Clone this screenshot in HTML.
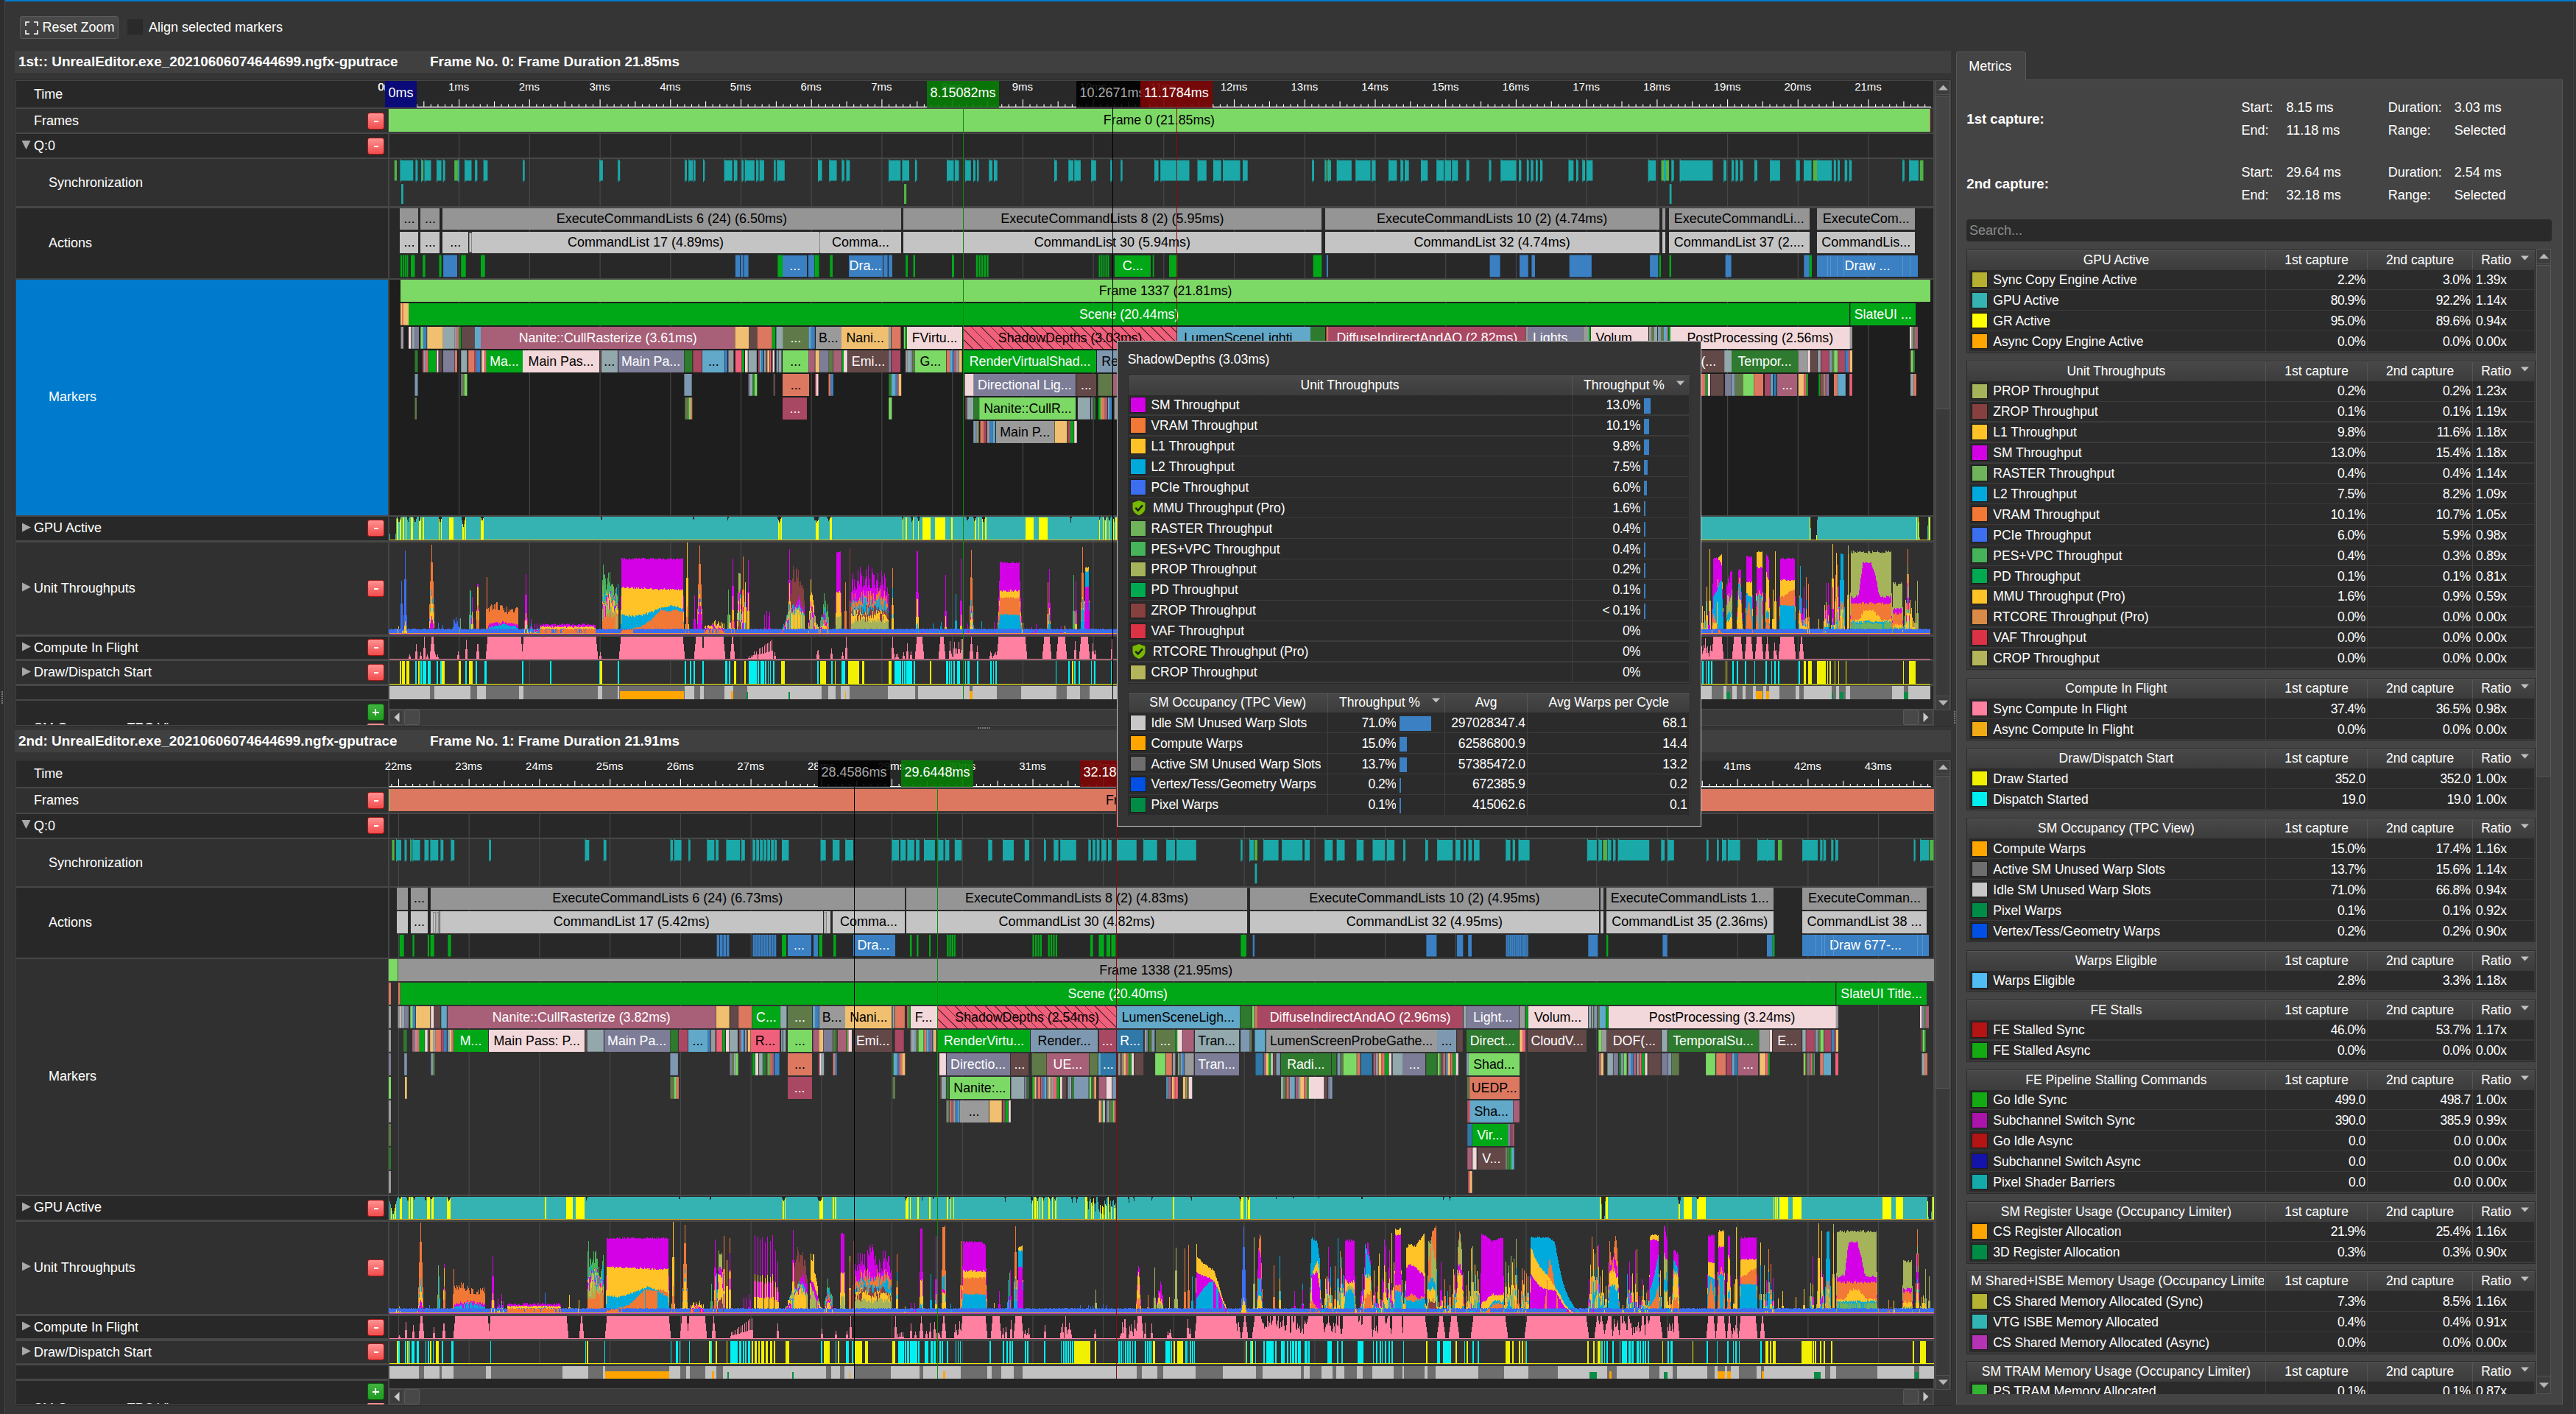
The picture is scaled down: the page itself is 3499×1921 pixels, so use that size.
<!DOCTYPE html><html><head><meta charset="utf-8"><title>GPU Trace</title><style>html,body{margin:0;padding:0;background:#353535;}
body{width:3499px;height:1921px;position:relative;overflow:hidden;font-family:"Liberation Sans",sans-serif;}
div,svg{position:absolute;}
.t{white-space:nowrap;overflow:hidden;}
.c{white-space:nowrap;overflow:hidden;text-align:center;}
</style></head><body><div style="left:0.0px;top:0.0px;width:3499.0px;height:1921.0px;background:#353535;"></div>
<div style="left:0.0px;top:0.0px;width:6.0px;height:1921.0px;background:#2e2e2e;"></div>
<div style="left:6.0px;top:0.0px;width:1.0px;height:1921.0px;background:#454545;"></div>
<div style="left:7.0px;top:0.0px;width:3492.0px;height:2.2px;background:#007acc;"></div>
<div style="left:3494.6px;top:2.2px;width:1.2px;height:1921.0px;background:#3f3f3f;"></div>
<div style="left:26.8px;top:21.8px;width:134.5px;height:31.4px;background:linear-gradient(#4a4a4a,#3e3e3e);border:1px solid #5c5c5c;border-radius:3px;box-sizing:border-box;"></div>
<svg style="left:34px;top:29px" width="18" height="18"><path d="M1,6 V1 H6 M12,1 H17 V6 M17,12 V17 H12 M6,17 H1 V12" fill="none" stroke="#fff" stroke-width="1.6"/></svg>
<div class="t" style="left:57.5px;top:22.0px;font-size:18px;color:#fff;height:31.4px;line-height:31.4px;">Reset Zoom</div>
<div style="left:167.5px;top:27.0px;width:1.0px;height:21.0px;background:#3c3c3c;"></div>
<div style="left:173.0px;top:26.4px;width:21.0px;height:20.5px;background:#2a2a2a;"></div>
<div class="t" style="left:202.0px;top:22.0px;font-size:18px;color:#fff;height:31.4px;line-height:31.4px;">Align selected markers</div>
<div style="left:20.2px;top:68.9px;width:2630.0px;height:30.0px;background:#404040;"></div>
<div class="t" style="left:25.0px;top:68.9px;font-size:18.9px;color:#fff;height:30.0px;line-height:30.0px;font-weight:bold;letter-spacing:0.02px;">1st:: UnrealEditor.exe_20210606074644699.ngfx-gputrace</div>
<div class="t" style="left:584.0px;top:68.9px;font-size:18.9px;color:#fff;height:30.0px;line-height:30.0px;font-weight:bold;">Frame No. 0: Frame Duration 21.85ms</div>
<div style="left:20.2px;top:991.9px;width:2630.0px;height:30.0px;background:#404040;"></div>
<div class="t" style="left:25.0px;top:991.9px;font-size:18.9px;color:#fff;height:30.0px;line-height:30.0px;font-weight:bold;">2nd: UnrealEditor.exe_20210606074644699.ngfx-gputrace</div>
<div class="t" style="left:584.0px;top:991.9px;font-size:18.9px;color:#fff;height:30.0px;line-height:30.0px;font-weight:bold;">Frame No. 1: Frame Duration 21.91ms</div>
<div style="left:20.0px;top:108.0px;width:2631.0px;height:878.6px;background:#2b2b2b;"></div>
<div style="left:21.0px;top:109.0px;width:2629.0px;height:876.6px;background:#464646;"></div>
<div style="left:22.0px;top:110.0px;width:2627.0px;height:875.0px;background:#474747;"></div>
<div style="left:22.0px;top:110.0px;width:505.5px;height:36.0px;background:#282828;"></div>
<div style="left:528.5px;top:110.0px;width:2097.0px;height:36.0px;background:#282828;"></div>
<div class="t" style="left:46.0px;top:110.0px;font-size:18px;color:#fff;height:36.0px;line-height:36.0px;">Time</div>
<div style="left:22.0px;top:148.0px;width:505.5px;height:32.3px;background:#303030;"></div>
<div style="left:528.5px;top:148.0px;width:2097.0px;height:32.3px;background:#303030;"></div>
<div class="t" style="left:46.0px;top:148.0px;font-size:18px;color:#fff;height:32.3px;line-height:32.3px;">Frames</div>
<div style="left:498.5px;top:152.6px;width:23.0px;height:23.0px;background:linear-gradient(#ff9292,#f24c4c);border:1px solid #a31515;border-radius:3px;box-sizing:border-box;"></div>
<div style="left:507.5px;top:163.6px;width:6.0px;height:2.0px;background:#fff;"></div>
<div style="left:22.0px;top:182.3px;width:505.5px;height:32.0px;background:#282828;"></div>
<div style="left:528.5px;top:182.3px;width:2097.0px;height:32.0px;background:#282828;"></div>
<div class="t" style="left:46.0px;top:182.3px;font-size:18px;color:#fff;height:32.0px;line-height:32.0px;">Q:0</div>
<svg style="left:29.0px;top:189.8px" width="14" height="14"><path d="M0.5,1 L12.5,1 L6.5,13 Z" fill="#a8a8a8"/></svg>
<div style="left:498.5px;top:186.7px;width:23.0px;height:23.0px;background:linear-gradient(#ff9292,#f24c4c);border:1px solid #a31515;border-radius:3px;box-sizing:border-box;"></div>
<div style="left:507.5px;top:197.7px;width:6.0px;height:2.0px;background:#fff;"></div>
<div style="left:22.0px;top:216.3px;width:505.5px;height:64.2px;background:#303030;"></div>
<div style="left:528.5px;top:216.3px;width:2097.0px;height:64.2px;background:#303030;"></div>
<div class="t" style="left:66.0px;top:216.3px;font-size:18px;color:#fff;height:64.2px;line-height:64.2px;">Synchronization</div>
<div style="left:22.0px;top:282.5px;width:505.5px;height:95.5px;background:#282828;"></div>
<div style="left:528.5px;top:282.5px;width:2097.0px;height:95.5px;background:#282828;"></div>
<div class="t" style="left:66.0px;top:282.5px;font-size:18px;color:#fff;height:95.5px;line-height:95.5px;">Actions</div>
<div style="left:22.0px;top:380.0px;width:505.5px;height:319.7px;background:#303030;"></div>
<div style="left:22.0px;top:380.0px;width:505.5px;height:319.7px;background:#007acc;"></div>
<div style="left:528.5px;top:380.0px;width:2097.0px;height:319.7px;background:#1e1e1e;"></div>
<div class="t" style="left:66.0px;top:380.0px;font-size:18px;color:#fff;height:319.7px;line-height:319.7px;">Markers</div>
<div style="left:22.0px;top:702.0px;width:505.5px;height:31.6px;background:#282828;"></div>
<div style="left:528.5px;top:702.0px;width:2097.0px;height:31.6px;background:#282828;"></div>
<div class="t" style="left:46.0px;top:702.0px;font-size:18px;color:#fff;height:31.6px;line-height:31.6px;">GPU Active</div>
<svg style="left:29.0px;top:709.8px" width="14" height="14"><path d="M1,0.5 L13,6.5 L1,12.5 Z" fill="#a8a8a8"/></svg>
<div style="left:498.5px;top:706.2px;width:23.0px;height:23.0px;background:linear-gradient(#ff9292,#f24c4c);border:1px solid #a31515;border-radius:3px;box-sizing:border-box;"></div>
<div style="left:507.5px;top:717.2px;width:6.0px;height:2.0px;background:#fff;"></div>
<div style="left:22.0px;top:736.6px;width:505.5px;height:125.0px;background:#303030;"></div>
<div style="left:528.5px;top:736.6px;width:2097.0px;height:125.0px;background:#303030;"></div>
<div class="t" style="left:46.0px;top:736.6px;font-size:18px;color:#fff;height:125.0px;line-height:125.0px;">Unit Throughputs</div>
<svg style="left:29.0px;top:791.1px" width="14" height="14"><path d="M1,0.5 L13,6.5 L1,12.5 Z" fill="#a8a8a8"/></svg>
<div style="left:498.5px;top:787.5px;width:23.0px;height:23.0px;background:linear-gradient(#ff9292,#f24c4c);border:1px solid #a31515;border-radius:3px;box-sizing:border-box;"></div>
<div style="left:507.5px;top:798.5px;width:6.0px;height:2.0px;background:#fff;"></div>
<div style="left:22.0px;top:864.6px;width:505.5px;height:30.6px;background:#282828;"></div>
<div style="left:528.5px;top:864.6px;width:2097.0px;height:30.6px;background:#282828;"></div>
<div class="t" style="left:46.0px;top:864.6px;font-size:18px;color:#fff;height:30.6px;line-height:30.6px;">Compute In Flight</div>
<svg style="left:29.0px;top:871.9px" width="14" height="14"><path d="M1,0.5 L13,6.5 L1,12.5 Z" fill="#a8a8a8"/></svg>
<div style="left:498.5px;top:868.3px;width:23.0px;height:23.0px;background:linear-gradient(#ff9292,#f24c4c);border:1px solid #a31515;border-radius:3px;box-sizing:border-box;"></div>
<div style="left:507.5px;top:879.3px;width:6.0px;height:2.0px;background:#fff;"></div>
<div style="left:22.0px;top:898.2px;width:505.5px;height:30.8px;background:#303030;"></div>
<div style="left:528.5px;top:898.2px;width:2097.0px;height:30.8px;background:#303030;"></div>
<div class="t" style="left:46.0px;top:898.2px;font-size:18px;color:#fff;height:30.8px;line-height:30.8px;">Draw/Dispatch Start</div>
<svg style="left:29.0px;top:905.6px" width="14" height="14"><path d="M1,0.5 L13,6.5 L1,12.5 Z" fill="#a8a8a8"/></svg>
<div style="left:498.5px;top:902.0px;width:23.0px;height:23.0px;background:linear-gradient(#ff9292,#f24c4c);border:1px solid #a31515;border-radius:3px;box-sizing:border-box;"></div>
<div style="left:507.5px;top:913.0px;width:6.0px;height:2.0px;background:#fff;"></div>
<div style="left:22.0px;top:932.0px;width:505.5px;height:18.0px;background:#282828;"></div>
<div style="left:528.5px;top:932.0px;width:2097.0px;height:18.0px;background:#282828;"></div>
<div style="left:22.0px;top:952.2px;width:505.5px;height:32.6px;background:#282828;"></div>
<div style="left:528.5px;top:952.2px;width:2097.0px;height:32.6px;background:#282828;"></div>
<div style="left:498.5px;top:956.0px;width:23.0px;height:23.0px;background:linear-gradient(#3fb43f,#1f9a1f);border:1px solid #0c5a0c;border-radius:3px;box-sizing:border-box;"></div>
<div style="left:505.5px;top:966.5px;width:9.0px;height:2.0px;background:#fff;"></div>
<div style="left:509.0px;top:963.0px;width:2.0px;height:9.0px;background:#fff;"></div>
<div style="left:527.2px;top:110.0px;width:1.4px;height:875.0px;background:#454545;"></div>
<div style="left:46px;top:982.4px;width:300px;height:1.7px;overflow:hidden;"><div class="t" style="left:0;top:-3.2px;font-size:18px;color:#fff;">SM Occupancy TPC View</div></div>
<div style="left:498.5px;top:982.6px;width:23.0px;height:2.2px;background:#ff8c8c;border-radius:3px 3px 0 0;"></div>
<div style="left:2626.5px;top:109.0px;width:23.5px;height:876.6px;background:#464646;"></div>
<div style="left:2628.5px;top:109.4px;width:20.5px;height:855.6px;background:#3a3a3a;border:1px solid #4c4c4c;box-sizing:border-box;"></div>
<div style="left:2628.5px;top:109.4px;width:20.5px;height:19.8px;background:#3d3d3d;border:1px solid #505050;box-sizing:border-box;"></div>
<svg style="left:2632.5px;top:114.5px" width="13" height="8"><path d="M0,7.5 L6.5,0.5 L13,7.5 Z" fill="#b5b5b5"/></svg>
<div style="left:2628.5px;top:944.5px;width:20.5px;height:20.0px;background:#3d3d3d;border:1px solid #505050;box-sizing:border-box;"></div>
<svg style="left:2632.5px;top:951.0px" width="13" height="8"><path d="M0,0.5 L6.5,7.5 L13,0.5 Z" fill="#b5b5b5"/></svg>
<div style="left:2628.5px;top:131.0px;width:20.5px;height:425.0px;background:#444444;border:1px solid #555;box-sizing:border-box;"></div>
<div style="left:2626.5px;top:965.0px;width:24.5px;height:21.0px;background:#353535;"></div>
<div style="left:528.5px;top:950.0px;width:2097.0px;height:13.0px;background:#262626;"></div>
<div style="left:528.5px;top:963.0px;width:2097.0px;height:22.0px;background:#3a3a3a;border-top:1px solid #4c4c4c;box-sizing:border-box;"></div>
<div style="left:528.5px;top:963.5px;width:19.5px;height:21.0px;background:#3d3d3d;border:1px solid #505050;box-sizing:border-box;"></div>
<svg style="left:535px;top:968.0px" width="8" height="13"><path d="M7.5,0 L0.5,6.5 L7.5,13 Z" fill="#c8c8c8"/></svg>
<div style="left:548.5px;top:963.5px;width:21.0px;height:21.0px;background:#484848;border:1px solid #5a5a5a;box-sizing:border-box;border-radius:2px;"></div>
<div style="left:2584.5px;top:963.5px;width:21.5px;height:21.0px;background:#484848;border:1px solid #5a5a5a;box-sizing:border-box;border-radius:2px;"></div>
<div style="left:2606.0px;top:963.5px;width:19.5px;height:21.0px;background:#3d3d3d;border:1px solid #505050;box-sizing:border-box;"></div>
<svg style="left:2612px;top:968.0px" width="8" height="13"><path d="M0.5,0 L7.5,6.5 L0.5,13 Z" fill="#c8c8c8"/></svg>
<div style="left:20.0px;top:1031.3px;width:2631.0px;height:878.6px;background:#2b2b2b;"></div>
<div style="left:21.0px;top:1032.3px;width:2629.0px;height:876.6px;background:#464646;"></div>
<div style="left:22.0px;top:1033.3px;width:2627.0px;height:875.0px;background:#474747;"></div>
<div style="left:22.0px;top:1033.3px;width:505.5px;height:36.0px;background:#282828;"></div>
<div style="left:528.5px;top:1033.3px;width:2097.0px;height:36.0px;background:#282828;"></div>
<div class="t" style="left:46.0px;top:1033.3px;font-size:18px;color:#fff;height:36.0px;line-height:36.0px;">Time</div>
<div style="left:22.0px;top:1071.3px;width:505.5px;height:32.3px;background:#303030;"></div>
<div style="left:528.5px;top:1071.3px;width:2097.0px;height:32.3px;background:#303030;"></div>
<div class="t" style="left:46.0px;top:1071.3px;font-size:18px;color:#fff;height:32.3px;line-height:32.3px;">Frames</div>
<div style="left:498.5px;top:1075.8px;width:23.0px;height:23.0px;background:linear-gradient(#ff9292,#f24c4c);border:1px solid #a31515;border-radius:3px;box-sizing:border-box;"></div>
<div style="left:507.5px;top:1086.8px;width:6.0px;height:2.0px;background:#fff;"></div>
<div style="left:22.0px;top:1105.6px;width:505.5px;height:32.0px;background:#282828;"></div>
<div style="left:528.5px;top:1105.6px;width:2097.0px;height:32.0px;background:#282828;"></div>
<div class="t" style="left:46.0px;top:1105.6px;font-size:18px;color:#fff;height:32.0px;line-height:32.0px;">Q:0</div>
<svg style="left:29.0px;top:1113.1px" width="14" height="14"><path d="M0.5,1 L12.5,1 L6.5,13 Z" fill="#a8a8a8"/></svg>
<div style="left:498.5px;top:1110.0px;width:23.0px;height:23.0px;background:linear-gradient(#ff9292,#f24c4c);border:1px solid #a31515;border-radius:3px;box-sizing:border-box;"></div>
<div style="left:507.5px;top:1121.0px;width:6.0px;height:2.0px;background:#fff;"></div>
<div style="left:22.0px;top:1139.6px;width:505.5px;height:64.2px;background:#303030;"></div>
<div style="left:528.5px;top:1139.6px;width:2097.0px;height:64.2px;background:#303030;"></div>
<div class="t" style="left:66.0px;top:1139.6px;font-size:18px;color:#fff;height:64.2px;line-height:64.2px;">Synchronization</div>
<div style="left:22.0px;top:1205.8px;width:505.5px;height:95.5px;background:#282828;"></div>
<div style="left:528.5px;top:1205.8px;width:2097.0px;height:95.5px;background:#282828;"></div>
<div class="t" style="left:66.0px;top:1205.8px;font-size:18px;color:#fff;height:95.5px;line-height:95.5px;">Actions</div>
<div style="left:22.0px;top:1303.3px;width:505.5px;height:319.7px;background:#303030;"></div>
<div style="left:528.5px;top:1303.3px;width:2097.0px;height:319.7px;background:#303030;"></div>
<div class="t" style="left:66.0px;top:1303.3px;font-size:18px;color:#fff;height:319.7px;line-height:319.7px;">Markers</div>
<div style="left:22.0px;top:1625.3px;width:505.5px;height:31.6px;background:#282828;"></div>
<div style="left:528.5px;top:1625.3px;width:2097.0px;height:31.6px;background:#282828;"></div>
<div class="t" style="left:46.0px;top:1625.3px;font-size:18px;color:#fff;height:31.6px;line-height:31.6px;">GPU Active</div>
<svg style="left:29.0px;top:1633.1px" width="14" height="14"><path d="M1,0.5 L13,6.5 L1,12.5 Z" fill="#a8a8a8"/></svg>
<div style="left:498.5px;top:1629.5px;width:23.0px;height:23.0px;background:linear-gradient(#ff9292,#f24c4c);border:1px solid #a31515;border-radius:3px;box-sizing:border-box;"></div>
<div style="left:507.5px;top:1640.5px;width:6.0px;height:2.0px;background:#fff;"></div>
<div style="left:22.0px;top:1659.9px;width:505.5px;height:125.0px;background:#303030;"></div>
<div style="left:528.5px;top:1659.9px;width:2097.0px;height:125.0px;background:#303030;"></div>
<div class="t" style="left:46.0px;top:1659.9px;font-size:18px;color:#fff;height:125.0px;line-height:125.0px;">Unit Throughputs</div>
<svg style="left:29.0px;top:1714.4px" width="14" height="14"><path d="M1,0.5 L13,6.5 L1,12.5 Z" fill="#a8a8a8"/></svg>
<div style="left:498.5px;top:1710.8px;width:23.0px;height:23.0px;background:linear-gradient(#ff9292,#f24c4c);border:1px solid #a31515;border-radius:3px;box-sizing:border-box;"></div>
<div style="left:507.5px;top:1721.8px;width:6.0px;height:2.0px;background:#fff;"></div>
<div style="left:22.0px;top:1787.9px;width:505.5px;height:30.6px;background:#282828;"></div>
<div style="left:528.5px;top:1787.9px;width:2097.0px;height:30.6px;background:#282828;"></div>
<div class="t" style="left:46.0px;top:1787.9px;font-size:18px;color:#fff;height:30.6px;line-height:30.6px;">Compute In Flight</div>
<svg style="left:29.0px;top:1795.2px" width="14" height="14"><path d="M1,0.5 L13,6.5 L1,12.5 Z" fill="#a8a8a8"/></svg>
<div style="left:498.5px;top:1791.6px;width:23.0px;height:23.0px;background:linear-gradient(#ff9292,#f24c4c);border:1px solid #a31515;border-radius:3px;box-sizing:border-box;"></div>
<div style="left:507.5px;top:1802.6px;width:6.0px;height:2.0px;background:#fff;"></div>
<div style="left:22.0px;top:1821.5px;width:505.5px;height:30.8px;background:#303030;"></div>
<div style="left:528.5px;top:1821.5px;width:2097.0px;height:30.8px;background:#303030;"></div>
<div class="t" style="left:46.0px;top:1821.5px;font-size:18px;color:#fff;height:30.8px;line-height:30.8px;">Draw/Dispatch Start</div>
<svg style="left:29.0px;top:1828.9px" width="14" height="14"><path d="M1,0.5 L13,6.5 L1,12.5 Z" fill="#a8a8a8"/></svg>
<div style="left:498.5px;top:1825.3px;width:23.0px;height:23.0px;background:linear-gradient(#ff9292,#f24c4c);border:1px solid #a31515;border-radius:3px;box-sizing:border-box;"></div>
<div style="left:507.5px;top:1836.3px;width:6.0px;height:2.0px;background:#fff;"></div>
<div style="left:22.0px;top:1855.3px;width:505.5px;height:18.0px;background:#282828;"></div>
<div style="left:528.5px;top:1855.3px;width:2097.0px;height:18.0px;background:#282828;"></div>
<div style="left:22.0px;top:1875.5px;width:505.5px;height:32.6px;background:#282828;"></div>
<div style="left:528.5px;top:1875.5px;width:2097.0px;height:32.6px;background:#282828;"></div>
<div style="left:498.5px;top:1879.3px;width:23.0px;height:23.0px;background:linear-gradient(#3fb43f,#1f9a1f);border:1px solid #0c5a0c;border-radius:3px;box-sizing:border-box;"></div>
<div style="left:505.5px;top:1889.8px;width:9.0px;height:2.0px;background:#fff;"></div>
<div style="left:509.0px;top:1886.3px;width:2.0px;height:9.0px;background:#fff;"></div>
<div style="left:527.2px;top:1033.3px;width:1.4px;height:875.0px;background:#454545;"></div>
<div style="left:46px;top:1905.7px;width:300px;height:1.7px;overflow:hidden;"><div class="t" style="left:0;top:-3.2px;font-size:18px;color:#fff;">SM Occupancy TPC View</div></div>
<div style="left:498.5px;top:1905.9px;width:23.0px;height:2.2px;background:#ff8c8c;border-radius:3px 3px 0 0;"></div>
<div style="left:2626.5px;top:1032.3px;width:23.5px;height:876.6px;background:#464646;"></div>
<div style="left:2628.5px;top:1032.7px;width:20.5px;height:855.6px;background:#3a3a3a;border:1px solid #4c4c4c;box-sizing:border-box;"></div>
<div style="left:2628.5px;top:1032.7px;width:20.5px;height:19.8px;background:#3d3d3d;border:1px solid #505050;box-sizing:border-box;"></div>
<svg style="left:2632.5px;top:1037.8px" width="13" height="8"><path d="M0,7.5 L6.5,0.5 L13,7.5 Z" fill="#b5b5b5"/></svg>
<div style="left:2628.5px;top:1867.8px;width:20.5px;height:20.0px;background:#3d3d3d;border:1px solid #505050;box-sizing:border-box;"></div>
<svg style="left:2632.5px;top:1874.3px" width="13" height="8"><path d="M0,0.5 L6.5,7.5 L13,0.5 Z" fill="#b5b5b5"/></svg>
<div style="left:2628.5px;top:1054.3px;width:20.5px;height:425.0px;background:#444444;border:1px solid #555;box-sizing:border-box;"></div>
<div style="left:2626.5px;top:1888.3px;width:24.5px;height:21.0px;background:#353535;"></div>
<div style="left:528.5px;top:1873.3px;width:2097.0px;height:13.0px;background:#262626;"></div>
<div style="left:528.5px;top:1886.3px;width:2097.0px;height:22.0px;background:#3a3a3a;border-top:1px solid #4c4c4c;box-sizing:border-box;"></div>
<div style="left:528.5px;top:1886.8px;width:19.5px;height:21.0px;background:#3d3d3d;border:1px solid #505050;box-sizing:border-box;"></div>
<svg style="left:535px;top:1891.3px" width="8" height="13"><path d="M7.5,0 L0.5,6.5 L7.5,13 Z" fill="#c8c8c8"/></svg>
<div style="left:548.5px;top:1886.8px;width:21.0px;height:21.0px;background:#484848;border:1px solid #5a5a5a;box-sizing:border-box;border-radius:2px;"></div>
<div style="left:2584.5px;top:1886.8px;width:21.5px;height:21.0px;background:#484848;border:1px solid #5a5a5a;box-sizing:border-box;border-radius:2px;"></div>
<div style="left:2606.0px;top:1886.8px;width:19.5px;height:21.0px;background:#3d3d3d;border:1px solid #505050;box-sizing:border-box;"></div>
<svg style="left:2612px;top:1891.3px" width="8" height="13"><path d="M0.5,0 L7.5,6.5 L0.5,13 Z" fill="#c8c8c8"/></svg>
<div style="left:1328.0px;top:988.0px;width:1.5px;height:1.5px;background:#777;"></div>
<div style="left:1331.0px;top:988.0px;width:1.5px;height:1.5px;background:#777;"></div>
<div style="left:1334.0px;top:988.0px;width:1.5px;height:1.5px;background:#777;"></div>
<div style="left:1337.0px;top:988.0px;width:1.5px;height:1.5px;background:#777;"></div>
<div style="left:1340.0px;top:988.0px;width:1.5px;height:1.5px;background:#777;"></div>
<div style="left:1343.0px;top:988.0px;width:1.5px;height:1.5px;background:#777;"></div>
<div style="left:2654.0px;top:966.0px;width:1.5px;height:1.5px;background:#777;"></div>
<div style="left:2.0px;top:939.0px;width:1.5px;height:1.5px;background:#777;"></div>
<div style="left:2654.0px;top:969.0px;width:1.5px;height:1.5px;background:#777;"></div>
<div style="left:2.0px;top:942.0px;width:1.5px;height:1.5px;background:#777;"></div>
<div style="left:2654.0px;top:972.0px;width:1.5px;height:1.5px;background:#777;"></div>
<div style="left:2.0px;top:945.0px;width:1.5px;height:1.5px;background:#777;"></div>
<div style="left:2654.0px;top:975.0px;width:1.5px;height:1.5px;background:#777;"></div>
<div style="left:2.0px;top:948.0px;width:1.5px;height:1.5px;background:#777;"></div>
<div style="left:2654.0px;top:978.0px;width:1.5px;height:1.5px;background:#777;"></div>
<div style="left:2.0px;top:951.0px;width:1.5px;height:1.5px;background:#777;"></div>
<div style="left:2654.0px;top:981.0px;width:1.5px;height:1.5px;background:#777;"></div>
<div style="left:2.0px;top:954.0px;width:1.5px;height:1.5px;background:#777;"></div>
<div class="c" style="left:528.3px;top:148.2px;width:2092.3px;height:30.8px;line-height:31px;background:#7cd965;color:#000;font-size:17.8px;">Frame 0 (21.85ms)</div>
<div style="left:2620.6px;top:148.2px;width:1.3px;height:30.8px;background:#dc7860;"></div>
<div class="c" style="left:528.3px;top:1071.5px;width:2098.5px;height:30.8px;line-height:31px;background:#dc7860;color:#000;font-size:17.8px;">Frame 1 (21.91ms)</div>
<div style="left:528.3px;top:1071.5px;width:1.0px;height:30.8px;background:#7cd965;"></div>
<svg style="left:0;top:0" width="3499" height="935"><path d="M623.6 182.3V929.0M719.3 182.3V929.0M815.1 182.3V929.0M910.8 182.3V929.0M1006.5 182.3V929.0M1102.2 182.3V929.0M1197.9 182.3V929.0M1293.7 182.3V929.0M1389.4 182.3V929.0M1485.1 182.3V929.0M1580.8 182.3V929.0M1676.5 182.3V929.0M1772.3 182.3V929.0M1868.0 182.3V929.0M1963.7 182.3V929.0M2059.4 182.3V929.0M2155.1 182.3V929.0M2250.9 182.3V929.0M2346.6 182.3V929.0M2442.3 182.3V929.0M2538.0 182.3V929.0" stroke="#4a4a4a" stroke-width="1.1" fill="none"/></svg>
<svg style="left:0;top:0" width="3499" height="1858"><path d="M541.5 1105.6V1852.3M637.2 1105.6V1852.3M732.9 1105.6V1852.3M828.7 1105.6V1852.3M924.4 1105.6V1852.3M1020.1 1105.6V1852.3M1115.8 1105.6V1852.3M1211.5 1105.6V1852.3M1307.3 1105.6V1852.3M1403.0 1105.6V1852.3M1498.7 1105.6V1852.3M1594.4 1105.6V1852.3M1690.1 1105.6V1852.3M1785.9 1105.6V1852.3M1881.6 1105.6V1852.3M1977.3 1105.6V1852.3M2073.0 1105.6V1852.3M2168.7 1105.6V1852.3M2264.5 1105.6V1852.3M2360.2 1105.6V1852.3M2455.9 1105.6V1852.3M2551.6 1105.6V1852.3" stroke="#4a4a4a" stroke-width="1.1" fill="none"/></svg>
<svg style="left:0;top:0" width="3499" height="282"><path d="M543.6 217.8H561.3V245.6H543.6ZM564.6 217.8H567.4V245.6H564.6ZM572.0 217.8H575.3V245.6H572.0ZM576.7 217.8H585.5V245.6H576.7ZM593.0 217.8H599.5V245.6H593.0ZM601.8 217.8H604.6V245.6H601.8ZM621.9 217.8H624.0V245.6H621.9ZM631.2 217.8H640.5V245.6H631.2ZM645.2 217.8H648.4V245.6H645.2ZM656.8 217.8H662.4V245.6H656.8ZM710.4 217.8H712.7V245.6H710.4ZM814.3 217.8H818.9V245.6H814.3ZM839.4 217.8H842.2V245.6H839.4ZM930.3 217.8H933.0V245.6H930.3ZM935.4 217.8H941.0V245.6H935.4ZM942.0 217.8H944.7V245.6H942.0ZM955.0 217.8H957.3V245.6H955.0ZM983.8 217.8H994.6V245.6H983.8ZM996.9 217.8H1001.5V245.6H996.9ZM1007.6 217.8H1010.0V245.6H1007.6ZM1011.8 217.8H1024.8V245.6H1011.8ZM1027.2 217.8H1030.4V245.6H1027.2ZM1031.8 217.8H1037.9V245.6H1031.8ZM1051.4 217.8H1053.7V245.6H1051.4ZM1055.6 217.8H1065.8V245.6H1055.6ZM1111.0 217.8H1116.6V245.6H1111.0ZM1126.4 217.8H1136.6V245.6H1126.4ZM1143.6 217.8H1146.9V245.6H1143.6ZM1149.7 217.8H1154.3V245.6H1149.7ZM1207.0 217.8H1223.3V245.6H1207.0ZM1225.6 217.8H1235.0V245.6H1225.6ZM1242.9 217.8H1245.6V245.6H1242.9ZM1286.2 217.8H1295.5V245.6H1286.2ZM1296.9 217.8H1302.5V245.6H1296.9ZM1310.9 217.8H1318.8V245.6H1310.9ZM1322.0 217.8H1325.0V245.6H1322.0ZM1327.2 217.8H1329.5V245.6H1327.2ZM1343.5 217.8H1348.0V245.6H1343.5ZM1350.0 217.8H1354.7V245.6H1350.0ZM1432.0 217.8H1435.7V245.6H1432.0ZM1451.5 217.8H1458.0V245.6H1451.5ZM1459.5 217.8H1467.9V245.6H1459.5ZM1482.3 217.8H1488.8V245.6H1482.3ZM1508.4 217.8H1510.7V245.6H1508.4ZM1522.4 217.8H1524.7V245.6H1522.4ZM1568.0 217.8H1573.6V245.6H1568.0ZM1576.4 217.8H1615.5V245.6H1576.4ZM1626.7 217.8H1638.8V245.6H1626.7ZM1648.1 217.8H1658.8V245.6H1648.1ZM1661.2 217.8H1684.5V245.6H1661.2ZM1688.2 217.8H1694.7V245.6H1688.2ZM1782.3 217.8H1785.0V245.6H1782.3ZM1799.5 217.8H1802.0V245.6H1799.5ZM1804.0 217.8H1808.0V245.6H1804.0ZM1815.8 217.8H1835.9V245.6H1815.8ZM1841.5 217.8H1861.5V245.6H1841.5ZM1863.3 217.8H1868.5V245.6H1863.3ZM1886.2 217.8H1897.4V245.6H1886.2ZM1902.5 217.8H1906.2V245.6H1902.5ZM1908.0 217.8H1913.7V245.6H1908.0ZM1930.0 217.8H1939.3V245.6H1930.0ZM1951.4 217.8H1961.0V245.6H1951.4ZM1962.5 217.8H1971.0V245.6H1962.5ZM1972.5 217.8H1980.3V245.6H1972.5ZM1991.9 217.8H1995.6V245.6H1991.9ZM2022.7 217.8H2025.5V245.6H2022.7ZM2038.5 217.8H2059.5V245.6H2038.5ZM2063.2 217.8H2066.4V245.6H2063.2ZM2073.9 217.8H2076.7V245.6H2073.9ZM2079.5 217.8H2082.7V245.6H2079.5ZM2086.0 217.8H2088.8V245.6H2086.0ZM2092.0 217.8H2095.3V245.6H2092.0ZM2130.7 217.8H2137.3V245.6H2130.7ZM2141.0 217.8H2143.8V245.6H2141.0ZM2149.4 217.8H2153.0V245.6H2149.4ZM2155.0 217.8H2163.4V245.6H2155.0ZM2238.8 217.8H2249.0V245.6H2238.8ZM2260.0 217.8H2263.0V245.6H2260.0ZM2270.5 217.8H2273.7V245.6H2270.5ZM2281.7 217.8H2326.4V245.6H2281.7ZM2341.3 217.8H2345.0V245.6H2341.3ZM2352.0 217.8H2355.3V245.6H2352.0ZM2357.6 217.8H2360.9V245.6H2357.6ZM2363.7 217.8H2367.4V245.6H2363.7ZM2383.2 217.8H2387.0V245.6H2383.2ZM2404.3 217.8H2417.9V245.6H2404.3ZM2439.7 217.8H2444.8V245.6H2439.7ZM2450.0 217.8H2460.6V245.6H2450.0ZM2468.3 217.8H2488.3V245.6H2468.3ZM2490.9 217.8H2493.9V245.6H2490.9ZM2496.0 217.8H2499.0V245.6H2496.0ZM2505.8 217.8H2509.2V245.6H2505.8ZM2511.8 217.8H2515.2V245.6H2511.8ZM2584.3 217.8H2586.9V245.6H2584.3ZM2593.3 217.8H2606.0V245.6H2593.3Z" fill="#1ba8a8"/><path d="M544.1 216.3v31M565.1 216.3v31M572.5 216.3v31M577.2 216.3v31M593.5 216.3v31M602.3 216.3v31M622.4 216.3v31M631.7 216.3v31M645.7 216.3v31M657.3 216.3v31M710.9 216.3v31M814.8 216.3v31M839.9 216.3v31M930.8 216.3v31M935.9 216.3v31M942.5 216.3v31M955.5 216.3v31M984.3 216.3v31M997.4 216.3v31M1008.1 216.3v31M1012.3 216.3v31M1027.7 216.3v31M1032.3 216.3v31M1051.9 216.3v31M1056.1 216.3v31M1111.5 216.3v31M1126.9 216.3v31M1144.1 216.3v31M1150.2 216.3v31M1207.5 216.3v31M1226.1 216.3v31M1243.4 216.3v31M1286.7 216.3v31M1297.4 216.3v31M1311.4 216.3v31M1322.5 216.3v31M1327.7 216.3v31M1344.0 216.3v31M1350.5 216.3v31M1432.5 216.3v31M1452.0 216.3v31M1460.0 216.3v31M1482.8 216.3v31M1508.9 216.3v31M1522.9 216.3v31M1568.5 216.3v31M1576.9 216.3v31M1627.2 216.3v31M1648.6 216.3v31M1661.7 216.3v31M1688.7 216.3v31M1782.8 216.3v31M1800.0 216.3v31M1804.5 216.3v31M1816.3 216.3v31M1842.0 216.3v31M1863.8 216.3v31M1886.7 216.3v31M1903.0 216.3v31M1908.5 216.3v31M1930.5 216.3v31M1951.9 216.3v31M1963.0 216.3v31M1973.0 216.3v31M1992.4 216.3v31M2023.2 216.3v31M2039.0 216.3v31M2063.7 216.3v31M2074.4 216.3v31M2080.0 216.3v31M2086.5 216.3v31M2092.5 216.3v31M2131.2 216.3v31M2141.5 216.3v31M2149.9 216.3v31M2155.5 216.3v31M2239.3 216.3v31M2260.5 216.3v31M2271.0 216.3v31M2282.2 216.3v31M2341.8 216.3v31M2352.5 216.3v31M2358.1 216.3v31M2364.2 216.3v31M2383.7 216.3v31M2404.8 216.3v31M2440.2 216.3v31M2450.5 216.3v31M2468.8 216.3v31M2491.4 216.3v31M2496.5 216.3v31M2506.3 216.3v31M2512.3 216.3v31M2584.8 216.3v31M2593.8 216.3v31" stroke="#1ba8a8" stroke-width="1" fill="none"/><path d="M535.7 217.8H539.0V245.6H535.7ZM573.5 217.8H575.0V245.6H573.5ZM617.2 217.8H621.9V245.6H617.2ZM1803.0 217.8H1804.5V245.6H1803.0ZM2256.5 217.8H2260.0V245.6H2256.5ZM2263.0 217.8H2267.0V245.6H2263.0ZM2462.7 217.8H2468.3V245.6H2462.7ZM2607.8 217.8H2612.5V245.6H2607.8Z" fill="#4fb346"/><path d="M545.0 250.0H547.8V277.0H545.0Z" fill="#1ba8a8"/><path d="M1228.0 250.0H1231.2V277.0H1228.0Z" fill="#4fb346"/><path d="M2267.7 250.0H2270.5V277.0H2267.7Z" fill="#1ba8a8"/></svg>
<svg style="left:0;top:0" width="3499" height="1205"><path d="M538.0 1141.1H545.0V1168.9H538.0ZM549.7 1141.1H552.5V1168.9H549.7ZM557.2 1141.1H559.0V1168.9H557.2ZM560.4 1141.1H570.6V1168.9H560.4ZM576.7 1141.1H582.3V1168.9H576.7ZM584.6 1141.1H595.3V1168.9H584.6ZM598.6 1141.1H602.3V1168.9H598.6ZM612.6 1141.1H617.2V1168.9H612.6ZM664.3 1141.1H667.0V1168.9H664.3ZM794.7 1141.1H800.3V1168.9H794.7ZM819.9 1141.1H823.6V1168.9H819.9ZM910.7 1141.1H914.0V1168.9H910.7ZM915.8 1141.1H925.6V1168.9H915.8ZM935.4 1141.1H937.7V1168.9H935.4ZM960.5 1141.1H970.3V1168.9H960.5ZM972.2 1141.1H976.0V1168.9H972.2ZM986.6 1141.1H1005.3V1168.9H986.6ZM1007.1 1141.1H1011.8V1168.9H1007.1ZM1022.5 1141.1H1026.0V1168.9H1022.5ZM1027.5 1141.1H1031.0V1168.9H1027.5ZM1032.5 1141.1H1036.0V1168.9H1032.5ZM1037.5 1141.1H1041.0V1168.9H1037.5ZM1042.5 1141.1H1046.0V1168.9H1042.5ZM1047.5 1141.1H1051.0V1168.9H1047.5ZM1052.0 1141.1H1055.1V1168.9H1052.0ZM1062.1 1141.1H1071.4V1168.9H1062.1ZM1114.7 1141.1H1121.7V1168.9H1114.7ZM1131.0 1141.1H1140.4V1168.9H1131.0ZM1148.3 1141.1H1159.0V1168.9H1148.3ZM1211.6 1141.1H1221.0V1168.9H1211.6ZM1223.3 1141.1H1230.3V1168.9H1223.3ZM1232.6 1141.1H1241.9V1168.9H1232.6ZM1244.3 1141.1H1248.9V1168.9H1244.3ZM1255.0 1141.1H1269.9V1168.9H1255.0ZM1274.5 1141.1H1281.5V1168.9H1274.5ZM1283.8 1141.1H1289.4V1168.9H1283.8ZM1296.9 1141.1H1306.2V1168.9H1296.9ZM1342.5 1141.1H1347.7V1168.9H1342.5ZM1362.1 1141.1H1377.0V1168.9H1362.1ZM1391.9 1141.1H1398.0V1168.9H1391.9ZM1418.0 1141.1H1420.8V1168.9H1418.0ZM1431.5 1141.1H1437.6V1168.9H1431.5ZM1440.4 1141.1H1461.8V1168.9H1440.4ZM1478.6 1141.1H1481.8V1168.9H1478.6ZM1484.2 1141.1H1487.9V1168.9H1484.2ZM1489.8 1141.1H1493.5V1168.9H1489.8ZM1496.3 1141.1H1502.8V1168.9H1496.3ZM1505.1 1141.1H1509.8V1168.9H1505.1ZM1516.8 1141.1H1543.8V1168.9H1516.8ZM1553.1 1141.1H1571.7V1168.9H1553.1ZM1584.3 1141.1H1596.0V1168.9H1584.3ZM1598.3 1141.1H1624.8V1168.9H1598.3ZM1685.4 1141.1H1687.7V1168.9H1685.4ZM1697.0 1141.1H1703.0V1168.9H1697.0ZM1716.1 1141.1H1736.6V1168.9H1716.1ZM1741.3 1141.1H1769.2V1168.9H1741.3ZM1772.0 1141.1H1779.0V1168.9H1772.0ZM1799.5 1141.1H1810.2V1168.9H1799.5ZM1815.8 1141.1H1826.5V1168.9H1815.8ZM1842.8 1141.1H1852.2V1168.9H1842.8ZM1864.7 1141.1H1881.0V1168.9H1864.7ZM1883.8 1141.1H1894.1V1168.9H1883.8ZM1906.2 1141.1H1909.0V1168.9H1906.2ZM1936.0 1141.1H1939.7V1168.9H1936.0ZM1952.3 1141.1H1973.3V1168.9H1952.3ZM1977.0 1141.1H1983.5V1168.9H1977.0ZM1988.2 1141.1H1991.0V1168.9H1988.2ZM1994.7 1141.1H1999.4V1168.9H1994.7ZM2002.2 1141.1H2009.6V1168.9H2002.2ZM2045.5 1141.1H2051.5V1168.9H2045.5ZM2054.8 1141.1H2058.0V1168.9H2054.8ZM2062.7 1141.1H2077.6V1168.9H2062.7ZM2155.9 1141.1H2168.9V1168.9H2155.9ZM2171.3 1141.1H2176.0V1168.9H2171.3ZM2183.8 1141.1H2188.5V1168.9H2183.8ZM2191.3 1141.1H2194.5V1168.9H2191.3ZM2197.8 1141.1H2240.2V1168.9H2197.8ZM2256.5 1141.1H2261.1V1168.9H2256.5ZM2265.4 1141.1H2273.8V1168.9H2265.4ZM2318.0 1141.1H2320.7V1168.9H2318.0ZM2332.0 1141.1H2334.7V1168.9H2332.0ZM2339.0 1141.1H2345.0V1168.9H2339.0ZM2346.9 1141.1H2363.6V1168.9H2346.9ZM2387.0 1141.1H2400.0V1168.9H2387.0ZM2400.0 1141.1H2410.7V1168.9H2400.0ZM2448.2 1141.1H2469.1V1168.9H2448.2ZM2472.5 1141.1H2475.5V1168.9H2472.5ZM2476.8 1141.1H2480.2V1168.9H2476.8ZM2487.5 1141.1H2490.4V1168.9H2487.5ZM2493.0 1141.1H2496.8V1168.9H2493.0ZM2599.7 1141.1H2601.8V1168.9H2599.7ZM2608.2 1141.1H2620.1V1168.9H2608.2Z" fill="#1ba8a8"/><path d="M538.5 1139.6v31M550.2 1139.6v31M557.7 1139.6v31M560.9 1139.6v31M577.2 1139.6v31M585.1 1139.6v31M599.1 1139.6v31M613.1 1139.6v31M664.8 1139.6v31M795.2 1139.6v31M820.4 1139.6v31M911.2 1139.6v31M916.3 1139.6v31M935.9 1139.6v31M961.0 1139.6v31M972.7 1139.6v31M987.1 1139.6v31M1007.6 1139.6v31M1023.0 1139.6v31M1028.0 1139.6v31M1033.0 1139.6v31M1038.0 1139.6v31M1043.0 1139.6v31M1048.0 1139.6v31M1052.5 1139.6v31M1062.6 1139.6v31M1115.2 1139.6v31M1131.5 1139.6v31M1148.8 1139.6v31M1212.1 1139.6v31M1223.8 1139.6v31M1233.1 1139.6v31M1244.8 1139.6v31M1255.5 1139.6v31M1275.0 1139.6v31M1284.3 1139.6v31M1297.4 1139.6v31M1343.0 1139.6v31M1362.6 1139.6v31M1392.4 1139.6v31M1418.5 1139.6v31M1432.0 1139.6v31M1440.9 1139.6v31M1479.1 1139.6v31M1484.7 1139.6v31M1490.3 1139.6v31M1496.8 1139.6v31M1505.6 1139.6v31M1517.3 1139.6v31M1553.6 1139.6v31M1584.8 1139.6v31M1598.8 1139.6v31M1685.9 1139.6v31M1697.5 1139.6v31M1716.6 1139.6v31M1741.8 1139.6v31M1772.5 1139.6v31M1800.0 1139.6v31M1816.3 1139.6v31M1843.3 1139.6v31M1865.2 1139.6v31M1884.3 1139.6v31M1906.7 1139.6v31M1936.5 1139.6v31M1952.8 1139.6v31M1977.5 1139.6v31M1988.7 1139.6v31M1995.2 1139.6v31M2002.7 1139.6v31M2046.0 1139.6v31M2055.3 1139.6v31M2063.2 1139.6v31M2156.4 1139.6v31M2171.8 1139.6v31M2184.3 1139.6v31M2191.8 1139.6v31M2198.3 1139.6v31M2257.0 1139.6v31M2265.9 1139.6v31M2318.5 1139.6v31M2332.5 1139.6v31M2339.5 1139.6v31M2347.4 1139.6v31M2387.5 1139.6v31M2400.5 1139.6v31M2448.7 1139.6v31M2473.0 1139.6v31M2477.3 1139.6v31M2488.0 1139.6v31M2493.5 1139.6v31M2600.2 1139.6v31M2608.7 1139.6v31" stroke="#1ba8a8" stroke-width="1" fill="none"/><path d="M532.5 1141.1H535.7V1168.9H532.5ZM558.0 1141.1H559.2V1168.9H558.0ZM1704.0 1141.1H1707.8V1168.9H1704.0ZM2177.3 1141.1H2183.0V1168.9H2177.3ZM2415.0 1141.1H2420.5V1168.9H2415.0ZM2621.0 1141.1H2626.5V1168.9H2621.0Z" fill="#4fb346"/><path d="M1704.5 1173.3H1707.3V1200.3H1704.5Z" fill="#1ba8a8"/></svg>
<div class="c" style="left:543.3px;top:282.8px;width:25.2px;height:29.6px;line-height:28.6px;background:#959595;color:#000;font-size:18px;">...</div>
<div class="c" style="left:571.3px;top:282.8px;width:26.2px;height:29.6px;line-height:28.6px;background:#959595;color:#000;font-size:18px;">...</div>
<div class="c" style="left:601.2px;top:282.8px;width:622.4px;height:29.6px;line-height:28.6px;background:#959595;color:#000;font-size:18px;">ExecuteCommandLists 6 (24) (6.50ms)</div>
<div class="c" style="left:1226.5px;top:282.8px;width:568.8px;height:29.6px;line-height:28.6px;background:#959595;color:#000;font-size:18px;">ExecuteCommandLists 8 (2) (5.95ms)</div>
<div class="c" style="left:1799.5px;top:282.8px;width:454.2px;height:29.6px;line-height:28.6px;background:#959595;color:#000;font-size:18px;">ExecuteCommandLists 10 (2) (4.74ms)</div>
<div class="c" style="left:2258.0px;top:282.8px;width:4.0px;height:29.6px;line-height:28.6px;background:#959595;color:#000;font-size:18px;"></div>
<div class="c" style="left:2266.8px;top:282.8px;width:190.8px;height:29.6px;line-height:28.6px;background:#959595;color:#000;font-size:18px;">ExecuteCommandLi...</div>
<div class="c" style="left:2468.3px;top:282.8px;width:133.1px;height:29.6px;line-height:28.6px;background:#959595;color:#000;font-size:18px;">ExecuteCom...</div>
<div style="left:598.2px;top:282.8px;width:2.0px;height:62.0px;background:#222;"></div>
<div class="c" style="left:543.3px;top:314.8px;width:25.2px;height:29.6px;line-height:28.6px;background:#c4c4c4;color:#000;font-size:18px;">...</div>
<div class="c" style="left:571.3px;top:314.8px;width:26.2px;height:29.6px;line-height:28.6px;background:#c4c4c4;color:#000;font-size:18px;">...</div>
<div class="c" style="left:601.2px;top:314.8px;width:35.0px;height:29.6px;line-height:28.6px;background:#c4c4c4;color:#000;font-size:18px;">...</div>
<div class="c" style="left:641.4px;top:314.8px;width:471.2px;height:29.6px;line-height:28.6px;background:#c4c4c4;color:#000;font-size:18px;">CommandList 17 (4.89ms)</div>
<div class="c" style="left:1114.3px;top:314.8px;width:109.3px;height:29.6px;line-height:28.6px;background:#c4c4c4;color:#000;font-size:18px;">Comma...</div>
<div class="c" style="left:1226.5px;top:314.8px;width:568.8px;height:29.6px;line-height:28.6px;background:#c4c4c4;color:#000;font-size:18px;">CommandList 30 (5.94ms)</div>
<div class="c" style="left:1799.5px;top:314.8px;width:454.2px;height:29.6px;line-height:28.6px;background:#c4c4c4;color:#000;font-size:18px;">CommandList 32 (4.74ms)</div>
<div class="c" style="left:2258.0px;top:314.8px;width:4.0px;height:29.6px;line-height:28.6px;background:#c4c4c4;color:#000;font-size:18px;"></div>
<div class="c" style="left:2266.8px;top:314.8px;width:190.8px;height:29.6px;line-height:28.6px;background:#c4c4c4;color:#000;font-size:18px;">CommandList 37 (2....</div>
<div class="c" style="left:2468.3px;top:314.8px;width:133.1px;height:29.6px;line-height:28.6px;background:#c4c4c4;color:#000;font-size:18px;">CommandLis...</div>
<div style="left:637.0px;top:315.8px;width:3.6px;height:27.6px;background:#c4c4c4;border:1px solid #888;box-sizing:border-box;"></div>
<div style="left:1112.8px;top:315.8px;width:1.2px;height:27.6px;background:#888;"></div>
<svg style="left:0;top:0" width="3499" height="380"><path d="M544.0 346.6h2.0v29.6h-2.0zM546.8 346.6h2.0v29.6h-2.0zM549.6 346.6h2.0v29.6h-2.0zM552.4 346.6h2.0v29.6h-2.0zM558.0 346.6h5.6v29.6h-5.6zM574.1 346.6h3.5v29.6h-3.5zM596.5 346.6h3.1v29.6h-3.1zM626.2 346.6h6.5v29.6h-6.5zM653.0 346.6h5.8v29.6h-5.8zM1056.3 346.6h6.7v29.6h-6.7zM1106.5 346.6h6.0v29.6h-6.0zM1127.3 346.6h3.7v29.6h-3.7zM1230.3 346.6h2.7v29.6h-2.7zM1240.5 346.6h2.5v29.6h-2.5zM1293.0 346.6h3.0v29.6h-3.0zM1325.8 346.6h2.4v29.6h-2.4zM1329.4 346.6h2.4v29.6h-2.4zM1333.0 346.6h2.4v29.6h-2.4zM1336.6 346.6h2.4v29.6h-2.4zM1340.2 346.6h2.4v29.6h-2.4zM1492.5 346.6h2.0v29.6h-2.0zM1495.5 346.6h2.0v29.6h-2.0zM1498.5 346.6h2.0v29.6h-2.0zM1501.5 346.6h2.0v29.6h-2.0zM1504.5 346.6h2.0v29.6h-2.0zM1565.7 346.6h1.8v29.6h-1.8zM1588.0 346.6h11.2v29.6h-11.2zM1783.7 346.6h11.6v29.6h-11.6zM2253.7 346.6h2.3v29.6h-2.3zM2267.5 346.6h2.5v29.6h-2.5zM2457.6 346.6h3.4v29.6h-3.4z" fill="#00a818"/><path d="M602.1 346.6h18.9v29.6h-18.9zM998.9 346.6h6.1v29.6h-6.1zM1006.0 346.6h3.5v29.6h-3.5zM1010.5 346.6h6.1v29.6h-6.1zM1098.0 346.6h8.0v29.6h-8.0zM1200.0 346.6h5.6v29.6h-5.6zM1207.0 346.6h5.0v29.6h-5.0zM1801.9 346.6h2.1v29.6h-2.1zM2023.6 346.6h14.0v29.6h-14.0zM2064.1 346.6h11.7v29.6h-11.7zM2080.4 346.6h4.6v29.6h-4.6zM2131.7 346.6h30.2v29.6h-30.2zM2241.1 346.6h11.2v29.6h-11.2zM2343.6 346.6h8.0v29.6h-8.0zM2450.3 346.6h7.3v29.6h-7.3z" fill="#3a80c3"/></svg>
<div class="c" style="left:1063.3px;top:346.6px;width:33.1px;height:29.6px;line-height:28.6px;background:#3a80c3;color:#fff;font-size:18px;">...</div>
<div class="c" style="left:1152.5px;top:346.6px;width:46.0px;height:29.6px;line-height:28.6px;background:#3a80c3;color:#fff;font-size:18px;">Dra...</div>
<div class="c" style="left:1514.4px;top:346.6px;width:48.9px;height:29.6px;line-height:28.6px;background:#00a818;color:#fff;font-size:18px;">C...</div>
<div class="c" style="left:2468.3px;top:346.6px;width:136.5px;height:29.6px;line-height:28.6px;background:#3a80c3;color:#fff;font-size:18px;">Draw ...</div>
<div style="left:2482.0px;top:346.6px;width:1.0px;height:29.6px;background:#5a94cc;"></div>
<div style="left:2486.0px;top:346.6px;width:1.0px;height:29.6px;background:#5a94cc;"></div>
<div style="left:2495.0px;top:346.6px;width:1.0px;height:29.6px;background:#5a94cc;"></div>
<div style="left:2504.0px;top:346.6px;width:1.0px;height:29.6px;background:#5a94cc;"></div>
<div style="left:2584.0px;top:346.6px;width:1.0px;height:29.6px;background:#5a94cc;"></div>
<div style="left:2594.0px;top:346.6px;width:1.0px;height:29.6px;background:#5a94cc;"></div>
<div class="c" style="left:539.4px;top:1206.1px;width:14.9px;height:29.6px;line-height:28.6px;background:#959595;color:#000;font-size:18px;"></div>
<div class="c" style="left:557.6px;top:1206.1px;width:23.8px;height:29.6px;line-height:28.6px;background:#959595;color:#000;font-size:18px;">...</div>
<div class="c" style="left:584.6px;top:1206.1px;width:644.3px;height:29.6px;line-height:28.6px;background:#959595;color:#000;font-size:18px;">ExecuteCommandLists 6 (24) (6.73ms)</div>
<div class="c" style="left:1231.2px;top:1206.1px;width:462.6px;height:29.6px;line-height:28.6px;background:#959595;color:#000;font-size:18px;">ExecuteCommandLists 8 (2) (4.83ms)</div>
<div class="c" style="left:1697.5px;top:1206.1px;width:474.7px;height:29.6px;line-height:28.6px;background:#959595;color:#000;font-size:18px;">ExecuteCommandLists 10 (2) (4.95ms)</div>
<div class="c" style="left:2174.0px;top:1206.1px;width:4.0px;height:29.6px;line-height:28.6px;background:#959595;color:#000;font-size:18px;"></div>
<div class="c" style="left:2182.0px;top:1206.1px;width:226.5px;height:29.6px;line-height:28.6px;background:#959595;color:#000;font-size:18px;">ExecuteCommandLists 1...</div>
<div class="c" style="left:2448.2px;top:1206.1px;width:168.5px;height:29.6px;line-height:28.6px;background:#959595;color:#000;font-size:18px;">ExecuteComman...</div>
<div style="left:555.2px;top:1206.1px;width:1.6px;height:62.0px;background:#222;"></div>
<div style="left:582.3px;top:1206.1px;width:1.6px;height:62.0px;background:#222;"></div>
<div class="c" style="left:539.4px;top:1238.1px;width:14.9px;height:29.6px;line-height:28.6px;background:#c4c4c4;color:#000;font-size:18px;"></div>
<div class="c" style="left:557.6px;top:1238.1px;width:23.8px;height:29.6px;line-height:28.6px;background:#c4c4c4;color:#000;font-size:18px;">...</div>
<div class="c" style="left:584.6px;top:1238.1px;width:12.4px;height:29.6px;line-height:28.6px;background:#c4c4c4;color:#000;font-size:18px;"></div>
<div class="c" style="left:597.7px;top:1238.1px;width:520.3px;height:29.6px;line-height:28.6px;background:#c4c4c4;color:#000;font-size:18px;">CommandList 17 (5.42ms)</div>
<div class="c" style="left:1118.6px;top:1238.1px;width:9.4px;height:29.6px;line-height:28.6px;background:#c4c4c4;color:#000;font-size:18px;"></div>
<div class="c" style="left:1131.0px;top:1238.1px;width:97.9px;height:29.6px;line-height:28.6px;background:#c4c4c4;color:#000;font-size:18px;">Comma...</div>
<div class="c" style="left:1231.2px;top:1238.1px;width:462.6px;height:29.6px;line-height:28.6px;background:#c4c4c4;color:#000;font-size:18px;">CommandList 30 (4.82ms)</div>
<div class="c" style="left:1697.5px;top:1238.1px;width:474.7px;height:29.6px;line-height:28.6px;background:#c4c4c4;color:#000;font-size:18px;">CommandList 32 (4.95ms)</div>
<div class="c" style="left:2174.0px;top:1238.1px;width:4.0px;height:29.6px;line-height:28.6px;background:#c4c4c4;color:#000;font-size:18px;"></div>
<div class="c" style="left:2182.0px;top:1238.1px;width:226.5px;height:29.6px;line-height:28.6px;background:#c4c4c4;color:#000;font-size:18px;">CommandList 35 (2.36ms)</div>
<div class="c" style="left:2448.2px;top:1238.1px;width:168.5px;height:29.6px;line-height:28.6px;background:#c4c4c4;color:#000;font-size:18px;">CommandList 38 ...</div>
<div style="left:588.0px;top:1239.1px;width:3.5px;height:27.6px;background:#c4c4c4;border:1px solid #888;box-sizing:border-box;"></div>
<div style="left:592.5px;top:1239.1px;width:3.5px;height:27.6px;background:#c4c4c4;border:1px solid #888;box-sizing:border-box;"></div>
<div style="left:1119.5px;top:1239.1px;width:3.5px;height:27.6px;background:#c4c4c4;border:1px solid #888;box-sizing:border-box;"></div>
<svg style="left:0;top:0" width="3499" height="1305"><path d="M542.7 1269.9h6.0v29.6h-6.0zM560.4 1269.9h2.3v29.6h-2.3zM580.9 1269.9h2.1v29.6h-2.1zM584.6 1269.9h5.1v29.6h-5.1zM608.4 1269.9h4.2v29.6h-4.2zM1062.1 1269.9h5.9v29.6h-5.9zM1112.4 1269.9h4.6v29.6h-4.6zM1132.0 1269.9h3.5v29.6h-3.5zM1235.9 1269.9h2.6v29.6h-2.6zM1245.2 1269.9h2.3v29.6h-2.3zM1262.0 1269.9h2.0v29.6h-2.0zM1286.2 1269.9h2.4v29.6h-2.4zM1289.4 1269.9h2.4v29.6h-2.4zM1292.6 1269.9h2.4v29.6h-2.4zM1295.8 1269.9h2.0v29.6h-2.0zM1402.6 1269.9h2.2v29.6h-2.2zM1406.0 1269.9h2.2v29.6h-2.2zM1409.4 1269.9h2.2v29.6h-2.2zM1412.8 1269.9h2.2v29.6h-2.2zM1423.6 1269.9h2.2v29.6h-2.2zM1427.0 1269.9h2.2v29.6h-2.2zM1430.4 1269.9h2.2v29.6h-2.2zM1433.8 1269.9h2.2v29.6h-2.2zM1480.9 1269.9h3.7v29.6h-3.7zM1492.5 1269.9h7.0v29.6h-7.0zM1502.8 1269.9h5.2v29.6h-5.2zM1509.5 1269.9h5.9v29.6h-5.9zM1685.4 1269.9h7.5v29.6h-7.5zM2182.0 1269.9h2.3v29.6h-2.3zM2408.0 1269.9h2.5v29.6h-2.5z" fill="#00a818"/><path d="M973.6 1269.9h3.6v29.6h-3.6zM978.0 1269.9h3.6v29.6h-3.6zM982.4 1269.9h3.6v29.6h-3.6zM986.8 1269.9h3.6v29.6h-3.6zM1022.5 1269.9h3.0v29.6h-3.0zM1026.1 1269.9h3.0v29.6h-3.0zM1029.7 1269.9h3.0v29.6h-3.0zM1033.3 1269.9h3.0v29.6h-3.0zM1036.9 1269.9h3.0v29.6h-3.0zM1040.5 1269.9h3.0v29.6h-3.0zM1044.1 1269.9h3.0v29.6h-3.0zM1047.7 1269.9h3.0v29.6h-3.0zM1051.3 1269.9h3.0v29.6h-3.0zM1105.0 1269.9h6.0v29.6h-6.0zM1214.0 1269.9h2.0v29.6h-2.0zM1701.7 1269.9h2.3v29.6h-2.3zM1937.4 1269.9h14.0v29.6h-14.0zM1978.9 1269.9h8.4v29.6h-8.4zM1994.2 1269.9h4.8v29.6h-4.8zM2045.5 1269.9h2.3v29.6h-2.3zM2048.1 1269.9h2.3v29.6h-2.3zM2050.7 1269.9h2.3v29.6h-2.3zM2053.3 1269.9h2.3v29.6h-2.3zM2055.9 1269.9h2.3v29.6h-2.3zM2058.5 1269.9h2.3v29.6h-2.3zM2061.1 1269.9h2.3v29.6h-2.3zM2063.7 1269.9h2.3v29.6h-2.3zM2066.3 1269.9h2.3v29.6h-2.3zM2068.9 1269.9h2.3v29.6h-2.3zM2071.5 1269.9h2.3v29.6h-2.3zM2074.1 1269.9h1.7v29.6h-1.7zM2157.3 1269.9h13.0v29.6h-13.0zM2258.4 1269.9h6.0v29.6h-6.0zM2400.0 1269.9h7.7v29.6h-7.7z" fill="#3a80c3"/></svg>
<div class="c" style="left:1069.5px;top:1269.9px;width:32.2px;height:29.6px;line-height:28.6px;background:#3a80c3;color:#fff;font-size:18px;">...</div>
<div class="c" style="left:1159.0px;top:1269.9px;width:55.0px;height:29.6px;line-height:28.6px;background:#3a80c3;color:#fff;font-size:18px;">Dra...</div>
<div class="c" style="left:2448.2px;top:1269.9px;width:171.5px;height:29.6px;line-height:28.6px;background:#3a80c3;color:#fff;font-size:18px;">Draw 677-...</div>
<div style="left:2466.0px;top:1269.9px;width:1.0px;height:29.6px;background:#5a94cc;"></div>
<div style="left:2474.0px;top:1269.9px;width:1.0px;height:29.6px;background:#5a94cc;"></div>
<div style="left:2478.0px;top:1269.9px;width:1.0px;height:29.6px;background:#5a94cc;"></div>
<div style="left:2490.0px;top:1269.9px;width:1.0px;height:29.6px;background:#5a94cc;"></div>
<div style="left:2604.0px;top:1269.9px;width:1.0px;height:29.6px;background:#5a94cc;"></div>
<div style="left:2611.0px;top:1269.9px;width:1.0px;height:29.6px;background:#5a94cc;"></div>
<div class="c" style="left:544.0px;top:380.2px;width:2078.2px;height:29.8px;line-height:31px;background:#7cd965;color:#000;font-size:17.8px;">Frame 1337 (21.81ms)</div>
<div class="c" style="left:555.0px;top:412.2px;width:1957.2px;height:29.8px;line-height:31px;background:#00a818;color:#fff;font-size:17.8px;">Scene (20.44ms)</div>
<div class="c" style="left:2512.6px;top:412.2px;width:89.3px;height:29.8px;line-height:31px;background:#00a818;color:#fff;font-size:17.8px;border-left:1.5px solid #0b7a16;box-sizing:border-box;">SlateUI ...</div>
<svg style="left:0;top:412.2px" width="2630" height="30"><path d="M544.0 0h2.0v29.8h-2.0zM548.0 0h7.0v29.8h-7.0z" fill="#f0c070"/><path d="M546.0 0h2.0v29.8h-2.0z" fill="#dc7860"/></svg>
<div class="c" style="left:653.0px;top:444.2px;width:345.4px;height:29.8px;line-height:31px;background:#a85f78;color:#fff;font-size:17.8px;">Nanite::CullRasterize (3.61ms)</div>
<div class="c" style="left:1063.3px;top:444.2px;width:35.0px;height:29.8px;line-height:31px;background:#5f7a48;color:#fff;font-size:17.8px;">...</div>
<div class="c" style="left:1107.5px;top:444.2px;width:35.7px;height:29.8px;line-height:31px;background:#9a9a9a;color:#000;font-size:17.8px;">B...</div>
<div class="c" style="left:1143.2px;top:444.2px;width:64.0px;height:29.8px;line-height:31px;background:#f0c070;color:#000;font-size:17.8px;">Nani...</div>
<div class="c" style="left:1231.7px;top:444.2px;width:75.8px;height:29.8px;line-height:31px;background:#f2d8da;color:#000;font-size:17.8px;">FVirtu...</div>
<div class="c" style="left:1308.7px;top:444.2px;width:290.0px;height:29.8px;line-height:31px;background:repeating-linear-gradient(45deg,rgba(40,40,40,0) 0px,rgba(40,40,40,0) 8.4px,rgba(60,30,40,0.75) 8.4px,rgba(60,30,40,0.75) 9.6px),#f0607a;color:#000;font-size:17.8px;">ShadowDepths (3.03ms)</div>
<div class="c" style="left:1598.7px;top:444.2px;width:181.3px;height:29.8px;line-height:31px;background:#62a8c8;color:#000;font-size:17.8px;">LumenSceneLighti...</div>
<div class="c" style="left:1804.2px;top:444.2px;width:268.3px;height:29.8px;line-height:31px;background:#a84862;color:#fff;font-size:17.8px;">DiffuseIndirectAndAO (2.82ms)</div>
<div class="c" style="left:2075.8px;top:444.2px;width:74.5px;height:29.8px;line-height:31px;background:#7d7d98;color:#fff;font-size:17.8px;">Lights...</div>
<div class="c" style="left:2160.5px;top:444.2px;width:78.3px;height:29.8px;line-height:31px;background:#f2d8da;color:#000;font-size:17.8px;">Volum...</div>
<div class="c" style="left:2269.0px;top:444.2px;width:243.6px;height:29.8px;line-height:31px;background:#f2d8da;color:#000;font-size:17.8px;">PostProcessing (2.56ms)</div>
<svg style="left:0;top:444.2px" width="2630" height="30"><path d="M544.5 0h3.5v29.8h-3.5zM617.5 0h3.3v29.8h-3.3zM2072.5 0h3.3v29.8h-3.3zM2150.3 0h7.7v29.8h-7.7zM2240.0 0h3.0v29.8h-3.0zM2512.6 0h3.4v29.8h-3.4zM2596.0 0h2.5v29.8h-2.5z" fill="#9a9a9a"/><path d="M555.0 0h3.5v29.8h-3.5zM2594.0 0h2.0v29.8h-2.0z" fill="#f2d8da"/><path d="M559.6 0h3.6v29.8h-3.6zM601.7 0h15.8v29.8h-15.8zM1054.4 0h8.9v29.8h-8.9zM1207.2 0h3.0v29.8h-3.0zM2247.0 0h4.0v29.8h-4.0z" fill="#92a8ac"/><path d="M563.2 0h5.8v29.8h-5.8z" fill="#7d7d98"/><path d="M571.3 0h3.5v29.8h-3.5zM1227.7 0h1.9v29.8h-1.9z" fill="#7cd965"/><path d="M574.8 0h4.7v29.8h-4.7zM1101.7 0h5.1v29.8h-5.1z" fill="#3a80c3"/><path d="M580.2 0h21.5v29.8h-21.5zM998.4 0h18.6v29.8h-18.6z" fill="#f0c070"/><path d="M620.8 0h2.4v29.8h-2.4z" fill="#f0607a"/><path d="M623.8 0h2.4v29.8h-2.4zM1048.6 0h4.7v29.8h-4.7zM1229.6 0h2.1v29.8h-2.1zM2158.0 0h2.5v29.8h-2.5zM2266.5 0h2.5v29.8h-2.5z" fill="#00a818"/><path d="M626.9 0h18.1v29.8h-18.1zM1017.0 0h11.7v29.8h-11.7z" fill="#634848"/><path d="M645.0 0h8.0v29.8h-8.0zM1098.3 0h3.4v29.8h-3.4zM2260.0 0h4.0v29.8h-4.0z" fill="#62a8c8"/><path d="M1028.7 0h19.9v29.8h-19.9zM1210.9 0h12.6v29.8h-12.6zM1801.5 0h2.7v29.8h-2.7z" fill="#dc7860"/><path d="M1780.0 0h20.0v29.8h-20.0z" fill="#2e7a2e"/><path d="M2243.0 0h4.0v29.8h-4.0zM2256.0 0h4.0v29.8h-4.0zM2598.5 0h2.5v29.8h-2.5z" fill="#5f7a48"/><path d="M2252.0 0h4.0v29.8h-4.0z" fill="#7d98b0"/><path d="M2264.0 0h2.0v29.8h-2.0zM2601.0 0h4.0v29.8h-4.0z" fill="#a85f78"/></svg>
<div class="c" style="left:660.3px;top:476.2px;width:49.5px;height:29.8px;line-height:31px;background:#00a818;color:#fff;font-size:17.8px;">Ma...</div>
<div class="c" style="left:710.4px;top:476.2px;width:103.4px;height:29.8px;line-height:31px;background:#f2d8da;color:#000;font-size:17.8px;">Main Pas...</div>
<div class="c" style="left:816.5px;top:476.2px;width:22.5px;height:29.8px;line-height:31px;background:#92a8ac;color:#000;font-size:17.8px;">...</div>
<div class="c" style="left:839.5px;top:476.2px;width:89.2px;height:29.8px;line-height:31px;background:#7d7d98;color:#fff;font-size:17.8px;">Main Pa...</div>
<div class="c" style="left:954.1px;top:476.2px;width:30.4px;height:29.8px;line-height:31px;background:#62a8c8;color:#000;font-size:17.8px;">...</div>
<div class="c" style="left:1063.3px;top:476.2px;width:34.9px;height:29.8px;line-height:31px;background:#7cd965;color:#000;font-size:17.8px;">...</div>
<div class="c" style="left:1151.8px;top:476.2px;width:55.4px;height:29.8px;line-height:31px;background:#634848;color:#fff;font-size:17.8px;">Emi...</div>
<div class="c" style="left:1242.9px;top:476.2px;width:42.0px;height:29.8px;line-height:31px;background:#7cd965;color:#000;font-size:17.8px;">G...</div>
<div class="c" style="left:1308.7px;top:476.2px;width:180.8px;height:29.8px;line-height:31px;background:#00a818;color:#fff;font-size:17.8px;">RenderVirtualShad...</div>
<div class="c" style="left:1490.2px;top:476.2px;width:49.8px;height:29.8px;line-height:31px;background:#7d98b0;color:#000;font-size:17.8px;">Re...</div>
<div class="c" style="left:2300.0px;top:476.2px;width:41.6px;height:29.8px;line-height:31px;background:#634848;color:#fff;font-size:17.8px;">(...</div>
<div class="c" style="left:2352.3px;top:476.2px;width:89.5px;height:29.8px;line-height:31px;background:#2e7a2e;color:#fff;font-size:17.8px;">Tempor...</div>
<svg style="left:0;top:476.2px" width="2630" height="30"><path d="M563.5 0h4.0v29.8h-4.0zM929.4 0h11.0v29.8h-11.0zM2598.5 0h2.5v29.8h-2.5z" fill="#2e7a2e"/><path d="M574.1 0h1.9v29.8h-1.9zM1098.2 0h8.6v29.8h-8.6zM1132.0 0h11.2v29.8h-11.2zM1295.4 0h3.5v29.8h-3.5zM2510.0 0h2.9v29.8h-2.9z" fill="#a85f78"/><path d="M576.0 0h2.5v29.8h-2.5zM989.4 0h7.0v29.8h-7.0zM1038.0 0h2.0v29.8h-2.0zM1230.0 0h2.8v29.8h-2.8zM1298.9 0h3.5v29.8h-3.5zM2442.6 0h13.3v29.8h-13.3z" fill="#9a9a9a"/><path d="M578.5 0h3.0v29.8h-3.0zM657.6 0h2.7v29.8h-2.7zM998.9 0h8.6v29.8h-8.6zM1045.5 0h2.0v29.8h-2.0z" fill="#f0607a"/><path d="M581.5 0h10.5v29.8h-10.5zM1008.0 0h3.0v29.8h-3.0zM1143.7 0h2.3v29.8h-2.3z" fill="#00a818"/><path d="M593.0 0h2.5v29.8h-2.5zM656.0 0h1.6v29.8h-1.6zM1012.0 0h3.7v29.8h-3.7zM1049.5 0h2.5v29.8h-2.5zM1146.0 0h5.1v29.8h-5.1zM2455.9 0h2.9v29.8h-2.9z" fill="#f2d8da"/><path d="M596.2 0h3.8v29.8h-3.8zM814.5 0h2.0v29.8h-2.0zM1040.0 0h2.3v29.8h-2.3zM2459.5 0h9.1v29.8h-9.1zM2594.0 0h2.0v29.8h-2.0z" fill="#634848"/><path d="M601.7 0h15.8v29.8h-15.8zM1113.3 0h12.2v29.8h-12.2zM1207.2 0h3.0v29.8h-3.0z" fill="#7d7d98"/><path d="M618.0 0h3.0v29.8h-3.0zM636.2 0h8.3v29.8h-8.3zM1285.6 0h4.6v29.8h-4.6z" fill="#dc7860"/><path d="M626.2 0h8.3v29.8h-8.3zM1016.6 0h11.2v29.8h-11.2zM1057.5 0h4.0v29.8h-4.0zM1232.8 0h4.7v29.8h-4.7zM2342.2 0h9.8v29.8h-9.8zM2469.2 0h3.7v29.8h-3.7z" fill="#92a8ac"/><path d="M644.5 0h2.5v29.8h-2.5zM941.3 0h12.1v29.8h-12.1zM1030.0 0h2.0v29.8h-2.0zM1210.9 0h12.1v29.8h-12.1zM2473.5 0h11.0v29.8h-11.0zM2496.3 0h9.8v29.8h-9.8z" fill="#a84862"/><path d="M647.0 0h5.5v29.8h-5.5zM984.5 0h3.5v29.8h-3.5zM1034.5 0h2.5v29.8h-2.5zM1293.0 0h2.4v29.8h-2.4zM2506.4 0h3.6v29.8h-3.6z" fill="#3a80c3"/><path d="M654.0 0h2.0v29.8h-2.0zM1042.3 0h2.7v29.8h-2.7zM1107.5 0h5.4v29.8h-5.4zM1302.8 0h3.8v29.8h-3.8zM2512.9 0h3.1v29.8h-3.1z" fill="#f0c070"/><path d="M1032.0 0h2.5v29.8h-2.5zM1290.2 0h2.8v29.8h-2.8z" fill="#62a8c8"/><path d="M1054.6 0h2.4v29.8h-2.4zM1237.5 0h1.9v29.8h-1.9zM2484.8 0h3.2v29.8h-3.2z" fill="#7d98b0"/><path d="M1125.5 0h6.0v29.8h-6.0zM1239.4 0h3.5v29.8h-3.5zM2488.0 0h3.2v29.8h-3.2z" fill="#5f7a48"/><path d="M2491.2 0h4.8v29.8h-4.8zM2596.0 0h2.5v29.8h-2.5z" fill="#7cd965"/></svg>
<div class="c" style="left:1063.3px;top:508.2px;width:35.7px;height:29.8px;line-height:31px;background:#dc7860;color:#000;font-size:17.8px;">...</div>
<div class="c" style="left:1322.2px;top:508.2px;width:139.3px;height:29.8px;line-height:31px;background:#7d7d98;color:#fff;font-size:17.8px;">Directional Lig...</div>
<div class="c" style="left:1462.2px;top:508.2px;width:26.4px;height:29.8px;line-height:31px;background:#634848;color:#fff;font-size:17.8px;">...</div>
<div class="c" style="left:2414.0px;top:508.2px;width:27.2px;height:29.8px;line-height:31px;background:#a85f78;color:#fff;font-size:17.8px;">...</div>
<svg style="left:0;top:508.2px" width="2630" height="30"><path d="M563.5 0h4.0v29.8h-4.0zM929.4 0h10.3v29.8h-10.3zM2351.7 0h4.9v29.8h-4.9z" fill="#7d98b0"/><path d="M626.2 0h1.8v29.8h-1.8zM1016.6 0h2.4v29.8h-2.4zM2343.1 0h8.2v29.8h-8.2zM2482.9 0h1.3v29.8h-1.3z" fill="#7d7d98"/><path d="M628.0 0h3.0v29.8h-3.0zM1491.4 0h19.8v29.8h-19.8zM2357.0 0h10.9v29.8h-10.9zM2475.9 0h1.9v29.8h-1.9z" fill="#5f7a48"/><path d="M631.0 0h3.5v29.8h-3.5zM1025.0 0h3.3v29.8h-3.3zM2367.9 0h14.1v29.8h-14.1z" fill="#7cd965"/><path d="M1019.0 0h3.0v29.8h-3.0zM2595.0 0h4.4v29.8h-4.4z" fill="#92a8ac"/><path d="M1022.0 0h3.0v29.8h-3.0zM1207.2 0h3.8v29.8h-3.8z" fill="#2e7a2e"/><path d="M1050.5 0h2.5v29.8h-2.5zM2323.9 0h17.3v29.8h-17.3zM2472.1 0h1.8v29.8h-1.8z" fill="#634848"/><path d="M1107.5 0h1.5v29.8h-1.5zM2313.0 0h3.0v29.8h-3.0zM2450.4 0h3.3v29.8h-3.3zM2512.2 0h3.6v29.8h-3.6zM2481.4 0h1.5v29.8h-1.5z" fill="#f0607a"/><path d="M1109.0 0h2.5v29.8h-2.5zM1310.5 0h11.7v29.8h-11.7zM2319.6 0h3.4v29.8h-3.4z" fill="#f2d8da"/><path d="M1125.5 0h3.0v29.8h-3.0zM2311.0 0h2.0v29.8h-2.0zM2382.3 0h12.7v29.8h-12.7zM2491.0 0h5.0v29.8h-5.0zM2599.4 0h3.6v29.8h-3.6zM2477.8 0h1.8v29.8h-1.8z" fill="#dc7860"/><path d="M1128.5 0h3.5v29.8h-3.5zM1216.0 0h2.5v29.8h-2.5zM2479.6 0h1.8v29.8h-1.8z" fill="#3a80c3"/><path d="M1211.0 0h5.0v29.8h-5.0zM2405.1 0h2.9v29.8h-2.9zM2496.3 0h10.5v29.8h-10.5z" fill="#62a8c8"/><path d="M1218.5 0h2.2v29.8h-2.2zM1511.2 0h8.8v29.8h-8.8z" fill="#a85f78"/><path d="M1220.7 0h3.5v29.8h-3.5zM2442.9 0h7.2v29.8h-7.2z" fill="#f0c070"/><path d="M2316.0 0h3.0v29.8h-3.0zM2453.7 0h2.3v29.8h-2.3zM2470.3 0h1.8v29.8h-1.8z" fill="#00a818"/><path d="M2397.0 0h7.7v29.8h-7.7zM2473.9 0h2.0v29.8h-2.0z" fill="#a84862"/><path d="M2409.0 0h4.0v29.8h-4.0z" fill="#2f78a8"/></svg>
<div class="c" style="left:1063.3px;top:540.2px;width:33.2px;height:29.8px;line-height:31px;background:#a84862;color:#fff;font-size:17.8px;">...</div>
<div class="c" style="left:1330.4px;top:540.2px;width:131.1px;height:29.8px;line-height:31px;background:#7cd965;color:#000;font-size:17.8px;">Nanite::CullR...</div>
<svg style="left:0;top:540.2px" width="2630" height="30"><path d="M563.5 0h2.5v29.8h-2.5zM930.3 0h5.2v29.8h-5.2z" fill="#5f7a48"/><path d="M935.5 0h2.5v29.8h-2.5zM1207.2 0h4.2v29.8h-4.2z" fill="#7cd965"/><path d="M938.0 0h2.3v29.8h-2.3zM1496.2 0h4.6v29.8h-4.6z" fill="#dc7860"/><path d="M1311.2 0h2.8v29.8h-2.8z" fill="#634848"/><path d="M1314.0 0h8.2v29.8h-8.2zM1463.9 0h17.0v29.8h-17.0z" fill="#92a8ac"/><path d="M1322.2 0h8.2v29.8h-8.2zM1485.6 0h2.4v29.8h-2.4z" fill="#2e7a2e"/><path d="M1482.0 0h2.5v29.8h-2.5z" fill="#7d7d98"/><path d="M1491.9 0h3.1v29.8h-3.1z" fill="#00a818"/><path d="M1495.0 0h1.2v29.8h-1.2z" fill="#f0c070"/><path d="M1500.8 0h3.5v29.8h-3.5z" fill="#a85f78"/><path d="M1505.0 0h2.5v29.8h-2.5z" fill="#62a8c8"/><path d="M1507.5 0h2.7v29.8h-2.7z" fill="#3a80c3"/><path d="M1513.6 0h3.4v29.8h-3.4z" fill="#9a9a9a"/></svg>
<div class="c" style="left:1352.5px;top:572.2px;width:79.4px;height:29.8px;line-height:31px;background:#9a9a9a;color:#000;font-size:17.8px;">Main P...</div>
<svg style="left:0;top:572.2px" width="2630" height="30"><path d="M1322.2 0h3.6v29.8h-3.6z" fill="#7d98b0"/><path d="M1326.2 0h1.8v29.8h-1.8zM1340.9 0h3.5v29.8h-3.5z" fill="#9a9a9a"/><path d="M1328.0 0h2.0v29.8h-2.0z" fill="#5f7a48"/><path d="M1331.5 0h4.7v29.8h-4.7z" fill="#dc7860"/><path d="M1336.2 0h3.5v29.8h-3.5zM1450.6 0h3.4v29.8h-3.4z" fill="#a84862"/><path d="M1344.4 0h4.2v29.8h-4.2z" fill="#3a80c3"/><path d="M1348.6 0h3.3v29.8h-3.3z" fill="#62a8c8"/><path d="M1432.6 0h16.8v29.8h-16.8z" fill="#f0c070"/><path d="M1454.0 0h4.7v29.8h-4.7z" fill="#00a818"/><path d="M1459.2 0h3.5v29.8h-3.5z" fill="#f2d8da"/></svg>
<div class="c" style="left:540.5px;top:1303.4px;width:2086.5px;height:29.8px;line-height:31px;background:#959595;color:#000;font-size:17.8px;">Frame 1338 (21.95ms)</div>
<svg style="left:0;top:1303.4px" width="2630" height="30"><path d="M527.8 0h12.5v29.8h-12.5z" fill="#7cd965"/></svg>
<div class="c" style="left:543.5px;top:1335.4px;width:1949.5px;height:29.8px;line-height:31px;background:#00a818;color:#fff;font-size:17.8px;">Scene (20.40ms)</div>
<div class="c" style="left:2493.6px;top:1335.4px;width:123.2px;height:29.8px;line-height:31px;background:#00a818;color:#fff;font-size:17.8px;border-left:1.5px solid #0b7a16;box-sizing:border-box;">SlateUI Title...</div>
<svg style="left:0;top:1335.4px" width="2630" height="30"><path d="M528.0 0h3.0v29.8h-3.0zM541.0 0h2.5v29.8h-2.5z" fill="#dc7860"/></svg>
<div class="c" style="left:607.5px;top:1367.4px;width:364.5px;height:29.8px;line-height:31px;background:#a85f78;color:#fff;font-size:17.8px;">Nanite::CullRasterize (3.82ms)</div>
<div class="c" style="left:1022.2px;top:1367.4px;width:37.4px;height:29.8px;line-height:31px;background:#00a818;color:#fff;font-size:17.8px;">C...</div>
<div class="c" style="left:1069.6px;top:1367.4px;width:33.8px;height:29.8px;line-height:31px;background:#5f7a48;color:#fff;font-size:17.8px;">...</div>
<div class="c" style="left:1112.6px;top:1367.4px;width:35.0px;height:29.8px;line-height:31px;background:#9a9a9a;color:#000;font-size:17.8px;">B...</div>
<div class="c" style="left:1148.3px;top:1367.4px;width:63.1px;height:29.8px;line-height:31px;background:#f0c070;color:#000;font-size:17.8px;">Nani...</div>
<div class="c" style="left:1236.6px;top:1367.4px;width:36.1px;height:29.8px;line-height:31px;background:#f2d8da;color:#000;font-size:17.8px;">F...</div>
<div class="c" style="left:1274.4px;top:1367.4px;width:241.5px;height:29.8px;line-height:31px;background:repeating-linear-gradient(45deg,rgba(40,40,40,0) 0px,rgba(40,40,40,0) 8.4px,rgba(60,30,40,0.75) 8.4px,rgba(60,30,40,0.75) 9.6px),#f0607a;color:#000;font-size:17.8px;">ShadowDepths (2.54ms)</div>
<div class="c" style="left:1517.0px;top:1367.4px;width:166.5px;height:29.8px;line-height:31px;background:#62a8c8;color:#000;font-size:17.8px;">LumenSceneLigh...</div>
<div class="c" style="left:1707.8px;top:1367.4px;width:279.6px;height:29.8px;line-height:31px;background:#a84862;color:#fff;font-size:17.8px;">DiffuseIndirectAndAO (2.96ms)</div>
<div class="c" style="left:1992.0px;top:1367.4px;width:71.2px;height:29.8px;line-height:31px;background:#7d7d98;color:#fff;font-size:17.8px;">Light...</div>
<div class="c" style="left:2075.6px;top:1367.4px;width:81.0px;height:29.8px;line-height:31px;background:#f2d8da;color:#000;font-size:17.8px;">Volum...</div>
<div class="c" style="left:2184.6px;top:1367.4px;width:309.0px;height:29.8px;line-height:31px;background:#f2d8da;color:#000;font-size:17.8px;">PostProcessing (3.24ms)</div>
<svg style="left:0;top:1367.4px" width="2630" height="30"><path d="M528.0 0h3.0v29.8h-3.0zM540.5 0h2.5v29.8h-2.5zM2064.0 0h7.4v29.8h-7.4zM2162.0 0h2.3v29.8h-2.3zM2493.6 0h3.4v29.8h-3.4z" fill="#9a9a9a"/><path d="M543.4 0h2.0v29.8h-2.0zM585.3 0h4.0v29.8h-4.0zM2608.0 0h2.4v29.8h-2.4z" fill="#f2d8da"/><path d="M545.7 0h3.5v29.8h-3.5zM1060.2 0h8.2v29.8h-8.2zM1212.5 0h2.3v29.8h-2.3zM1987.9 0h3.7v29.8h-3.7zM2157.8 0h3.5v29.8h-3.5z" fill="#92a8ac"/><path d="M549.2 0h5.8v29.8h-5.8zM2610.4 0h2.6v29.8h-2.6z" fill="#7d7d98"/><path d="M557.3 0h3.5v29.8h-3.5zM1701.0 0h2.8v29.8h-2.8z" fill="#7cd965"/><path d="M560.8 0h3.5v29.8h-3.5zM1107.6 0h4.7v29.8h-4.7z" fill="#3a80c3"/><path d="M565.0 0h19.2v29.8h-19.2zM972.7 0h18.0v29.8h-18.0z" fill="#f0c070"/><path d="M589.3 0h8.9v29.8h-8.9zM991.9 0h10.5v29.8h-10.5z" fill="#634848"/><path d="M599.3 0h7.5v29.8h-7.5zM1104.0 0h3.6v29.8h-3.6zM2173.0 0h8.0v29.8h-8.0z" fill="#62a8c8"/><path d="M1003.1 0h18.2v29.8h-18.2zM1215.6 0h13.3v29.8h-13.3zM1704.5 0h3.3v29.8h-3.3z" fill="#dc7860"/><path d="M1232.3 0h1.9v29.8h-1.9z" fill="#f0607a"/><path d="M1234.2 0h2.4v29.8h-2.4zM2072.6 0h3.0v29.8h-3.0zM2181.5 0h3.1v29.8h-3.1z" fill="#00a818"/><path d="M1684.5 0h15.8v29.8h-15.8z" fill="#2e7a2e"/><path d="M2165.2 0h4.2v29.8h-4.2z" fill="#7d98b0"/><path d="M2170.6 0h2.4v29.8h-2.4zM2613.0 0h3.0v29.8h-3.0z" fill="#5f7a48"/><path d="M2616.0 0h4.0v29.8h-4.0z" fill="#a85f78"/></svg>
<div class="c" style="left:615.7px;top:1399.4px;width:47.8px;height:29.8px;line-height:31px;background:#00a818;color:#fff;font-size:17.8px;">M...</div>
<div class="c" style="left:664.2px;top:1399.4px;width:130.0px;height:29.8px;line-height:31px;background:#f2d8da;color:#000;font-size:17.8px;">Main Pass: P...</div>
<div class="c" style="left:820.6px;top:1399.4px;width:89.1px;height:29.8px;line-height:31px;background:#7d7d98;color:#fff;font-size:17.8px;">Main Pa...</div>
<div class="c" style="left:934.7px;top:1399.4px;width:26.4px;height:29.8px;line-height:31px;background:#62a8c8;color:#000;font-size:17.8px;">...</div>
<div class="c" style="left:1019.9px;top:1399.4px;width:39.2px;height:29.8px;line-height:31px;background:#f0607a;color:#000;font-size:17.8px;">R...</div>
<div class="c" style="left:1069.6px;top:1399.4px;width:33.8px;height:29.8px;line-height:31px;background:#7cd965;color:#000;font-size:17.8px;">...</div>
<div class="c" style="left:1160.0px;top:1399.4px;width:51.4px;height:29.8px;line-height:31px;background:#634848;color:#fff;font-size:17.8px;">Emi...</div>
<div class="c" style="left:1274.4px;top:1399.4px;width:124.4px;height:29.8px;line-height:31px;background:#00a818;color:#fff;font-size:17.8px;">RenderVirtu...</div>
<div class="c" style="left:1399.9px;top:1399.4px;width:91.5px;height:29.8px;line-height:31px;background:#7d98b0;color:#000;font-size:17.8px;">Render...</div>
<div class="c" style="left:1492.6px;top:1399.4px;width:23.3px;height:29.8px;line-height:31px;background:#a84862;color:#fff;font-size:17.8px;">...</div>
<div class="c" style="left:1517.0px;top:1399.4px;width:36.2px;height:29.8px;line-height:31px;background:#2f78a8;color:#fff;font-size:17.8px;">R...</div>
<div class="c" style="left:1569.6px;top:1399.4px;width:26.4px;height:29.8px;line-height:31px;background:#5f7a48;color:#fff;font-size:17.8px;">...</div>
<div class="c" style="left:1622.6px;top:1399.4px;width:60.2px;height:29.8px;line-height:31px;background:#92a8ac;color:#000;font-size:17.8px;">Tran...</div>
<div class="c" style="left:1719.5px;top:1399.4px;width:232.2px;height:29.8px;line-height:31px;background:#9a9a9a;color:#000;font-size:17.8px;">LumenScreenProbeGathe...</div>
<div class="c" style="left:1952.4px;top:1399.4px;width:25.2px;height:29.8px;line-height:31px;background:#7d98b0;color:#000;font-size:17.8px;">...</div>
<div class="c" style="left:1991.6px;top:1399.4px;width:71.6px;height:29.8px;line-height:31px;background:#2e7a2e;color:#fff;font-size:17.8px;">Direct...</div>
<div class="c" style="left:2074.9px;top:1399.4px;width:80.5px;height:29.8px;line-height:31px;background:#634848;color:#fff;font-size:17.8px;">CloudV...</div>
<div class="c" style="left:2183.4px;top:1399.4px;width:73.0px;height:29.8px;line-height:31px;background:#634848;color:#fff;font-size:17.8px;">DOF(...</div>
<div class="c" style="left:2265.5px;top:1399.4px;width:123.1px;height:29.8px;line-height:31px;background:#2e7a2e;color:#fff;font-size:17.8px;">TemporalSu...</div>
<div class="c" style="left:2407.8px;top:1399.4px;width:39.6px;height:29.8px;line-height:31px;background:#634848;color:#fff;font-size:17.8px;">E...</div>
<svg style="left:0;top:1399.4px" width="2630" height="30"><path d="M528.0 0h3.0v29.8h-3.0zM563.2 0h2.8v29.8h-2.8zM965.7 0h5.9v29.8h-5.9zM1012.0 0h2.0v29.8h-2.0zM1266.9 0h2.1v29.8h-2.1zM1554.9 0h2.1v29.8h-2.1zM2175.3 0h7.0v29.8h-7.0zM2389.4 0h14.1v29.8h-14.1z" fill="#9a9a9a"/><path d="M548.0 0h4.7v29.8h-4.7zM910.4 0h10.5v29.8h-10.5zM1134.0 0h2.7v29.8h-2.7zM1560.2 0h2.3v29.8h-2.3zM2614.0 0h2.0v29.8h-2.0z" fill="#2e7a2e"/><path d="M560.1 0h3.1v29.8h-3.1zM1104.5 0h8.1v29.8h-8.1zM1137.8 0h11.7v29.8h-11.7zM1263.9 0h2.3v29.8h-2.3zM1606.5 0h15.1v29.8h-15.1zM2491.4 0h1.9v29.8h-1.9z" fill="#a85f78"/><path d="M566.0 0h3.0v29.8h-3.0zM613.5 0h2.2v29.8h-2.2zM973.2 0h7.7v29.8h-7.7zM1151.0 0h1.5v29.8h-1.5zM2067.9 0h4.0v29.8h-4.0z" fill="#f0607a"/><path d="M569.0 0h7.7v29.8h-7.7zM981.4 0h3.5v29.8h-3.5zM1149.5 0h1.5v29.8h-1.5zM1596.4 0h2.4v29.8h-2.4z" fill="#00a818"/><path d="M577.2 0h3.5v29.8h-3.5zM986.0 0h4.2v29.8h-4.2zM1152.5 0h4.5v29.8h-4.5zM1599.2 0h6.6v29.8h-6.6zM2403.8 0h3.2v29.8h-3.2z" fill="#f2d8da"/><path d="M581.1 0h2.4v29.8h-2.4zM795.0 0h2.3v29.8h-2.3zM1014.0 0h2.0v29.8h-2.0zM1235.9 0h1.6v29.8h-1.6zM1979.2 0h7.7v29.8h-7.7zM2608.8 0h2.4v29.8h-2.4z" fill="#634848"/><path d="M584.2 0h3.9v29.8h-3.9zM611.0 0h2.5v29.8h-2.5zM1016.0 0h3.4v29.8h-3.4zM1112.6 0h5.4v29.8h-5.4zM1269.0 0h2.6v29.8h-2.6zM2064.0 0h3.9v29.8h-3.9zM2493.8 0h3.2v29.8h-3.2z" fill="#f0c070"/><path d="M588.1 0h3.1v29.8h-3.1zM608.2 0h2.8v29.8h-2.8zM797.7 0h22.2v29.8h-22.2zM991.0 0h10.9v29.8h-10.9zM1064.0 0h3.2v29.8h-3.2zM1237.5 0h4.5v29.8h-4.5zM2257.2 0h7.5v29.8h-7.5zM2448.2 0h4.5v29.8h-4.5z" fill="#92a8ac"/><path d="M591.2 0h7.7v29.8h-7.7zM1255.2 0h3.3v29.8h-3.3z" fill="#dc7860"/><path d="M599.3 0h3.5v29.8h-3.5zM921.9 0h12.3v29.8h-12.3zM1004.2 0h2.4v29.8h-2.4zM1215.6 0h12.1v29.8h-12.1zM2453.3 0h11.7v29.8h-11.7zM2477.8 0h9.6v29.8h-9.6z" fill="#a84862"/><path d="M602.8 0h4.0v29.8h-4.0zM961.1 0h3.5v29.8h-3.5zM1009.0 0h2.3v29.8h-2.3zM1261.5 0h2.4v29.8h-2.4zM2487.8 0h3.2v29.8h-3.2z" fill="#3a80c3"/><path d="M1006.6 0h2.4v29.8h-2.4zM1258.5 0h3.0v29.8h-3.0zM1704.5 0h14.0v29.8h-14.0z" fill="#62a8c8"/><path d="M1061.0 0h2.0v29.8h-2.0zM1242.0 0h2.0v29.8h-2.0zM1565.0 0h3.4v29.8h-3.4zM1685.2 0h12.3v29.8h-12.3zM2465.8 0h3.2v29.8h-3.2z" fill="#7d98b0"/><path d="M1118.5 0h12.3v29.8h-12.3zM1557.0 0h2.0v29.8h-2.0z" fill="#7d7d98"/><path d="M1131.5 0h2.5v29.8h-2.5zM1244.0 0h2.8v29.8h-2.8zM1562.5 0h2.5v29.8h-2.5zM1698.0 0h2.3v29.8h-2.3zM2469.3 0h2.9v29.8h-2.9z" fill="#5f7a48"/><path d="M1247.5 0h7.0v29.8h-7.0zM2171.3 0h4.0v29.8h-4.0zM2472.5 0h4.5v29.8h-4.5zM2611.6 0h2.4v29.8h-2.4z" fill="#7cd965"/></svg>
<div class="c" style="left:1069.6px;top:1431.4px;width:33.8px;height:29.8px;line-height:31px;background:#dc7860;color:#000;font-size:17.8px;">...</div>
<div class="c" style="left:1285.6px;top:1431.4px;width:86.1px;height:29.8px;line-height:31px;background:#7d7d98;color:#fff;font-size:17.8px;">Directio...</div>
<div class="c" style="left:1372.8px;top:1431.4px;width:24.1px;height:29.8px;line-height:31px;background:#634848;color:#fff;font-size:17.8px;">...</div>
<div class="c" style="left:1422.1px;top:1431.4px;width:56.5px;height:29.8px;line-height:31px;background:#a85f78;color:#fff;font-size:17.8px;">UE...</div>
<div class="c" style="left:1494.9px;top:1431.4px;width:21.0px;height:29.8px;line-height:31px;background:#2f78a8;color:#fff;font-size:17.8px;">...</div>
<div class="c" style="left:1622.6px;top:1431.4px;width:60.2px;height:29.8px;line-height:31px;background:#7d7d98;color:#fff;font-size:17.8px;">Tran...</div>
<div class="c" style="left:1740.0px;top:1431.4px;width:67.7px;height:29.8px;line-height:31px;background:#2e7a2e;color:#fff;font-size:17.8px;">Radi...</div>
<div class="c" style="left:1906.4px;top:1431.4px;width:29.6px;height:29.8px;line-height:31px;background:#7d7d98;color:#fff;font-size:17.8px;">...</div>
<div class="c" style="left:1994.9px;top:1431.4px;width:69.0px;height:29.8px;line-height:31px;background:#7cd965;color:#000;font-size:17.8px;">Shad...</div>
<div class="c" style="left:2361.4px;top:1431.4px;width:26.4px;height:29.8px;line-height:31px;background:#a85f78;color:#fff;font-size:17.8px;">...</div>
<svg style="left:0;top:1431.4px" width="2630" height="30"><path d="M528.0 0h3.0v29.8h-3.0zM991.4 0h2.6v29.8h-2.6zM2191.6 0h6.3v29.8h-6.3zM2257.2 0h7.5v29.8h-7.5zM2455.0 0h1.9v29.8h-1.9z" fill="#7d7d98"/><path d="M549.2 0h3.5v29.8h-3.5zM585.3 0h2.7v29.8h-2.7zM910.4 0h10.5v29.8h-10.5zM1603.4 0h2.6v29.8h-2.6zM1733.5 0h5.3v29.8h-5.3zM1816.6 0h3.9v29.8h-3.9zM1965.2 0h1.6v29.8h-1.6zM1992.0 0h2.9v29.8h-2.9zM2202.0 0h2.9v29.8h-2.9zM2265.5 0h4.5v29.8h-4.5zM2464.1 0h0.9v29.8h-0.9z" fill="#7d98b0"/><path d="M588.0 0h2.5v29.8h-2.5zM994.0 0h3.0v29.8h-3.0zM1041.6 0h2.0v29.8h-2.0zM1401.6 0h19.8v29.8h-19.8zM1479.7 0h11.2v29.8h-11.2zM1601.5 0h1.9v29.8h-1.9zM1821.2 0h2.8v29.8h-2.8zM1955.5 0h2.7v29.8h-2.7zM2270.5 0h10.2v29.8h-10.2zM2457.0 0h1.2v29.8h-1.2z" fill="#5f7a48"/><path d="M997.0 0h2.5v29.8h-2.5zM1031.1 0h4.7v29.8h-4.7zM1115.0 0h4.2v29.8h-4.2zM1599.9 0h1.6v29.8h-1.6zM1891.7 0h14.0v29.8h-14.0zM2183.4 0h7.5v29.8h-7.5zM2610.5 0h4.0v29.8h-4.0z" fill="#92a8ac"/><path d="M999.5 0h3.1v29.8h-3.1zM1043.6 0h2.0v29.8h-2.0zM1569.1 0h13.8v29.8h-13.8zM1824.5 0h18.2v29.8h-18.2zM1952.8 0h2.7v29.8h-2.7zM2205.6 0h4.0v29.8h-4.0zM2317.1 0h12.8v29.8h-12.8z" fill="#7cd965"/><path d="M1022.2 0h3.1v29.8h-3.1zM1533.4 0h2.8v29.8h-2.8zM1723.2 0h2.8v29.8h-2.8zM1881.2 0h4.7v29.8h-4.7zM1973.4 0h3.5v29.8h-3.5zM2230.1 0h3.5v29.8h-3.5zM2401.5 0h2.3v29.8h-2.3zM2451.7 0h1.5v29.8h-1.5zM2461.6 0h1.2v29.8h-1.2z" fill="#00a818"/><path d="M1026.0 0h4.0v29.8h-4.0zM1113.5 0h1.5v29.8h-1.5zM1276.0 0h8.9v29.8h-8.9zM1536.9 0h3.1v29.8h-3.1zM1726.5 0h2.3v29.8h-2.3zM1886.6 0h3.4v29.8h-3.4zM1977.6 0h3.2v29.8h-3.2zM2234.3 0h3.3v29.8h-3.3z" fill="#f2d8da"/><path d="M1036.2 0h4.2v29.8h-4.2zM1212.5 0h1.5v29.8h-1.5zM1808.9 0h6.3v29.8h-6.3zM1937.2 0h14.5v29.8h-14.5zM2199.3 0h2.7v29.8h-2.7zM2462.8 0h1.3v29.8h-1.3z" fill="#2e7a2e"/><path d="M1046.2 0h2.3v29.8h-2.3zM1131.5 0h2.5v29.8h-2.5zM1223.0 0h2.4v29.8h-2.4zM1531.3 0h1.5v29.8h-1.5zM1583.6 0h8.2v29.8h-8.2zM1843.2 0h4.2v29.8h-4.2zM1879.0 0h1.7v29.8h-1.7zM1961.2 0h1.7v29.8h-1.7zM2331.2 0h12.8v29.8h-12.8zM2472.2 0h4.5v29.8h-4.5zM2614.5 0h3.5v29.8h-3.5z" fill="#dc7860"/><path d="M1048.5 0h2.5v29.8h-2.5zM1220.7 0h2.3v29.8h-2.3zM1716.7 0h2.8v29.8h-2.8zM1865.6 0h2.8v29.8h-2.8zM1959.4 0h1.8v29.8h-1.8zM2171.8 0h2.8v29.8h-2.8zM2211.0 0h2.0v29.8h-2.0zM2218.9 0h3.1v29.8h-3.1zM2458.2 0h1.6v29.8h-1.6z" fill="#a85f78"/><path d="M1052.0 0h6.6v29.8h-6.6zM1134.0 0h2.7v29.8h-2.7zM1218.5 0h2.2v29.8h-2.2zM1606.0 0h2.6v29.8h-2.6zM1963.6 0h1.6v29.8h-1.6zM2215.0 0h3.4v29.8h-3.4z" fill="#3a80c3"/><path d="M1112.2 0h1.3v29.8h-1.3zM1529.9 0h1.4v29.8h-1.4zM1877.2 0h1.8v29.8h-1.8zM1970.6 0h2.3v29.8h-2.3zM2226.6 0h3.0v29.8h-3.0zM2398.3 0h3.2v29.8h-3.2zM2493.0 0h4.0v29.8h-4.0zM2459.8 0h1.8v29.8h-1.8z" fill="#f0607a"/><path d="M1214.0 0h4.5v29.8h-4.5zM1491.9 0h3.0v29.8h-3.0zM2213.0 0h2.0v29.8h-2.0zM2353.0 0h2.9v29.8h-2.9zM2477.0 0h10.0v29.8h-10.0z" fill="#62a8c8"/><path d="M1225.4 0h3.9v29.8h-3.9zM1526.0 0h3.2v29.8h-3.2zM1719.5 0h3.7v29.8h-3.7zM1872.6 0h3.9v29.8h-3.9zM1966.8 0h3.1v29.8h-3.1zM2174.6 0h3.4v29.8h-3.4zM2390.2 0h7.7v29.8h-7.7zM2449.8 0h1.9v29.8h-1.9z" fill="#f0c070"/><path d="M1518.9 0h2.8v29.8h-2.8zM1523.5 0h1.7v29.8h-1.7zM1592.9 0h3.5v29.8h-3.5zM1609.3 0h12.3v29.8h-12.3zM1868.8 0h3.1v29.8h-3.1zM2223.1 0h2.8v29.8h-2.8z" fill="#9a9a9a"/><path d="M1521.7 0h1.8v29.8h-1.8zM1540.9 0h12.3v29.8h-12.3zM1729.5 0h3.0v29.8h-3.0zM2238.7 0h17.1v29.8h-17.1zM2453.3 0h1.8v29.8h-1.8z" fill="#634848"/><path d="M1705.5 0h10.0v29.8h-10.0zM1848.5 0h15.2v29.8h-15.2zM2356.3 0h4.0v29.8h-4.0z" fill="#2f78a8"/><path d="M2345.1 0h7.5v29.8h-7.5z" fill="#a84862"/></svg>
<div class="c" style="left:1069.6px;top:1463.4px;width:33.1px;height:29.8px;line-height:31px;background:#a84862;color:#fff;font-size:17.8px;">...</div>
<div class="c" style="left:1289.5px;top:1463.4px;width:82.9px;height:29.8px;line-height:31px;background:#7cd965;color:#000;font-size:17.8px;">Nanite:...</div>
<div class="c" style="left:1995.6px;top:1463.4px;width:68.3px;height:29.8px;line-height:31px;background:#dc7860;color:#000;font-size:17.8px;">UEDP...</div>
<svg style="left:0;top:1463.4px" width="2630" height="30"><path d="M528.0 0h3.0v29.8h-3.0zM915.5 0h3.1v29.8h-3.1zM1403.6 0h1.4v29.8h-1.4zM1479.7 0h2.3v29.8h-2.3z" fill="#7cd965"/><path d="M550.0 0h2.7v29.8h-2.7zM1405.5 0h1.9v29.8h-1.9zM1425.0 0h2.2v29.8h-2.2zM1487.3 0h1.7v29.8h-1.7zM1591.8 0h2.2v29.8h-2.2zM1606.9 0h3.5v29.8h-3.5zM1766.1 0h5.4v29.8h-5.4z" fill="#f0c070"/><path d="M910.4 0h5.1v29.8h-5.1zM1212.5 0h3.5v29.8h-3.5zM1743.0 0h3.5v29.8h-3.5zM1992.8 0h2.8v29.8h-2.8z" fill="#5f7a48"/><path d="M918.6 0h3.3v29.8h-3.3zM1409.7 0h3.5v29.8h-3.5zM1485.5 0h1.8v29.8h-1.8zM1594.0 0h2.4v29.8h-2.4zM1747.5 0h2.0v29.8h-2.0z" fill="#dc7860"/><path d="M1276.7 0h2.3v29.8h-2.3zM1443.5 0h4.7v29.8h-4.7zM1799.5 0h3.5v29.8h-3.5z" fill="#634848"/><path d="M1279.0 0h5.9v29.8h-5.9zM1373.5 0h17.5v29.8h-17.5zM1452.8 0h2.4v29.8h-2.4zM1740.0 0h3.0v29.8h-3.0z" fill="#92a8ac"/><path d="M1285.6 0h3.2v29.8h-3.2zM1395.2 0h2.4v29.8h-2.4zM1455.9 0h2.8v29.8h-2.8zM1482.0 0h2.4v29.8h-2.4z" fill="#2e7a2e"/><path d="M1391.5 0h3.0v29.8h-3.0zM1804.2 0h2.3v29.8h-2.3z" fill="#7d7d98"/><path d="M1402.2 0h1.4v29.8h-1.4zM1435.4 0h3.9v29.8h-3.9zM1612.3 0h1.6v29.8h-1.6zM1775.0 0h2.8v29.8h-2.8z" fill="#00a818"/><path d="M1407.4 0h1.8v29.8h-1.8zM1413.9 0h2.8v29.8h-2.8zM1492.6 0h9.3v29.8h-9.3zM1587.1 0h3.5v29.8h-3.5zM1749.5 0h1.7v29.8h-1.7zM1759.8 0h3.1v29.8h-3.1z" fill="#a85f78"/><path d="M1416.7 0h2.3v29.8h-2.3zM1585.7 0h1.4v29.8h-1.4z" fill="#3a80c3"/><path d="M1419.0 0h2.4v29.8h-2.4zM1584.3 0h1.4v29.8h-1.4zM1754.0 0h4.7v29.8h-4.7z" fill="#62a8c8"/><path d="M1422.5 0h2.5v29.8h-2.5zM1427.9 0h3.3v29.8h-3.3zM1751.7 0h2.3v29.8h-2.3zM1763.3 0h2.8v29.8h-2.8z" fill="#9a9a9a"/><path d="M1431.2 0h4.2v29.8h-4.2zM1596.4 0h3.5v29.8h-3.5zM1610.9 0h1.4v29.8h-1.4zM1772.2 0h2.8v29.8h-2.8z" fill="#f0607a"/><path d="M1440.0 0h2.8v29.8h-2.8zM1502.6 0h7.4v29.8h-7.4zM1614.6 0h4.7v29.8h-4.7zM1777.8 0h20.6v29.8h-20.6z" fill="#f2d8da"/><path d="M1450.5 0h2.3v29.8h-2.3zM1458.7 0h19.9v29.8h-19.9zM1510.8 0h5.1v29.8h-5.1zM1806.5 0h3.1v29.8h-3.1z" fill="#7d98b0"/></svg>
<div class="c" style="left:1303.5px;top:1495.4px;width:39.2px;height:29.8px;line-height:31px;background:#9a9a9a;color:#000;font-size:17.8px;">...</div>
<div class="c" style="left:1996.7px;top:1495.4px;width:57.9px;height:29.8px;line-height:31px;background:#62a8c8;color:#000;font-size:17.8px;">Sha...</div>
<svg style="left:0;top:1495.4px" width="2630" height="30"><path d="M528.0 0h3.0v29.8h-3.0zM1285.6 0h1.9v29.8h-1.9zM1294.9 0h2.8v29.8h-2.8zM1504.8 0h1.8v29.8h-1.8z" fill="#9a9a9a"/><path d="M1287.5 0h2.0v29.8h-2.0zM1507.3 0h2.7v29.8h-2.7z" fill="#5f7a48"/><path d="M1290.2 0h2.0v29.8h-2.0zM1512.9 0h1.5v29.8h-1.5z" fill="#dc7860"/><path d="M1292.2 0h2.0v29.8h-2.0zM1993.2 0h1.6v29.8h-1.6zM2055.5 0h8.4v29.8h-8.4z" fill="#a85f78"/><path d="M1298.2 0h3.0v29.8h-3.0z" fill="#3a80c3"/><path d="M1301.2 0h2.3v29.8h-2.3z" fill="#62a8c8"/><path d="M1343.9 0h16.8v29.8h-16.8zM1492.6 0h2.3v29.8h-2.3z" fill="#f0c070"/><path d="M1361.9 0h3.0v29.8h-3.0zM1514.4 0h1.5v29.8h-1.5z" fill="#a84862"/><path d="M1365.4 0h3.9v29.8h-3.9zM1496.4 0h1.5v29.8h-1.5z" fill="#00a818"/><path d="M1370.0 0h2.8v29.8h-2.8zM1498.4 0h2.3v29.8h-2.3z" fill="#f2d8da"/><path d="M1494.9 0h1.5v29.8h-1.5zM1994.8 0h1.9v29.8h-1.9z" fill="#f0607a"/><path d="M1503.1 0h1.7v29.8h-1.7z" fill="#7d98b0"/><path d="M1510.0 0h1.5v29.8h-1.5z" fill="#2e7a2e"/><path d="M1511.5 0h1.4v29.8h-1.4z" fill="#7cd965"/></svg>
<div class="c" style="left:2000.2px;top:1527.4px;width:47.4px;height:29.8px;line-height:31px;background:#00a818;color:#fff;font-size:17.8px;">Vir...</div>
<svg style="left:0;top:1527.4px" width="2630" height="30"><path d="M528.0 0h3.0v29.8h-3.0z" fill="#5f7a48"/><path d="M1993.2 0h6.3v29.8h-6.3z" fill="#2f78a8"/><path d="M2048.1 0h3.5v29.8h-3.5z" fill="#7d7d98"/><path d="M2052.3 0h2.2v29.8h-2.2z" fill="#a84862"/><path d="M2054.5 0h2.2v29.8h-2.2z" fill="#a85f78"/></svg>
<div class="c" style="left:2007.2px;top:1559.4px;width:37.4px;height:29.8px;line-height:31px;background:#634848;color:#fff;font-size:17.8px;">V...</div>
<svg style="left:0;top:1559.4px" width="2630" height="30"><path d="M528.0 0h3.0v29.8h-3.0zM2046.7 0h1.4v29.8h-1.4z" fill="#2e7a2e"/><path d="M1993.2 0h5.8v29.8h-5.8z" fill="#a85f78"/><path d="M2000.2 0h5.4v29.8h-5.4z" fill="#f2d8da"/><path d="M2045.3 0h1.4v29.8h-1.4z" fill="#9a9a9a"/><path d="M2048.1 0h2.3v29.8h-2.3z" fill="#5f7a48"/><path d="M2050.4 0h2.4v29.8h-2.4z" fill="#00a818"/><path d="M2052.8 0h3.9v29.8h-3.9z" fill="#62a8c8"/></svg>
<svg style="left:0;top:1591.4px" width="2630" height="30"><path d="M528.0 0h3.0v29.8h-3.0z" fill="#9a9a9a"/><path d="M1994.4 0h2.3v29.8h-2.3z" fill="#f0607a"/><path d="M1996.7 0h2.8v29.8h-2.8z" fill="#f0c070"/></svg>
<svg style="left:0;top:0" width="2630" height="952" shape-rendering="crispEdges"><path d="M528.5 702.3H2621.8V733.3H528.5z" fill="#35b3b3"/><path d="M539.1 702.8h1.6v30.5h-1.6zM543.2 702.8h1.6v30.5h-1.6zM547.4 702.8h1.6v30.5h-1.6zM550.7 702.8h1.6v30.5h-1.6zM558.4 702.8h3.0v30.5h-3.0zM569.4 702.8h2.3v30.5h-2.3zM574.0 702.8h1.9v30.5h-1.9zM595.7 702.8h1.6v30.5h-1.6zM598.8 702.8h1.6v30.5h-1.6zM610.4 702.8h5.6v30.5h-5.6zM627.6 702.8h1.9v30.5h-1.9zM630.9 702.8h1.9v30.5h-1.9zM653.2 702.8h3.3v30.5h-3.3zM1056.9 702.8h1.6v30.5h-1.6zM1059.9 702.8h1.6v30.5h-1.6zM1108.6 702.8h1.6v30.5h-1.6zM1110.5 702.8h1.6v30.5h-1.6zM1107.5 702.8h1.6v30.5h-1.6zM1109.3 702.8h1.6v30.5h-1.6zM1126.8 702.8h1.6v30.5h-1.6zM1128.4 702.8h1.6v30.5h-1.6zM1225.8 702.8h1.6v30.5h-1.6zM1230.4 702.8h1.6v30.5h-1.6zM1239.8 702.8h1.6v30.5h-1.6zM1246.8 702.8h1.6v30.5h-1.6zM1292.2 702.8h1.6v30.5h-1.6zM1252.6 702.8h11.6v30.5h-11.6zM1270.0 702.8h13.5v30.5h-13.5zM1393.0 702.8h10.9v30.5h-10.9zM1411.0 702.8h12.3v30.5h-12.3zM1324.1 702.8h1.6v30.5h-1.6zM1328.6 702.8h1.6v30.5h-1.6zM1333.6 702.8h1.6v30.5h-1.6zM1338.3 702.8h1.6v30.5h-1.6zM1492.5 702.8h1.6v30.5h-1.6zM1497.6 702.8h1.6v30.5h-1.6zM1501.3 702.8h1.6v30.5h-1.6zM1505.7 702.8h1.6v30.5h-1.6zM1511.0 702.8h1.6v30.5h-1.6zM1515.0 702.8h1.6v30.5h-1.6zM2457.9 702.8h1.5v30.5h-1.5zM2466.9 702.8h1.5v30.5h-1.5zM2602.6 702.8h1.5v30.5h-1.5zM2604.8 702.8h1.5v30.5h-1.5zM2620.0 702.8h1.5v30.5h-1.5z" fill="#ffff00"/><path d="M539.5 702.3L544.7 702.3L542.1 710.6zM552.8 702.3L555.8 702.3L554.3 709.6zM561.4 702.3L566.5 702.3L564.0 710.3zM568.6 702.3L571.4 702.3L570.0 710.4zM595.5 702.3L600.5 702.3L598.0 710.3zM626.5 702.3L632.5 702.3L629.5 716.3zM653.1 702.3L657.1 702.3L655.1 708.3zM815.8 702.3L818.2 702.3L817.0 708.3zM940.9 702.3L943.3 702.3L942.1 708.3zM987.5 702.3L989.9 702.3L988.7 708.3zM1055.6 702.3L1061.6 702.3L1058.6 710.3zM1106.8 702.3L1112.8 702.3L1109.8 710.3zM1105.4 702.3L1108.5 702.3L1107.0 708.9zM1123.4 702.3L1128.1 702.3L1125.7 708.0zM1224.8 702.3L1226.8 702.3L1225.8 707.3zM1237.2 702.3L1240.5 702.3L1238.9 710.3zM1246.1 702.3L1249.8 702.3L1247.9 709.9zM1312.1 702.3L1316.5 702.3L1314.3 707.9zM1321.9 702.3L1325.9 702.3L1323.9 709.3zM1333.9 702.3L1338.1 702.3L1336.0 711.0zM1453.3 702.3L1455.7 702.3L1454.5 710.3zM1492.6 702.3L1494.7 702.3L1493.7 706.9zM1499.6 702.3L1502.6 702.3L1501.1 708.6zM1505.3 702.3L1508.6 702.3L1506.9 709.1zM1512.2 702.3L1514.3 702.3L1513.3 711.1zM528.4 702.3H538.6L537.1 733.3H529.9zM2458.8 702.3H2468.7L2467.2 733.3H2460.3zM2606.2 702.3H2619.1L2617.6 733.3H2607.7z" fill="#282828"/><path d="M528.5 733.5H2621.8" stroke="#d8b020" stroke-width="1.2"/><path d="M583 855h1v-2h-1zM584 855h1v-8h-1zM585 854h1v-12h-1zM586 855h1v-18h-1zM587 854h1v-12h-1zM588 854h1v-7h-1zM589 854h1v-1h-1zM640 848h1v-9h-1zM641 831h1v-20h-1zM642 848h1v-9h-1zM647 830h1v-2h-1zM648 797h1v-4h-1zM649 798h1v-5h-1zM650 830h1v-3h-1zM663 854h1v-4h-1zM664 852h1v-5h-1zM665 851h1v-2h-1zM666 853h1v-6h-1zM667 851h1v-4h-1zM668 850h1v-3h-1zM669 851h1v-4h-1zM670 852h1v-6h-1zM671 851h1v-5h-1zM672 850h1v-5h-1zM673 850h1v-4h-1zM674 850h2v-5h-2zM676 850h2v-3h-2zM678 847h1v-1h-1zM679 850h1v-2h-1zM680 849h2v-3h-2zM682 848h1v-4h-1zM683 847h1v-3h-1zM684 848h1v-3h-1zM685 848h1v-1h-1zM686 848h1v-3h-1zM687 848h1v-2h-1zM688 850h1v-4h-1zM689 849h1v-1h-1zM690 850h1v-4h-1zM691 849h1v-2h-1zM692 851h2v-4h-2zM694 851h1v-5h-1zM695 850h1v-3h-1zM696 851h1v-4h-1zM697 850h1v-3h-1zM698 850h1v-2h-1zM699 851h1v-4h-1zM700 850h1v-1h-1zM701 853h2v-5h-2zM703 853h1v-3h-1zM712 854h1v-11h-1zM713 843h1v-35h-1zM714 833h1v-53h-1zM715 843h1v-35h-1zM716 849h1v-9h-1zM717 854h1v-1h-1zM720 854h1v-3h-1zM721 847h1v-6h-1zM722 854h1v-3h-1zM725 859h1v-3h-1zM726 855h1v-7h-1zM727 859h1v-3h-1zM728 858h1v-2h-1zM729 854h1v-7h-1zM730 858h1v-2h-1zM733 853h1v-6h-1zM734 851h1v-1h-1zM735 852h1v-3h-1zM736 851h1v-1h-1zM737 851h1v-4h-1zM738 851h1v-3h-1zM739 852h1v-3h-1zM740 852h1v-5h-1zM741 851h1v-3h-1zM742 852h1v-4h-1zM743 851h2v-3h-2zM745 852h1v-4h-1zM746 851h1v-1h-1zM747 852h1v-3h-1zM748 851h1v-2h-1zM749 853h1v-5h-1zM750 851h1v-3h-1zM751 853h1v-5h-1zM752 852h1v-2h-1zM753 852h1v-5h-1zM754 851h1v-3h-1zM755 852h1v-2h-1zM756 852h1v-4h-1zM757 851h2v-2h-2zM759 852h1v-3h-1zM760 852h1v-5h-1zM761 852h1v-3h-1zM762 852h1v-4h-1zM763 851h1v-4h-1zM764 852h1v-5h-1zM765 852h1v-3h-1zM766 851h2v-3h-2zM768 851h1v-2h-1zM769 853h1v-5h-1zM770 852h1v-5h-1zM771 852h1v-4h-1zM772 851h1v-3h-1zM773 851h1v-4h-1zM774 852h1v-3h-1zM775 851h1v-1h-1zM776 851h1v-2h-1zM777 852h1v-4h-1zM778 853h1v-6h-1zM779 853h1v-3h-1zM780 851h3v-2h-3zM783 852h1v-2h-1zM784 852h1v-3h-1zM785 851h1v-3h-1zM786 853h1v-5h-1zM787 852h1v-4h-1zM788 852h1v-3h-1zM789 851h1v-2h-1zM790 851h1v-3h-1zM791 852h3v-5h-3zM794 852h1v-4h-1zM795 851h3v-2h-3zM798 852h1v-5h-1zM799 852h1v-4h-1zM800 851h1v-2h-1zM801 852h1v-4h-1zM802 851h2v-2h-2zM804 851h1v-1h-1zM805 852h1v-4h-1zM806 851h1v-2h-1zM807 853h2v-4h-2zM818 827h1v-7h-1zM819 819h1v-1h-1zM820 841h1v-18h-1zM821 822h1v-1h-1zM822 838h1v-15h-1zM823 817h1v-7h-1zM824 821h1v-10h-1zM825 822h1v-1h-1zM826 812h1v-5h-1zM827 828h1v-13h-1zM828 814h1v-2h-1zM829 806h1v-3h-1zM830 806h1v-1h-1zM831 817h1v-2h-1zM832 823h1v-6h-1zM833 811h1v-2h-1zM834 830h1v-7h-1zM835 816h1v-7h-1zM836 826h1v-3h-1zM837 823h1v-1h-1zM839 826h1v-9h-1zM843 829h1v-19h-1zM844 799h1v-41h-1zM845 798h1v-40h-1zM846 797h1v-37h-1zM847 798h1v-40h-1zM848 799h1v-41h-1zM849 799h1v-39h-1zM850 799h1v-40h-1zM851 798h1v-38h-1zM852 797h1v-37h-1zM853 798h1v-38h-1zM854 800h1v-40h-1zM855 799h1v-41h-1zM856 799h1v-39h-1zM857 798h1v-38h-1zM858 798h2v-39h-2zM860 800h1v-40h-1zM861 798h1v-40h-1zM862 800h1v-42h-1zM863 800h1v-41h-1zM864 798h1v-40h-1zM865 800h1v-40h-1zM866 799h1v-41h-1zM867 798h1v-39h-1zM868 800h1v-42h-1zM869 800h1v-41h-1zM870 800h1v-40h-1zM871 799h1v-41h-1zM872 800h3v-42h-3zM875 798h1v-39h-1zM876 799h1v-41h-1zM877 800h2v-40h-2zM879 800h1v-41h-1zM880 800h1v-40h-1zM881 800h1v-42h-1zM882 800h1v-40h-1zM883 799h1v-41h-1zM884 799h1v-40h-1zM885 800h1v-41h-1zM886 801h2v-43h-2zM888 801h1v-42h-1zM889 800h1v-40h-1zM890 800h2v-41h-2zM892 800h1v-40h-1zM893 801h1v-41h-1zM894 802h1v-44h-1zM895 801h1v-42h-1zM896 802h1v-44h-1zM897 800h1v-41h-1zM898 800h1v-40h-1zM899 801h1v-41h-1zM900 801h1v-43h-1zM901 800h1v-41h-1zM902 799h1v-39h-1zM903 801h3v-41h-3zM906 801h1v-42h-1zM907 800h1v-42h-1zM908 800h1v-40h-1zM909 802h1v-43h-1zM910 800h2v-41h-2zM912 801h1v-43h-1zM913 800h1v-40h-1zM914 800h1v-41h-1zM915 801h1v-42h-1zM916 801h2v-41h-2zM918 801h1v-42h-1zM919 801h1v-41h-1zM920 802h1v-44h-1zM921 800h1v-40h-1zM922 802h2v-43h-2zM924 801h1v-42h-1zM925 802h1v-43h-1zM926 800h1v-42h-1zM927 802h1v-43h-1zM928 831h1v-21h-1zM942 854h1v-13h-1zM943 855h1v-46h-1zM944 855h1v-14h-1zM947 855h1v-8h-1zM948 854h1v-20h-1zM949 855h1v-32h-1zM950 855h1v-42h-1zM951 854h1v-31h-1zM952 854h1v-20h-1zM953 855h1v-8h-1zM957 854h1v-1h-1zM958 858h1v-4h-1zM959 854h1v-1h-1zM960 855h1v-4h-1zM961 855h1v-1h-1zM962 855h1v-2h-1zM963 851h1v-1h-1zM964 855h1v-1h-1zM965 856h1v-2h-1zM966 850h1v-1h-1zM967 851h1v-3h-1zM968 853h1v-4h-1zM969 854h1v-4h-1zM970 854h1v-3h-1zM971 854h1v-1h-1zM972 851h1v-3h-1zM973 850h1v-1h-1zM974 855h2v-1h-2zM976 855h1v-4h-1zM977 855h1v-2h-1zM978 855h2v-1h-2zM980 855h1v-3h-1zM981 854h1v-1h-1zM982 858h1v-4h-1zM983 855h1v-1h-1zM993 853h1v-9h-1zM994 829h1v-33h-1zM995 810h1v-51h-1zM996 829h1v-33h-1zM997 853h1v-9h-1zM1001 844h1v-2h-1zM1002 829h1v-8h-1zM1003 816h1v-12h-1zM1004 831h1v-26h-1zM1005 807h1v-6h-1zM1006 828h1v-7h-1zM1007 845h1v-3h-1zM1008 854h1v-8h-1zM1009 854h1v-29h-1zM1015 830h1v-26h-1zM1016 806h1v-45h-1zM1017 830h1v-26h-1zM1037 854h1v-1h-1zM1038 855h1v-20h-1zM1039 855h1v-2h-1zM1040 861h1v-1h-1zM1041 854h1v-24h-1zM1042 861h1v-1h-1zM1043 855h1v-2h-1zM1044 855h1v-18h-1zM1045 855h1v-24h-1zM1046 855h1v-2h-1zM1064 861h1v-5h-1zM1065 853h1v-2h-1zM1066 855h1v-3h-1zM1067 854h1v-8h-1zM1068 844h1v-2h-1zM1069 846h1v-3h-1zM1070 855h1v-15h-1zM1071 817h1v-29h-1zM1072 792h1v-46h-1zM1073 810h1v-22h-1zM1074 830h1v-5h-1zM1075 833h1v-2h-1zM1076 832h1v-6h-1zM1077 821h1v-2h-1zM1078 824h1v-3h-1zM1079 829h1v-5h-1zM1080 825h1v-1h-1zM1081 826h1v-6h-1zM1082 822h1v-7h-1zM1083 826h1v-9h-1zM1084 824h1v-9h-1zM1085 822h1v-14h-1zM1086 817h1v-5h-1zM1087 826h1v-9h-1zM1088 832h1v-9h-1zM1089 832h1v-7h-1zM1090 828h1v-2h-1zM1091 833h1v-3h-1zM1092 834h1v-11h-1zM1098 855h1v-1h-1zM1099 851h1v-9h-1zM1100 842h1v-9h-1zM1101 826h1v-9h-1zM1102 830h1v-6h-1zM1103 838h1v-14h-1zM1104 839h1v-7h-1zM1105 854h1v-18h-1zM1106 855h1v-4h-1zM1114 854h1v-1h-1zM1115 854h1v-2h-1zM1116 855h1v-3h-1zM1118 839h1v-5h-1zM1119 842h1v-12h-1zM1120 850h1v-14h-1zM1121 850h1v-3h-1zM1122 851h1v-6h-1zM1123 847h1v-1h-1zM1124 855h1v-1h-1zM1135 833h1v-27h-1zM1136 804h1v-54h-1zM1137 805h1v-54h-1zM1138 805h2v-55h-2zM1140 803h1v-53h-1zM1141 805h1v-56h-1zM1142 832h1v-27h-1zM1156 819h1v-15h-1zM1157 817h1v-30h-1zM1158 806h1v-27h-1zM1159 815h1v-13h-1zM1160 818h1v-31h-1zM1161 806h1v-9h-1zM1162 817h1v-15h-1zM1163 817h1v-17h-1zM1164 819h1v-30h-1zM1165 816h1v-42h-1zM1166 815h1v-26h-1zM1167 812h1v-18h-1zM1168 811h1v-41h-1zM1169 816h1v-38h-1zM1170 804h1v-22h-1zM1171 820h1v-22h-1zM1172 802h1v-6h-1zM1173 807h1v-24h-1zM1174 810h1v-15h-1zM1175 809h1v-22h-1zM1176 811h1v-38h-1zM1177 803h1v-20h-1zM1178 818h1v-20h-1zM1179 803h1v-35h-1zM1180 807h1v-12h-1zM1181 823h1v-37h-1zM1182 803h1v-4h-1zM1183 810h1v-11h-1zM1184 807h1v-35h-1zM1185 820h1v-42h-1zM1186 806h1v-25h-1zM1187 816h1v-35h-1zM1188 813h1v-18h-1zM1189 817h1v-18h-1zM1190 807h1v-19h-1zM1191 808h1v-19h-1zM1192 799h1v-21h-1zM1193 805h1v-2h-1zM1194 803h1v-5h-1zM1195 813h1v-21h-1zM1196 800h1v-4h-1zM1197 811h1v-35h-1zM1198 814h1v-31h-1zM1199 813h1v-19h-1zM1200 810h1v-8h-1zM1201 803h1v-24h-1zM1202 813h1v-28h-1zM1203 819h1v-11h-1zM1204 810h1v-6h-1zM1205 820h1v-22h-1zM1206 830h1v-22h-1zM1236 861h1v-1h-1zM1238 861h1v-1h-1zM1244 838h1v-34h-1zM1245 814h1v-66h-1zM1246 814h1v-65h-1zM1247 838h1v-33h-1zM1251 861h1v-3h-1zM1253 861h1v-3h-1zM1283 852h1v-22h-1zM1284 837h1v-56h-1zM1285 852h1v-22h-1zM1304 850h1v-34h-1zM1305 835h1v-76h-1zM1306 850h1v-34h-1zM1313 861h1v-5h-1zM1314 854h1v-7h-1zM1315 861h1v-5h-1zM1317 851h1v-2h-1zM1318 842h1v-4h-1zM1319 833h1v-5h-1zM1320 841h1v-2h-1zM1321 852h1v-2h-1zM1350 854h1v-9h-1zM1355 846h1v-9h-1zM1356 831h1v-19h-1zM1357 816h1v-27h-1zM1358 803h1v-39h-1zM1359 802h1v-39h-1zM1360 803h1v-40h-1zM1361 804h1v-40h-1zM1362 802h1v-38h-1zM1363 802h1v-37h-1zM1364 803h1v-40h-1zM1365 802h1v-37h-1zM1366 803h1v-39h-1zM1367 804h1v-39h-1zM1368 804h1v-40h-1zM1369 804h1v-39h-1zM1370 802h1v-37h-1zM1371 804h1v-39h-1zM1372 801h1v-36h-1zM1373 801h1v-37h-1zM1374 804h1v-39h-1zM1375 803h1v-40h-1zM1376 804h1v-40h-1zM1377 803h1v-38h-1zM1378 802h1v-37h-1zM1379 801h1v-36h-1zM1380 803h1v-39h-1zM1381 803h1v-38h-1zM1382 804h1v-39h-1zM1383 802h1v-37h-1zM1384 802h1v-39h-1zM1385 817h1v-28h-1zM1386 832h1v-20h-1zM1387 846h1v-9h-1zM1400 861h1v-2h-1zM1401 855h1v-3h-1zM1402 861h1v-2h-1zM1406 861h1v-5h-1zM1407 855h1v-7h-1zM1408 861h1v-5h-1zM1424 834h1v-15h-1zM1425 826h1v-53h-1zM1426 844h1v-25h-1zM1440 861h1v-2h-1zM1441 855h1v-5h-1zM1442 861h1v-2h-1zM1460 848h1v-19h-1zM1461 832h1v-43h-1zM1462 848h1v-19h-1zM1473 854h1v-24h-1zM1474 854h1v-56h-1zM1475 854h2v-57h-2zM1477 855h2v-58h-2zM1479 854h1v-25h-1zM2320 854h1v-5h-1zM2321 855h1v-25h-1zM2322 855h1v-6h-1zM2325 845h1v-18h-1zM2326 827h1v-34h-1zM2327 810h1v-51h-1zM2328 809h1v-51h-1zM2329 806h1v-48h-1zM2330 805h1v-47h-1zM2331 804h1v-47h-1zM2332 801h1v-43h-1zM2333 787h1v-28h-1zM2334 796h1v-35h-1zM2335 792h1v-31h-1zM2336 790h1v-27h-1zM2337 788h1v-24h-1zM2338 789h1v-21h-1zM2339 814h1v-14h-1zM2340 838h1v-7h-1zM2345 822h1v-29h-1zM2346 808h1v-12h-1zM2347 810h1v-24h-1zM2348 806h1v-24h-1zM2349 817h1v-25h-1zM2350 812h1v-35h-1zM2351 809h1v-35h-1zM2352 801h1v-24h-1zM2359 838h1v-6h-1zM2360 815h1v-12h-1zM2361 792h1v-17h-1zM2362 785h1v-12h-1zM2363 785h1v-11h-1zM2364 794h1v-20h-1zM2365 819h1v-15h-1zM2366 841h1v-9h-1zM2371 826h1v-18h-1zM2372 791h2v-36h-2zM2374 791h1v-35h-1zM2375 791h1v-34h-1zM2376 790h1v-34h-1zM2377 792h1v-35h-1zM2378 791h1v-36h-1zM2379 790h1v-33h-1zM2380 827h1v-19h-1zM2385 836h1v-20h-1zM2386 810h2v-40h-2zM2388 807h1v-35h-1zM2389 803h1v-31h-1zM2390 801h1v-29h-1zM2391 807h1v-37h-1zM2392 809h1v-39h-1zM2393 811h1v-39h-1zM2394 836h1v-20h-1zM2398 818h1v-12h-1zM2399 777h1v-24h-1zM2400 784h1v-29h-1zM2401 787h1v-31h-1zM2402 788h1v-28h-1zM2403 826h1v-14h-1zM2417 824h1v-14h-1zM2418 788h1v-29h-1zM2419 789h1v-30h-1zM2420 787h1v-27h-1zM2421 788h1v-30h-1zM2422 787h1v-29h-1zM2423 787h1v-27h-1zM2424 787h1v-28h-1zM2425 788h1v-28h-1zM2426 789h2v-30h-2zM2428 788h1v-31h-1zM2429 788h1v-29h-1zM2430 789h2v-31h-2zM2432 789h1v-30h-1zM2433 788h1v-29h-1zM2434 788h2v-30h-2zM2436 789h1v-30h-1zM2437 788h1v-28h-1zM2438 824h1v-14h-1zM2446 846h1v-12h-1zM2447 841h1v-28h-1zM2448 850h1v-16h-1zM2449 842h1v-16h-1zM2450 827h1v-29h-1zM2451 842h1v-16h-1zM2479 841h1v-12h-1zM2480 818h1v-26h-1zM2481 841h1v-12h-1zM2482 847h1v-25h-1zM2483 836h1v-44h-1zM2484 847h1v-25h-1zM2488 849h1v-22h-1zM2489 840h1v-42h-1zM2490 849h1v-22h-1zM2496 828h1v-2h-1zM2497 825h1v-29h-1zM2498 843h1v-17h-1zM2513 841h1v-5h-1zM2514 819h1v-9h-1zM2515 820h1v-10h-1zM2516 820h1v-8h-1zM2517 820h1v-7h-1zM2518 819h1v-7h-1zM2519 820h1v-8h-1zM2520 820h1v-9h-1zM2521 819h1v-11h-1zM2522 821h1v-10h-1zM2523 820h1v-11h-1zM2524 820h1v-12h-1zM2525 819h1v-17h-1zM2526 820h1v-26h-1zM2527 819h1v-34h-1zM2528 821h1v-41h-1zM2529 818h1v-46h-1zM2530 818h2v-54h-2zM2532 821h1v-56h-1zM2533 819h1v-56h-1zM2534 820h1v-55h-1zM2535 819h1v-55h-1zM2536 821h1v-57h-1zM2537 821h1v-56h-1zM2538 820h1v-55h-1zM2539 818h1v-53h-1zM2540 818h1v-54h-1zM2541 820h1v-56h-1zM2542 818h1v-50h-1zM2543 819h1v-48h-1zM2544 820h1v-47h-1zM2545 819h1v-43h-1zM2546 821h1v-43h-1zM2547 821h1v-39h-1zM2548 820h1v-32h-1zM2549 819h1v-28h-1zM2550 819h1v-21h-1zM2551 819h1v-15h-1zM2552 819h1v-12h-1zM2553 818h1v-9h-1zM2554 819h1v-8h-1zM2555 821h1v-10h-1zM2556 818h1v-7h-1zM2557 819h1v-10h-1zM2558 821h1v-9h-1zM2559 821h1v-10h-1zM2560 821h1v-9h-1zM2561 820h1v-8h-1zM2562 820h1v-11h-1zM2563 821h1v-11h-1zM2564 820h1v-10h-1zM2565 821h1v-11h-1zM2566 820h1v-8h-1zM2567 819h1v-10h-1zM2568 819h1v-9h-1zM2569 840h1v-3h-1zM2570 846h1v-3h-1zM2571 834h1v-6h-1zM2572 833h1v-5h-1zM2573 834h1v-8h-1zM2574 832h1v-4h-1zM2575 835h1v-9h-1zM2576 832h1v-4h-1zM2577 835h2v-9h-2zM2579 834h1v-6h-1zM2580 831h1v-4h-1zM2581 834h1v-8h-1zM2582 833h1v-7h-1zM2583 831h1v-2h-1zM2584 847h1v-4h-1zM2589 844h1v-8h-1zM2590 828h1v-16h-1zM2591 815h1v-23h-1zM2592 828h1v-16h-1zM2593 844h1v-8h-1z" fill="#d400e6"/><path d="M583 841h1v-20h-1zM584 826h1v-36h-1zM585 813h1v-49h-1zM586 801h1v-61h-1zM587 813h1v-49h-1zM588 826h1v-36h-1zM589 841h1v-20h-1zM647 855h1v-13h-1zM648 854h1v-31h-1zM649 854h1v-32h-1zM650 854h1v-11h-1zM660 854h1v-27h-1zM661 855h1v-71h-1zM662 854h1v-27h-1zM663 850h1v-24h-1zM664 847h1v-16h-1zM665 849h1v-24h-1zM666 847h1v-24h-1zM667 847h1v-26h-1zM668 847h1v-18h-1zM669 847h1v-25h-1zM670 846h1v-19h-1zM671 846h1v-25h-1zM672 845h1v-17h-1zM673 846h1v-26h-1zM674 845h2v-27h-2zM676 847h1v-19h-1zM677 847h1v-18h-1zM678 846h1v-17h-1zM679 848h1v-26h-1zM680 846h1v-23h-1zM681 846h1v-24h-1zM682 844h1v-21h-1zM683 844h1v-15h-1zM684 845h1v-19h-1zM685 847h1v-15h-1zM686 845h1v-14h-1zM687 846h1v-14h-1zM688 846h1v-22h-1zM689 848h1v-14h-1zM690 846h1v-15h-1zM691 847h1v-19h-1zM692 847h1v-16h-1zM693 847h1v-18h-1zM694 846h1v-18h-1zM695 847h1v-20h-1zM696 847h1v-19h-1zM697 847h1v-15h-1zM698 848h1v-16h-1zM699 847h1v-18h-1zM700 849h1v-23h-1zM701 848h2v-23h-2zM703 850h1v-24h-1zM733 861h3v-6h-3zM736 861h1v-7h-1zM737 861h4v-6h-4zM741 855h1v-1h-1zM742 861h1v-6h-1zM743 861h1v-7h-1zM744 861h1v-6h-1zM745 861h1v-5h-1zM746 861h3v-6h-3zM749 855h4v-1h-4zM753 861h1v-6h-1zM754 855h1v-1h-1zM755 861h1v-6h-1zM756 855h1v-1h-1zM757 861h4v-6h-4zM761 855h2v-1h-2zM763 861h7v-6h-7zM770 861h2v-7h-2zM772 861h3v-6h-3zM775 861h1v-7h-1zM776 861h6v-6h-6zM782 855h1v-1h-1zM783 861h1v-6h-1zM784 861h1v-7h-1zM785 861h1v-6h-1zM786 855h2v-1h-2zM788 861h1v-6h-1zM789 855h1v-1h-1zM790 861h4v-6h-4zM794 855h1v-1h-1zM795 861h3v-6h-3zM798 861h2v-7h-2zM800 861h4v-6h-4zM804 861h1v-7h-1zM805 861h3v-6h-3zM808 861h1v-7h-1zM818 854h1v-10h-1zM819 854h1v-14h-1zM820 855h2v-14h-2zM822 855h1v-17h-1zM823 854h1v-16h-1zM824 855h1v-18h-1zM825 855h1v-21h-1zM826 854h1v-16h-1zM827 855h1v-21h-1zM828 854h1v-14h-1zM829 855h1v-23h-1zM830 855h1v-15h-1zM831 854h1v-22h-1zM832 854h1v-15h-1zM833 855h1v-17h-1zM834 855h1v-18h-1zM835 854h1v-21h-1zM836 832h1v-2h-1zM837 837h1v-4h-1zM838 854h1v-19h-1zM839 836h1v-2h-1zM843 861h1v-2h-1zM844 861h1v-4h-1zM845 861h1v-5h-1zM846 861h1v-6h-1zM847 861h2v-5h-2zM849 861h1v-6h-1zM850 861h2v-5h-2zM852 861h1v-6h-1zM853 861h1v-7h-1zM854 861h1v-6h-1zM855 861h1v-5h-1zM856 861h1v-6h-1zM857 861h1v-5h-1zM858 861h1v-7h-1zM859 861h1v-6h-1zM860 855h2v-2h-2zM862 855h1v-3h-1zM863 855h1v-1h-1zM864 855h1v-3h-1zM865 854h1v-2h-1zM866 854h1v-1h-1zM867 855h1v-3h-1zM868 854h1v-2h-1zM869 855h1v-4h-1zM870 854h1v-2h-1zM871 854h1v-3h-1zM872 854h3v-5h-3zM875 855h1v-6h-1zM876 854h1v-7h-1zM877 855h1v-7h-1zM878 855h1v-9h-1zM879 854h2v-9h-2zM881 855h1v-11h-1zM882 855h1v-12h-1zM883 854h1v-10h-1zM884 855h1v-14h-1zM885 854h1v-12h-1zM886 855h1v-15h-1zM887 855h1v-16h-1zM888 854h1v-16h-1zM889 854h2v-18h-2zM891 854h1v-20h-1zM892 855h1v-20h-1zM893 854h1v-21h-1zM894 854h1v-22h-1zM895 855h1v-24h-1zM896 854h1v-25h-1zM897 855h1v-26h-1zM898 854h1v-26h-1zM899 854h1v-25h-1zM900 855h1v-25h-1zM901 855h3v-26h-3zM904 855h1v-24h-1zM905 855h1v-25h-1zM906 854h1v-23h-1zM907 855h1v-23h-1zM908 854h1v-24h-1zM909 855h1v-25h-1zM910 855h1v-24h-1zM911 854h1v-24h-1zM912 855h1v-25h-1zM913 854h1v-25h-1zM914 855h1v-26h-1zM915 854h1v-25h-1zM916 854h1v-26h-1zM917 855h1v-26h-1zM918 854h1v-25h-1zM919 854h2v-26h-2zM921 855h1v-25h-1zM922 854h1v-24h-1zM923 854h1v-22h-1zM924 854h1v-23h-1zM925 854h1v-24h-1zM926 854h1v-22h-1zM927 855h1v-23h-1zM928 855h1v-8h-1zM931 861h1v-4h-1zM932 855h1v-17h-1zM933 855h1v-31h-1zM934 854h1v-16h-1zM935 861h1v-4h-1zM947 844h1v-17h-1zM948 828h1v-34h-1zM949 814h1v-48h-1zM950 801h1v-60h-1zM951 814h1v-48h-1zM952 828h1v-34h-1zM953 844h1v-17h-1zM957 861h1v-5h-1zM958 861h1v-3h-1zM959 861h1v-5h-1zM960 861h2v-6h-2zM962 861h1v-5h-1zM963 855h1v-1h-1zM964 854h1v-1h-1zM965 861h1v-5h-1zM966 861h1v-7h-1zM967 855h1v-1h-1zM968 854h1v-1h-1zM969 861h1v-7h-1zM970 861h2v-6h-2zM972 854h1v-2h-1zM973 855h1v-1h-1zM974 861h1v-6h-1zM976 861h2v-6h-2zM978 861h1v-5h-1zM979 861h2v-6h-2zM981 861h1v-4h-1zM982 861h1v-3h-1zM983 861h1v-5h-1zM993 861h1v-5h-1zM994 854h1v-12h-1zM995 854h1v-24h-1zM996 855h1v-13h-1zM997 861h1v-5h-1zM1008 831h1v-30h-1zM1009 809h1v-53h-1zM1010 831h1v-30h-1zM1114 861h1v-7h-1zM1115 851h1v-4h-1zM1116 847h1v-5h-1zM1117 842h1v-1h-1zM1118 848h1v-6h-1zM1119 847h1v-5h-1zM1120 836h1v-2h-1zM1121 847h1v-5h-1zM1122 845h1v-6h-1zM1123 855h1v-5h-1zM1124 854h1v-8h-1zM1125 854h1v-2h-1zM1147 854h1v-24h-1zM1148 854h1v-63h-1zM1149 855h1v-25h-1zM1156 831h1v-7h-1zM1157 828h1v-7h-1zM1158 823h1v-17h-1zM1159 835h1v-17h-1zM1160 826h1v-8h-1zM1161 813h1v-7h-1zM1162 825h1v-8h-1zM1163 829h1v-11h-1zM1164 824h1v-5h-1zM1165 823h1v-7h-1zM1166 826h1v-9h-1zM1167 820h1v-8h-1zM1168 831h1v-13h-1zM1169 822h1v-6h-1zM1170 822h1v-18h-1zM1171 824h1v-4h-1zM1172 808h1v-6h-1zM1173 819h1v-12h-1zM1174 812h1v-2h-1zM1175 811h1v-2h-1zM1176 822h1v-11h-1zM1177 812h1v-9h-1zM1178 833h1v-13h-1zM1179 822h1v-19h-1zM1180 824h1v-17h-1zM1181 825h1v-2h-1zM1182 824h1v-21h-1zM1183 815h1v-5h-1zM1184 813h1v-6h-1zM1185 825h1v-5h-1zM1186 826h1v-20h-1zM1187 822h1v-4h-1zM1188 819h1v-6h-1zM1189 820h1v-3h-1zM1190 815h1v-8h-1zM1191 816h1v-8h-1zM1192 824h1v-25h-1zM1193 814h1v-9h-1zM1194 810h1v-7h-1zM1195 830h1v-16h-1zM1196 815h1v-15h-1zM1197 822h1v-11h-1zM1198 828h1v-11h-1zM1199 820h1v-7h-1zM1200 825h1v-15h-1zM1201 817h1v-14h-1zM1202 815h1v-2h-1zM1203 828h1v-8h-1zM1204 826h1v-16h-1zM1205 825h1v-5h-1zM1206 808h1v-1h-1zM1211 834h1v-12h-1zM1212 799h1v-27h-1zM1213 834h1v-12h-1zM1317 845h1v-22h-1zM1318 830h1v-46h-1zM1319 815h1v-68h-1zM1320 830h1v-45h-1zM1321 846h1v-23h-1zM1355 855h1v-6h-1zM1356 848h1v-11h-1zM1357 842h1v-19h-1zM1358 835h1v-22h-1zM1359 834h1v-23h-1zM1360 835h1v-23h-1zM1361 836h1v-23h-1zM1362 836h1v-24h-1zM1363 834h3v-22h-3zM1366 836h1v-25h-1zM1367 834h1v-23h-1zM1368 834h1v-22h-1zM1369 836h1v-25h-1zM1370 834h1v-22h-1zM1371 835h1v-22h-1zM1372 835h1v-24h-1zM1373 836h1v-24h-1zM1374 834h1v-23h-1zM1375 835h1v-23h-1zM1376 836h1v-25h-1zM1377 835h1v-22h-1zM1378 834h1v-22h-1zM1379 835h1v-22h-1zM1380 836h1v-23h-1zM1381 835h1v-24h-1zM1382 835h1v-22h-1zM1383 836h1v-23h-1zM1384 836h1v-25h-1zM1385 842h1v-17h-1zM1386 847h1v-10h-1zM1387 854h1v-5h-1zM1422 854h1v-20h-1zM1423 854h1v-63h-1zM1424 844h1v-10h-1zM1468 843h1v-25h-1zM1469 826h1v-48h-1zM1470 811h1v-68h-1zM1471 826h1v-48h-1zM1472 843h1v-25h-1zM2325 854h1v-5h-1zM2326 851h1v-11h-1zM2327 846h1v-12h-1zM2328 847h1v-10h-1zM2329 846h1v-5h-1zM2330 847h1v-3h-1zM2332 854h1v-6h-1zM2333 854h1v-1h-1zM2334 861h1v-6h-1zM2335 861h1v-5h-1zM2336 861h1v-4h-1zM2337 861h1v-1h-1zM2338 861h1v-2h-1zM2339 861h1v-1h-1zM2359 854h1v-6h-1zM2360 826h1v-1h-1zM2361 809h1v-11h-1zM2362 793h1v-8h-1zM2363 795h1v-10h-1zM2364 798h1v-4h-1zM2365 833h1v-12h-1zM2366 848h1v-4h-1zM2371 855h1v-4h-1zM2372 854h1v-19h-1zM2373 854h1v-25h-1zM2374 854h1v-29h-1zM2375 854h1v-36h-1zM2376 855h1v-36h-1zM2377 854h1v-27h-1zM2378 855h1v-19h-1zM2379 855h1v-12h-1zM2380 861h1v-5h-1zM2385 855h1v-9h-1zM2386 855h1v-31h-1zM2387 855h1v-39h-1zM2388 855h1v-46h-1zM2389 808h1v-5h-1zM2390 809h1v-8h-1zM2391 810h1v-3h-1zM2392 854h1v-42h-1zM2393 855h1v-38h-1zM2394 855h1v-14h-1zM2398 854h1v-3h-1zM2399 854h1v-14h-1zM2400 854h1v-13h-1zM2401 854h1v-15h-1zM2402 855h1v-14h-1zM2403 854h1v-4h-1zM2417 842h1v-5h-1zM2418 822h1v-11h-1zM2419 822h2v-12h-2zM2421 823h1v-14h-1zM2422 822h1v-11h-1zM2423 822h1v-12h-1zM2424 823h1v-15h-1zM2425 822h1v-14h-1zM2426 823h1v-16h-1zM2427 822h1v-15h-1zM2428 823h1v-16h-1zM2429 824h1v-20h-1zM2430 822h1v-18h-1zM2431 823h1v-20h-1zM2432 823h1v-21h-1zM2433 823h1v-20h-1zM2434 822h1v-19h-1zM2435 823h2v-22h-2zM2437 824h1v-23h-1zM2438 842h1v-11h-1zM2443 843h1v-10h-1zM2444 812h1v-3h-1zM2445 834h1v-1h-1zM2452 848h1v-8h-1zM2453 815h1v-31h-1zM2454 848h1v-8h-1zM2455 854h1v-16h-1zM2456 842h1v-49h-1zM2457 854h1v-16h-1zM2492 848h1v-31h-1zM2493 813h1v-32h-1zM2494 845h1v-34h-1zM2495 798h1v-31h-1zM2496 826h1v-15h-1zM2498 855h1v-5h-1zM2499 855h1v-16h-1zM2500 827h1v-6h-1zM2501 829h1v-12h-1zM2502 827h1v-9h-1zM2503 829h1v-8h-1zM2504 842h1v-3h-1zM2505 851h1v-1h-1zM2513 852h1v-11h-1zM2514 843h1v-24h-1zM2515 843h1v-23h-1zM2516 842h2v-22h-2zM2518 844h1v-25h-1zM2519 844h1v-24h-1zM2520 841h1v-21h-1zM2521 842h1v-23h-1zM2522 841h1v-20h-1zM2523 842h2v-22h-2zM2525 841h1v-22h-1zM2526 840h1v-20h-1zM2527 840h1v-21h-1zM2528 834h1v-13h-1zM2529 836h1v-18h-1zM2530 833h1v-15h-1zM2531 829h1v-11h-1zM2532 830h1v-9h-1zM2533 829h1v-10h-1zM2534 830h1v-10h-1zM2535 829h1v-10h-1zM2536 830h2v-9h-2zM2538 828h1v-8h-1zM2539 829h2v-11h-2zM2541 829h1v-9h-1zM2542 830h1v-12h-1zM2543 829h1v-10h-1zM2544 828h1v-8h-1zM2545 832h1v-13h-1zM2546 831h2v-10h-2zM2548 836h1v-16h-1zM2549 837h1v-18h-1zM2550 835h1v-16h-1zM2551 836h1v-17h-1zM2552 837h1v-18h-1zM2553 838h1v-20h-1zM2554 841h1v-22h-1zM2555 843h1v-22h-1zM2556 843h1v-25h-1zM2557 842h1v-23h-1zM2558 843h1v-22h-1zM2559 841h1v-20h-1zM2560 843h1v-22h-1zM2561 842h2v-22h-2zM2563 843h1v-22h-1zM2564 842h1v-22h-1zM2565 842h1v-21h-1zM2566 842h1v-22h-1zM2567 841h1v-22h-1zM2568 842h1v-23h-1zM2569 852h1v-12h-1zM2570 854h1v-8h-1zM2571 851h1v-17h-1zM2572 848h1v-15h-1zM2573 851h1v-17h-1zM2574 848h1v-16h-1zM2575 850h1v-15h-1zM2576 847h1v-15h-1zM2577 848h1v-13h-1zM2578 849h1v-14h-1zM2579 849h1v-15h-1zM2580 850h1v-19h-1zM2581 848h1v-14h-1zM2582 850h1v-17h-1zM2583 849h1v-18h-1zM2584 854h1v-7h-1zM2589 828h1v-9h-1zM2590 796h1v-16h-1zM2591 769h1v-23h-1zM2592 796h1v-16h-1zM2593 828h1v-9h-1z" fill="#f27835"/><path d="M539 861h1v-1h-1zM540 861h1v-6h-1zM541 854h1v-3h-1zM543 861h1v-1h-1zM546 861h1v-4h-1zM548 861h1v-4h-1zM549 861h1v-11h-1zM550 861h1v-17h-1zM551 861h1v-11h-1zM552 861h1v-4h-1zM583 853h1v-9h-1zM584 847h1v-16h-1zM585 842h1v-22h-1zM586 837h1v-27h-1zM587 842h1v-22h-1zM588 847h1v-16h-1zM589 853h1v-9h-1zM640 855h1v-7h-1zM641 854h1v-23h-1zM642 854h1v-6h-1zM647 842h1v-12h-1zM648 823h1v-26h-1zM649 822h1v-24h-1zM650 843h1v-13h-1zM712 861h1v-6h-1zM713 855h1v-12h-1zM714 855h1v-22h-1zM715 854h1v-11h-1zM716 861h1v-6h-1zM717 861h1v-2h-1zM720 861h1v-3h-1zM721 855h1v-1h-1zM722 861h1v-3h-1zM725 860h1v-1h-1zM726 858h1v-2h-1zM727 860h1v-1h-1zM728 859h1v-1h-1zM729 856h1v-2h-1zM730 859h1v-1h-1zM733 854h1v-1h-1zM734 854h1v-3h-1zM735 854h1v-2h-1zM736 854h1v-3h-1zM737 855h2v-4h-2zM739 855h1v-3h-1zM740 854h1v-2h-1zM741 854h1v-3h-1zM742 854h1v-2h-1zM743 854h2v-3h-2zM745 855h1v-3h-1zM746 854h1v-3h-1zM747 855h1v-3h-1zM748 854h1v-3h-1zM749 854h1v-1h-1zM750 854h1v-3h-1zM751 854h1v-1h-1zM752 854h1v-2h-1zM753 855h1v-3h-1zM754 854h1v-3h-1zM755 854h2v-2h-2zM757 855h2v-4h-2zM759 855h2v-3h-2zM761 854h2v-2h-2zM763 854h1v-3h-1zM764 854h2v-2h-2zM766 854h1v-3h-1zM767 855h1v-4h-1zM768 854h1v-3h-1zM769 855h1v-2h-1zM770 854h2v-2h-2zM772 855h2v-4h-2zM774 855h1v-3h-1zM775 854h1v-3h-1zM776 855h1v-4h-1zM777 855h1v-3h-1zM778 855h2v-2h-2zM780 854h3v-3h-3zM783 854h2v-2h-2zM785 854h1v-3h-1zM786 854h1v-1h-1zM787 854h2v-2h-2zM789 854h1v-3h-1zM790 855h1v-4h-1zM791 855h1v-3h-1zM792 854h1v-2h-1zM793 855h1v-3h-1zM794 854h1v-2h-1zM795 854h2v-3h-2zM797 855h1v-4h-1zM798 854h2v-2h-2zM800 854h1v-3h-1zM801 855h1v-3h-1zM802 855h1v-4h-1zM803 854h2v-3h-2zM805 855h1v-3h-1zM806 855h1v-4h-1zM807 854h2v-1h-2zM818 820h1v-3h-1zM819 820h1v-1h-1zM820 823h1v-1h-1zM821 841h1v-16h-1zM822 821h1v-1h-1zM823 808h1v-1h-1zM824 809h1v-5h-1zM825 821h1v-10h-1zM826 828h1v-15h-1zM827 815h1v-11h-1zM828 812h1v-5h-1zM829 824h1v-13h-1zM830 825h1v-6h-1zM831 830h1v-13h-1zM832 833h1v-9h-1zM833 832h1v-17h-1zM834 823h1v-7h-1zM835 829h1v-1h-1zM836 830h1v-4h-1zM837 833h1v-10h-1zM838 835h1v-6h-1zM839 834h1v-6h-1zM843 848h1v-19h-1zM844 835h1v-36h-1zM845 834h1v-36h-1zM846 835h1v-38h-1zM847 835h1v-37h-1zM848 835h1v-36h-1zM849 837h1v-38h-1zM850 835h1v-36h-1zM851 837h1v-39h-1zM852 837h1v-40h-1zM853 838h1v-40h-1zM854 836h1v-36h-1zM855 835h1v-36h-1zM856 837h1v-38h-1zM857 838h1v-40h-1zM858 836h2v-38h-2zM860 837h1v-37h-1zM861 838h1v-40h-1zM862 838h1v-38h-1zM863 836h1v-36h-1zM864 836h1v-38h-1zM865 837h1v-37h-1zM866 836h1v-37h-1zM867 835h1v-37h-1zM868 835h2v-35h-2zM870 836h1v-36h-1zM871 836h1v-37h-1zM872 837h1v-37h-1zM873 834h2v-34h-2zM875 835h1v-37h-1zM876 834h1v-35h-1zM877 833h1v-33h-1zM878 832h1v-32h-1zM879 835h1v-35h-1zM880 833h1v-33h-1zM881 832h1v-32h-1zM882 831h1v-31h-1zM883 832h1v-33h-1zM884 830h1v-31h-1zM885 830h1v-30h-1zM886 831h1v-30h-1zM887 832h1v-31h-1zM888 830h1v-29h-1zM889 829h1v-29h-1zM890 828h1v-28h-1zM891 829h1v-29h-1zM892 827h1v-27h-1zM893 828h1v-27h-1zM894 827h1v-25h-1zM895 826h1v-25h-1zM896 826h1v-24h-1zM897 827h1v-27h-1zM898 825h1v-25h-1zM899 825h1v-24h-1zM900 826h1v-25h-1zM901 825h1v-25h-1zM902 825h1v-26h-1zM903 825h4v-24h-4zM907 823h1v-23h-1zM908 824h1v-24h-1zM909 824h1v-22h-1zM910 822h1v-22h-1zM911 823h1v-23h-1zM912 822h1v-21h-1zM913 823h1v-23h-1zM914 824h1v-24h-1zM915 823h2v-22h-2zM917 824h1v-23h-1zM918 825h2v-24h-2zM920 823h1v-21h-1zM921 825h1v-25h-1zM922 826h2v-24h-2zM924 826h1v-25h-1zM925 827h1v-25h-1zM926 827h1v-27h-1zM927 826h1v-24h-1zM928 845h1v-14h-1zM931 855h1v-7h-1zM932 838h1v-53h-1zM933 824h1v-87h-1zM934 838h1v-53h-1zM935 855h1v-7h-1zM947 847h1v-1h-1zM948 834h1v-3h-1zM949 823h1v-5h-1zM950 813h1v-6h-1zM951 823h1v-5h-1zM952 834h1v-3h-1zM953 847h1v-1h-1zM957 853h1v-2h-1zM958 854h1v-4h-1zM960 851h1v-1h-1zM961 854h1v-4h-1zM962 853h1v-4h-1zM963 854h1v-3h-1zM964 853h1v-3h-1zM965 854h1v-3h-1zM966 854h1v-4h-1zM967 854h1v-3h-1zM968 849h1v-3h-1zM970 851h1v-7h-1zM971 853h1v-11h-1zM972 852h1v-1h-1zM973 854h1v-4h-1zM974 854h1v-6h-1zM975 854h1v-10h-1zM976 851h1v-5h-1zM977 853h1v-3h-1zM978 854h1v-4h-1zM979 854h1v-9h-1zM981 853h1v-6h-1zM982 854h1v-1h-1zM983 854h1v-7h-1zM990 854h1v-8h-1zM991 854h1v-19h-1zM992 854h1v-8h-1zM993 854h1v-1h-1zM994 842h1v-13h-1zM995 830h1v-20h-1zM996 842h1v-13h-1zM997 855h1v-2h-1zM1001 855h1v-11h-1zM1002 851h1v-22h-1zM1003 842h1v-26h-1zM1004 805h1v-1h-1zM1005 845h1v-32h-1zM1006 831h1v-3h-1zM1007 855h1v-10h-1zM1008 846h1v-15h-1zM1009 825h1v-16h-1zM1010 846h1v-15h-1zM1011 855h1v-30h-1zM1012 846h1v-55h-1zM1013 855h1v-30h-1zM1015 855h1v-25h-1zM1016 855h1v-49h-1zM1017 854h1v-24h-1zM1063 855h2v-1h-2zM1065 851h1v-1h-1zM1066 851h1v-4h-1zM1068 855h1v-11h-1zM1069 843h1v-2h-1zM1070 840h1v-2h-1zM1071 842h1v-25h-1zM1072 821h1v-29h-1zM1073 831h1v-14h-1zM1074 854h1v-23h-1zM1075 855h1v-22h-1zM1076 855h1v-20h-1zM1077 854h1v-19h-1zM1078 832h1v-1h-1zM1079 855h1v-20h-1zM1080 855h1v-22h-1zM1081 854h1v-21h-1zM1082 855h1v-28h-1zM1083 832h1v-3h-1zM1084 854h1v-26h-1zM1085 854h1v-18h-1zM1086 855h1v-23h-1zM1087 834h1v-3h-1zM1088 854h1v-19h-1zM1089 834h1v-1h-1zM1090 854h1v-23h-1zM1092 855h1v-18h-1zM1098 854h1v-8h-1zM1099 842h1v-12h-1zM1100 833h1v-24h-1zM1101 817h1v-30h-1zM1102 824h1v-19h-1zM1103 824h1v-16h-1zM1104 832h1v-17h-1zM1105 832h1v-10h-1zM1106 851h1v-5h-1zM1107 855h1v-10h-1zM1108 854h1v-3h-1zM1110 854h1v-2h-1zM1111 853h1v-1h-1zM1112 861h1v-6h-1zM1114 853h1v-1h-1zM1115 852h2v-1h-2zM1117 855h1v-5h-1zM1118 854h1v-6h-1zM1119 855h1v-8h-1zM1120 855h1v-5h-1zM1121 854h1v-4h-1zM1122 855h1v-4h-1zM1123 850h1v-3h-1zM1124 861h1v-6h-1zM1135 849h1v-16h-1zM1136 838h1v-34h-1zM1137 838h1v-33h-1zM1138 839h1v-34h-1zM1139 837h1v-32h-1zM1140 838h1v-35h-1zM1141 837h1v-32h-1zM1142 850h1v-18h-1zM1156 847h1v-14h-1zM1157 847h1v-12h-1zM1158 844h1v-7h-1zM1159 847h1v-10h-1zM1160 845h1v-17h-1zM1161 841h1v-12h-1zM1162 840h1v-3h-1zM1163 844h1v-10h-1zM1164 836h1v-7h-1zM1165 831h1v-4h-1zM1166 845h1v-8h-1zM1167 845h1v-10h-1zM1168 835h1v-4h-1zM1169 836h1v-1h-1zM1170 843h1v-9h-1zM1171 840h1v-2h-1zM1172 840h1v-3h-1zM1173 839h1v-5h-1zM1174 841h1v-3h-1zM1175 835h1v-3h-1zM1176 842h1v-8h-1zM1177 844h1v-6h-1zM1178 834h1v-1h-1zM1179 842h1v-5h-1zM1180 846h1v-9h-1zM1181 841h1v-1h-1zM1182 845h1v-9h-1zM1183 846h1v-6h-1zM1184 841h1v-5h-1zM1185 843h1v-13h-1zM1186 844h1v-4h-1zM1187 842h1v-7h-1zM1188 841h1v-9h-1zM1189 845h1v-9h-1zM1190 844h1v-15h-1zM1191 840h1v-6h-1zM1192 846h1v-13h-1zM1193 841h1v-11h-1zM1194 844h1v-12h-1zM1195 834h1v-4h-1zM1196 830h1v-1h-1zM1197 834h1v-4h-1zM1198 841h1v-6h-1zM1199 837h1v-6h-1zM1200 847h1v-12h-1zM1201 846h1v-12h-1zM1202 844h1v-8h-1zM1203 845h1v-10h-1zM1204 844h1v-5h-1zM1205 843h1v-2h-1zM1206 845h1v-3h-1zM1211 855h1v-15h-1zM1212 855h1v-43h-1zM1213 855h1v-15h-1zM1244 854h1v-16h-1zM1245 849h1v-35h-1zM1246 847h1v-33h-1zM1247 854h1v-16h-1zM1283 855h1v-3h-1zM1284 854h1v-17h-1zM1285 854h1v-2h-1zM1304 855h1v-5h-1zM1305 855h1v-20h-1zM1306 855h1v-5h-1zM1317 854h1v-3h-1zM1318 855h1v-13h-1zM1319 855h1v-22h-1zM1320 855h1v-14h-1zM1321 854h1v-2h-1zM1355 849h1v-3h-1zM1356 837h1v-6h-1zM1357 823h1v-7h-1zM1358 813h1v-10h-1zM1359 811h1v-9h-1zM1360 812h1v-9h-1zM1361 813h1v-9h-1zM1362 812h2v-10h-2zM1364 812h1v-9h-1zM1365 812h1v-10h-1zM1366 811h1v-8h-1zM1367 811h1v-7h-1zM1368 812h1v-8h-1zM1369 811h1v-7h-1zM1370 812h1v-10h-1zM1371 813h1v-9h-1zM1372 811h1v-10h-1zM1373 812h1v-11h-1zM1374 811h1v-7h-1zM1375 812h1v-9h-1zM1376 811h1v-7h-1zM1377 813h1v-10h-1zM1378 812h1v-10h-1zM1379 813h1v-12h-1zM1380 813h1v-10h-1zM1381 811h1v-8h-1zM1382 813h1v-9h-1zM1383 813h1v-11h-1zM1384 811h1v-9h-1zM1385 825h1v-8h-1zM1386 837h1v-5h-1zM1387 849h1v-3h-1zM1388 861h1v-6h-1zM1389 854h1v-8h-1zM1424 848h1v-4h-1zM1425 835h1v-9h-1zM1426 848h1v-4h-1zM1445 861h1v-2h-1zM1446 855h1v-5h-1zM1447 861h1v-2h-1zM1460 855h1v-7h-1zM1461 854h1v-22h-1zM1462 855h1v-7h-1zM1468 844h1v-1h-1zM1469 828h1v-2h-1zM1470 814h1v-3h-1zM1471 828h1v-2h-1zM1472 844h1v-1h-1zM1473 819h1v-3h-1zM1474 776h1v-5h-1zM1475 777h1v-7h-1zM1476 776h1v-4h-1zM1477 777h1v-6h-1zM1478 775h1v-5h-1zM1479 818h1v-2h-1zM2311 854h1v-8h-1zM2312 855h1v-32h-1zM2313 854h1v-8h-1zM2314 854h1v-1h-1zM2315 854h1v-24h-1zM2316 855h1v-2h-1zM2317 855h1v-19h-1zM2318 843h1v-46h-1zM2319 855h1v-19h-1zM2321 830h1v-14h-1zM2322 849h1v-103h-1zM2323 855h1v-39h-1zM2325 861h1v-5h-1zM2326 854h1v-3h-1zM2327 855h1v-9h-1zM2328 855h1v-8h-1zM2329 855h1v-9h-1zM2330 854h1v-7h-1zM2331 854h1v-8h-1zM2332 848h1v-30h-1zM2333 798h1v-11h-1zM2334 761h1v-4h-1zM2335 761h1v-5h-1zM2336 763h1v-9h-1zM2337 764h1v-9h-1zM2338 768h1v-15h-1zM2339 800h1v-9h-1zM2340 831h1v-5h-1zM2345 855h1v-10h-1zM2346 855h1v-13h-1zM2347 855h1v-10h-1zM2348 854h1v-13h-1zM2349 855h1v-13h-1zM2350 854h1v-16h-1zM2351 854h1v-20h-1zM2352 854h1v-14h-1zM2359 848h1v-6h-1zM2360 854h1v-28h-1zM2361 854h1v-45h-1zM2362 855h1v-41h-1zM2363 855h1v-40h-1zM2364 854h1v-39h-1zM2365 855h1v-22h-1zM2366 855h1v-7h-1zM2371 833h1v-7h-1zM2372 806h2v-15h-2zM2374 808h1v-17h-1zM2375 810h1v-19h-1zM2376 810h1v-20h-1zM2377 810h1v-18h-1zM2378 811h1v-20h-1zM2379 811h1v-21h-1zM2380 837h1v-10h-1zM2385 816h1v-10h-1zM2386 770h2v-20h-2zM2388 772h1v-23h-1zM2389 772h1v-22h-1zM2390 772h1v-23h-1zM2391 770h2v-20h-2zM2393 772h1v-23h-1zM2394 816h1v-11h-1zM2398 845h1v-27h-1zM2399 831h1v-54h-1zM2400 829h1v-45h-1zM2401 832h1v-45h-1zM2402 831h1v-43h-1zM2403 847h1v-21h-1zM2407 854h1v-13h-1zM2408 854h1v-53h-1zM2409 855h1v-14h-1zM2410 855h1v-38h-1zM2411 855h1v-106h-1zM2412 855h1v-38h-1zM2417 837h1v-13h-1zM2418 811h1v-23h-1zM2419 810h1v-21h-1zM2420 810h1v-23h-1zM2421 809h1v-21h-1zM2422 811h1v-24h-1zM2423 810h1v-23h-1zM2424 808h1v-21h-1zM2425 808h1v-20h-1zM2426 807h2v-18h-2zM2428 807h1v-19h-1zM2429 804h1v-16h-1zM2430 804h1v-15h-1zM2431 803h1v-14h-1zM2432 802h1v-13h-1zM2433 803h2v-15h-2zM2435 801h1v-13h-1zM2436 801h1v-12h-1zM2437 801h1v-13h-1zM2438 831h1v-7h-1zM2443 847h1v-4h-1zM2444 854h1v-25h-1zM2445 854h1v-20h-1zM2446 854h1v-8h-1zM2447 854h1v-12h-1zM2448 854h1v-4h-1zM2449 855h1v-5h-1zM2450 854h1v-12h-1zM2451 855h1v-5h-1zM2452 855h1v-3h-1zM2453 855h1v-28h-1zM2454 855h1v-3h-1zM2455 861h1v-6h-1zM2456 854h1v-10h-1zM2457 861h1v-6h-1zM2470 854h1v-13h-1zM2471 855h1v-1h-1zM2477 855h1v-11h-1zM2478 851h1v-29h-1zM2479 852h1v-11h-1zM2480 841h1v-23h-1zM2481 852h1v-11h-1zM2482 852h1v-5h-1zM2483 844h1v-8h-1zM2484 852h1v-5h-1zM2487 854h1v-5h-1zM2488 827h1v-41h-1zM2489 798h1v-59h-1zM2490 827h1v-41h-1zM2491 855h1v-6h-1zM2492 854h1v-6h-1zM2493 838h1v-25h-1zM2494 811h1v-60h-1zM2495 831h1v-33h-1zM2496 842h1v-14h-1zM2499 839h1v-2h-1zM2500 855h1v-27h-1zM2501 854h1v-25h-1zM2502 832h1v-5h-1zM2503 834h1v-5h-1zM2504 846h1v-4h-1zM2505 855h1v-4h-1zM2509 855h1v-41h-1zM2510 854h1v-101h-1zM2511 854h1v-40h-1zM2513 853h1v-1h-1zM2514 845h2v-2h-2zM2516 843h2v-1h-2zM2518 846h1v-2h-1zM2520 845h1v-4h-1zM2521 845h1v-3h-1zM2522 846h1v-5h-1zM2523 843h1v-1h-1zM2524 846h1v-4h-1zM2525 844h1v-3h-1zM2526 846h1v-6h-1zM2527 844h1v-4h-1zM2528 844h1v-10h-1zM2529 846h1v-10h-1zM2530 846h1v-13h-1zM2531 844h1v-15h-1zM2532 844h1v-14h-1zM2533 843h1v-14h-1zM2534 844h1v-14h-1zM2535 843h1v-14h-1zM2536 843h2v-13h-2zM2538 843h1v-15h-1zM2539 843h1v-14h-1zM2540 845h1v-16h-1zM2541 844h1v-15h-1zM2542 845h1v-15h-1zM2543 845h1v-16h-1zM2544 846h1v-18h-1zM2545 845h1v-13h-1zM2546 845h1v-14h-1zM2547 844h1v-13h-1zM2548 844h1v-8h-1zM2549 844h1v-7h-1zM2550 845h1v-10h-1zM2551 845h1v-9h-1zM2552 845h1v-8h-1zM2553 844h1v-6h-1zM2554 845h1v-4h-1zM2555 845h1v-2h-1zM2557 845h1v-3h-1zM2558 845h1v-2h-1zM2559 844h1v-3h-1zM2560 846h1v-2h-1zM2561 844h2v-2h-2zM2563 845h1v-1h-1zM2564 843h1v-1h-1zM2565 846h1v-4h-1zM2566 844h1v-2h-1zM2567 844h1v-3h-1zM2568 845h1v-3h-1zM2571 854h1v-3h-1zM2572 852h1v-4h-1zM2573 852h1v-1h-1zM2574 852h1v-4h-1zM2575 852h1v-2h-1zM2576 853h1v-6h-1zM2577 853h1v-5h-1zM2578 855h1v-6h-1zM2579 852h1v-3h-1zM2580 853h1v-3h-1zM2581 853h1v-5h-1zM2582 852h1v-2h-1zM2583 853h1v-4h-1zM2584 858h1v-2h-1zM2587 851h1v-2h-1zM2588 855h1v-40h-1zM2589 854h1v-8h-1zM2590 854h1v-21h-1zM2591 855h1v-34h-1zM2592 854h1v-21h-1zM2593 836h1v-2h-1zM2594 854h1v-39h-1zM2595 854h1v-20h-1zM2596 854h1v-28h-1zM2597 855h1v-16h-1zM2598 854h1v-2h-1zM2599 855h1v-11h-1zM2600 855h1v-3h-1z" fill="#ffc328"/><path d="M583 844h1v-3h-1zM584 831h1v-5h-1zM585 820h1v-7h-1zM586 810h1v-9h-1zM587 820h1v-7h-1zM588 831h1v-5h-1zM589 844h1v-3h-1zM638 854h1v-18h-1zM639 835h1v-32h-1zM640 839h1v-3h-1zM663 855h1v-1h-1zM664 854h1v-2h-1zM665 855h1v-4h-1zM666 855h1v-2h-1zM667 854h1v-3h-1zM668 854h1v-4h-1zM669 854h1v-3h-1zM670 854h1v-2h-1zM671 855h1v-4h-1zM672 854h3v-4h-3zM675 855h2v-5h-2zM677 854h1v-4h-1zM678 854h1v-7h-1zM679 854h1v-4h-1zM680 855h2v-6h-2zM682 854h1v-6h-1zM683 854h1v-7h-1zM684 854h1v-6h-1zM685 855h2v-7h-2zM687 854h1v-6h-1zM688 855h1v-5h-1zM689 854h1v-5h-1zM690 854h1v-4h-1zM691 855h1v-6h-1zM692 855h1v-4h-1zM693 854h2v-3h-2zM695 855h1v-5h-1zM696 855h1v-4h-1zM697 854h1v-4h-1zM698 855h1v-5h-1zM699 855h1v-4h-1zM700 854h1v-4h-1zM701 855h1v-2h-1zM702 854h2v-1h-2zM715 861h1v-5h-1zM716 855h1v-6h-1zM717 859h1v-3h-1zM720 858h1v-4h-1zM721 854h1v-7h-1zM722 858h1v-4h-1zM725 861h1v-1h-1zM726 861h1v-3h-1zM727 861h1v-1h-1zM728 861h1v-2h-1zM729 861h1v-5h-1zM730 861h1v-2h-1zM818 817h1v-7h-1zM819 818h1v-2h-1zM820 807h1v-2h-1zM821 817h1v-15h-1zM822 814h1v-4h-1zM823 810h1v-2h-1zM824 811h2v-2h-2zM826 807h1v-1h-1zM827 798h1v-2h-1zM828 807h1v-10h-1zM829 811h1v-5h-1zM830 819h1v-2h-1zM831 815h1v-4h-1zM832 824h1v-1h-1zM834 815h1v-1h-1zM835 828h1v-6h-1zM836 807h1v-1h-1zM837 807h1v-6h-1zM838 819h1v-4h-1zM839 817h1v-23h-1zM843 855h1v-7h-1zM844 854h1v-19h-1zM845 854h1v-20h-1zM846 855h1v-20h-1zM847 854h2v-19h-2zM849 855h1v-18h-1zM850 855h1v-20h-1zM851 854h2v-17h-2zM853 854h1v-16h-1zM854 854h1v-18h-1zM855 854h1v-19h-1zM856 855h1v-18h-1zM857 855h1v-17h-1zM858 854h2v-18h-2zM860 853h1v-16h-1zM861 853h1v-15h-1zM862 852h1v-14h-1zM863 854h1v-18h-1zM864 852h1v-16h-1zM865 852h1v-15h-1zM866 853h1v-17h-1zM867 852h2v-17h-2zM869 851h1v-16h-1zM870 852h1v-16h-1zM871 851h1v-15h-1zM872 849h1v-12h-1zM873 849h2v-15h-2zM875 849h1v-14h-1zM876 847h1v-13h-1zM877 848h1v-15h-1zM878 846h1v-14h-1zM879 845h1v-10h-1zM880 845h1v-12h-1zM881 844h1v-12h-1zM882 843h1v-12h-1zM883 844h1v-12h-1zM884 841h1v-11h-1zM885 842h1v-12h-1zM886 840h1v-9h-1zM887 839h1v-7h-1zM888 838h1v-8h-1zM889 836h1v-7h-1zM890 836h1v-8h-1zM891 834h1v-5h-1zM892 835h1v-8h-1zM893 833h1v-5h-1zM894 832h1v-5h-1zM895 831h1v-5h-1zM896 829h1v-3h-1zM897 829h1v-2h-1zM898 828h1v-3h-1zM899 829h1v-4h-1zM900 830h1v-4h-1zM901 829h3v-4h-3zM904 831h1v-6h-1zM905 830h1v-5h-1zM906 831h1v-6h-1zM907 832h1v-9h-1zM908 830h2v-6h-2zM910 831h1v-9h-1zM911 830h1v-7h-1zM912 830h1v-8h-1zM913 829h1v-6h-1zM914 829h1v-5h-1zM915 829h1v-6h-1zM916 828h1v-5h-1zM917 829h1v-5h-1zM918 829h1v-4h-1zM919 828h1v-3h-1zM920 828h1v-5h-1zM921 830h1v-5h-1zM922 830h1v-4h-1zM923 832h1v-6h-1zM924 831h1v-5h-1zM925 830h1v-3h-1zM926 832h1v-5h-1zM927 832h1v-6h-1zM928 847h1v-2h-1zM947 846h1v-2h-1zM948 831h1v-3h-1zM949 818h1v-4h-1zM950 807h1v-6h-1zM951 818h1v-4h-1zM952 831h1v-3h-1zM953 846h1v-2h-1zM1004 843h1v-12h-1zM1005 813h1v-6h-1zM1006 850h1v-19h-1zM1010 854h1v-8h-1zM1011 825h1v-7h-1zM1012 854h1v-8h-1zM1063 854h1v-2h-1zM1064 854h1v-6h-1zM1065 855h1v-2h-1zM1066 847h1v-2h-1zM1067 846h1v-4h-1zM1068 840h1v-4h-1zM1069 855h1v-9h-1zM1070 838h1v-7h-1zM1071 855h1v-13h-1zM1072 829h1v-8h-1zM1073 854h1v-21h-1zM1074 831h1v-1h-1zM1075 831h1v-4h-1zM1076 826h1v-4h-1zM1077 828h1v-7h-1zM1078 831h1v-7h-1zM1079 835h1v-5h-1zM1082 827h1v-4h-1zM1083 829h1v-3h-1zM1084 826h1v-2h-1zM1085 824h1v-2h-1zM1086 830h1v-13h-1zM1087 831h1v-5h-1zM1088 834h1v-2h-1zM1089 855h1v-21h-1zM1090 830h1v-2h-1zM1091 836h1v-3h-1zM1092 835h1v-1h-1zM1114 852h1v-2h-1zM1115 847h1v-4h-1zM1116 851h1v-4h-1zM1117 850h1v-8h-1zM1118 842h1v-3h-1zM1120 832h1v-7h-1zM1121 842h1v-15h-1zM1123 846h1v-5h-1zM1124 846h1v-4h-1zM1125 852h1v-1h-1zM1156 824h1v-5h-1zM1157 821h1v-4h-1zM1158 836h1v-13h-1zM1159 818h1v-3h-1zM1161 829h1v-16h-1zM1162 837h1v-12h-1zM1163 818h1v-1h-1zM1164 829h1v-5h-1zM1165 827h1v-4h-1zM1166 817h1v-2h-1zM1167 828h1v-8h-1zM1168 818h1v-7h-1zM1169 835h1v-13h-1zM1170 825h1v-3h-1zM1171 836h1v-12h-1zM1172 827h1v-19h-1zM1173 833h1v-14h-1zM1174 831h1v-19h-1zM1175 832h1v-21h-1zM1176 834h1v-10h-1zM1177 823h1v-11h-1zM1178 820h1v-2h-1zM1179 837h1v-11h-1zM1180 831h1v-7h-1zM1182 825h1v-1h-1zM1183 828h1v-13h-1zM1184 829h1v-16h-1zM1186 831h1v-5h-1zM1187 818h1v-2h-1zM1188 823h1v-4h-1zM1189 823h1v-3h-1zM1190 827h1v-12h-1zM1191 831h1v-15h-1zM1192 825h1v-1h-1zM1193 825h1v-11h-1zM1194 829h1v-19h-1zM1195 814h1v-1h-1zM1196 829h1v-14h-1zM1197 830h1v-8h-1zM1198 817h1v-3h-1zM1199 831h1v-11h-1zM1200 830h1v-5h-1zM1201 829h1v-12h-1zM1202 831h1v-16h-1zM1203 820h1v-1h-1zM1204 834h1v-8h-1zM1205 826h1v-1h-1zM1206 832h1v-2h-1zM1211 840h1v-6h-1zM1212 812h1v-13h-1zM1213 840h1v-6h-1zM1244 861h1v-5h-1zM1245 855h1v-6h-1zM1246 855h1v-8h-1zM1247 861h1v-5h-1zM1266 861h1v-2h-1zM1267 854h1v-7h-1zM1268 861h1v-2h-1zM1276 861h1v-4h-1zM1277 854h1v-3h-1zM1278 855h1v-10h-1zM1279 861h1v-2h-1zM1297 855h1v-12h-1zM1298 855h1v-48h-1zM1299 854h1v-11h-1zM1317 849h1v-4h-1zM1318 838h1v-8h-1zM1319 828h1v-13h-1zM1320 839h1v-9h-1zM1321 850h1v-4h-1zM1322 854h1v-5h-1zM1323 861h1v-1h-1zM1333 854h1v-10h-1zM1355 861h1v-6h-1zM1356 855h1v-7h-1zM1357 854h1v-12h-1zM1358 855h1v-20h-1zM1359 855h1v-21h-1zM1360 854h1v-19h-1zM1361 855h1v-19h-1zM1362 854h1v-18h-1zM1363 855h1v-21h-1zM1364 854h1v-20h-1zM1365 855h1v-21h-1zM1366 855h1v-19h-1zM1367 855h1v-21h-1zM1368 854h1v-20h-1zM1369 855h1v-19h-1zM1370 855h1v-21h-1zM1371 854h2v-19h-2zM1373 854h1v-18h-1zM1374 854h1v-20h-1zM1375 854h1v-19h-1zM1376 855h1v-19h-1zM1377 855h1v-20h-1zM1378 854h1v-20h-1zM1379 855h1v-20h-1zM1380 855h1v-19h-1zM1381 854h1v-19h-1zM1382 855h1v-20h-1zM1383 854h1v-18h-1zM1384 855h1v-19h-1zM1385 854h1v-12h-1zM1386 854h1v-7h-1zM1387 861h1v-6h-1zM1424 855h1v-7h-1zM1425 855h1v-20h-1zM1426 854h1v-6h-1zM1468 855h1v-11h-1zM1469 854h1v-26h-1zM1470 854h1v-40h-1zM1471 855h1v-27h-1zM1472 855h1v-11h-1zM1473 830h1v-11h-1zM1474 798h1v-22h-1zM1475 797h1v-20h-1zM1476 797h1v-21h-1zM1477 797h1v-20h-1zM1478 797h1v-22h-1zM1479 829h1v-11h-1zM2316 853h1v-10h-1zM2317 836h1v-19h-1zM2318 854h1v-11h-1zM2325 849h1v-4h-1zM2326 840h1v-13h-1zM2327 834h1v-24h-1zM2328 837h1v-28h-1zM2329 841h1v-35h-1zM2330 844h1v-39h-1zM2331 846h1v-42h-1zM2332 818h1v-17h-1zM2333 853h1v-55h-1zM2334 854h1v-58h-1zM2335 854h1v-62h-1zM2336 854h1v-64h-1zM2337 854h1v-66h-1zM2338 854h1v-65h-1zM2339 854h1v-40h-1zM2340 854h1v-16h-1zM2345 845h1v-5h-1zM2346 842h1v-7h-1zM2347 845h1v-14h-1zM2348 841h1v-7h-1zM2349 842h1v-11h-1zM2350 838h1v-4h-1zM2351 834h1v-2h-1zM2352 840h1v-12h-1zM2359 842h1v-4h-1zM2360 825h1v-10h-1zM2361 798h1v-6h-1zM2362 814h1v-21h-1zM2363 815h1v-20h-1zM2364 815h1v-17h-1zM2365 821h1v-2h-1zM2366 844h1v-3h-1zM2371 851h1v-18h-1zM2372 835h1v-29h-1zM2373 829h1v-23h-1zM2374 825h1v-17h-1zM2375 818h1v-8h-1zM2376 819h1v-9h-1zM2377 827h1v-17h-1zM2378 836h1v-25h-1zM2379 843h1v-32h-1zM2380 855h1v-18h-1zM2385 846h1v-10h-1zM2386 824h1v-14h-1zM2387 816h1v-6h-1zM2388 809h1v-2h-1zM2389 855h1v-47h-1zM2390 854h1v-45h-1zM2391 855h1v-45h-1zM2392 812h1v-3h-1zM2393 817h1v-6h-1zM2394 841h1v-5h-1zM2398 851h1v-6h-1zM2399 840h1v-9h-1zM2400 841h1v-12h-1zM2401 839h1v-7h-1zM2402 841h1v-10h-1zM2403 850h1v-3h-1zM2417 854h1v-12h-1zM2418 855h1v-33h-1zM2419 854h2v-32h-2zM2421 855h1v-32h-1zM2422 855h2v-33h-2zM2424 855h1v-32h-1zM2425 854h1v-32h-1zM2426 854h1v-31h-1zM2427 855h1v-33h-1zM2428 854h1v-31h-1zM2429 855h1v-31h-1zM2430 855h1v-33h-1zM2431 855h1v-32h-1zM2432 854h1v-31h-1zM2433 855h1v-32h-1zM2434 854h1v-32h-1zM2435 854h1v-31h-1zM2436 855h1v-32h-1zM2437 854h1v-30h-1zM2438 855h1v-13h-1zM2443 854h1v-7h-1zM2444 829h1v-17h-1zM2445 833h1v-64h-1zM2446 834h1v-22h-1zM2447 842h1v-1h-1zM2449 850h1v-8h-1zM2450 842h1v-15h-1zM2451 850h1v-8h-1zM2452 852h1v-4h-1zM2453 827h1v-12h-1zM2454 852h1v-4h-1zM2455 855h1v-1h-1zM2456 844h1v-2h-1zM2457 855h1v-1h-1zM2478 854h1v-2h-1zM2479 855h1v-3h-1zM2480 855h1v-14h-1zM2481 855h1v-3h-1zM2482 854h1v-2h-1zM2483 855h1v-11h-1zM2484 854h1v-2h-1zM2488 854h1v-2h-1zM2489 855h1v-10h-1zM2490 854h1v-2h-1zM2494 848h1v-3h-1zM2495 855h1v-24h-1zM2496 843h1v-1h-1zM2497 827h1v-2h-1zM2498 826h1v-1h-1zM2499 837h1v-49h-1zM2500 821h1v-69h-1zM2501 817h1v-65h-1zM2502 818h1v-65h-1zM2503 821h1v-68h-1zM2504 839h1v-51h-1zM2505 850h1v-25h-1zM2513 854h1v-1h-1zM2514 847h1v-2h-1zM2515 855h1v-10h-1zM2516 845h1v-2h-1zM2517 847h1v-4h-1zM2518 855h1v-9h-1zM2519 846h1v-2h-1zM2520 846h1v-1h-1zM2521 848h1v-3h-1zM2522 855h1v-9h-1zM2523 847h1v-4h-1zM2524 847h1v-1h-1zM2525 848h1v-4h-1zM2526 854h1v-8h-1zM2527 848h2v-4h-2zM2529 847h2v-1h-2zM2531 845h2v-1h-2zM2533 846h1v-3h-1zM2534 848h1v-4h-1zM2535 846h1v-3h-1zM2536 845h2v-2h-2zM2538 846h1v-3h-1zM2539 845h1v-2h-1zM2540 847h1v-2h-1zM2541 847h1v-3h-1zM2542 846h1v-1h-1zM2543 848h1v-3h-1zM2544 847h1v-1h-1zM2545 846h1v-1h-1zM2546 848h1v-3h-1zM2547 846h3v-2h-3zM2550 847h1v-2h-1zM2551 848h1v-3h-1zM2552 847h1v-2h-1zM2553 846h1v-2h-1zM2554 847h1v-2h-1zM2555 848h1v-3h-1zM2556 848h1v-5h-1zM2557 854h1v-8h-1zM2558 855h1v-10h-1zM2559 847h1v-3h-1zM2560 844h1v-1h-1zM2561 847h1v-3h-1zM2562 845h1v-1h-1zM2563 844h1v-1h-1zM2564 845h1v-2h-1zM2565 847h1v-1h-1zM2566 846h1v-2h-1zM2567 845h1v-1h-1zM2568 848h1v-3h-1zM2569 854h1v-2h-1zM2585 855h1v-4h-1zM2586 855h1v-18h-1zM2587 855h1v-4h-1zM2589 846h1v-2h-1zM2590 833h1v-5h-1zM2591 821h1v-6h-1zM2592 833h1v-5h-1zM2593 855h1v-11h-1z" fill="#00aadc"/><path d="M528 861h3v-6h-3zM531 861h1v-7h-1zM532 861h4v-6h-4zM536 861h3v-7h-3zM539 860h1v-5h-1zM540 855h1v-1h-1zM541 861h1v-7h-1zM542 861h1v-6h-1zM543 860h1v-6h-1zM544 861h1v-41h-1zM545 861h1v-72h-1zM546 857h1v-37h-1zM547 861h1v-6h-1zM548 857h1v-21h-1zM549 850h1v-63h-1zM550 844h1v-96h-1zM551 850h1v-63h-1zM552 857h1v-21h-1zM553 861h1v-6h-1zM554 861h2v-7h-2zM556 861h3v-6h-3zM559 861h6v-7h-6zM565 861h2v-6h-2zM567 861h1v-7h-1zM568 861h6v-6h-6zM574 861h5v-7h-5zM579 861h3v-6h-3zM582 861h1v-7h-1zM583 861h2v-6h-2zM585 861h1v-7h-1zM586 861h1v-6h-1zM587 861h3v-7h-3zM590 861h2v-6h-2zM592 861h3v-7h-3zM595 861h1v-15h-1zM596 861h2v-7h-2zM598 861h1v-6h-1zM599 861h2v-7h-2zM601 861h1v-12h-1zM602 861h1v-7h-1zM603 861h4v-6h-4zM607 861h1v-7h-1zM608 861h1v-6h-1zM609 861h2v-7h-2zM611 861h3v-6h-3zM614 861h1v-7h-1zM615 861h1v-9h-1zM616 861h1v-20h-1zM617 861h1v-18h-1zM618 861h1v-14h-1zM619 861h1v-23h-1zM620 861h1v-14h-1zM621 861h1v-17h-1zM622 861h1v-10h-1zM623 861h1v-21h-1zM624 854h1v-2h-1zM625 861h3v-7h-3zM628 861h2v-6h-2zM630 861h1v-7h-1zM631 861h6v-6h-6zM637 861h3v-7h-3zM640 861h1v-6h-1zM641 861h5v-7h-5zM646 861h2v-6h-2zM648 861h3v-7h-3zM651 861h2v-6h-2zM653 861h1v-7h-1zM654 861h1v-6h-1zM655 861h4v-7h-4zM659 861h1v-6h-1zM660 861h1v-7h-1zM661 861h1v-6h-1zM662 861h1v-7h-1zM663 861h1v-6h-1zM664 861h1v-7h-1zM665 861h2v-6h-2zM667 861h4v-7h-4zM671 861h1v-6h-1zM672 861h3v-7h-3zM675 861h2v-6h-2zM677 861h3v-7h-3zM680 861h2v-6h-2zM682 861h3v-7h-3zM685 861h2v-6h-2zM687 861h1v-7h-1zM688 861h1v-6h-1zM689 861h2v-7h-2zM691 861h2v-6h-2zM693 861h2v-7h-2zM695 861h2v-6h-2zM697 861h1v-7h-1zM698 861h2v-6h-2zM700 861h1v-7h-1zM701 861h1v-6h-1zM702 861h2v-7h-2zM704 861h3v-6h-3zM707 861h1v-7h-1zM708 861h1v-6h-1zM709 861h3v-7h-3zM712 855h1v-1h-1zM713 861h2v-6h-2zM715 856h1v-2h-1zM717 856h1v-2h-1zM718 861h2v-6h-2zM721 861h1v-6h-1zM723 861h1v-7h-1zM724 861h1v-6h-1zM725 856h4v-1h-4zM730 856h1v-2h-1zM731 861h2v-7h-2zM733 855h3v-1h-3zM740 855h1v-1h-1zM741 861h1v-6h-1zM742 855h1v-1h-1zM744 855h1v-1h-1zM745 856h1v-1h-1zM746 855h1v-1h-1zM748 855h1v-1h-1zM749 861h4v-6h-4zM754 861h1v-6h-1zM755 855h1v-1h-1zM756 861h1v-6h-1zM761 861h2v-6h-2zM763 855h4v-1h-4zM768 855h1v-1h-1zM780 855h2v-1h-2zM782 861h1v-6h-1zM783 855h1v-1h-1zM785 855h1v-1h-1zM786 861h2v-6h-2zM788 855h1v-1h-1zM789 861h1v-6h-1zM792 855h1v-1h-1zM794 861h1v-6h-1zM795 855h2v-1h-2zM800 855h1v-1h-1zM803 855h1v-1h-1zM807 855h1v-1h-1zM809 861h1v-7h-1zM810 861h4v-6h-4zM814 861h2v-7h-2zM816 861h2v-6h-2zM818 861h2v-7h-2zM820 861h3v-6h-3zM823 861h1v-7h-1zM824 861h2v-6h-2zM826 861h1v-7h-1zM827 861h1v-6h-1zM828 861h1v-7h-1zM829 861h2v-6h-2zM831 861h2v-7h-2zM833 861h2v-6h-2zM835 861h1v-7h-1zM836 861h2v-6h-2zM838 861h2v-7h-2zM840 861h2v-6h-2zM842 861h1v-7h-1zM843 859h1v-4h-1zM844 857h1v-3h-1zM845 856h1v-2h-1zM847 856h2v-2h-2zM850 856h1v-1h-1zM851 856h1v-2h-1zM852 855h1v-1h-1zM854 855h1v-1h-1zM855 856h1v-2h-1zM857 856h1v-1h-1zM859 855h1v-1h-1zM860 861h5v-6h-5zM865 861h2v-7h-2zM867 861h1v-6h-1zM868 861h1v-7h-1zM869 861h1v-6h-1zM870 861h5v-7h-5zM875 861h1v-6h-1zM876 861h1v-7h-1zM877 861h2v-6h-2zM879 861h2v-7h-2zM881 861h2v-6h-2zM883 861h1v-7h-1zM884 861h1v-6h-1zM885 861h1v-7h-1zM886 861h2v-6h-2zM888 861h4v-7h-4zM892 861h1v-6h-1zM893 861h2v-7h-2zM895 861h1v-6h-1zM896 861h1v-7h-1zM897 861h1v-6h-1zM898 861h2v-7h-2zM900 861h6v-6h-6zM906 861h1v-7h-1zM907 861h1v-6h-1zM908 861h1v-7h-1zM909 861h2v-6h-2zM911 861h1v-7h-1zM912 861h1v-6h-1zM913 861h1v-7h-1zM914 861h1v-6h-1zM915 861h2v-7h-2zM917 861h1v-6h-1zM918 861h3v-7h-3zM921 861h1v-6h-1zM922 861h5v-7h-5zM927 861h2v-6h-2zM929 861h1v-7h-1zM930 861h1v-6h-1zM931 857h1v-2h-1zM932 861h2v-6h-2zM934 861h1v-7h-1zM935 857h1v-2h-1zM936 861h1v-7h-1zM937 861h1v-6h-1zM938 861h1v-7h-1zM939 861h1v-6h-1zM940 861h1v-7h-1zM941 861h1v-6h-1zM942 861h1v-7h-1zM943 861h2v-6h-2zM945 861h2v-7h-2zM947 861h1v-6h-1zM948 861h1v-7h-1zM949 861h2v-6h-2zM951 861h2v-7h-2zM953 861h3v-6h-3zM956 861h1v-7h-1zM957 856h1v-2h-1zM959 856h1v-2h-1zM962 856h1v-1h-1zM963 861h2v-6h-2zM967 861h1v-6h-1zM968 861h1v-7h-1zM970 855h2v-1h-2zM972 861h1v-7h-1zM973 861h1v-6h-1zM975 861h1v-6h-1zM978 856h1v-1h-1zM981 857h1v-3h-1zM983 856h1v-1h-1zM984 861h1v-7h-1zM985 861h1v-6h-1zM986 861h2v-7h-2zM988 861h1v-6h-1zM989 861h4v-7h-4zM993 856h1v-2h-1zM994 861h2v-7h-2zM996 861h1v-6h-1zM997 856h1v-1h-1zM998 861h4v-6h-4zM1002 861h1v-7h-1zM1003 861h2v-6h-2zM1005 861h1v-7h-1zM1006 861h2v-6h-2zM1008 861h3v-7h-3zM1011 861h1v-6h-1zM1012 861h1v-7h-1zM1013 861h4v-6h-4zM1017 861h1v-7h-1zM1018 861h2v-6h-2zM1020 861h2v-7h-2zM1022 861h2v-6h-2zM1024 861h2v-7h-2zM1026 861h1v-6h-1zM1027 861h1v-7h-1zM1028 861h1v-6h-1zM1029 861h1v-7h-1zM1030 861h2v-6h-2zM1032 861h2v-7h-2zM1034 861h3v-6h-3zM1037 861h1v-7h-1zM1038 861h2v-6h-2zM1040 860h1v-5h-1zM1041 861h1v-7h-1zM1042 860h1v-5h-1zM1043 861h4v-6h-4zM1047 861h1v-7h-1zM1048 861h1v-6h-1zM1049 861h1v-7h-1zM1050 861h1v-6h-1zM1051 861h1v-7h-1zM1052 861h1v-6h-1zM1053 861h2v-7h-2zM1055 861h1v-6h-1zM1056 861h1v-7h-1zM1057 861h1v-6h-1zM1058 861h2v-7h-2zM1060 861h3v-6h-3zM1064 856h1v-1h-1zM1065 861h2v-6h-2zM1067 861h1v-7h-1zM1068 861h5v-6h-5zM1073 861h2v-7h-2zM1075 861h2v-6h-2zM1077 861h2v-7h-2zM1079 861h2v-6h-2zM1081 861h1v-7h-1zM1082 861h2v-6h-2zM1084 861h2v-7h-2zM1086 861h1v-6h-1zM1087 861h2v-7h-2zM1089 861h1v-6h-1zM1090 861h2v-7h-2zM1092 861h1v-6h-1zM1093 861h2v-7h-2zM1095 861h1v-6h-1zM1096 861h1v-7h-1zM1097 861h1v-6h-1zM1098 857h1v-2h-1zM1099 861h1v-7h-1zM1100 861h1v-6h-1zM1101 861h1v-7h-1zM1102 861h2v-6h-2zM1104 861h2v-7h-2zM1106 861h2v-6h-2zM1108 861h1v-7h-1zM1109 861h1v-6h-1zM1110 861h1v-7h-1zM1111 861h1v-6h-1zM1112 855h1v-1h-1zM1113 861h1v-6h-1zM1115 861h1v-7h-1zM1116 861h2v-6h-2zM1118 861h1v-7h-1zM1119 861h2v-6h-2zM1121 861h1v-7h-1zM1122 861h2v-6h-2zM1125 861h1v-7h-1zM1126 861h1v-6h-1zM1127 861h1v-7h-1zM1128 861h2v-6h-2zM1130 861h1v-7h-1zM1131 861h1v-6h-1zM1132 861h4v-7h-4zM1136 861h3v-6h-3zM1139 861h10v-7h-10zM1149 861h2v-6h-2zM1151 861h1v-7h-1zM1152 861h3v-6h-3zM1155 861h1v-7h-1zM1156 861h3v-6h-3zM1159 861h2v-7h-2zM1161 861h1v-6h-1zM1162 861h1v-7h-1zM1163 861h1v-6h-1zM1164 861h1v-7h-1zM1165 861h2v-6h-2zM1167 861h2v-7h-2zM1169 861h1v-6h-1zM1170 861h1v-7h-1zM1171 861h2v-6h-2zM1173 861h3v-7h-3zM1176 861h5v-6h-5zM1181 861h4v-7h-4zM1185 861h4v-6h-4zM1189 861h1v-7h-1zM1190 861h1v-6h-1zM1191 861h2v-7h-2zM1193 861h2v-6h-2zM1195 861h1v-7h-1zM1196 861h1v-6h-1zM1197 861h1v-7h-1zM1198 861h4v-6h-4zM1202 861h1v-7h-1zM1203 861h2v-6h-2zM1205 861h1v-7h-1zM1206 861h2v-6h-2zM1208 861h1v-7h-1zM1209 861h1v-6h-1zM1210 861h1v-7h-1zM1211 861h3v-6h-3zM1214 861h1v-7h-1zM1215 861h3v-6h-3zM1218 861h2v-7h-2zM1220 861h1v-6h-1zM1221 861h1v-7h-1zM1222 861h1v-6h-1zM1223 861h2v-7h-2zM1225 861h2v-6h-2zM1227 861h1v-7h-1zM1228 861h1v-6h-1zM1229 861h1v-7h-1zM1230 861h1v-6h-1zM1231 861h2v-7h-2zM1233 861h1v-6h-1zM1234 861h1v-7h-1zM1235 861h1v-6h-1zM1236 860h1v-5h-1zM1237 861h1v-7h-1zM1238 860h1v-6h-1zM1239 861h2v-7h-2zM1241 861h2v-6h-2zM1243 861h1v-7h-1zM1244 856h1v-2h-1zM1245 861h2v-6h-2zM1247 856h1v-2h-1zM1248 861h1v-7h-1zM1249 861h1v-6h-1zM1250 861h1v-7h-1zM1251 858h1v-3h-1zM1252 861h1v-7h-1zM1253 858h1v-4h-1zM1254 861h2v-7h-2zM1256 861h2v-6h-2zM1258 861h2v-7h-2zM1260 861h2v-6h-2zM1262 861h4v-7h-4zM1266 859h1v-4h-1zM1267 861h1v-7h-1zM1268 859h1v-5h-1zM1269 861h6v-7h-6zM1275 861h1v-6h-1zM1276 857h1v-2h-1zM1277 861h1v-7h-1zM1278 861h1v-6h-1zM1279 859h1v-4h-1zM1280 861h1v-7h-1zM1281 861h3v-6h-3zM1284 861h5v-7h-5zM1289 861h1v-6h-1zM1290 861h3v-7h-3zM1293 861h2v-6h-2zM1295 861h2v-7h-2zM1297 861h2v-6h-2zM1299 861h3v-7h-3zM1302 861h1v-6h-1zM1303 861h1v-7h-1zM1304 861h3v-6h-3zM1307 861h1v-7h-1zM1308 861h2v-6h-2zM1310 861h3v-7h-3zM1313 856h1v-1h-1zM1314 861h1v-7h-1zM1315 856h1v-2h-1zM1316 861h1v-6h-1zM1317 861h1v-7h-1zM1318 861h3v-6h-3zM1321 861h2v-7h-2zM1323 860h1v-6h-1zM1324 861h2v-7h-2zM1326 861h1v-6h-1zM1327 861h2v-7h-2zM1329 861h1v-6h-1zM1330 861h1v-7h-1zM1331 861h2v-6h-2zM1333 861h1v-7h-1zM1334 861h1v-6h-1zM1335 861h4v-7h-4zM1339 861h3v-6h-3zM1342 861h1v-7h-1zM1343 861h1v-6h-1zM1344 861h1v-7h-1zM1345 861h1v-6h-1zM1346 861h1v-7h-1zM1347 861h1v-6h-1zM1348 861h1v-7h-1zM1349 861h1v-6h-1zM1350 861h1v-7h-1zM1351 861h1v-6h-1zM1352 861h2v-7h-2zM1354 861h1v-6h-1zM1356 861h1v-6h-1zM1357 861h1v-7h-1zM1358 861h2v-6h-2zM1360 861h1v-7h-1zM1361 861h1v-6h-1zM1362 861h1v-7h-1zM1363 861h1v-6h-1zM1364 861h1v-7h-1zM1365 861h3v-6h-3zM1368 861h1v-7h-1zM1369 861h2v-6h-2zM1371 861h5v-7h-5zM1376 861h2v-6h-2zM1378 861h1v-7h-1zM1379 861h2v-6h-2zM1381 861h1v-7h-1zM1382 861h1v-6h-1zM1383 861h1v-7h-1zM1384 861h1v-6h-1zM1385 861h2v-7h-2zM1387 855h2v-1h-2zM1389 861h1v-7h-1zM1390 861h1v-6h-1zM1391 861h1v-7h-1zM1392 861h1v-6h-1zM1393 861h3v-7h-3zM1396 861h2v-6h-2zM1398 861h1v-7h-1zM1399 861h1v-6h-1zM1400 859h1v-5h-1zM1401 861h1v-6h-1zM1402 859h1v-4h-1zM1403 861h3v-6h-3zM1406 856h1v-2h-1zM1407 861h1v-6h-1zM1408 856h1v-1h-1zM1409 861h2v-6h-2zM1411 861h6v-7h-6zM1417 861h1v-6h-1zM1418 861h2v-7h-2zM1420 861h2v-6h-2zM1422 861h2v-7h-2zM1424 861h2v-6h-2zM1426 861h3v-7h-3zM1429 861h3v-6h-3zM1432 861h1v-7h-1zM1433 861h2v-6h-2zM1435 861h2v-7h-2zM1437 861h3v-6h-3zM1440 859h1v-5h-1zM1441 861h1v-6h-1zM1442 859h1v-4h-1zM1443 861h2v-6h-2zM1445 859h1v-4h-1zM1446 861h1v-6h-1zM1447 859h1v-5h-1zM1448 861h1v-7h-1zM1449 861h3v-6h-3zM1452 861h3v-7h-3zM1455 861h2v-6h-2zM1457 861h3v-7h-3zM1460 861h1v-6h-1zM1461 861h1v-7h-1zM1462 861h3v-6h-3zM1465 861h1v-7h-1zM1466 861h1v-6h-1zM1467 861h1v-7h-1zM1468 861h1v-6h-1zM1469 861h2v-7h-2zM1471 861h2v-6h-2zM1473 861h4v-7h-4zM1477 861h2v-6h-2zM1479 861h1v-7h-1zM1480 861h1v-6h-1zM1481 861h5v-7h-5zM1486 861h1v-6h-1zM1487 861h3v-7h-3zM1490 861h2v-6h-2zM1492 861h1v-7h-1zM1493 861h1v-6h-1zM1494 861h1v-7h-1zM1495 861h2v-6h-2zM1497 861h3v-7h-3zM1500 861h7v-6h-7zM1507 861h2v-7h-2zM1509 861h1v-6h-1zM1510 861h2v-7h-2zM1512 861h2v-6h-2zM1514 861h1v-7h-1zM1515 861h1v-6h-1zM1516 861h3v-7h-3zM1519 861h2v-6h-2zM1521 861h1v-7h-1zM1522 861h5v-6h-5zM1527 861h1v-7h-1zM1528 861h5v-6h-5zM1533 861h4v-7h-4zM1537 861h1v-6h-1zM1538 861h8v-7h-8zM1546 861h1v-6h-1zM1547 861h1v-7h-1zM1548 861h2v-6h-2zM1550 861h1v-7h-1zM1551 861h1v-6h-1zM1552 861h1v-7h-1zM1553 861h3v-6h-3zM1556 861h1v-7h-1zM1557 861h2v-6h-2zM1559 861h3v-7h-3zM1562 861h4v-6h-4zM1566 861h3v-7h-3zM1569 861h1v-6h-1zM1570 861h4v-7h-4zM1574 861h2v-6h-2zM1576 861h5v-7h-5zM1581 861h1v-6h-1zM1582 861h2v-7h-2zM1584 861h1v-6h-1zM1585 861h3v-7h-3zM1588 861h2v-6h-2zM1590 861h2v-7h-2zM1592 861h3v-6h-3zM1595 861h1v-7h-1zM1596 861h3v-6h-3zM1599 861h1v-7h-1zM1600 861h1v-6h-1zM1601 861h2v-7h-2zM1603 861h1v-6h-1zM1604 861h1v-7h-1zM1605 861h2v-6h-2zM1607 861h1v-7h-1zM1608 861h2v-6h-2zM1610 861h1v-7h-1zM1611 861h1v-6h-1zM1612 861h1v-7h-1zM1613 861h3v-6h-3zM1616 861h1v-7h-1zM1617 861h1v-6h-1zM1618 861h4v-7h-4zM1622 861h1v-6h-1zM1623 861h1v-7h-1zM1624 861h3v-6h-3zM1627 861h2v-7h-2zM1629 861h2v-6h-2zM1631 861h3v-7h-3zM1634 861h1v-6h-1zM1635 861h1v-7h-1zM1636 861h1v-6h-1zM1637 861h1v-7h-1zM1638 861h3v-6h-3zM1641 861h1v-7h-1zM1642 861h1v-6h-1zM1643 861h2v-7h-2zM1645 861h3v-6h-3zM1648 861h1v-7h-1zM1649 861h8v-6h-8zM1657 861h1v-7h-1zM1658 861h1v-6h-1zM1659 861h1v-7h-1zM1660 861h9v-6h-9zM1669 861h1v-7h-1zM1670 861h2v-6h-2zM1672 861h1v-7h-1zM1673 861h4v-6h-4zM1677 861h1v-7h-1zM1678 861h3v-6h-3zM1681 861h3v-7h-3zM1684 861h2v-6h-2zM1686 861h3v-7h-3zM1689 861h1v-6h-1zM1690 861h3v-7h-3zM1693 861h2v-6h-2zM1695 861h1v-7h-1zM1696 861h3v-6h-3zM1699 861h1v-7h-1zM1700 861h1v-6h-1zM1701 861h2v-7h-2zM1703 861h1v-6h-1zM1704 861h1v-7h-1zM1705 861h1v-6h-1zM1706 861h7v-7h-7zM1713 861h3v-6h-3zM1716 861h2v-7h-2zM1718 861h1v-6h-1zM1719 861h6v-7h-6zM1725 861h1v-6h-1zM1726 861h1v-7h-1zM1727 861h3v-6h-3zM1730 861h4v-7h-4zM1734 861h1v-6h-1zM1735 861h1v-7h-1zM1736 861h1v-6h-1zM1737 861h6v-7h-6zM1743 861h1v-6h-1zM1744 861h3v-7h-3zM1747 861h1v-6h-1zM1748 861h3v-7h-3zM1751 861h1v-6h-1zM1752 861h2v-7h-2zM1754 861h1v-6h-1zM1755 861h1v-7h-1zM1756 861h2v-6h-2zM1758 861h1v-7h-1zM1759 861h1v-6h-1zM1760 861h1v-7h-1zM1761 861h1v-6h-1zM1762 861h1v-7h-1zM1763 861h4v-6h-4zM1767 861h1v-7h-1zM1768 861h2v-6h-2zM1770 861h1v-7h-1zM1771 861h4v-6h-4zM1775 861h1v-7h-1zM1776 861h3v-6h-3zM1779 861h2v-7h-2zM1781 861h2v-6h-2zM1783 861h1v-7h-1zM1784 861h3v-6h-3zM1787 861h1v-7h-1zM1788 861h1v-6h-1zM1789 861h2v-7h-2zM1791 861h2v-6h-2zM1793 861h2v-7h-2zM1795 861h1v-6h-1zM1796 861h1v-7h-1zM1797 861h2v-6h-2zM1799 861h4v-7h-4zM1803 861h2v-6h-2zM1805 861h2v-7h-2zM1807 861h1v-6h-1zM1808 861h1v-7h-1zM1809 861h1v-6h-1zM1810 861h1v-7h-1zM1811 861h1v-6h-1zM1812 861h2v-7h-2zM1814 861h1v-6h-1zM1815 861h3v-7h-3zM1818 861h2v-6h-2zM1820 861h1v-7h-1zM1821 861h2v-6h-2zM1823 861h1v-7h-1zM1824 861h5v-6h-5zM1829 861h2v-7h-2zM1831 861h6v-6h-6zM1837 861h5v-7h-5zM1842 861h3v-6h-3zM1845 861h3v-7h-3zM1848 861h1v-6h-1zM1849 861h1v-7h-1zM1850 861h4v-6h-4zM1854 861h2v-7h-2zM1856 861h1v-6h-1zM1857 861h2v-7h-2zM1859 861h1v-6h-1zM1860 861h1v-7h-1zM1861 861h1v-6h-1zM1862 861h2v-7h-2zM1864 861h1v-6h-1zM1865 861h1v-7h-1zM1866 861h3v-6h-3zM1869 861h1v-7h-1zM1870 861h2v-6h-2zM1872 861h5v-7h-5zM1877 861h1v-6h-1zM1878 861h1v-7h-1zM1879 861h3v-6h-3zM1882 861h2v-7h-2zM1884 861h4v-6h-4zM1888 861h2v-7h-2zM1890 861h3v-6h-3zM1893 861h1v-7h-1zM1894 861h1v-6h-1zM1895 861h2v-7h-2zM1897 861h4v-6h-4zM1901 861h3v-7h-3zM1904 861h1v-6h-1zM1905 861h5v-7h-5zM1910 861h3v-6h-3zM1913 861h2v-7h-2zM1915 861h1v-6h-1zM1916 861h1v-7h-1zM1917 861h4v-6h-4zM1921 861h1v-7h-1zM1922 861h1v-6h-1zM1923 861h3v-7h-3zM1926 861h1v-6h-1zM1927 861h2v-7h-2zM1929 861h1v-6h-1zM1930 861h2v-7h-2zM1932 861h1v-6h-1zM1933 861h1v-7h-1zM1934 861h4v-6h-4zM1938 861h5v-7h-5zM1943 861h2v-6h-2zM1945 861h4v-7h-4zM1949 861h1v-6h-1zM1950 861h1v-7h-1zM1951 861h2v-6h-2zM1953 861h1v-7h-1zM1954 861h8v-6h-8zM1962 861h1v-7h-1zM1963 861h3v-6h-3zM1966 861h2v-7h-2zM1968 861h2v-6h-2zM1970 861h1v-7h-1zM1971 861h1v-6h-1zM1972 861h1v-7h-1zM1973 861h3v-6h-3zM1976 861h4v-7h-4zM1980 861h3v-6h-3zM1983 861h2v-7h-2zM1985 861h3v-6h-3zM1988 861h1v-7h-1zM1989 861h3v-6h-3zM1992 861h1v-7h-1zM1993 861h1v-6h-1zM1994 861h3v-7h-3zM1997 861h2v-6h-2zM1999 861h1v-7h-1zM2000 861h2v-6h-2zM2002 861h2v-7h-2zM2004 861h1v-6h-1zM2005 861h2v-7h-2zM2007 861h3v-6h-3zM2010 861h1v-7h-1zM2011 861h1v-6h-1zM2012 861h1v-7h-1zM2013 861h1v-6h-1zM2014 861h3v-7h-3zM2017 861h2v-6h-2zM2019 861h3v-7h-3zM2022 861h1v-6h-1zM2023 861h2v-7h-2zM2025 861h3v-6h-3zM2028 861h1v-7h-1zM2029 861h3v-6h-3zM2032 861h1v-7h-1zM2033 861h2v-6h-2zM2035 861h1v-7h-1zM2036 861h1v-6h-1zM2037 861h1v-7h-1zM2038 861h2v-6h-2zM2040 861h1v-7h-1zM2041 861h3v-6h-3zM2044 861h3v-7h-3zM2047 861h3v-6h-3zM2050 861h2v-7h-2zM2052 861h1v-6h-1zM2053 861h2v-7h-2zM2055 861h3v-6h-3zM2058 861h1v-7h-1zM2059 861h4v-6h-4zM2063 861h3v-7h-3zM2066 861h1v-6h-1zM2067 861h2v-7h-2zM2069 861h1v-6h-1zM2070 861h1v-7h-1zM2071 861h1v-6h-1zM2072 861h1v-7h-1zM2073 861h1v-6h-1zM2074 861h1v-7h-1zM2075 861h1v-6h-1zM2076 861h2v-7h-2zM2078 861h1v-6h-1zM2079 861h2v-7h-2zM2081 861h3v-6h-3zM2084 861h1v-7h-1zM2085 861h1v-6h-1zM2086 861h1v-7h-1zM2087 861h1v-6h-1zM2088 861h1v-7h-1zM2089 861h3v-6h-3zM2092 861h2v-7h-2zM2094 861h2v-6h-2zM2096 861h1v-7h-1zM2097 861h2v-6h-2zM2099 861h5v-7h-5zM2104 861h1v-6h-1zM2105 861h1v-7h-1zM2106 861h1v-6h-1zM2107 861h1v-7h-1zM2108 861h4v-6h-4zM2112 861h1v-7h-1zM2113 861h3v-6h-3zM2116 861h1v-7h-1zM2117 861h1v-6h-1zM2118 861h1v-7h-1zM2119 861h2v-6h-2zM2121 861h4v-7h-4zM2125 861h4v-6h-4zM2129 861h1v-7h-1zM2130 861h1v-6h-1zM2131 861h1v-7h-1zM2132 861h1v-6h-1zM2133 861h3v-7h-3zM2136 861h1v-6h-1zM2137 861h1v-7h-1zM2138 861h1v-6h-1zM2139 861h1v-7h-1zM2140 861h2v-6h-2zM2142 861h1v-7h-1zM2143 861h2v-6h-2zM2145 861h2v-7h-2zM2147 861h2v-6h-2zM2149 861h1v-7h-1zM2150 861h5v-6h-5zM2155 861h4v-7h-4zM2159 861h2v-6h-2zM2161 861h3v-7h-3zM2164 861h2v-6h-2zM2166 861h1v-7h-1zM2167 861h1v-6h-1zM2168 861h2v-7h-2zM2170 861h1v-6h-1zM2171 861h1v-7h-1zM2172 861h2v-6h-2zM2174 861h6v-7h-6zM2180 861h1v-6h-1zM2181 861h1v-7h-1zM2182 861h2v-6h-2zM2184 861h1v-7h-1zM2185 861h1v-6h-1zM2186 861h3v-7h-3zM2189 861h2v-6h-2zM2191 861h2v-7h-2zM2193 861h6v-6h-6zM2199 861h1v-7h-1zM2200 861h2v-6h-2zM2202 861h1v-7h-1zM2203 861h4v-6h-4zM2207 861h3v-7h-3zM2210 861h1v-6h-1zM2211 861h1v-7h-1zM2212 861h2v-6h-2zM2214 861h3v-7h-3zM2217 861h1v-6h-1zM2218 861h2v-7h-2zM2220 861h2v-6h-2zM2222 861h3v-7h-3zM2225 861h2v-6h-2zM2227 861h4v-7h-4zM2231 861h1v-6h-1zM2232 861h4v-7h-4zM2236 861h1v-6h-1zM2237 861h5v-7h-5zM2242 861h2v-6h-2zM2244 861h5v-7h-5zM2249 861h5v-6h-5zM2254 861h5v-7h-5zM2259 861h1v-6h-1zM2260 861h1v-7h-1zM2261 861h2v-6h-2zM2263 861h2v-7h-2zM2265 861h2v-6h-2zM2267 861h1v-7h-1zM2268 861h1v-6h-1zM2269 861h1v-7h-1zM2270 861h2v-6h-2zM2272 861h4v-7h-4zM2276 861h1v-6h-1zM2277 861h1v-7h-1zM2278 861h3v-6h-3zM2281 861h1v-7h-1zM2282 861h2v-6h-2zM2284 861h4v-7h-4zM2288 861h1v-6h-1zM2289 861h1v-7h-1zM2290 861h1v-6h-1zM2291 861h1v-7h-1zM2292 861h1v-6h-1zM2293 861h3v-7h-3zM2296 861h2v-6h-2zM2298 861h3v-7h-3zM2301 861h2v-6h-2zM2303 861h1v-7h-1zM2304 861h2v-6h-2zM2306 861h4v-7h-4zM2310 861h1v-6h-1zM2311 861h1v-7h-1zM2312 861h1v-6h-1zM2313 861h3v-7h-3zM2316 861h2v-6h-2zM2318 861h1v-7h-1zM2319 861h1v-6h-1zM2320 861h1v-7h-1zM2321 861h4v-6h-4zM2325 856h1v-2h-1zM2326 861h1v-7h-1zM2327 861h3v-6h-3zM2330 861h4v-7h-4zM2334 855h1v-1h-1zM2335 856h1v-2h-1zM2336 857h1v-3h-1zM2337 860h1v-6h-1zM2338 859h1v-5h-1zM2339 860h1v-6h-1zM2340 861h1v-7h-1zM2341 861h1v-6h-1zM2342 861h2v-7h-2zM2344 861h4v-6h-4zM2348 861h1v-7h-1zM2349 861h1v-6h-1zM2350 861h4v-7h-4zM2354 861h2v-6h-2zM2356 861h1v-7h-1zM2357 861h1v-6h-1zM2358 861h4v-7h-4zM2362 861h2v-6h-2zM2364 861h1v-7h-1zM2365 861h2v-6h-2zM2367 861h2v-7h-2zM2369 861h3v-6h-3zM2372 861h4v-7h-4zM2376 861h1v-6h-1zM2377 861h1v-7h-1zM2378 861h2v-6h-2zM2380 856h1v-1h-1zM2381 861h2v-6h-2zM2383 861h1v-7h-1zM2384 861h6v-6h-6zM2390 861h1v-7h-1zM2391 861h1v-6h-1zM2392 861h1v-7h-1zM2393 861h2v-6h-2zM2395 861h7v-7h-7zM2402 861h1v-6h-1zM2403 861h2v-7h-2zM2405 861h2v-6h-2zM2407 861h2v-7h-2zM2409 861h6v-6h-6zM2415 861h1v-7h-1zM2416 861h1v-6h-1zM2417 861h1v-7h-1zM2418 861h1v-6h-1zM2419 861h2v-7h-2zM2421 861h4v-6h-4zM2425 861h2v-7h-2zM2427 861h1v-6h-1zM2428 861h1v-7h-1zM2429 861h3v-6h-3zM2432 861h1v-7h-1zM2433 861h1v-6h-1zM2434 861h2v-7h-2zM2436 861h1v-6h-1zM2437 861h1v-7h-1zM2438 861h1v-6h-1zM2439 861h2v-7h-2zM2441 861h1v-6h-1zM2442 861h7v-7h-7zM2449 861h1v-6h-1zM2450 861h1v-7h-1zM2451 861h4v-6h-4zM2456 861h1v-7h-1zM2458 861h2v-7h-2zM2460 861h1v-6h-1zM2461 861h3v-7h-3zM2464 861h1v-6h-1zM2465 861h6v-7h-6zM2471 861h3v-6h-3zM2474 861h1v-7h-1zM2475 861h1v-6h-1zM2476 861h1v-7h-1zM2477 857h1v-2h-1zM2478 861h1v-7h-1zM2479 857h1v-2h-1zM2480 861h2v-6h-2zM2482 861h1v-7h-1zM2483 861h1v-6h-1zM2484 861h1v-7h-1zM2485 861h1v-6h-1zM2486 861h3v-7h-3zM2489 861h1v-6h-1zM2490 861h1v-7h-1zM2491 861h1v-6h-1zM2492 861h1v-7h-1zM2493 861h1v-6h-1zM2494 861h1v-7h-1zM2495 861h2v-6h-2zM2497 861h1v-7h-1zM2498 861h3v-6h-3zM2501 861h4v-7h-4zM2505 861h2v-6h-2zM2507 861h1v-7h-1zM2508 861h2v-6h-2zM2510 861h2v-7h-2zM2512 861h1v-6h-1zM2513 861h2v-7h-2zM2515 861h1v-6h-1zM2516 861h2v-7h-2zM2518 861h3v-6h-3zM2521 861h1v-7h-1zM2522 861h2v-6h-2zM2524 861h3v-7h-3zM2527 861h1v-6h-1zM2528 861h1v-7h-1zM2529 861h1v-6h-1zM2530 861h2v-7h-2zM2532 861h3v-6h-3zM2535 861h2v-7h-2zM2537 861h1v-6h-1zM2538 861h3v-7h-3zM2541 861h1v-6h-1zM2542 861h2v-7h-2zM2544 861h1v-6h-1zM2545 861h3v-7h-3zM2548 861h2v-6h-2zM2550 861h1v-7h-1zM2551 861h6v-6h-6zM2557 861h1v-7h-1zM2558 861h2v-6h-2zM2560 861h3v-7h-3zM2563 861h2v-6h-2zM2565 861h4v-7h-4zM2569 861h1v-6h-1zM2570 856h1v-2h-1zM2571 861h2v-6h-2zM2573 861h2v-7h-2zM2575 861h1v-6h-1zM2576 861h2v-7h-2zM2578 861h2v-6h-2zM2580 861h2v-7h-2zM2582 861h1v-6h-1zM2583 861h1v-7h-1zM2584 856h1v-2h-1zM2585 861h4v-6h-4zM2589 861h2v-7h-2zM2591 861h1v-6h-1zM2592 861h1v-7h-1zM2593 861h1v-6h-1zM2594 861h3v-7h-3zM2597 861h1v-6h-1zM2598 861h1v-7h-1zM2599 861h6v-6h-6zM2605 861h1v-7h-1zM2606 861h1v-6h-1zM2607 861h2v-7h-2zM2609 861h1v-6h-1zM2610 861h1v-7h-1zM2611 861h1v-6h-1zM2612 861h1v-7h-1zM2613 861h2v-6h-2zM2615 861h2v-7h-2zM2617 861h3v-6h-3zM2620 861h1v-7h-1zM2621 861h1v-6h-1z" fill="#3c6ef0"/><path d="M624 861h1v-7h-1zM625 854h1v-14h-1zM637 854h1v-19h-1zM638 836h1v-35h-1zM639 854h1v-19h-1zM818 810h1v-16h-1zM819 816h1v-21h-1zM820 820h1v-13h-1zM821 821h1v-4h-1zM822 820h1v-6h-1zM823 803h1v-2h-1zM824 804h1v-2h-1zM825 809h1v-2h-1zM826 813h1v-1h-1zM827 804h1v-6h-1zM828 840h1v-24h-1zM829 803h1v-5h-1zM830 817h1v-11h-1zM831 811h1v-16h-1zM832 800h1v-6h-1zM833 809h1v-12h-1zM834 814h1v-5h-1zM835 809h1v-9h-1zM836 815h1v-8h-1zM837 822h1v-15h-1zM838 829h1v-10h-1zM839 828h1v-2h-1zM2514 854h1v-7h-1zM2516 854h1v-9h-1zM2517 854h1v-7h-1zM2519 855h2v-9h-2zM2521 854h1v-6h-1zM2523 855h1v-8h-1zM2524 854h1v-7h-1zM2525 854h1v-6h-1zM2527 855h1v-7h-1zM2528 854h1v-6h-1zM2529 855h1v-8h-1zM2530 854h1v-7h-1zM2531 854h1v-9h-1zM2532 855h1v-10h-1zM2533 855h1v-9h-1zM2534 855h1v-7h-1zM2535 854h1v-8h-1zM2536 854h1v-9h-1zM2537 855h1v-10h-1zM2538 854h1v-8h-1zM2539 854h1v-9h-1zM2540 854h1v-7h-1zM2541 855h1v-8h-1zM2542 854h1v-8h-1zM2543 854h1v-6h-1zM2544 855h1v-8h-1zM2545 854h1v-8h-1zM2546 854h1v-6h-1zM2547 854h1v-8h-1zM2548 855h2v-9h-2zM2550 854h1v-7h-1zM2551 855h1v-7h-1zM2552 855h1v-8h-1zM2553 855h1v-9h-1zM2554 855h1v-8h-1zM2555 855h2v-7h-2zM2557 846h1v-1h-1zM2559 855h1v-8h-1zM2560 854h1v-8h-1zM2561 854h1v-7h-1zM2562 854h1v-9h-1zM2563 855h2v-10h-2zM2565 854h1v-7h-1zM2566 854h1v-8h-1zM2567 854h1v-9h-1zM2568 854h1v-6h-1zM2569 855h1v-1h-1zM2570 861h1v-5h-1zM2571 855h1v-1h-1zM2572 855h1v-3h-1zM2573 854h2v-2h-2zM2575 855h1v-3h-1zM2576 854h2v-1h-2zM2579 855h1v-3h-1zM2580 854h2v-1h-2zM2582 855h1v-3h-1zM2583 854h1v-1h-1zM2584 861h1v-3h-1z" fill="#6fb35a"/><path d="M818 794h1v-6h-1zM819 795h1v-28h-1zM820 805h1v-25h-1zM821 802h1v-21h-1zM822 810h1v-24h-1zM823 807h1v-4h-1zM824 802h1v-8h-1zM825 807h1v-22h-1zM826 806h1v-28h-1zM827 796h1v-5h-1zM828 797h1v-20h-1zM829 798h1v-2h-1zM830 805h1v-11h-1zM831 795h1v-2h-1zM832 817h1v-17h-1zM833 815h1v-4h-1zM834 816h1v-1h-1zM835 822h1v-6h-1zM836 823h1v-8h-1zM837 801h1v-3h-1zM838 815h1v-6h-1zM839 794h1v-1h-1zM988 855h1v-20h-1zM989 854h1v-53h-1zM990 846h1v-11h-1zM1114 850h1v-7h-1zM1115 843h1v-5h-1zM1116 842h1v-7h-1zM1117 841h1v-3h-1zM1118 834h1v-13h-1zM1119 830h1v-24h-1zM1120 834h1v-2h-1zM1121 827h1v-11h-1zM1122 839h1v-7h-1zM1123 841h1v-20h-1zM1124 842h1v-12h-1zM1125 851h1v-13h-1zM1457 854h1v-24h-1zM1458 854h1v-73h-1zM1459 854h1v-24h-1z" fill="#46b35a"/><path d="M818 844h1v-17h-1zM819 840h1v-20h-1zM820 822h1v-2h-1zM821 825h1v-3h-1zM822 823h1v-2h-1zM823 838h1v-21h-1zM824 837h1v-16h-1zM825 834h1v-12h-1zM826 838h1v-10h-1zM827 834h1v-6h-1zM828 816h1v-2h-1zM829 832h1v-8h-1zM830 840h1v-15h-1zM831 832h1v-2h-1zM832 839h1v-6h-1zM833 838h1v-6h-1zM834 837h1v-7h-1zM835 833h1v-4h-1zM836 855h1v-23h-1zM837 855h1v-18h-1zM839 854h1v-18h-1zM1001 842h1v-9h-1zM1002 821h1v-16h-1zM1003 804h1v-26h-1zM1004 804h1v-25h-1zM1005 801h1v-22h-1zM1006 821h1v-13h-1zM1007 842h1v-8h-1zM1063 861h1v-6h-1zM1066 852h1v-1h-1zM1068 842h1v-2h-1zM1069 841h1v-6h-1zM1072 855h1v-26h-1zM1073 833h1v-2h-1zM1075 827h1v-1h-1zM1076 835h1v-3h-1zM1077 835h1v-7h-1zM1078 854h1v-22h-1zM1079 830h1v-1h-1zM1080 833h1v-8h-1zM1081 833h1v-7h-1zM1082 823h1v-1h-1zM1083 855h1v-23h-1zM1084 828h1v-2h-1zM1085 836h1v-12h-1zM1086 832h1v-2h-1zM1087 854h1v-20h-1zM1088 835h1v-1h-1zM1089 833h1v-1h-1zM1090 831h1v-1h-1zM1091 854h1v-18h-1zM1092 837h1v-2h-1zM1098 861h1v-4h-1zM1099 854h1v-3h-1zM1100 855h1v-13h-1zM1101 854h1v-28h-1zM1102 855h1v-25h-1zM1103 855h1v-17h-1zM1104 854h1v-15h-1zM1105 836h1v-4h-1zM1106 846h1v-11h-1zM1107 845h1v-8h-1zM1108 851h1v-5h-1zM1109 855h1v-6h-1zM1110 852h1v-4h-1zM1111 855h1v-2h-1zM1112 854h1v-3h-1zM1135 854h1v-5h-1zM1136 855h2v-17h-2zM1138 855h1v-16h-1zM1139 854h1v-17h-1zM1140 854h1v-16h-1zM1141 854h1v-17h-1zM1142 854h1v-4h-1zM1156 855h2v-8h-2zM1158 855h1v-11h-1zM1159 854h1v-7h-1zM1160 854h1v-9h-1zM1161 855h1v-14h-1zM1162 854h1v-14h-1zM1163 855h1v-11h-1zM1164 854h1v-11h-1zM1165 855h2v-10h-2zM1167 854h1v-9h-1zM1168 854h1v-11h-1zM1169 855h1v-16h-1zM1170 854h1v-11h-1zM1171 855h2v-15h-2zM1173 854h1v-15h-1zM1174 854h1v-13h-1zM1175 854h1v-9h-1zM1176 855h1v-13h-1zM1177 855h2v-11h-2zM1179 855h1v-13h-1zM1180 855h1v-9h-1zM1181 854h1v-13h-1zM1182 854h1v-9h-1zM1183 854h1v-8h-1zM1184 854h1v-13h-1zM1185 855h1v-12h-1zM1186 855h1v-11h-1zM1187 855h1v-13h-1zM1188 855h1v-14h-1zM1189 854h1v-9h-1zM1190 855h1v-11h-1zM1191 854h1v-14h-1zM1192 854h1v-8h-1zM1193 855h1v-14h-1zM1194 855h1v-11h-1zM1195 854h1v-11h-1zM1196 855h1v-12h-1zM1197 854h1v-9h-1zM1198 855h1v-14h-1zM1199 855h1v-13h-1zM1200 855h1v-8h-1zM1201 855h1v-9h-1zM1202 854h1v-10h-1zM1203 855h1v-10h-1zM1204 855h1v-11h-1zM1205 854h1v-11h-1zM1206 855h1v-10h-1zM2345 840h1v-18h-1zM2346 835h1v-27h-1zM2347 831h1v-21h-1zM2348 834h1v-28h-1zM2349 831h1v-14h-1zM2350 834h1v-22h-1zM2351 832h1v-23h-1zM2352 828h1v-27h-1zM2477 861h1v-4h-1zM2478 852h1v-1h-1zM2479 861h1v-4h-1zM2488 852h1v-3h-1zM2489 845h1v-5h-1zM2490 852h1v-3h-1zM2493 855h1v-17h-1zM2494 854h1v-6h-1zM2496 855h1v-12h-1zM2497 854h1v-27h-1zM2498 850h1v-7h-1zM2500 828h1v-1h-1zM2502 854h1v-22h-1zM2503 854h1v-20h-1zM2504 854h1v-8h-1zM2509 814h1v-6h-1zM2510 753h1v-12h-1zM2511 814h1v-6h-1zM2513 836h1v-31h-1zM2514 810h1v-59h-1zM2515 810h1v-62h-1zM2516 812h1v-60h-1zM2517 813h1v-65h-1zM2518 812h1v-61h-1zM2519 812h1v-63h-1zM2520 811h1v-61h-1zM2521 808h1v-57h-1zM2522 811h1v-60h-1zM2523 809h1v-60h-1zM2524 808h1v-58h-1zM2525 802h1v-53h-1zM2526 794h1v-44h-1zM2527 785h1v-36h-1zM2528 780h1v-30h-1zM2529 772h1v-22h-1zM2530 764h1v-14h-1zM2531 764h1v-15h-1zM2532 765h1v-14h-1zM2533 763h1v-12h-1zM2534 765h1v-14h-1zM2535 764h1v-13h-1zM2536 764h1v-12h-1zM2537 765h3v-16h-3zM2540 764h2v-13h-2zM2542 768h1v-16h-1zM2543 771h1v-23h-1zM2544 773h1v-23h-1zM2545 776h1v-26h-1zM2546 778h1v-28h-1zM2547 782h1v-32h-1zM2548 788h1v-38h-1zM2549 791h1v-41h-1zM2550 798h1v-50h-1zM2551 804h1v-54h-1zM2552 807h1v-57h-1zM2553 809h1v-58h-1zM2554 811h2v-60h-2zM2556 811h1v-59h-1zM2557 809h1v-59h-1zM2558 812h1v-61h-1zM2559 811h1v-60h-1zM2560 812h1v-61h-1zM2561 812h1v-64h-1zM2562 809h1v-60h-1zM2563 810h1v-60h-1zM2564 810h1v-61h-1zM2565 810h1v-62h-1zM2566 812h1v-62h-1zM2567 809h1v-59h-1zM2568 810h1v-61h-1zM2569 837h1v-31h-1zM2570 843h1v-18h-1zM2571 828h2v-37h-2zM2573 826h1v-33h-1zM2574 828h1v-37h-1zM2575 826h1v-32h-1zM2576 828h1v-32h-1zM2577 826h1v-30h-1zM2578 826h1v-33h-1zM2579 828h1v-34h-1zM2580 827h1v-34h-1zM2581 826h1v-33h-1zM2582 826h1v-35h-1zM2583 829h1v-36h-1zM2584 843h1v-18h-1zM2589 836h1v-8h-1zM2590 812h1v-16h-1zM2591 792h1v-23h-1zM2592 812h1v-16h-1zM2593 834h1v-6h-1zM2600 852h1v-6h-1zM2601 855h1v-39h-1zM2602 855h1v-9h-1zM2603 855h1v-22h-1zM2604 855h1v-66h-1zM2605 854h1v-21h-1z" fill="#a5b35a"/><path d="M1002 854h1v-3h-1zM1003 855h1v-13h-1zM1004 855h1v-12h-1zM1005 854h1v-9h-1zM1006 855h1v-5h-1zM1073 817h1v-7h-1zM1074 825h1v-18h-1zM1075 826h1v-37h-1zM1076 822h1v-36h-1zM1077 819h1v-50h-1zM1078 821h1v-47h-1zM1079 824h1v-33h-1zM1080 824h1v-34h-1zM1081 820h1v-47h-1zM1082 815h1v-44h-1zM1083 817h1v-32h-1zM1084 815h1v-41h-1zM1085 808h1v-18h-1zM1086 812h1v-15h-1zM1087 817h1v-27h-1zM1088 823h1v-28h-1zM1089 825h1v-26h-1zM1090 826h1v-31h-1zM1091 830h1v-30h-1zM1092 823h1v-7h-1zM1153 855h1v-39h-1zM1154 855h1v-110h-1zM1155 854h1v-38h-1zM1156 833h1v-2h-1zM1157 835h1v-7h-1zM1158 837h1v-1h-1zM1159 837h1v-2h-1zM1160 828h1v-2h-1zM1163 834h1v-5h-1zM1164 843h1v-7h-1zM1165 845h1v-14h-1zM1166 837h1v-11h-1zM1167 835h1v-7h-1zM1168 843h1v-8h-1zM1169 839h1v-3h-1zM1170 834h1v-9h-1zM1171 838h1v-2h-1zM1172 837h1v-10h-1zM1173 834h1v-1h-1zM1174 838h1v-7h-1zM1175 845h1v-10h-1zM1176 824h1v-2h-1zM1177 838h1v-15h-1zM1178 844h1v-10h-1zM1179 826h1v-4h-1zM1180 837h1v-6h-1zM1181 840h1v-15h-1zM1182 836h1v-11h-1zM1183 840h1v-12h-1zM1184 836h1v-7h-1zM1185 830h1v-5h-1zM1186 840h1v-9h-1zM1187 835h1v-13h-1zM1188 832h1v-9h-1zM1189 836h1v-13h-1zM1190 829h1v-2h-1zM1191 834h1v-3h-1zM1192 833h1v-8h-1zM1193 830h1v-5h-1zM1194 832h1v-3h-1zM1195 843h1v-9h-1zM1196 843h1v-13h-1zM1197 845h1v-11h-1zM1198 835h1v-7h-1zM1199 842h1v-5h-1zM1200 835h1v-5h-1zM1201 834h1v-5h-1zM1202 836h1v-5h-1zM1203 835h1v-7h-1zM1204 839h1v-5h-1zM1205 841h1v-15h-1zM1206 842h1v-10h-1z" fill="#874040"/><path d="M528.5 860.3H2621.8" stroke="#e8a030" stroke-width="1"/><path d="M528.5 861.4H2621.8" stroke="#c030d0" stroke-width="0.9"/><path d="M555 895h1v-3h-1zM556 895h1v-6h-1zM557 895h1v-3h-1zM564 895h1v-10h-1zM565 895h1v-20h-1zM566 895h1v-10h-1zM570 895h1v-4h-1zM571 895h1v-9h-1zM572 895h1v-4h-1zM575 895h1v-15h-1zM576 895h1v-30h-1zM577 895h1v-15h-1zM579 895h1v-3h-1zM580 895h1v-6h-1zM581 895h1v-3h-1zM584 895h1v-10h-1zM585 895h1v-20h-1zM586 895h3v-30h-3zM589 895h1v-20h-1zM590 895h1v-10h-1zM591 895h1v-6h-1zM592 895h1v-3h-1zM593 895h1v-2h-1zM594 895h1v-6h-1zM595 895h1v-2h-1zM621 895h1v-5h-1zM622 895h1v-10h-1zM623 895h1v-5h-1zM632 895h1v-13h-1zM633 895h1v-26h-1zM634 895h1v-13h-1zM647 895h1v-10h-1zM648 895h2v-20h-2zM650 895h1v-10h-1zM660 895h1v-10h-1zM661 895h1v-20h-1zM662 895h46v-30h-46zM708 895h1v-20h-1zM709 895h1v-10h-1zM710 895h1v-20h-1zM711 895h99v-30h-99zM810 895h1v-20h-1zM811 895h1v-10h-1zM814 895h1v-4h-1zM815 895h1v-9h-1zM816 895h1v-4h-1zM841 895h1v-10h-1zM842 895h1v-20h-1zM843 895h85v-30h-85zM928 895h1v-20h-1zM929 895h1v-10h-1zM943 895h1v-10h-1zM944 895h1v-20h-1zM945 895h9v-30h-9zM954 895h2v-15h-2zM956 895h27v-30h-27zM983 895h1v-20h-1zM984 895h1v-10h-1zM992 895h1v-10h-1zM993 895h1v-20h-1zM994 895h2v-30h-2zM996 895h1v-20h-1zM997 895h1v-10h-1zM1016 895h1v-1h-1zM1017 895h1v-4h-1zM1018 895h2v-1h-2zM1020 895h1v-3h-1zM1021 895h1v-5h-1zM1022 895h1v-3h-1zM1023 895h1v-5h-1zM1024 895h1v-10h-1zM1025 895h1v-5h-1zM1026 895h1v-6h-1zM1027 895h1v-10h-1zM1028 895h1v-6h-1zM1030 895h1v-6h-1zM1031 895h1v-14h-1zM1032 895h1v-6h-1zM1033 895h1v-15h-1zM1034 895h1v-7h-1zM1035 895h1v-16h-1zM1036 895h2v-7h-2zM1038 895h1v-18h-1zM1039 895h1v-8h-1zM1040 895h1v-20h-1zM1041 895h1v-9h-1zM1042 895h1v-21h-1zM1043 895h1v-9h-1zM1044 895h1v-22h-1zM1045 895h1v-10h-1zM1046 895h1v-24h-1zM1047 895h1v-11h-1zM1048 895h1v-26h-1zM1049 895h1v-11h-1zM1051 895h1v-4h-1zM1052 895h1v-9h-1zM1053 895h1v-4h-1zM1109 895h1v-6h-1zM1110 895h1v-11h-1zM1111 895h1v-12h-1zM1112 895h1v-5h-1zM1128 895h1v-7h-1zM1129 895h1v-14h-1zM1130 895h1v-7h-1zM1143 895h1v-4h-1zM1144 895h1v-9h-1zM1145 895h1v-4h-1zM1148 895h1v-15h-1zM1149 895h1v-30h-1zM1150 895h1v-15h-1zM1211 895h1v-15h-1zM1212 895h1v-30h-1zM1213 895h1v-15h-1zM1214 895h1v-7h-1zM1216 895h1v-2h-1zM1217 895h1v-6h-1zM1218 895h1v-2h-1zM1219 895h1v-7h-1zM1220 895h1v-2h-1zM1226 895h1v-4h-1zM1227 895h1v-9h-1zM1228 895h1v-4h-1zM1231 895h1v-10h-1zM1232 895h1v-21h-1zM1233 895h1v-10h-1zM1236 895h1v-5h-1zM1237 895h1v-10h-1zM1238 895h1v-5h-1zM1243 895h1v-10h-1zM1244 895h1v-20h-1zM1245 895h8v-30h-8zM1253 895h1v-20h-1zM1254 895h1v-10h-1zM1275 895h1v-10h-1zM1276 895h1v-20h-1zM1277 895h5v-30h-5zM1282 895h1v-20h-1zM1283 895h1v-10h-1zM1289 895h1v-11h-1zM1290 895h1v-24h-1zM1291 895h1v-11h-1zM1292 895h1v-7h-1zM1293 895h1v-3h-1zM1294 895h1v-2h-1zM1295 895h1v-14h-1zM1296 895h1v-23h-1zM1297 895h1v-14h-1zM1298 895h1v-7h-1zM1299 895h1v-14h-1zM1300 895h1v-7h-1zM1301 895h1v-13h-1zM1302 895h1v-23h-1zM1303 895h1v-13h-1zM1304 895h1v-8h-1zM1305 895h1v-27h-1zM1306 895h1v-12h-1zM1307 895h1v-27h-1zM1308 895h1v-12h-1zM1317 895h1v-10h-1zM1318 895h1v-20h-1zM1319 895h1v-30h-1zM1320 895h1v-20h-1zM1321 895h1v-10h-1zM1326 895h1v-9h-1zM1327 895h1v-18h-1zM1328 895h1v-9h-1zM1344 895h1v-4h-1zM1345 895h1v-10h-1zM1346 895h1v-8h-1zM1347 895h1v-4h-1zM1348 895h1v-1h-1zM1349 895h1v-4h-1zM1350 895h1v-7h-1zM1351 895h1v-5h-1zM1352 895h1v-9h-1zM1353 895h1v-5h-1zM1354 895h1v-10h-1zM1355 895h1v-20h-1zM1356 895h37v-30h-37zM1393 895h1v-20h-1zM1394 895h1v-10h-1zM1416 895h1v-10h-1zM1417 895h1v-20h-1zM1418 895h8v-30h-8zM1426 895h1v-20h-1zM1427 895h1v-10h-1zM1435 895h1v-10h-1zM1436 895h1v-20h-1zM1437 895h10v-30h-10zM1447 895h1v-20h-1zM1448 895h1v-10h-1zM1459 895h1v-12h-1zM1460 895h1v-24h-1zM1461 895h1v-12h-1zM1466 895h1v-10h-1zM1467 895h1v-20h-1zM1468 895h10v-30h-10zM1478 895h1v-20h-1zM1479 895h1v-10h-1zM1483 895h1v-10h-1zM1484 895h1v-21h-1zM1485 895h1v-10h-1zM1486 895h1v-6h-1zM1487 895h1v-12h-1zM1488 895h1v-6h-1zM1509 895h1v-13h-1zM1510 895h1v-27h-1zM1511 895h1v-13h-1zM2310 895h1v-7h-1zM2311 895h1v-17h-1zM2312 895h1v-7h-1zM2313 895h1v-11h-1zM2314 895h1v-19h-1zM2315 895h1v-15h-1zM2316 895h1v-28h-1zM2317 895h1v-15h-1zM2318 895h1v-8h-1zM2319 895h1v-17h-1zM2320 895h1v-8h-1zM2321 895h1v-3h-1zM2322 895h1v-11h-1zM2323 895h1v-18h-1zM2324 895h1v-11h-1zM2325 895h1v-10h-1zM2326 895h1v-20h-1zM2327 895h12v-30h-12zM2339 895h1v-20h-1zM2340 895h1v-10h-1zM2353 895h1v-10h-1zM2354 895h1v-20h-1zM2355 895h10v-30h-10zM2365 895h1v-20h-1zM2366 895h1v-10h-1zM2370 895h1v-10h-1zM2371 895h1v-20h-1zM2372 895h7v-30h-7zM2379 895h1v-20h-1zM2380 895h1v-10h-1zM2384 895h1v-10h-1zM2385 895h1v-20h-1zM2386 895h7v-30h-7zM2393 895h1v-20h-1zM2394 895h1v-10h-1zM2398 895h1v-10h-1zM2399 895h1v-20h-1zM2400 895h1v-30h-1zM2401 895h1v-20h-1zM2402 895h1v-10h-1zM2409 895h1v-11h-1zM2410 895h1v-22h-1zM2411 895h1v-11h-1zM2412 895h1v-12h-1zM2413 895h1v-5h-1zM2416 895h1v-10h-1zM2417 895h1v-20h-1zM2418 895h19v-30h-19zM2437 895h1v-20h-1zM2438 895h1v-10h-1zM2444 895h1v-10h-1zM2445 895h1v-20h-1zM2446 895h2v-30h-2zM2448 895h1v-20h-1zM2449 895h1v-10h-1z" fill="#ff80a0"/><path d="M528.5 895.2H2621.8" stroke="#ff80a0" stroke-width="1.4"/><path d="M542.8 898.4h2.3v30.4h-2.3zM546.1 898.4h3.7v30.4h-3.7zM552.1 898.4h4.0v30.4h-4.0zM567.8 898.4h2.3v30.4h-2.3zM600.4 898.4h3.5v30.4h-3.5zM622.5 898.4h3.5v30.4h-3.5zM636.5 898.4h5.4v30.4h-5.4zM815.4 898.4h2.3v30.4h-2.3zM997.1 898.4h2.8v30.4h-2.8zM1011.0 898.4h1.9v30.4h-1.9zM1060.9 898.4h5.4v30.4h-5.4zM1113.5 898.4h6.5v30.4h-6.5zM1114.0 898.4h8.2v30.4h-8.2zM1151.7 898.4h15.4v30.4h-15.4zM1171.0 898.4h2.8v30.4h-2.8zM1206.7 898.4h4.7v30.4h-4.7zM1263.1 898.4h1.9v30.4h-1.9zM1133.8 898.4h1.2v30.4h-1.2zM1456.4 898.4h1.2v30.4h-1.2zM2343.7 898.4h1.2v30.4h-1.2zM2449.6 898.4h3.1v30.4h-3.1zM2455.5 898.4h5.5v30.4h-5.5zM2468.3 898.4h11.4v30.4h-11.4zM2481.6 898.4h1.5v30.4h-1.5zM2485.3 898.4h1.5v30.4h-1.5zM2491.7 898.4h1.2v30.4h-1.2zM2496.8 898.4h1.2v30.4h-1.2zM2507.0 898.4h1.2v30.4h-1.2zM2584.7 898.4h1.3v30.4h-1.3zM2593.4 898.4h8.6v30.4h-8.6z" fill="#f0f000"/><path d="M563.8 898.4h2.3v30.4h-2.3zM570.8 898.4h1.9v30.4h-1.9zM574.0 898.4h5.4v30.4h-5.4zM581.0 898.4h3.7v30.4h-3.7zM592.7 898.4h2.3v30.4h-2.3zM598.0 898.4h1.9v30.4h-1.9zM631.8 898.4h1.9v30.4h-1.9zM645.8 898.4h1.9v30.4h-1.9zM657.9 898.4h2.6v30.4h-2.6zM709.1 898.4h1.6v30.4h-1.6zM747.1 898.4h1.6v30.4h-1.6zM814.0 898.4h1.4v30.4h-1.4zM839.1 898.4h1.9v30.4h-1.9zM930.0 898.4h1.9v30.4h-1.9zM936.5 898.4h2.8v30.4h-2.8zM942.1 898.4h1.9v30.4h-1.9zM953.7 898.4h1.9v30.4h-1.9zM985.4 898.4h2.8v30.4h-2.8zM990.1 898.4h1.6v30.4h-1.6zM1017.3 898.4h10.5v30.4h-10.5zM1029.2 898.4h1.9v30.4h-1.9zM1032.5 898.4h5.1v30.4h-5.1zM1039.0 898.4h2.3v30.4h-2.3zM1042.7 898.4h1.4v30.4h-1.4zM1045.5 898.4h1.4v30.4h-1.4zM1050.2 898.4h1.9v30.4h-1.9zM1110.7 898.4h1.4v30.4h-1.4zM1109.8 898.4h1.4v30.4h-1.4zM1129.1 898.4h1.6v30.4h-1.6zM1143.1 898.4h4.7v30.4h-4.7zM1215.3 898.4h8.2v30.4h-8.2zM1224.6 898.4h2.3v30.4h-2.3zM1227.6 898.4h2.3v30.4h-2.3zM1230.9 898.4h8.4v30.4h-8.4zM1240.9 898.4h1.9v30.4h-1.9zM1285.2 898.4h2.3v30.4h-2.3zM1289.1 898.4h1.4v30.4h-1.4zM1291.5 898.4h1.2v30.4h-1.2zM1295.2 898.4h1.6v30.4h-1.6zM1299.9 898.4h4.0v30.4h-4.0zM1310.8 898.4h1.6v30.4h-1.6zM1314.3 898.4h2.3v30.4h-2.3zM1327.1 898.4h1.6v30.4h-1.6zM1345.1 898.4h1.4v30.4h-1.4zM1348.8 898.4h1.6v30.4h-1.6zM1352.3 898.4h1.6v30.4h-1.6zM1433.6 898.4h1.2v30.4h-1.2zM1451.3 898.4h1.4v30.4h-1.4zM1458.7 898.4h1.9v30.4h-1.9zM1465.2 898.4h1.4v30.4h-1.4zM1482.0 898.4h1.4v30.4h-1.4zM1485.5 898.4h2.1v30.4h-2.1zM1508.8 898.4h1.6v30.4h-1.6zM2312.1 898.4h1.6v30.4h-1.6zM2316.7 898.4h1.6v30.4h-1.6zM2320.3 898.4h1.6v30.4h-1.6zM2324.0 898.4h1.6v30.4h-1.6zM2353.4 898.4h1.6v30.4h-1.6zM2358.9 898.4h1.6v30.4h-1.6zM2370.0 898.4h1.6v30.4h-1.6zM2382.8 898.4h1.6v30.4h-1.6zM2397.9 898.4h1.6v30.4h-1.6zM2405.8 898.4h1.6v30.4h-1.6zM2409.9 898.4h1.6v30.4h-1.6zM2415.0 898.4h1.6v30.4h-1.6zM2443.0 898.4h1.6v30.4h-1.6z" fill="#00f0f0"/><path d="M528.5 929.1H2621.8" stroke="#f0f000" stroke-width="1.1"/><path d="M528.5 932.3H2621.8V949.7H528.5z" fill="#c2c2c2"/><path d="M584.1 932.3h5.8v17.4h-5.8zM639.3 932.3h8.4v17.4h-8.4zM659.8 932.3h45.4v17.4h-45.4zM711.0 932.3h101.3v17.4h-101.3zM818.2 932.3h20.5v17.4h-20.5zM841.0 932.3h89.0v17.4h-89.0zM942.8 932.3h8.2v17.4h-8.2zM955.6 932.3h28.0v17.4h-28.0zM996.4 932.3h18.6v17.4h-18.6zM1116.3 932.3h8.2v17.4h-8.2zM1134.9 932.3h7.0v17.4h-7.0zM1154.0 932.3h51.9v17.4h-51.9zM1243.3 932.3h4.0v17.4h-4.0zM1317.1 932.3h3.7v17.4h-3.7zM1353.9 932.3h33.1v17.4h-33.1zM1435.4 932.3h14.0v17.4h-14.0zM1467.3 932.3h12.8v17.4h-12.8zM2324.9 932.3h15.6v17.4h-15.6zM2345.2 932.3h7.4v17.4h-7.4zM2358.9 932.3h8.3v17.4h-8.3zM2370.9 932.3h10.1v17.4h-10.1zM2384.7 932.3h10.1v17.4h-10.1zM2398.5 932.3h4.6v17.4h-4.6zM2416.9 932.3h22.4v17.4h-22.4zM2443.5 932.3h6.1v17.4h-6.1zM2487.6 932.3h6.4v17.4h-6.4zM2497.8 932.3h9.2v17.4h-9.2zM2513.4 932.3h57.0v17.4h-57.0zM2586.0 932.3h6.4v17.4h-6.4z" fill="#6e6e6e"/><path d="M841.5 939.3h87.8v10.4h-87.8zM992.9 939.3h3.5v10.4h-3.5zM1148.2 939.3h1.2v10.4h-1.2zM1317.1 939.3h3.7v10.4h-3.7zM2384.7 939.3h9.2v10.4h-9.2zM2398.5 939.3h4.6v10.4h-4.6z" fill="#ffa500"/><path d="M1014.3 940.3h1.4v9.4h-1.4zM1070.9 940.3h1.6v9.4h-1.6zM2344.8 940.3h5.0v9.4h-5.0zM2487.6 940.3h2.8v9.4h-2.8zM2498.7 940.3h5.5v9.4h-5.5zM2586.4 940.3h5.1v9.4h-5.1z" fill="#0a8c46"/></svg>
<svg style="left:0;top:0" width="2630" height="1876" shape-rendering="crispEdges"><path d="M528.5 1625.6H2626.5V1656.6H528.5z" fill="#35b3b3"/><path d="M530.5 1626.1h1.6v30.5h-1.6zM533.5 1626.1h1.6v30.5h-1.6zM536.3 1626.1h1.6v30.5h-1.6zM542.8 1626.1h3.3v30.5h-3.3zM554.9 1626.1h1.9v30.5h-1.9zM558.4 1626.1h2.3v30.5h-2.3zM580.1 1626.1h4.0v30.5h-4.0zM586.4 1626.1h2.3v30.5h-2.3zM607.4 1626.1h4.7v30.5h-4.7zM769.2 1626.1h8.9v30.5h-8.9zM782.1 1626.1h11.6v30.5h-11.6zM740.1 1626.1h1.6v30.5h-1.6zM1063.2 1626.1h1.6v30.5h-1.6zM1065.5 1626.1h1.6v30.5h-1.6zM1113.5 1626.1h1.6v30.5h-1.6zM1115.9 1626.1h1.6v30.5h-1.6zM1112.8 1626.1h1.6v30.5h-1.6zM1114.7 1626.1h1.6v30.5h-1.6zM1131.4 1626.1h1.6v30.5h-1.6zM1134.0 1626.1h1.6v30.5h-1.6zM1230.4 1626.1h1.6v30.5h-1.6zM1232.3 1626.1h1.6v30.5h-1.6zM1235.6 1626.1h1.6v30.5h-1.6zM1246.1 1626.1h1.6v30.5h-1.6zM1262.4 1626.1h1.6v30.5h-1.6zM1593.4 1626.1h1.6v30.5h-1.6zM1686.5 1626.1h1.6v30.5h-1.6zM1692.8 1626.1h1.6v30.5h-1.6zM1696.3 1626.1h1.6v30.5h-1.6zM1286.3 1626.1h1.5v30.5h-1.5zM1290.5 1626.1h1.5v30.5h-1.5zM1294.8 1626.1h1.5v30.5h-1.5zM1401.7 1626.1h1.6v30.5h-1.6zM1405.2 1626.1h1.6v30.5h-1.6zM1408.4 1626.1h1.6v30.5h-1.6zM1411.8 1626.1h1.6v30.5h-1.6zM1414.9 1626.1h1.6v30.5h-1.6zM1423.8 1626.1h1.8v30.5h-1.8zM1428.6 1626.1h1.8v30.5h-1.8zM1433.1 1626.1h1.8v30.5h-1.8zM1473.9 1626.1h1.6v30.5h-1.6zM1475.5 1626.1h1.6v30.5h-1.6zM1481.6 1626.1h1.6v30.5h-1.6zM1483.9 1626.1h1.6v30.5h-1.6zM1493.7 1626.1h1.5v30.5h-1.5zM1497.1 1626.1h1.5v30.5h-1.5zM1501.2 1626.1h1.5v30.5h-1.5zM1504.8 1626.1h1.5v30.5h-1.5zM1508.7 1626.1h1.5v30.5h-1.5zM1513.1 1626.1h1.5v30.5h-1.5zM1685.1 1626.1h1.6v30.5h-1.6zM1687.5 1626.1h1.6v30.5h-1.6zM1692.8 1626.1h1.6v30.5h-1.6zM1695.4 1626.1h1.6v30.5h-1.6zM2173.4 1626.1h1.6v30.5h-1.6zM2180.8 1626.1h2.8v30.5h-2.8zM2280.2 1626.1h1.6v30.5h-1.6zM2286.7 1626.1h11.0v30.5h-11.0zM2305.1 1626.1h12.3v30.5h-12.3zM2417.2 1626.1h12.0v30.5h-12.0zM2434.7 1626.1h12.5v30.5h-12.5zM2557.0 1626.1h12.0v30.5h-12.0zM2574.8 1626.1h9.7v30.5h-9.7zM2408.6 1626.1h1.6v30.5h-1.6zM2410.8 1626.1h1.6v30.5h-1.6zM2413.0 1626.1h1.6v30.5h-1.6zM2617.7 1626.1h1.6v30.5h-1.6zM2625.0 1626.1h1.6v30.5h-1.6z" fill="#ffff00"/><path d="M528.0 1625.6L540.0 1625.6L534.0 1651.6zM541.2 1625.6L545.4 1625.6L543.3 1629.9zM552.3 1625.6L555.6 1625.6L554.0 1633.4zM560.9 1625.6L564.3 1625.6L562.6 1630.5zM576.7 1625.6L579.5 1625.6L578.1 1633.4zM583.4 1625.6L588.1 1625.6L585.8 1630.0zM607.2 1625.6L612.2 1625.6L609.7 1632.6zM795.5 1625.6L797.9 1625.6L796.7 1631.6zM921.8 1625.6L924.2 1625.6L923.0 1631.6zM963.7 1625.6L966.1 1625.6L964.9 1631.6zM1061.6 1625.6L1067.6 1625.6L1064.6 1632.6zM1111.0 1625.6L1117.0 1625.6L1114.0 1633.6zM1110.1 1625.6L1113.2 1625.6L1111.6 1631.8zM1228.8 1625.6L1232.1 1625.6L1230.4 1631.7zM1251.4 1625.6L1253.2 1625.6L1252.3 1632.8zM1266.6 1625.6L1269.0 1625.6L1267.8 1630.5zM1288.4 1625.6L1291.5 1625.6L1290.0 1630.2zM1364.3 1625.6L1366.7 1625.6L1365.5 1632.6zM1399.7 1625.6L1403.6 1625.6L1401.7 1635.6zM1407.8 1625.6L1411.2 1625.6L1409.5 1632.1zM1415.7 1625.6L1419.4 1625.6L1417.5 1631.3zM1424.8 1625.6L1428.9 1625.6L1426.8 1631.5zM1431.5 1625.6L1434.9 1625.6L1433.2 1631.7zM1455.0 1625.6L1457.8 1625.6L1456.4 1635.1zM1461.2 1625.6L1464.0 1625.6L1462.6 1634.5zM1476.9 1625.6L1480.1 1625.6L1478.5 1642.6zM1480.8 1625.6L1486.1 1625.6L1483.4 1638.3zM1485.7 1625.6L1489.3 1625.6L1487.5 1646.4zM1490.7 1625.6L1495.7 1625.6L1493.2 1649.4zM1493.4 1625.6L1498.7 1625.6L1496.1 1653.7zM1497.7 1625.6L1500.8 1625.6L1499.3 1654.0zM1500.4 1625.6L1503.8 1625.6L1502.1 1641.9zM1506.0 1625.6L1508.7 1625.6L1507.3 1651.5zM1507.9 1625.6L1512.3 1625.6L1510.1 1643.8zM1511.8 1625.6L1516.9 1625.6L1514.3 1642.5zM1532.1 1625.6L1534.5 1625.6L1533.3 1635.6zM1539.1 1625.6L1541.5 1625.6L1540.3 1633.6zM1563.5 1625.6L1565.9 1625.6L1564.7 1631.6zM1617.1 1625.6L1619.5 1625.6L1618.3 1631.6zM1682.8 1625.6L1686.5 1625.6L1684.7 1632.2zM1693.9 1625.6L1696.9 1625.6L1695.4 1629.9zM1732.9 1625.6L1734.3 1625.6L1733.6 1629.3zM1755.7 1625.6L1757.8 1625.6L1756.8 1629.1zM1790.4 1625.6L1792.3 1625.6L1791.3 1628.3zM1849.0 1625.6L1851.0 1625.6L1850.0 1631.6zM1959.5 1625.6L1961.9 1625.6L1960.7 1630.6zM1967.8 1625.6L1970.8 1625.6L1969.3 1631.6zM2278.6 1625.6L2283.6 1625.6L2281.1 1637.6zM2304.0 1625.6L2308.0 1625.6L2306.0 1630.6zM2175.0 1625.6H2180.8L2179.3 1656.6H2176.5zM2618.2 1625.6H2624.5L2623.0 1656.6H2619.7z" fill="#282828"/><path d="M528.5 1656.8H2626.5" stroke="#d8b020" stroke-width="1.2"/><path d="M568 1784h1v-5h-1zM569 1777h1v-3h-1zM570 1777h1v-8h-1zM571 1777h1v-11h-1zM572 1778h1v-9h-1zM573 1778h1v-4h-1zM574 1784h1v-5h-1zM602 1753h1v-2h-1zM603 1723h1v-6h-1zM604 1754h1v-3h-1zM617 1776h1v-4h-1zM618 1775h1v-2h-1zM619 1775h1v-5h-1zM620 1775h1v-4h-1zM621 1774h1v-3h-1zM622 1776h1v-4h-1zM623 1774h1v-4h-1zM624 1774h1v-2h-1zM625 1773h1v-5h-1zM626 1772h1v-2h-1zM627 1774h1v-4h-1zM628 1777h2v-5h-2zM630 1772h1v-3h-1zM631 1771h1v-2h-1zM632 1778h1v-6h-1zM633 1772h1v-2h-1zM634 1769h2v-2h-2zM636 1772h1v-1h-1zM637 1777h1v-7h-1zM638 1771h1v-1h-1zM639 1770h1v-3h-1zM640 1769h1v-1h-1zM641 1773h1v-5h-1zM642 1777h1v-6h-1zM643 1773h1v-6h-1zM644 1771h1v-3h-1zM645 1773h1v-1h-1zM646 1771h1v-1h-1zM647 1774h1v-2h-1zM648 1772h1v-3h-1zM649 1773h1v-3h-1zM650 1777h1v-5h-1zM651 1772h2v-3h-2zM653 1775h1v-3h-1zM654 1774h1v-3h-1zM655 1775h1v-5h-1zM656 1776h1v-3h-1zM657 1775h1v-4h-1zM658 1776h1v-4h-1zM667 1777h1v-10h-1zM668 1766h1v-32h-1zM669 1757h1v-50h-1zM670 1766h1v-32h-1zM671 1777h1v-10h-1zM675 1777h1v-2h-1zM676 1775h1v-11h-1zM677 1777h1v-2h-1zM678 1777h1v-5h-1zM679 1782h1v-4h-1zM680 1777h1v-4h-1zM681 1768h1v-10h-1zM682 1777h1v-4h-1zM683 1776h1v-8h-1zM684 1781h1v-2h-1zM689 1774h2v-2h-2zM691 1774h1v-4h-1zM692 1775h1v-4h-1zM693 1776h1v-4h-1zM694 1774h1v-3h-1zM695 1776h1v-4h-1zM696 1774h1v-2h-1zM697 1774h1v-1h-1zM698 1774h1v-3h-1zM699 1775h2v-4h-2zM701 1774h1v-1h-1zM702 1775h1v-2h-1zM703 1775h1v-3h-1zM704 1775h1v-4h-1zM705 1774h1v-2h-1zM706 1774h1v-1h-1zM707 1775h1v-2h-1zM708 1774h2v-1h-2zM710 1775h1v-5h-1zM711 1774h1v-2h-1zM712 1774h2v-4h-2zM714 1774h1v-2h-1zM715 1774h1v-4h-1zM716 1775h1v-5h-1zM717 1775h1v-2h-1zM718 1775h2v-3h-2zM720 1775h1v-4h-1zM721 1775h1v-2h-1zM722 1774h1v-2h-1zM723 1775h1v-3h-1zM724 1774h2v-3h-2zM726 1774h1v-4h-1zM727 1774h1v-2h-1zM728 1774h1v-1h-1zM729 1775h1v-5h-1zM730 1775h1v-3h-1zM731 1774h1v-4h-1zM732 1774h1v-1h-1zM733 1774h2v-2h-2zM735 1775h1v-3h-1zM736 1775h1v-5h-1zM737 1774h1v-4h-1zM738 1774h4v-2h-4zM742 1774h1v-1h-1zM743 1775h2v-4h-2zM745 1775h1v-3h-1zM746 1774h1v-2h-1zM747 1775h1v-4h-1zM748 1775h1v-2h-1zM749 1774h1v-2h-1zM750 1775h1v-2h-1zM751 1774h1v-2h-1zM752 1775h2v-4h-2zM754 1775h1v-2h-1zM755 1775h1v-5h-1zM756 1775h2v-3h-2zM758 1774h1v-4h-1zM759 1774h1v-3h-1zM760 1775h1v-3h-1zM761 1776h1v-3h-1zM798 1751h1v-9h-1zM799 1736h1v-1h-1zM800 1754h1v-19h-1zM801 1742h1v-10h-1zM802 1742h1v-7h-1zM803 1730h1v-4h-1zM804 1740h1v-1h-1zM806 1729h1v-4h-1zM807 1724h1v-1h-1zM808 1742h1v-3h-1zM809 1747h1v-14h-1zM811 1728h1v-4h-1zM813 1749h1v-13h-1zM814 1737h1v-4h-1zM815 1749h1v-6h-1zM816 1740h1v-2h-1zM817 1749h1v-6h-1zM818 1756h1v-3h-1zM819 1744h1v-5h-1zM823 1753h1v-20h-1zM824 1721h2v-39h-2zM826 1721h2v-38h-2zM828 1722h1v-39h-1zM829 1721h1v-39h-1zM830 1721h1v-38h-1zM831 1722h1v-40h-1zM832 1720h1v-37h-1zM833 1721h1v-39h-1zM834 1723h1v-41h-1zM835 1723h1v-40h-1zM836 1721h1v-38h-1zM837 1721h1v-39h-1zM838 1722h1v-41h-1zM839 1721h1v-39h-1zM840 1723h1v-40h-1zM841 1721h1v-40h-1zM842 1721h1v-38h-1zM843 1722h2v-39h-2zM845 1723h1v-42h-1zM846 1723h1v-40h-1zM847 1723h2v-42h-2zM849 1722h1v-39h-1zM850 1721h1v-38h-1zM851 1722h2v-41h-2zM853 1723h1v-41h-1zM854 1722h1v-41h-1zM855 1723h1v-40h-1zM856 1722h1v-40h-1zM857 1723h1v-42h-1zM858 1723h1v-41h-1zM859 1722h3v-41h-3zM862 1722h1v-40h-1zM863 1723h1v-40h-1zM864 1724h1v-42h-1zM865 1723h1v-41h-1zM866 1724h1v-41h-1zM867 1724h2v-42h-2zM869 1722h2v-40h-2zM871 1723h1v-40h-1zM872 1724h1v-41h-1zM873 1724h1v-42h-1zM874 1724h1v-41h-1zM875 1722h1v-40h-1zM876 1724h1v-42h-1zM877 1723h1v-40h-1zM878 1724h1v-43h-1zM879 1723h1v-42h-1zM880 1723h1v-41h-1zM881 1725h1v-43h-1zM882 1723h1v-41h-1zM883 1725h1v-43h-1zM884 1725h1v-42h-1zM885 1723h2v-42h-2zM887 1725h1v-42h-1zM888 1723h1v-41h-1zM889 1725h1v-43h-1zM890 1724h1v-41h-1zM891 1725h1v-44h-1zM892 1725h2v-42h-2zM894 1725h1v-44h-1zM895 1724h1v-42h-1zM896 1725h1v-42h-1zM897 1724h2v-42h-2zM899 1725h1v-43h-1zM900 1725h1v-44h-1zM901 1724h1v-43h-1zM902 1723h1v-40h-1zM903 1724h1v-43h-1zM904 1724h2v-42h-2zM906 1724h1v-41h-1zM907 1723h1v-41h-1zM908 1754h1v-21h-1zM938 1779h1v-1h-1zM939 1776h1v-2h-1zM940 1778h2v-1h-2zM942 1784h1v-6h-1zM943 1775h1v-2h-1zM944 1777h1v-1h-1zM945 1778h1v-1h-1zM946 1776h1v-1h-1zM947 1774h1v-2h-1zM948 1776h1v-1h-1zM949 1778h1v-3h-1zM950 1777h1v-1h-1zM951 1784h1v-6h-1zM952 1778h1v-1h-1zM953 1780h1v-3h-1zM954 1784h1v-6h-1zM955 1784h1v-5h-1zM969 1778h1v-4h-1zM970 1753h1v-31h-1zM971 1734h1v-50h-1zM972 1752h1v-30h-1zM973 1778h1v-4h-1zM974 1767h1v-3h-1zM975 1751h1v-9h-1zM976 1731h1v-5h-1zM977 1732h2v-11h-2zM979 1735h1v-11h-1zM980 1736h1v-12h-1zM981 1750h1v-6h-1zM982 1754h1v-23h-1zM983 1778h1v-20h-1zM990 1752h1v-15h-1zM991 1728h1v-26h-1zM992 1752h1v-15h-1zM1010 1777h1v-14h-1zM1013 1778h1v-15h-1zM1016 1777h1v-1h-1zM1017 1778h1v-20h-1zM1018 1778h1v-2h-1zM1019 1778h1v-12h-1zM1020 1784h1v-3h-1zM1024 1762h1v-22h-1zM1025 1731h1v-53h-1zM1026 1762h1v-22h-1zM1028 1762h1v-21h-1zM1029 1732h1v-52h-1zM1030 1762h1v-21h-1zM1031 1763h1v-21h-1zM1032 1734h1v-50h-1zM1033 1763h1v-21h-1zM1034 1763h1v-22h-1zM1035 1732h1v-51h-1zM1036 1763h1v-22h-1zM1038 1764h1v-20h-1zM1039 1736h1v-48h-1zM1040 1764h1v-20h-1zM1041 1762h1v-21h-1zM1042 1732h1v-52h-1zM1043 1762h1v-21h-1zM1045 1764h1v-21h-1zM1046 1735h1v-49h-1zM1047 1764h1v-21h-1zM1048 1762h1v-22h-1zM1049 1731h1v-53h-1zM1050 1762h1v-22h-1zM1052 1766h1v-17h-1zM1053 1742h1v-43h-1zM1054 1766h1v-17h-1zM1055 1769h1v-14h-1zM1056 1749h1v-35h-1zM1057 1769h1v-14h-1zM1067 1784h1v-4h-1zM1068 1778h1v-2h-1zM1069 1777h1v-1h-1zM1070 1777h1v-4h-1zM1071 1778h1v-5h-1zM1072 1774h1v-4h-1zM1073 1778h1v-7h-1zM1074 1778h1v-6h-1zM1075 1766h1v-1h-1zM1076 1741h1v-29h-1zM1077 1716h1v-45h-1zM1078 1741h1v-29h-1zM1079 1759h1v-3h-1zM1080 1751h1v-2h-1zM1081 1751h1v-1h-1zM1082 1754h1v-3h-1zM1083 1745h1v-1h-1zM1084 1759h1v-9h-1zM1085 1748h1v-1h-1zM1086 1751h1v-3h-1zM1087 1745h1v-10h-1zM1088 1744h1v-8h-1zM1089 1746h1v-9h-1zM1090 1742h1v-16h-1zM1091 1745h1v-13h-1zM1092 1749h1v-17h-1zM1093 1748h1v-5h-1zM1094 1758h1v-17h-1zM1095 1755h1v-12h-1zM1096 1758h1v-13h-1zM1100 1765h1v-6h-1zM1101 1745h1v-6h-1zM1102 1749h1v-8h-1zM1103 1754h1v-12h-1zM1104 1753h1v-11h-1zM1105 1755h1v-10h-1zM1106 1760h1v-12h-1zM1107 1763h1v-11h-1zM1108 1766h1v-12h-1zM1109 1777h1v-19h-1zM1110 1767h1v-7h-1zM1111 1777h1v-4h-1zM1120 1777h1v-1h-1zM1121 1774h1v-1h-1zM1122 1777h1v-8h-1zM1124 1769h1v-13h-1zM1125 1769h1v-3h-1zM1126 1770h1v-3h-1zM1127 1769h1v-5h-1zM1128 1774h1v-1h-1zM1129 1778h2v-3h-2zM1141 1756h1v-26h-1zM1142 1728h1v-53h-1zM1143 1730h1v-54h-1zM1144 1730h1v-55h-1zM1145 1730h1v-53h-1zM1146 1728h1v-52h-1zM1147 1757h1v-28h-1zM1161 1743h1v-26h-1zM1162 1733h1v-8h-1zM1163 1740h1v-13h-1zM1164 1741h1v-22h-1zM1165 1741h1v-39h-1zM1166 1739h1v-13h-1zM1167 1741h1v-24h-1zM1168 1737h1v-35h-1zM1169 1725h1v-5h-1zM1170 1728h1v-15h-1zM1171 1738h1v-34h-1zM1172 1729h1v-12h-1zM1173 1741h1v-22h-1zM1174 1725h1v-21h-1zM1175 1734h1v-12h-1zM1176 1733h1v-7h-1zM1177 1738h1v-12h-1zM1178 1724h1v-26h-1zM1179 1737h1v-34h-1zM1180 1733h1v-26h-1zM1181 1728h1v-36h-1zM1182 1740h1v-45h-1zM1183 1736h1v-35h-1zM1184 1734h1v-44h-1zM1185 1737h1v-43h-1zM1186 1741h1v-42h-1zM1187 1734h1v-23h-1zM1188 1735h1v-16h-1zM1189 1738h1v-32h-1zM1190 1735h1v-17h-1zM1191 1724h1v-6h-1zM1192 1732h1v-3h-1zM1193 1735h1v-7h-1zM1194 1730h1v-19h-1zM1195 1736h1v-21h-1zM1196 1738h1v-9h-1zM1197 1733h1v-10h-1zM1198 1733h1v-6h-1zM1199 1730h1v-31h-1zM1200 1740h1v-27h-1zM1201 1725h1v-16h-1zM1202 1731h1v-32h-1zM1203 1736h1v-11h-1zM1204 1732h1v-21h-1zM1205 1728h1v-14h-1zM1206 1733h1v-26h-1zM1207 1734h1v-28h-1zM1208 1738h1v-18h-1zM1209 1739h1v-10h-1zM1210 1738h1v-12h-1zM1236 1784h1v-2h-1zM1237 1777h1v-7h-1zM1238 1784h1v-2h-1zM1241 1784h1v-5h-1zM1242 1777h1v-7h-1zM1243 1784h1v-5h-1zM1248 1778h1v-1h-1zM1249 1762h1v-34h-1zM1250 1739h1v-70h-1zM1251 1740h1v-71h-1zM1252 1738h1v-69h-1zM1253 1761h1v-33h-1zM1270 1766h1v-28h-1zM1271 1758h1v-79h-1zM1272 1772h1v-34h-1zM1279 1770h1v-1h-1zM1280 1756h2v-5h-2zM1282 1758h1v-5h-1zM1283 1756h1v-2h-1zM1306 1765h1v-13h-1zM1307 1747h1v-27h-1zM1308 1725h1v-39h-1zM1309 1727h1v-41h-1zM1310 1726h1v-38h-1zM1311 1728h1v-40h-1zM1312 1726h1v-40h-1zM1313 1727h1v-40h-1zM1314 1728h1v-41h-1zM1315 1727h1v-39h-1zM1316 1726h1v-40h-1zM1317 1727h1v-40h-1zM1318 1725h1v-38h-1zM1319 1725h1v-39h-1zM1320 1728h1v-40h-1zM1321 1726h1v-40h-1zM1322 1726h1v-38h-1zM1323 1726h1v-39h-1zM1324 1725h1v-39h-1zM1325 1728h1v-40h-1zM1326 1728h1v-41h-1zM1327 1727h1v-39h-1zM1328 1728h1v-41h-1zM1329 1727h2v-40h-2zM1331 1727h1v-39h-1zM1332 1726h1v-39h-1zM1333 1728h1v-41h-1zM1334 1728h1v-40h-1zM1335 1725h1v-35h-1zM1336 1728h1v-39h-1zM1337 1727h1v-37h-1zM1338 1728h1v-36h-1zM1339 1746h1v-23h-1zM1340 1765h1v-11h-1zM1356 1778h1v-6h-1zM1357 1778h1v-24h-1zM1358 1777h1v-5h-1zM1371 1778h1v-17h-1zM1372 1766h1v-40h-1zM1373 1778h1v-17h-1zM1382 1777h1v-24h-1zM1383 1778h1v-57h-1zM1384 1777h1v-56h-1zM1385 1777h1v-55h-1zM1386 1777h1v-57h-1zM1387 1777h2v-55h-2zM1389 1778h1v-25h-1zM1543 1771h1v-4h-1zM1544 1753h1v-7h-1zM1545 1733h1v-6h-1zM1546 1728h1v-8h-1zM1547 1735h1v-12h-1zM1548 1759h1v-14h-1zM1549 1774h1v-9h-1zM1571 1773h1v-5h-1zM1572 1770h1v-6h-1zM1573 1763h1v-10h-1zM1574 1763h1v-9h-1zM1575 1757h1v-3h-1zM1576 1768h1v-27h-1zM1577 1765h1v-20h-1zM1578 1770h1v-11h-1zM1579 1773h1v-13h-1zM1624 1775h1v-19h-1zM1625 1764h1v-36h-1zM1626 1762h1v-33h-1zM1627 1761h1v-31h-1zM1628 1760h1v-29h-1zM1629 1758h1v-27h-1zM1630 1756h1v-25h-1zM1631 1756h1v-23h-1zM1632 1754h1v-22h-1zM1633 1753h1v-21h-1zM1634 1750h2v-16h-2zM1636 1749h1v-16h-1zM1637 1747h2v-13h-2zM1639 1745h1v-10h-1zM1640 1745h1v-9h-1zM1641 1743h1v-7h-1zM1642 1742h1v-7h-1zM1643 1742h1v-6h-1zM1644 1742h2v-4h-2zM1646 1741h1v-2h-1zM1647 1740h1v-1h-1zM1648 1777h2v-36h-2zM1650 1778h1v-34h-1zM1651 1777h1v-31h-1zM1652 1749h1v-1h-1zM1653 1751h1v-2h-1zM1654 1752h1v-1h-1zM1655 1777h1v-22h-1zM1656 1778h1v-21h-1zM1657 1777h1v-17h-1zM1658 1777h1v-15h-1zM1659 1778h1v-13h-1zM1660 1769h1v-1h-1zM1661 1778h1v-7h-1zM1662 1773h1v-1h-1zM1663 1778h1v-4h-1zM1664 1784h1v-7h-1zM1665 1784h1v-5h-1zM1666 1780h1v-1h-1zM1667 1784h1v-1h-1zM1707 1764h1v-10h-1zM1708 1736h1v-11h-1zM1709 1737h1v-40h-1zM1710 1738h1v-39h-1zM1711 1737h1v-35h-1zM1712 1737h1v-29h-1zM1713 1755h1v-17h-1zM1714 1769h1v-5h-1zM1757 1778h1v-4h-1zM1758 1777h1v-23h-1zM1759 1777h1v-3h-1zM1768 1777h1v-4h-1zM1769 1778h1v-26h-1zM1770 1778h1v-5h-1zM1779 1771h1v-3h-1zM1780 1756h1v-5h-1zM1781 1736h1v-4h-1zM1782 1766h1v-33h-1zM1783 1769h1v-39h-1zM1784 1771h1v-40h-1zM1785 1772h1v-40h-1zM1786 1773h1v-44h-1zM1787 1777h1v-47h-1zM1788 1776h1v-49h-1zM1789 1777h1v-48h-1zM1790 1778h1v-42h-1zM1791 1777h1v-34h-1zM1792 1778h1v-29h-1zM1793 1777h1v-12h-1zM1794 1778h1v-1h-1zM1803 1758h1v-21h-1zM1804 1737h1v-43h-1zM1805 1759h1v-22h-1zM1819 1756h1v-2h-1zM1820 1750h1v-27h-1zM1821 1756h1v-2h-1zM1826 1761h1v-27h-1zM1827 1738h1v-52h-1zM1828 1741h1v-57h-1zM1829 1739h1v-53h-1zM1830 1743h1v-59h-1zM1831 1744h1v-57h-1zM1832 1744h1v-59h-1zM1833 1742h1v-59h-1zM1834 1743h1v-56h-1zM1835 1741h1v-57h-1zM1836 1742h1v-57h-1zM1837 1743h1v-57h-1zM1838 1739h1v-55h-1zM1839 1742h1v-56h-1zM1840 1761h1v-27h-1zM1847 1778h1v-4h-1zM1848 1776h1v-15h-1zM1849 1771h1v-17h-1zM1850 1760h1v-29h-1zM1851 1771h1v-17h-1zM1852 1767h1v-7h-1zM1853 1752h1v-18h-1zM1854 1732h1v-29h-1zM1855 1697h2v-1h-2zM1857 1705h1v-17h-1zM1858 1704h1v-15h-1zM1859 1708h1v-9h-1zM1860 1714h1v-8h-1zM1861 1718h1v-6h-1zM1862 1742h1v-3h-1zM1863 1765h1v-1h-1zM1867 1776h1v-6h-1zM1868 1770h1v-15h-1zM1869 1777h1v-7h-1zM1870 1776h1v-5h-1zM1871 1755h1v-8h-1zM1872 1777h1v-6h-1zM1876 1777h1v-11h-1zM1877 1767h1v-30h-1zM1878 1777h1v-11h-1zM1879 1756h1v-15h-1zM1880 1719h1v-35h-1zM1881 1756h1v-15h-1zM1882 1728h1v-35h-1zM1883 1763h1v-13h-1zM1885 1763h1v-11h-1zM1886 1743h1v-20h-1zM1887 1737h1v-39h-1zM1888 1770h1v-11h-1zM1889 1777h1v-10h-1zM1890 1769h1v-26h-1zM1891 1777h1v-10h-1zM1894 1765h1v-35h-1zM1895 1746h1v-69h-1zM1896 1746h1v-67h-1zM1897 1745h1v-67h-1zM1898 1747h1v-69h-1zM1899 1746h1v-69h-1zM1900 1745h2v-67h-2zM1902 1746h1v-69h-1zM1903 1760h1v-29h-1zM1909 1763h1v-10h-1zM1910 1762h2v-40h-2zM1912 1760h1v-41h-1zM1913 1761h2v-43h-2zM1915 1758h1v-40h-1zM1916 1760h1v-43h-1zM1917 1757h1v-37h-1zM1918 1758h1v-38h-1zM1919 1760h1v-40h-1zM1920 1760h1v-41h-1zM1921 1759h1v-38h-1zM1922 1760h1v-39h-1zM1923 1763h1v-40h-1zM1924 1762h1v-40h-1zM1925 1764h1v-39h-1zM1926 1764h1v-38h-1zM1927 1765h1v-40h-1zM1928 1765h1v-36h-1zM1929 1763h1v-33h-1zM1930 1761h1v-33h-1zM1931 1761h1v-32h-1zM1932 1762h1v-32h-1zM1933 1762h1v-29h-1zM1934 1760h1v-26h-1zM1935 1766h1v-8h-1zM1956 1774h1v-21h-1zM1957 1766h1v-52h-1zM1958 1774h1v-21h-1zM1976 1762h1v-10h-1zM1977 1752h1v-23h-1zM1978 1757h1v-5h-1zM1979 1750h1v-8h-1zM1980 1733h1v-16h-1zM1981 1729h1v-9h-1zM1982 1726h1v-8h-1zM1983 1729h1v-12h-1zM1984 1733h1v-8h-1zM1985 1732h1v-7h-1zM1986 1752h1v-4h-1zM1987 1754h1v-25h-1zM1988 1772h1v-10h-1zM1998 1778h1v-7h-1zM1999 1781h1v-3h-1zM2011 1777h1v-47h-1zM2012 1771h1v-95h-1zM2013 1769h1v-92h-1zM2014 1768h1v-90h-1zM2015 1768h1v-91h-1zM2016 1768h1v-89h-1zM2017 1768h1v-90h-1zM2018 1766h1v-87h-1zM2019 1767h1v-87h-1zM2020 1764h1v-83h-1zM2021 1762h1v-80h-1zM2022 1762h1v-79h-1zM2023 1761h1v-79h-1zM2024 1761h1v-77h-1zM2025 1761h1v-76h-1zM2026 1758h1v-71h-1zM2027 1759h1v-73h-1zM2028 1757h1v-72h-1zM2029 1760h2v-75h-2zM2031 1759h1v-74h-1zM2032 1759h1v-75h-1zM2033 1760h1v-75h-1zM2034 1760h1v-76h-1zM2035 1759h1v-77h-1zM2036 1760h1v-77h-1zM2037 1758h1v-76h-1zM2038 1760h1v-79h-1zM2039 1759h2v-77h-2zM2041 1760h1v-78h-1zM2042 1756h1v-23h-1zM2078 1778h1v-22h-1zM2079 1777h1v-46h-1zM2080 1777h1v-45h-1zM2081 1778h1v-44h-1zM2082 1777h1v-41h-1zM2083 1778h1v-41h-1zM2084 1777h1v-38h-1zM2085 1777h1v-37h-1zM2086 1778h1v-37h-1zM2087 1778h1v-36h-1zM2088 1778h1v-34h-1zM2089 1778h1v-33h-1zM2090 1778h1v-32h-1zM2091 1778h1v-30h-1zM2092 1777h1v-29h-1zM2093 1778h1v-30h-1zM2094 1778h1v-29h-1zM2095 1777h1v-27h-1zM2096 1778h1v-27h-1zM2097 1778h1v-28h-1zM2098 1771h1v-20h-1zM2099 1761h1v-10h-1zM2100 1752h1v-1h-1zM2101 1777h1v-26h-1zM2102 1778h1v-26h-1zM2103 1777h1v-24h-1zM2104 1778h1v-26h-1zM2105 1777h1v-25h-1zM2106 1777h1v-24h-1zM2107 1778h1v-26h-1zM2108 1778h1v-25h-1zM2109 1777h1v-25h-1zM2110 1778h1v-24h-1zM2111 1778h1v-25h-1zM2112 1777h1v-23h-1zM2113 1777h1v-22h-1zM2114 1757h1v-1h-1zM2115 1764h1v-5h-1zM2116 1778h1v-17h-1zM2117 1778h1v-16h-1zM2118 1777h2v-12h-2zM2120 1777h1v-9h-1zM2121 1778h1v-8h-1zM2122 1778h1v-7h-1zM2123 1778h1v-5h-1zM2124 1777h1v-2h-1zM2125 1778h1v-2h-1zM2126 1778h2v-1h-2zM2128 1784h1v-5h-1zM2129 1784h2v-4h-2zM2131 1784h3v-2h-3zM2134 1784h4v-1h-4zM2139 1784h1v-1h-1zM2144 1784h1v-1h-1zM2157 1775h1v-10h-1zM2158 1763h1v-25h-1zM2159 1775h1v-10h-1zM2162 1784h1v-5h-1zM2163 1778h1v-7h-1zM2164 1784h1v-5h-1zM2170 1752h1v-8h-1zM2171 1721h1v-30h-1zM2172 1757h1v-13h-1zM2184 1767h1v-4h-1zM2185 1753h1v-10h-1zM2186 1729h1v-14h-1zM2187 1727h1v-8h-1zM2188 1726h1v-8h-1zM2189 1722h1v-15h-1zM2190 1715h1v-4h-1zM2191 1708h1v-1h-1zM2192 1727h1v-25h-1zM2193 1723h1v-12h-1zM2194 1730h1v-18h-1zM2195 1736h1v-16h-1zM2196 1735h1v-17h-1zM2197 1734h1v-4h-1zM2198 1756h1v-6h-1zM2199 1769h1v-2h-1zM2212 1772h1v-15h-1zM2213 1753h1v-39h-1zM2214 1770h1v-13h-1zM2215 1754h1v-20h-1zM2216 1770h1v-10h-1zM2220 1777h1v-9h-1zM2221 1744h1v-45h-1zM2222 1777h1v-9h-1zM2226 1777h1v-4h-1zM2227 1772h1v-11h-1zM2228 1778h1v-5h-1zM2229 1773h1v-5h-1zM2230 1753h1v-15h-1zM2231 1773h1v-5h-1zM2240 1767h1v-32h-1zM2241 1751h1v-66h-1zM2242 1749h1v-64h-1zM2243 1746h1v-61h-1zM2244 1742h1v-58h-1zM2245 1738h1v-54h-1zM2246 1735h1v-52h-1zM2247 1732h1v-48h-1zM2248 1725h1v-40h-1zM2249 1721h1v-37h-1zM2250 1716h1v-31h-1zM2251 1711h1v-25h-1zM2252 1705h1v-19h-1zM2253 1742h1v-7h-1zM2260 1702h1v-37h-1zM2261 1707h1v-41h-1zM2262 1711h1v-38h-1zM2263 1710h1v-30h-1zM2264 1712h1v-27h-1zM2271 1758h1v-3h-1zM2272 1736h1v-10h-1zM2273 1712h1v-13h-1zM2274 1713h1v-15h-1zM2275 1715h1v-17h-1zM2276 1718h1v-17h-1zM2277 1720h1v-17h-1zM2278 1722h1v-21h-1zM2279 1735h1v-30h-1zM2280 1760h1v-15h-1zM2319 1750h1v-19h-1zM2320 1714h1v-35h-1zM2321 1715h1v-35h-1zM2322 1715h1v-38h-1zM2323 1715h1v-35h-1zM2324 1715h1v-37h-1zM2325 1715h1v-38h-1zM2326 1716h1v-38h-1zM2327 1716h1v-37h-1zM2328 1716h1v-38h-1zM2329 1749h1v-18h-1zM2333 1759h1v-20h-1zM2334 1734h1v-39h-1zM2335 1732h1v-39h-1zM2336 1728h1v-33h-1zM2337 1722h1v-29h-1zM2338 1721h1v-27h-1zM2339 1727h1v-33h-1zM2340 1731h1v-39h-1zM2341 1735h1v-41h-1zM2342 1759h1v-20h-1zM2346 1742h1v-12h-1zM2347 1705h1v-27h-1zM2348 1708h1v-28h-1zM2349 1711h1v-31h-1zM2350 1749h1v-16h-1zM2363 1747h1v-14h-1zM2364 1712h1v-29h-1zM2365 1711h1v-31h-1zM2366 1711h1v-29h-1zM2367 1710h1v-28h-1zM2368 1711h1v-28h-1zM2369 1711h1v-31h-1zM2370 1710h1v-27h-1zM2371 1712h1v-31h-1zM2372 1710h1v-28h-1zM2373 1712h1v-30h-1zM2374 1712h1v-31h-1zM2375 1711h1v-30h-1zM2376 1710h1v-29h-1zM2377 1711h1v-30h-1zM2378 1710h1v-28h-1zM2379 1711h1v-30h-1zM2380 1710h1v-29h-1zM2381 1711h1v-29h-1zM2382 1711h1v-30h-1zM2383 1712h1v-30h-1zM2384 1711h1v-30h-1zM2385 1710h1v-29h-1zM2386 1747h1v-15h-1zM2398 1774h1v-7h-1zM2399 1756h1v-17h-1zM2400 1774h1v-7h-1zM2407 1774h1v-7h-1zM2408 1755h1v-19h-1zM2409 1774h1v-7h-1zM2461 1773h1v-11h-1zM2462 1745h1v-38h-1zM2463 1773h1v-11h-1zM2472 1772h1v-8h-1zM2473 1735h1v-9h-1zM2474 1775h1v-11h-1zM2475 1770h1v-9h-1zM2476 1752h1v-21h-1zM2477 1770h1v-9h-1zM2494 1763h1v-3h-1zM2495 1742h1v-9h-1zM2496 1741h1v-6h-1zM2497 1741h1v-5h-1zM2498 1741h1v-6h-1zM2499 1740h1v-5h-1zM2500 1743h2v-10h-2zM2502 1742h1v-10h-1zM2503 1743h1v-12h-1zM2504 1741h1v-7h-1zM2505 1741h1v-8h-1zM2506 1744h1v-18h-1zM2507 1744h1v-28h-1zM2508 1743h1v-34h-1zM2509 1740h1v-42h-1zM2510 1742h1v-49h-1zM2511 1742h1v-54h-1zM2512 1740h1v-52h-1zM2513 1743h1v-56h-1zM2514 1741h1v-53h-1zM2515 1743h1v-57h-1zM2516 1744h1v-57h-1zM2517 1743h1v-55h-1zM2518 1741h2v-53h-2zM2520 1740h1v-52h-1zM2521 1744h1v-57h-1zM2522 1742h1v-56h-1zM2523 1742h1v-53h-1zM2524 1742h1v-47h-1zM2525 1743h1v-45h-1zM2526 1742h1v-40h-1zM2527 1742h1v-37h-1zM2528 1741h1v-33h-1zM2529 1743h1v-28h-1zM2530 1742h1v-22h-1zM2531 1744h1v-21h-1zM2532 1741h1v-11h-1zM2533 1742h1v-11h-1zM2534 1742h1v-8h-1zM2535 1743h2v-9h-2zM2537 1742h1v-7h-1zM2538 1742h1v-9h-1zM2539 1743h2v-8h-2zM2541 1741h1v-6h-1zM2542 1741h1v-7h-1zM2543 1742h2v-9h-2zM2545 1741h2v-6h-2zM2547 1743h2v-8h-2zM2549 1763h1v-4h-1zM2584 1770h1v-3h-1zM2585 1756h1v-6h-1zM2586 1757h1v-6h-1zM2587 1755h1v-4h-1zM2588 1754h1v-1h-1zM2589 1754h1v-2h-1zM2590 1756h1v-7h-1zM2591 1754h2v-4h-2zM2593 1756h1v-6h-1zM2594 1758h1v-8h-1zM2595 1756h1v-4h-1zM2596 1755h1v-5h-1zM2597 1771h1v-3h-1zM2602 1767h1v-12h-1zM2603 1752h1v-24h-1zM2604 1738h1v-34h-1zM2605 1752h1v-24h-1zM2606 1767h1v-12h-1z" fill="#d400e6"/><path d="M568 1771h1v-22h-1zM569 1758h1v-43h-1zM570 1747h1v-60h-1zM571 1737h1v-76h-1zM572 1747h1v-60h-1zM573 1758h1v-43h-1zM574 1771h1v-22h-1zM602 1778h1v-12h-1zM603 1777h1v-30h-1zM604 1778h1v-13h-1zM615 1778h1v-20h-1zM616 1777h1v-53h-1zM617 1772h1v-25h-1zM618 1773h1v-23h-1zM619 1770h1v-18h-1zM620 1771h1v-25h-1zM621 1771h1v-23h-1zM622 1772h1v-20h-1zM623 1770h1v-24h-1zM624 1772h1v-24h-1zM625 1768h1v-18h-1zM626 1770h1v-28h-1zM627 1770h1v-20h-1zM628 1771h1v-26h-1zM629 1772h1v-29h-1zM630 1769h1v-18h-1zM631 1769h1v-19h-1zM632 1771h1v-17h-1zM633 1770h1v-17h-1zM634 1767h1v-15h-1zM635 1767h1v-20h-1zM636 1771h1v-21h-1zM637 1769h1v-16h-1zM638 1770h1v-12h-1zM639 1767h1v-9h-1zM640 1768h1v-18h-1zM641 1768h1v-17h-1zM642 1770h1v-19h-1zM643 1767h1v-9h-1zM644 1768h1v-10h-1zM645 1772h1v-14h-1zM646 1770h1v-11h-1zM647 1772h1v-17h-1zM648 1769h1v-14h-1zM649 1770h1v-18h-1zM650 1772h1v-13h-1zM651 1769h1v-11h-1zM652 1769h1v-19h-1zM653 1772h1v-19h-1zM654 1771h1v-19h-1zM655 1770h1v-20h-1zM656 1773h1v-19h-1zM657 1771h1v-22h-1zM658 1772h1v-15h-1zM689 1784h1v-7h-1zM690 1784h3v-6h-3zM693 1784h1v-7h-1zM694 1784h2v-6h-2zM696 1784h1v-7h-1zM697 1784h4v-6h-4zM701 1784h1v-7h-1zM702 1784h2v-6h-2zM704 1784h1v-7h-1zM705 1784h6v-6h-6zM711 1784h1v-7h-1zM712 1778h1v-1h-1zM713 1784h2v-6h-2zM715 1784h1v-7h-1zM716 1784h4v-6h-4zM720 1784h1v-7h-1zM721 1784h3v-6h-3zM724 1784h1v-7h-1zM725 1778h1v-1h-1zM726 1784h3v-6h-3zM729 1784h1v-7h-1zM730 1784h4v-6h-4zM734 1778h1v-1h-1zM735 1784h4v-6h-4zM739 1784h3v-7h-3zM742 1784h3v-6h-3zM745 1784h1v-7h-1zM746 1784h7v-6h-7zM753 1784h1v-7h-1zM754 1778h2v-1h-2zM756 1784h1v-6h-1zM757 1784h1v-7h-1zM758 1784h1v-6h-1zM759 1778h2v-1h-2zM761 1784h1v-6h-1zM798 1778h2v-15h-2zM800 1777h1v-11h-1zM801 1778h1v-17h-1zM802 1778h1v-13h-1zM803 1777h1v-13h-1zM804 1778h2v-13h-2zM806 1777h1v-21h-1zM807 1778h1v-14h-1zM808 1778h1v-15h-1zM809 1778h1v-24h-1zM810 1778h1v-25h-1zM811 1778h1v-21h-1zM812 1777h1v-20h-1zM813 1778h1v-22h-1zM814 1778h1v-18h-1zM815 1778h1v-21h-1zM816 1758h1v-5h-1zM817 1777h1v-19h-1zM818 1777h1v-21h-1zM819 1778h1v-18h-1zM823 1784h1v-2h-1zM824 1784h1v-3h-1zM825 1784h1v-5h-1zM826 1784h1v-3h-1zM827 1784h3v-4h-3zM830 1784h2v-6h-2zM832 1784h1v-4h-1zM833 1784h1v-6h-1zM834 1784h1v-4h-1zM835 1784h1v-5h-1zM836 1784h3v-6h-3zM839 1778h1v-2h-1zM840 1784h1v-6h-1zM841 1777h1v-1h-1zM842 1778h1v-2h-1zM843 1778h1v-3h-1zM844 1784h1v-7h-1zM845 1777h1v-2h-1zM846 1778h1v-1h-1zM847 1778h1v-2h-1zM848 1778h1v-3h-1zM849 1778h1v-4h-1zM850 1777h2v-4h-2zM852 1777h1v-3h-1zM853 1777h2v-4h-2zM855 1778h1v-5h-1zM856 1777h1v-7h-1zM857 1778h1v-8h-1zM858 1777h1v-7h-1zM859 1777h1v-10h-1zM860 1778h1v-11h-1zM861 1778h1v-12h-1zM862 1777h1v-11h-1zM863 1777h1v-13h-1zM864 1778h1v-15h-1zM865 1778h1v-16h-1zM866 1778h2v-17h-2zM868 1777h1v-18h-1zM869 1777h1v-19h-1zM870 1777h1v-20h-1zM871 1778h1v-21h-1zM872 1778h1v-22h-1zM873 1778h1v-24h-1zM874 1777h1v-25h-1zM875 1778h1v-26h-1zM877 1777h1v-25h-1zM878 1777h1v-26h-1zM879 1777h1v-24h-1zM880 1778h1v-25h-1zM881 1778h1v-27h-1zM882 1778h1v-25h-1zM883 1777h1v-25h-1zM884 1778h2v-25h-2zM886 1777h1v-23h-1zM887 1778h2v-25h-2zM889 1778h2v-24h-2zM891 1777h1v-23h-1zM892 1778h1v-24h-1zM893 1753h1v-1h-1zM894 1753h1v-2h-1zM895 1755h1v-2h-1zM896 1757h1v-5h-1zM897 1756h1v-5h-1zM898 1758h1v-5h-1zM899 1756h1v-3h-1zM900 1757h1v-4h-1zM901 1760h1v-8h-1zM902 1760h1v-6h-1zM903 1759h1v-4h-1zM904 1761h2v-6h-2zM906 1762h1v-7h-1zM907 1762h1v-5h-1zM908 1774h1v-4h-1zM912 1784h1v-4h-1zM913 1778h1v-17h-1zM914 1778h1v-31h-1zM915 1778h1v-17h-1zM916 1784h1v-4h-1zM927 1767h1v-17h-1zM928 1751h1v-34h-1zM929 1737h1v-48h-1zM930 1724h1v-60h-1zM931 1737h1v-48h-1zM932 1751h1v-34h-1zM933 1767h1v-17h-1zM938 1784h1v-5h-1zM939 1784h1v-6h-1zM940 1784h1v-5h-1zM941 1784h1v-6h-1zM943 1776h1v-1h-1zM944 1778h1v-1h-1zM945 1777h1v-4h-1zM946 1778h1v-2h-1zM947 1778h1v-4h-1zM948 1777h1v-1h-1zM951 1777h1v-1h-1zM952 1784h1v-6h-1zM953 1784h1v-4h-1zM955 1779h1v-1h-1zM969 1784h1v-3h-1zM970 1778h1v-12h-1zM971 1777h1v-23h-1zM972 1778h1v-12h-1zM973 1784h1v-3h-1zM982 1731h1v-7h-1zM983 1732h1v-53h-1zM984 1754h1v-30h-1zM990 1737h1v-11h-1zM991 1702h1v-20h-1zM992 1737h1v-11h-1zM1122 1769h1v-4h-1zM1123 1768h1v-4h-1zM1124 1771h1v-2h-1zM1125 1766h1v-8h-1zM1126 1767h1v-5h-1zM1127 1778h1v-7h-1zM1129 1771h1v-6h-1zM1130 1775h1v-2h-1zM1153 1778h1v-25h-1zM1154 1778h1v-64h-1zM1155 1778h1v-25h-1zM1161 1752h1v-9h-1zM1162 1751h1v-18h-1zM1163 1746h1v-6h-1zM1164 1750h1v-9h-1zM1165 1755h1v-13h-1zM1166 1757h1v-12h-1zM1167 1749h1v-8h-1zM1168 1755h1v-17h-1zM1169 1734h1v-9h-1zM1170 1746h1v-18h-1zM1171 1754h1v-13h-1zM1172 1738h1v-9h-1zM1173 1746h1v-5h-1zM1174 1741h1v-16h-1zM1175 1740h1v-6h-1zM1176 1748h1v-12h-1zM1177 1752h1v-11h-1zM1178 1746h1v-22h-1zM1179 1757h1v-14h-1zM1180 1744h1v-11h-1zM1181 1739h1v-11h-1zM1182 1746h1v-6h-1zM1183 1746h1v-5h-1zM1184 1745h1v-11h-1zM1185 1745h1v-8h-1zM1186 1749h1v-8h-1zM1187 1750h1v-10h-1zM1188 1746h1v-11h-1zM1189 1747h1v-8h-1zM1190 1749h1v-14h-1zM1191 1747h1v-23h-1zM1192 1747h1v-15h-1zM1193 1749h1v-12h-1zM1194 1738h1v-8h-1zM1195 1746h1v-10h-1zM1196 1756h1v-15h-1zM1197 1745h1v-12h-1zM1198 1741h1v-8h-1zM1199 1749h1v-15h-1zM1200 1742h1v-2h-1zM1201 1743h1v-18h-1zM1202 1740h1v-9h-1zM1203 1725h1v-1h-1zM1204 1735h1v-3h-1zM1205 1739h1v-11h-1zM1206 1751h1v-18h-1zM1207 1741h1v-7h-1zM1208 1752h1v-14h-1zM1209 1746h1v-7h-1zM1210 1749h1v-11h-1zM1217 1759h1v-10h-1zM1218 1728h1v-24h-1zM1219 1759h1v-10h-1zM1279 1759h1v-34h-1zM1280 1734h1v-67h-1zM1281 1735h1v-68h-1zM1282 1732h1v-65h-1zM1283 1732h1v-67h-1zM1284 1759h1v-33h-1zM1304 1778h1v-32h-1zM1305 1777h1v-91h-1zM1306 1752h1v-6h-1zM1307 1766h1v-13h-1zM1308 1758h1v-23h-1zM1309 1757h1v-20h-1zM1310 1757h1v-21h-1zM1311 1758h1v-21h-1zM1312 1758h1v-22h-1zM1313 1759h1v-22h-1zM1314 1758h1v-23h-1zM1315 1759h1v-22h-1zM1316 1758h1v-21h-1zM1317 1758h1v-23h-1zM1318 1758h1v-21h-1zM1319 1759h1v-23h-1zM1320 1759h2v-24h-2zM1322 1758h1v-22h-1zM1323 1759h1v-22h-1zM1324 1757h1v-21h-1zM1325 1758h1v-23h-1zM1326 1758h1v-22h-1zM1327 1757h1v-21h-1zM1328 1759h1v-22h-1zM1329 1759h1v-23h-1zM1330 1758h1v-23h-1zM1331 1759h1v-24h-1zM1332 1758h1v-22h-1zM1333 1758h1v-23h-1zM1334 1759h1v-22h-1zM1335 1759h1v-24h-1zM1336 1758h1v-23h-1zM1337 1759h1v-24h-1zM1338 1759h1v-22h-1zM1339 1767h1v-14h-1zM1340 1776h1v-8h-1zM1377 1766h1v-25h-1zM1378 1749h1v-48h-1zM1379 1734h1v-68h-1zM1380 1749h1v-48h-1zM1381 1766h1v-25h-1zM1543 1784h1v-6h-1zM1544 1778h1v-7h-1zM1545 1778h1v-15h-1zM1546 1777h1v-12h-1zM1547 1778h1v-15h-1zM1548 1778h1v-7h-1zM1549 1784h1v-6h-1zM1558 1777h1v-1h-1zM1559 1777h1v-18h-1zM1560 1778h1v-2h-1zM1608 1778h1v-23h-1zM1609 1777h1v-81h-1zM1610 1778h1v-23h-1zM1613 1778h1v-25h-1zM1614 1777h1v-86h-1zM1615 1778h1v-25h-1zM1707 1769h1v-5h-1zM1708 1755h1v-19h-1zM1709 1697h1v-1h-1zM1710 1699h1v-16h-1zM1711 1702h1v-25h-1zM1712 1708h1v-28h-1zM1713 1738h1v-22h-1zM1714 1764h1v-13h-1zM1729 1778h1v-16h-1zM1730 1777h1v-58h-1zM1731 1778h1v-16h-1zM1779 1784h1v-7h-1zM1780 1777h1v-4h-1zM1781 1777h1v-9h-1zM1782 1777h1v-11h-1zM1783 1777h1v-8h-1zM1784 1778h1v-7h-1zM1785 1777h1v-5h-1zM1786 1778h1v-5h-1zM1787 1784h1v-7h-1zM1788 1778h1v-2h-1zM1789 1778h1v-1h-1zM1790 1784h1v-4h-1zM1791 1784h1v-2h-1zM1792 1784h1v-3h-1zM1803 1777h1v-3h-1zM1804 1778h1v-15h-1zM1805 1778h1v-4h-1zM1808 1778h1v-3h-1zM1809 1772h1v-12h-1zM1810 1778h1v-3h-1zM1812 1774h1v-9h-1zM1813 1750h1v-30h-1zM1814 1774h1v-9h-1zM1819 1766h1v-10h-1zM1820 1723h1v-23h-1zM1821 1757h1v-1h-1zM1840 1784h1v-6h-1zM1841 1777h1v-5h-1zM1842 1781h1v-3h-1zM1852 1784h1v-6h-1zM1853 1778h1v-7h-1zM1854 1777h1v-14h-1zM1855 1778h1v-19h-1zM1856 1778h1v-15h-1zM1857 1777h1v-20h-1zM1858 1777h1v-19h-1zM1859 1777h2v-18h-2zM1861 1777h1v-23h-1zM1862 1777h1v-12h-1zM1863 1778h1v-4h-1zM1865 1776h1v-13h-1zM1866 1771h1v-22h-1zM1867 1770h1v-7h-1zM1894 1769h1v-4h-1zM1895 1754h1v-8h-1zM1896 1755h1v-9h-1zM1897 1753h1v-8h-1zM1898 1753h1v-6h-1zM1899 1755h1v-9h-1zM1900 1754h1v-9h-1zM1901 1755h1v-10h-1zM1902 1755h1v-9h-1zM1903 1769h1v-3h-1zM1909 1778h1v-6h-1zM1910 1767h1v-5h-1zM1911 1766h1v-4h-1zM1912 1768h1v-8h-1zM1913 1767h1v-6h-1zM1914 1766h1v-5h-1zM1915 1766h1v-8h-1zM1916 1766h1v-6h-1zM1917 1768h1v-11h-1zM1918 1769h1v-11h-1zM1919 1769h2v-9h-2zM1921 1769h1v-10h-1zM1922 1766h1v-6h-1zM1923 1768h1v-5h-1zM1924 1767h1v-5h-1zM1925 1765h1v-1h-1zM1926 1767h1v-3h-1zM1927 1766h1v-1h-1zM1929 1764h1v-1h-1zM1930 1767h1v-6h-1zM1931 1764h1v-3h-1zM1932 1763h1v-1h-1zM1933 1765h1v-3h-1zM1934 1764h1v-4h-1zM1935 1777h1v-5h-1zM1939 1763h1v-9h-1zM1940 1740h1v-26h-1zM1941 1743h1v-36h-1zM1942 1741h1v-45h-1zM1943 1735h1v-42h-1zM1944 1685h1v-5h-1zM1945 1691h1v-18h-1zM1946 1698h1v-27h-1zM1947 1699h1v-27h-1zM1948 1709h1v-41h-1zM1949 1710h1v-42h-1zM1950 1716h1v-51h-1zM1951 1726h1v-2h-1zM1961 1777h1v-16h-1zM1962 1770h1v-32h-1zM1963 1777h1v-16h-1zM1968 1776h1v-14h-1zM1969 1770h1v-24h-1zM1970 1776h1v-14h-1zM1974 1773h1v-11h-1zM1975 1752h1v-20h-1zM1976 1766h1v-4h-1zM1977 1784h1v-5h-1zM1978 1766h1v-3h-1zM1979 1742h1v-6h-1zM1980 1717h1v-18h-1zM1981 1686h1v-2h-1zM1982 1681h1v-8h-1zM1983 1677h1v-1h-1zM1984 1690h1v-3h-1zM1985 1698h1v-1h-1zM1986 1748h1v-12h-1zM1987 1777h1v-12h-1zM1991 1776h1v-6h-1zM1992 1761h1v-15h-1zM1993 1776h1v-6h-1zM2007 1760h1v-3h-1zM2008 1756h1v-18h-1zM2009 1767h1v-10h-1zM2011 1783h1v-1h-1zM2012 1784h1v-2h-1zM2013 1784h2v-1h-2zM2015 1784h1v-3h-1zM2016 1784h2v-1h-2zM2018 1782h1v-1h-1zM2019 1784h1v-3h-1zM2020 1784h1v-4h-1zM2021 1784h1v-6h-1zM2022 1784h1v-7h-1zM2023 1784h1v-6h-1zM2024 1777h1v-1h-1zM2025 1778h1v-2h-1zM2026 1777h1v-2h-1zM2027 1778h1v-5h-1zM2028 1777h2v-5h-2zM2030 1778h1v-5h-1zM2031 1777h1v-7h-1zM2032 1778h2v-7h-2zM2034 1777h1v-7h-1zM2035 1777h1v-8h-1zM2036 1777h1v-5h-1zM2037 1778h1v-7h-1zM2038 1777h1v-5h-1zM2039 1777h1v-6h-1zM2040 1777h2v-5h-2zM2042 1784h1v-5h-1zM2045 1778h1v-9h-1zM2046 1762h1v-5h-1zM2047 1772h1v-3h-1zM2057 1778h1v-12h-1zM2058 1753h1v-10h-1zM2059 1777h1v-11h-1zM2061 1778h1v-7h-1zM2062 1774h1v-22h-1zM2063 1778h1v-7h-1zM2066 1772h1v-18h-1zM2067 1760h1v-37h-1zM2068 1758h1v-19h-1zM2069 1767h1v-6h-1zM2070 1745h1v-19h-1zM2071 1768h1v-7h-1zM2072 1778h1v-9h-1zM2073 1768h1v-38h-1zM2074 1772h1v-3h-1zM2097 1784h1v-1h-1zM2098 1778h1v-7h-1zM2099 1778h1v-17h-1zM2100 1778h1v-26h-1zM2101 1751h1v-12h-1zM2102 1733h1v-2h-1zM2103 1735h1v-12h-1zM2104 1736h1v-24h-1zM2105 1737h1v-26h-1zM2106 1740h1v-22h-1zM2107 1740h1v-21h-1zM2108 1743h1v-16h-1zM2109 1745h1v-15h-1zM2110 1746h1v-8h-1zM2111 1747h1v-3h-1zM2112 1754h1v-5h-1zM2113 1755h1v-1h-1zM2114 1777h1v-20h-1zM2115 1778h1v-14h-1zM2161 1757h1v-22h-1zM2162 1726h1v-46h-1zM2163 1757h1v-22h-1zM2168 1752h1v-17h-1zM2169 1724h1v-31h-1zM2170 1744h1v-9h-1zM2172 1763h1v-2h-1zM2173 1756h1v-22h-1zM2174 1768h1v-7h-1zM2184 1763h1v-18h-1zM2185 1743h1v-28h-1zM2186 1715h1v-29h-1zM2187 1719h1v-18h-1zM2188 1718h1v-6h-1zM2189 1730h1v-8h-1zM2190 1725h1v-10h-1zM2191 1728h1v-20h-1zM2192 1702h1v-8h-1zM2193 1711h1v-25h-1zM2194 1712h1v-33h-1zM2195 1720h1v-35h-1zM2196 1718h1v-23h-1zM2197 1730h1v-17h-1zM2198 1750h1v-5h-1zM2199 1775h1v-6h-1zM2210 1777h1v-5h-1zM2211 1764h1v-12h-1zM2212 1773h1v-1h-1zM2222 1766h1v-11h-1zM2223 1730h1v-33h-1zM2224 1766h1v-11h-1zM2225 1778h1v-1h-1zM2235 1774h1v-1h-1zM2236 1765h1v-9h-1zM2237 1776h1v-3h-1zM2238 1772h1v-19h-1zM2239 1777h1v-3h-1zM2240 1769h1v-2h-1zM2241 1778h1v-4h-1zM2242 1777h1v-5h-1zM2243 1778h1v-6h-1zM2244 1778h1v-9h-1zM2245 1777h1v-9h-1zM2246 1777h1v-11h-1zM2247 1778h1v-13h-1zM2248 1777h1v-15h-1zM2249 1778h1v-20h-1zM2250 1777h1v-23h-1zM2251 1778h1v-27h-1zM2252 1778h1v-31h-1zM2253 1777h1v-13h-1zM2268 1773h1v-1h-1zM2269 1775h1v-14h-1zM2270 1778h1v-6h-1zM2271 1784h1v-7h-1zM2272 1778h1v-7h-1zM2273 1778h1v-12h-1zM2274 1777h1v-15h-1zM2275 1777h1v-11h-1zM2276 1778h1v-15h-1zM2277 1777h1v-14h-1zM2278 1778h1v-16h-1zM2279 1777h1v-6h-1zM2280 1784h1v-7h-1zM2319 1777h1v-3h-1zM2320 1778h1v-19h-1zM2321 1777h1v-23h-1zM2322 1778h1v-29h-1zM2323 1777h1v-34h-1zM2324 1778h1v-40h-1zM2325 1777h1v-31h-1zM2326 1778h1v-24h-1zM2327 1778h1v-19h-1zM2328 1778h1v-11h-1zM2329 1784h1v-5h-1zM2333 1778h1v-9h-1zM2334 1777h1v-30h-1zM2335 1778h1v-42h-1zM2336 1731h1v-3h-1zM2337 1731h1v-9h-1zM2338 1731h1v-10h-1zM2339 1732h1v-5h-1zM2340 1734h1v-3h-1zM2341 1778h1v-41h-1zM2342 1778h1v-14h-1zM2346 1778h1v-3h-1zM2347 1778h2v-13h-2zM2349 1778h1v-15h-1zM2350 1778h1v-4h-1zM2363 1764h1v-4h-1zM2364 1744h2v-9h-2zM2366 1744h1v-11h-1zM2367 1745h1v-11h-1zM2368 1745h1v-12h-1zM2369 1744h1v-12h-1zM2370 1746h1v-13h-1zM2371 1745h2v-13h-2zM2373 1744h1v-13h-1zM2374 1745h1v-16h-1zM2375 1744h2v-16h-2zM2377 1745h1v-19h-1zM2378 1745h1v-20h-1zM2379 1744h1v-19h-1zM2380 1745h1v-19h-1zM2381 1746h1v-22h-1zM2382 1745h1v-20h-1zM2383 1745h1v-21h-1zM2384 1745h2v-22h-2zM2386 1764h1v-11h-1zM2401 1755h1v-13h-1zM2402 1724h1v-27h-1zM2403 1755h1v-13h-1zM2404 1765h1v-13h-1zM2405 1743h1v-26h-1zM2406 1765h1v-13h-1zM2479 1777h1v-3h-1zM2480 1778h1v-17h-1zM2481 1749h1v-4h-1zM2482 1752h2v-12h-2zM2484 1751h1v-4h-1zM2485 1764h1v-2h-1zM2486 1777h1v-2h-1zM2494 1775h1v-12h-1zM2495 1765h1v-23h-1zM2496 1765h1v-24h-1zM2497 1766h1v-25h-1zM2498 1765h1v-24h-1zM2499 1767h1v-27h-1zM2500 1764h1v-21h-1zM2501 1765h1v-22h-1zM2502 1766h1v-24h-1zM2503 1765h1v-22h-1zM2504 1766h1v-25h-1zM2505 1765h1v-24h-1zM2506 1764h1v-20h-1zM2507 1762h1v-18h-1zM2508 1762h1v-19h-1zM2509 1758h1v-18h-1zM2510 1758h1v-16h-1zM2511 1756h1v-14h-1zM2512 1753h1v-13h-1zM2513 1752h1v-9h-1zM2514 1754h1v-13h-1zM2515 1752h1v-9h-1zM2516 1754h1v-10h-1zM2517 1750h1v-7h-1zM2518 1752h2v-11h-2zM2520 1752h1v-12h-1zM2521 1752h1v-8h-1zM2522 1753h1v-11h-1zM2523 1754h1v-12h-1zM2524 1751h1v-9h-1zM2525 1753h1v-10h-1zM2526 1754h1v-12h-1zM2527 1757h1v-15h-1zM2528 1758h1v-17h-1zM2529 1757h1v-14h-1zM2530 1760h1v-18h-1zM2531 1759h1v-15h-1zM2532 1761h1v-20h-1zM2533 1764h2v-22h-2zM2535 1764h1v-21h-1zM2536 1765h1v-22h-1zM2537 1766h1v-24h-1zM2538 1764h1v-22h-1zM2539 1764h2v-21h-2zM2541 1764h1v-23h-1zM2542 1765h1v-24h-1zM2543 1765h1v-23h-1zM2544 1766h1v-24h-1zM2545 1765h1v-24h-1zM2546 1764h1v-23h-1zM2547 1766h2v-23h-2zM2549 1775h1v-12h-1zM2550 1784h1v-1h-1zM2551 1784h1v-6h-1zM2552 1784h1v-1h-1zM2564 1784h1v-4h-1zM2565 1778h1v-12h-1zM2566 1784h1v-4h-1zM2584 1776h1v-6h-1zM2585 1770h1v-14h-1zM2586 1768h1v-11h-1zM2587 1770h1v-15h-1zM2588 1767h1v-13h-1zM2589 1770h1v-16h-1zM2590 1771h1v-15h-1zM2591 1770h1v-16h-1zM2592 1768h1v-14h-1zM2593 1769h1v-13h-1zM2594 1769h1v-11h-1zM2595 1770h1v-14h-1zM2596 1769h1v-14h-1zM2597 1776h1v-5h-1zM2602 1751h1v-8h-1zM2603 1720h1v-17h-1zM2604 1693h1v-23h-1zM2605 1720h1v-17h-1zM2606 1751h1v-8h-1z" fill="#f27835"/><path d="M537 1784h1v-2h-1zM538 1784h1v-5h-1zM539 1784h1v-2h-1zM541 1784h1v-3h-1zM542 1777h1v-2h-1zM543 1784h1v-3h-1zM567 1784h1v-3h-1zM568 1777h1v-4h-1zM569 1774h1v-11h-1zM570 1769h1v-14h-1zM571 1766h1v-19h-1zM572 1769h1v-14h-1zM573 1774h1v-11h-1zM574 1777h1v-4h-1zM602 1766h1v-13h-1zM603 1747h1v-24h-1zM604 1765h1v-11h-1zM667 1784h1v-6h-1zM668 1778h1v-12h-1zM669 1777h1v-20h-1zM670 1777h1v-11h-1zM671 1784h1v-6h-1zM675 1784h1v-3h-1zM676 1778h1v-1h-1zM677 1784h1v-3h-1zM678 1784h1v-4h-1zM679 1784h1v-2h-1zM680 1778h1v-1h-1zM681 1770h1v-2h-1zM682 1778h1v-1h-1zM683 1784h1v-4h-1zM684 1784h1v-1h-1zM689 1777h1v-3h-1zM690 1778h2v-4h-2zM692 1778h1v-3h-1zM693 1777h1v-1h-1zM694 1778h1v-4h-1zM695 1777h1v-1h-1zM696 1777h1v-3h-1zM697 1778h2v-4h-2zM699 1778h2v-3h-2zM701 1777h1v-3h-1zM702 1778h1v-3h-1zM703 1777h2v-2h-2zM705 1777h1v-3h-1zM706 1778h1v-4h-1zM707 1778h1v-3h-1zM708 1777h1v-3h-1zM709 1778h1v-4h-1zM710 1777h1v-2h-1zM711 1777h2v-3h-2zM713 1778h2v-4h-2zM715 1777h1v-3h-1zM716 1777h1v-2h-1zM717 1778h2v-3h-2zM719 1777h3v-2h-3zM722 1777h1v-3h-1zM723 1778h1v-3h-1zM724 1777h3v-3h-3zM727 1778h2v-4h-2zM729 1777h1v-2h-1zM730 1778h1v-3h-1zM731 1777h2v-3h-2zM733 1778h1v-4h-1zM734 1777h1v-3h-1zM735 1777h2v-2h-2zM737 1778h1v-4h-1zM738 1777h1v-3h-1zM739 1775h1v-1h-1zM740 1777h1v-3h-1zM741 1775h1v-1h-1zM742 1778h1v-4h-1zM743 1778h1v-3h-1zM744 1777h2v-2h-2zM746 1778h1v-4h-1zM747 1778h1v-3h-1zM748 1777h1v-2h-1zM749 1777h1v-3h-1zM750 1778h1v-3h-1zM751 1777h1v-3h-1zM752 1777h4v-2h-4zM756 1778h1v-3h-1zM757 1777h1v-2h-1zM758 1777h2v-3h-2zM760 1777h1v-2h-1zM761 1777h1v-1h-1zM772 1778h1v-2h-1zM773 1777h1v-18h-1zM774 1778h1v-2h-1zM785 1784h1v-6h-1zM786 1778h1v-12h-1zM798 1742h1v-3h-1zM799 1743h1v-6h-1zM800 1735h1v-2h-1zM801 1761h1v-18h-1zM803 1750h1v-12h-1zM804 1739h1v-10h-1zM805 1765h1v-24h-1zM806 1738h1v-7h-1zM807 1727h1v-3h-1zM808 1736h1v-7h-1zM809 1732h1v-3h-1zM810 1746h1v-10h-1zM811 1732h1v-1h-1zM812 1757h1v-12h-1zM813 1736h1v-2h-1zM814 1753h1v-6h-1zM815 1738h1v-1h-1zM816 1753h1v-13h-1zM817 1755h1v-6h-1zM819 1757h1v-10h-1zM823 1772h1v-19h-1zM824 1760h1v-39h-1zM825 1761h2v-40h-2zM827 1760h1v-39h-1zM828 1762h1v-40h-1zM829 1761h1v-40h-1zM830 1760h1v-39h-1zM831 1761h1v-39h-1zM832 1762h1v-42h-1zM833 1762h1v-41h-1zM834 1760h1v-37h-1zM835 1762h1v-39h-1zM836 1762h2v-41h-2zM838 1763h1v-41h-1zM839 1763h1v-42h-1zM840 1761h1v-38h-1zM841 1762h1v-41h-1zM842 1761h1v-40h-1zM843 1761h1v-39h-1zM844 1760h1v-38h-1zM845 1761h1v-38h-1zM846 1760h3v-37h-3zM849 1761h1v-39h-1zM850 1759h1v-38h-1zM851 1759h1v-37h-1zM852 1758h1v-36h-1zM853 1758h1v-35h-1zM854 1759h1v-37h-1zM855 1758h1v-35h-1zM856 1756h1v-34h-1zM857 1757h1v-34h-1zM858 1758h1v-35h-1zM859 1757h1v-35h-1zM860 1755h1v-33h-1zM861 1756h1v-34h-1zM862 1754h1v-32h-1zM863 1755h1v-32h-1zM864 1754h1v-30h-1zM865 1754h1v-31h-1zM866 1754h1v-30h-1zM867 1752h1v-28h-1zM868 1754h1v-30h-1zM869 1752h1v-30h-1zM870 1753h1v-31h-1zM871 1751h1v-28h-1zM872 1750h1v-26h-1zM873 1751h2v-27h-2zM875 1750h1v-28h-1zM876 1750h1v-26h-1zM877 1750h1v-27h-1zM878 1749h1v-25h-1zM879 1747h1v-24h-1zM880 1748h1v-25h-1zM881 1748h1v-23h-1zM882 1749h1v-26h-1zM883 1749h1v-24h-1zM884 1750h1v-25h-1zM885 1750h1v-27h-1zM886 1751h1v-28h-1zM887 1751h1v-26h-1zM888 1750h1v-27h-1zM889 1752h1v-27h-1zM890 1753h1v-29h-1zM891 1753h2v-28h-2zM893 1752h1v-27h-1zM894 1751h1v-26h-1zM895 1753h1v-29h-1zM896 1752h1v-27h-1zM897 1751h1v-27h-1zM898 1753h1v-29h-1zM899 1753h2v-28h-2zM901 1752h1v-28h-1zM902 1754h1v-31h-1zM903 1755h4v-31h-4zM907 1757h1v-34h-1zM908 1770h1v-16h-1zM912 1778h1v-7h-1zM913 1761h1v-53h-1zM914 1747h1v-87h-1zM915 1761h1v-53h-1zM916 1778h1v-7h-1zM927 1778h1v-9h-1zM928 1778h1v-24h-1zM929 1778h1v-37h-1zM930 1777h1v-47h-1zM931 1777h1v-36h-1zM932 1778h1v-24h-1zM933 1778h1v-9h-1zM938 1777h1v-4h-1zM939 1778h1v-2h-1zM940 1777h1v-4h-1zM941 1777h1v-7h-1zM942 1777h1v-8h-1zM943 1778h1v-2h-1zM944 1776h1v-2h-1zM945 1773h1v-4h-1zM946 1775h1v-3h-1zM948 1775h1v-2h-1zM949 1775h1v-5h-1zM950 1776h1v-9h-1zM951 1776h1v-3h-1zM952 1777h1v-5h-1zM953 1777h1v-3h-1zM954 1778h1v-1h-1zM955 1777h1v-5h-1zM969 1781h1v-2h-1zM970 1766h1v-13h-1zM971 1754h1v-20h-1zM972 1766h1v-13h-1zM973 1781h1v-2h-1zM974 1778h1v-11h-1zM975 1769h1v-18h-1zM976 1767h1v-36h-1zM977 1766h2v-34h-2zM979 1762h1v-27h-1zM980 1764h1v-28h-1zM981 1771h1v-21h-1zM982 1756h1v-2h-1zM983 1758h1v-26h-1zM984 1777h1v-23h-1zM986 1778h1v-31h-1zM987 1777h1v-65h-1zM988 1778h1v-31h-1zM990 1778h1v-26h-1zM991 1778h1v-50h-1zM992 1777h1v-25h-1zM1024 1777h1v-15h-1zM1025 1778h1v-47h-1zM1026 1778h1v-16h-1zM1028 1777h1v-15h-1zM1029 1777h1v-45h-1zM1030 1777h1v-15h-1zM1031 1778h1v-15h-1zM1032 1778h1v-44h-1zM1033 1777h1v-14h-1zM1034 1778h1v-15h-1zM1035 1778h1v-46h-1zM1036 1777h1v-14h-1zM1038 1778h1v-14h-1zM1039 1778h1v-42h-1zM1040 1778h1v-14h-1zM1041 1778h1v-16h-1zM1042 1777h1v-45h-1zM1043 1777h1v-15h-1zM1045 1778h1v-14h-1zM1046 1778h1v-43h-1zM1047 1778h1v-14h-1zM1048 1778h1v-16h-1zM1049 1778h1v-47h-1zM1050 1777h1v-15h-1zM1052 1778h1v-12h-1zM1053 1778h1v-36h-1zM1054 1778h1v-12h-1zM1055 1778h1v-9h-1zM1056 1778h1v-29h-1zM1057 1777h1v-8h-1zM1067 1778h1v-2h-1zM1068 1776h1v-1h-1zM1069 1776h1v-2h-1zM1070 1770h1v-4h-1zM1071 1773h1v-7h-1zM1072 1770h1v-4h-1zM1073 1763h1v-3h-1zM1074 1766h1v-6h-1zM1075 1777h1v-11h-1zM1076 1756h1v-15h-1zM1077 1763h1v-47h-1zM1078 1756h1v-15h-1zM1079 1778h1v-19h-1zM1080 1777h1v-20h-1zM1081 1778h1v-25h-1zM1082 1777h1v-17h-1zM1083 1778h1v-23h-1zM1084 1777h1v-18h-1zM1085 1778h1v-25h-1zM1086 1778h1v-27h-1zM1087 1777h1v-27h-1zM1088 1777h1v-19h-1zM1089 1778h1v-28h-1zM1090 1777h1v-18h-1zM1091 1778h1v-22h-1zM1092 1778h1v-23h-1zM1093 1777h1v-17h-1zM1094 1778h1v-16h-1zM1095 1756h1v-1h-1zM1096 1778h1v-18h-1zM1100 1759h1v-16h-1zM1101 1739h1v-36h-1zM1102 1741h1v-29h-1zM1103 1742h1v-29h-1zM1104 1742h1v-38h-1zM1105 1745h1v-41h-1zM1106 1748h1v-19h-1zM1107 1752h1v-21h-1zM1108 1754h1v-18h-1zM1109 1755h1v-14h-1zM1110 1760h1v-13h-1zM1111 1773h1v-4h-1zM1112 1777h1v-2h-1zM1113 1777h1v-5h-1zM1114 1777h1v-1h-1zM1115 1778h1v-1h-1zM1120 1784h1v-6h-1zM1121 1777h1v-3h-1zM1122 1784h1v-7h-1zM1123 1777h1v-7h-1zM1124 1778h1v-7h-1zM1125 1778h1v-9h-1zM1126 1778h1v-8h-1zM1127 1771h1v-2h-1zM1128 1778h1v-4h-1zM1130 1784h1v-5h-1zM1141 1773h1v-17h-1zM1142 1761h1v-33h-1zM1143 1762h1v-32h-1zM1144 1761h1v-31h-1zM1145 1762h1v-32h-1zM1146 1760h1v-32h-1zM1147 1773h1v-16h-1zM1153 1753h1v-3h-1zM1154 1714h1v-8h-1zM1155 1753h1v-3h-1zM1161 1758h1v-2h-1zM1162 1765h1v-3h-1zM1163 1765h1v-10h-1zM1164 1760h1v-5h-1zM1165 1758h1v-3h-1zM1166 1768h1v-10h-1zM1167 1758h1v-3h-1zM1168 1756h1v-1h-1zM1169 1757h1v-7h-1zM1170 1751h1v-2h-1zM1171 1766h1v-10h-1zM1172 1765h1v-10h-1zM1173 1762h1v-7h-1zM1174 1765h1v-9h-1zM1175 1765h1v-12h-1zM1176 1769h1v-10h-1zM1177 1767h1v-15h-1zM1178 1769h1v-14h-1zM1179 1766h1v-7h-1zM1180 1767h1v-7h-1zM1181 1768h1v-9h-1zM1182 1770h1v-9h-1zM1183 1765h1v-1h-1zM1184 1765h1v-4h-1zM1185 1771h1v-11h-1zM1186 1770h1v-8h-1zM1187 1766h1v-10h-1zM1188 1767h1v-4h-1zM1189 1767h1v-12h-1zM1190 1766h1v-5h-1zM1191 1756h1v-2h-1zM1192 1758h1v-5h-1zM1193 1767h1v-12h-1zM1194 1756h1v-2h-1zM1195 1765h1v-6h-1zM1196 1762h1v-6h-1zM1197 1764h1v-7h-1zM1198 1766h1v-9h-1zM1199 1770h2v-14h-2zM1201 1765h1v-8h-1zM1202 1768h1v-12h-1zM1203 1766h1v-7h-1zM1204 1765h1v-9h-1zM1205 1765h1v-5h-1zM1206 1769h1v-12h-1zM1207 1756h1v-1h-1zM1208 1770h1v-11h-1zM1209 1760h1v-3h-1zM1210 1767h1v-5h-1zM1217 1778h1v-13h-1zM1218 1777h1v-37h-1zM1219 1778h1v-13h-1zM1228 1784h1v-2h-1zM1229 1777h1v-2h-1zM1230 1784h1v-2h-1zM1249 1777h1v-15h-1zM1250 1771h1v-32h-1zM1251 1773h1v-33h-1zM1252 1771h1v-33h-1zM1253 1778h1v-17h-1zM1270 1778h1v-6h-1zM1271 1778h1v-20h-1zM1272 1777h1v-5h-1zM1279 1777h1v-7h-1zM1280 1778h2v-22h-2zM1282 1777h1v-19h-1zM1283 1777h1v-21h-1zM1284 1778h1v-9h-1zM1306 1775h1v-10h-1zM1307 1753h1v-6h-1zM1308 1735h1v-10h-1zM1309 1737h1v-10h-1zM1310 1736h1v-10h-1zM1311 1737h1v-9h-1zM1312 1736h1v-10h-1zM1313 1737h1v-10h-1zM1314 1735h1v-7h-1zM1315 1737h1v-10h-1zM1316 1737h1v-11h-1zM1317 1735h1v-8h-1zM1318 1737h1v-12h-1zM1319 1736h1v-11h-1zM1320 1735h1v-7h-1zM1321 1735h1v-9h-1zM1322 1736h1v-10h-1zM1323 1737h1v-11h-1zM1324 1736h1v-11h-1zM1325 1735h1v-7h-1zM1326 1736h1v-8h-1zM1327 1736h1v-9h-1zM1328 1737h1v-9h-1zM1329 1736h1v-9h-1zM1330 1735h2v-8h-2zM1332 1736h1v-10h-1zM1333 1735h1v-7h-1zM1334 1737h1v-9h-1zM1335 1735h1v-10h-1zM1336 1735h1v-7h-1zM1337 1735h1v-8h-1zM1338 1737h1v-9h-1zM1339 1753h1v-7h-1zM1340 1768h1v-3h-1zM1349 1784h1v-1h-1zM1350 1777h1v-7h-1zM1351 1784h1v-1h-1zM1377 1767h1v-1h-1zM1378 1751h1v-2h-1zM1379 1737h1v-3h-1zM1380 1751h1v-2h-1zM1381 1767h1v-1h-1zM1382 1742h1v-3h-1zM1383 1698h1v-3h-1zM1384 1699h1v-5h-1zM1385 1700h1v-7h-1zM1386 1700h1v-6h-1zM1387 1698h1v-5h-1zM1388 1700h1v-8h-1zM1389 1742h1v-3h-1zM1543 1778h1v-7h-1zM1544 1771h1v-18h-1zM1545 1763h1v-30h-1zM1546 1765h1v-37h-1zM1547 1763h1v-28h-1zM1548 1771h1v-12h-1zM1549 1778h1v-4h-1zM1571 1775h1v-2h-1zM1572 1773h1v-3h-1zM1573 1771h1v-8h-1zM1574 1770h1v-7h-1zM1575 1772h1v-15h-1zM1576 1770h1v-2h-1zM1577 1773h1v-8h-1zM1578 1773h1v-3h-1zM1579 1777h1v-4h-1zM1587 1778h1v-1h-1zM1588 1777h1v-15h-1zM1624 1756h1v-20h-1zM1625 1728h1v-38h-1zM1626 1729h1v-21h-1zM1627 1730h1v-21h-1zM1628 1731h2v-21h-2zM1630 1731h1v-20h-1zM1631 1733h1v-20h-1zM1632 1732h2v-17h-2zM1634 1734h2v-17h-2zM1636 1733h1v-16h-1zM1637 1734h2v-16h-2zM1639 1735h1v-16h-1zM1640 1736h1v-16h-1zM1641 1736h1v-14h-1zM1642 1735h1v-13h-1zM1643 1736h1v-14h-1zM1644 1738h1v-15h-1zM1645 1738h1v-13h-1zM1646 1739h1v-16h-1zM1647 1739h1v-14h-1zM1648 1741h1v-15h-1zM1649 1741h1v-14h-1zM1650 1743h1v-13h-1zM1651 1746h1v-12h-1zM1652 1748h1v-12h-1zM1653 1749h1v-9h-1zM1654 1751h1v-10h-1zM1655 1754h1v-9h-1zM1656 1756h1v-7h-1zM1657 1760h1v-7h-1zM1658 1762h1v-6h-1zM1659 1765h1v-5h-1zM1660 1768h1v-5h-1zM1661 1771h1v-4h-1zM1662 1772h1v-4h-1zM1663 1774h1v-3h-1zM1664 1777h1v-5h-1zM1665 1778h1v-2h-1zM1667 1783h1v-1h-1zM1686 1784h1v-4h-1zM1687 1784h1v-11h-1zM1688 1784h1v-16h-1zM1689 1784h1v-21h-1zM1690 1784h1v-16h-1zM1691 1784h1v-11h-1zM1692 1784h1v-4h-1zM1707 1778h1v-2h-1zM1708 1778h1v-11h-1zM1709 1777h2v-17h-2zM1711 1777h1v-16h-1zM1712 1778h1v-17h-1zM1713 1777h1v-10h-1zM1714 1777h1v-1h-1zM1737 1777h1v-11h-1zM1738 1778h1v-41h-1zM1739 1778h1v-12h-1zM1779 1777h1v-6h-1zM1780 1773h1v-17h-1zM1781 1768h1v-32h-1zM1783 1730h1v-3h-1zM1784 1731h1v-6h-1zM1785 1732h1v-10h-1zM1786 1729h1v-10h-1zM1787 1730h1v-12h-1zM1788 1727h1v-11h-1zM1789 1729h1v-16h-1zM1790 1736h1v-19h-1zM1791 1743h1v-20h-1zM1792 1749h1v-19h-1zM1793 1765h1v-12h-1zM1794 1777h1v-7h-1zM1796 1777h1v-4h-1zM1799 1777h1v-13h-1zM1800 1773h1v-36h-1zM1801 1777h1v-19h-1zM1802 1769h1v-35h-1zM1803 1759h1v-1h-1zM1804 1763h1v-22h-1zM1805 1774h1v-13h-1zM1806 1777h1v-7h-1zM1807 1778h1v-29h-1zM1808 1775h1v-5h-1zM1809 1775h1v-3h-1zM1810 1781h1v-2h-1zM1812 1778h1v-3h-1zM1813 1778h1v-25h-1zM1814 1778h1v-3h-1zM1815 1784h1v-2h-1zM1816 1778h1v-11h-1zM1817 1778h1v-29h-1zM1818 1777h1v-10h-1zM1819 1778h1v-5h-1zM1820 1753h1v-3h-1zM1821 1777h1v-20h-1zM1822 1778h1v-55h-1zM1823 1778h1v-21h-1zM1824 1778h1v-28h-1zM1825 1777h1v-15h-1zM1826 1768h1v-7h-1zM1827 1754h1v-16h-1zM1828 1754h1v-13h-1zM1829 1751h1v-12h-1zM1830 1748h1v-5h-1zM1831 1747h1v-3h-1zM1832 1745h1v-1h-1zM1833 1746h1v-4h-1zM1834 1749h1v-6h-1zM1835 1747h1v-6h-1zM1836 1749h1v-7h-1zM1837 1749h1v-6h-1zM1838 1751h1v-12h-1zM1839 1752h1v-10h-1zM1840 1769h1v-8h-1zM1841 1784h1v-6h-1zM1842 1784h1v-3h-1zM1847 1784h1v-4h-1zM1848 1777h1v-1h-1zM1849 1775h1v-4h-1zM1850 1769h1v-9h-1zM1851 1775h1v-4h-1zM1852 1778h1v-11h-1zM1853 1771h1v-19h-1zM1854 1763h1v-31h-1zM1855 1759h1v-23h-1zM1856 1763h1v-32h-1zM1857 1757h1v-21h-1zM1858 1758h1v-27h-1zM1859 1759h1v-22h-1zM1860 1759h1v-26h-1zM1861 1754h1v-20h-1zM1862 1765h1v-12h-1zM1863 1774h1v-6h-1zM1864 1777h1v-4h-1zM1865 1763h1v-3h-1zM1866 1749h1v-23h-1zM1867 1763h1v-3h-1zM1868 1777h1v-1h-1zM1869 1784h1v-4h-1zM1870 1777h1v-1h-1zM1871 1764h1v-9h-1zM1872 1771h1v-51h-1zM1873 1777h1v-74h-1zM1874 1777h1v-12h-1zM1875 1778h1v-3h-1zM1876 1784h1v-7h-1zM1877 1778h1v-11h-1zM1878 1784h1v-7h-1zM1879 1769h1v-13h-1zM1880 1772h1v-53h-1zM1881 1777h1v-21h-1zM1882 1777h1v-49h-1zM1883 1778h1v-15h-1zM1884 1778h1v-12h-1zM1885 1752h1v-9h-1zM1886 1777h1v-20h-1zM1887 1763h1v-26h-1zM1888 1771h1v-1h-1zM1889 1767h1v-14h-1zM1890 1743h1v-68h-1zM1891 1767h1v-14h-1zM1892 1771h1v-22h-1zM1893 1777h1v-62h-1zM1894 1730h1v-3h-1zM1895 1677h1v-8h-1zM1896 1679h1v-8h-1zM1897 1678h1v-8h-1zM1898 1678h1v-7h-1zM1899 1677h1v-6h-1zM1900 1678h1v-8h-1zM1901 1678h1v-10h-1zM1902 1677h1v-9h-1zM1903 1731h1v-5h-1zM1904 1778h1v-11h-1zM1905 1760h1v-4h-1zM1906 1778h1v-7h-1zM1907 1778h1v-6h-1zM1908 1778h1v-17h-1zM1909 1753h1v-13h-1zM1910 1722h2v-27h-2zM1912 1719h1v-25h-1zM1913 1718h1v-28h-1zM1914 1718h2v-27h-2zM1916 1717h1v-27h-1zM1917 1720h1v-30h-1zM1918 1720h1v-28h-1zM1919 1720h1v-27h-1zM1920 1719h1v-25h-1zM1921 1721h1v-29h-1zM1922 1721h1v-27h-1zM1923 1723h1v-30h-1zM1924 1722h1v-32h-1zM1925 1725h1v-36h-1zM1926 1726h1v-39h-1zM1927 1725h1v-40h-1zM1928 1729h1v-45h-1zM1929 1730h1v-45h-1zM1930 1728h1v-46h-1zM1931 1729h1v-49h-1zM1932 1730h1v-51h-1zM1933 1733h1v-56h-1zM1934 1734h1v-58h-1zM1935 1758h1v-29h-1zM1936 1776h1v-5h-1zM1937 1778h1v-4h-1zM1938 1765h1v-13h-1zM1939 1778h1v-8h-1zM1940 1770h1v-19h-1zM1941 1765h1v-12h-1zM1942 1768h1v-13h-1zM1943 1769h1v-16h-1zM1944 1768h1v-17h-1zM1945 1769h1v-21h-1zM1946 1764h1v-14h-1zM1947 1770h2v-18h-2zM1949 1768h1v-14h-1zM1950 1753h1v-2h-1zM1951 1777h1v-15h-1zM1952 1778h1v-3h-1zM1953 1777h1v-1h-1zM1954 1776h1v-7h-1zM1955 1778h1v-2h-1zM1956 1778h1v-4h-1zM1957 1778h1v-12h-1zM1958 1777h1v-3h-1zM1959 1776h1v-9h-1zM1961 1784h1v-5h-1zM1962 1777h1v-3h-1zM1963 1784h1v-5h-1zM1965 1784h1v-3h-1zM1966 1778h1v-4h-1zM1967 1784h1v-3h-1zM1968 1784h1v-7h-1zM1969 1777h1v-5h-1zM1970 1784h1v-7h-1zM1973 1777h1v-19h-1zM1974 1762h1v-38h-1zM1975 1758h1v-6h-1zM1976 1777h1v-6h-1zM1977 1778h1v-16h-1zM1978 1777h1v-8h-1zM1979 1777h1v-27h-1zM1980 1777h1v-44h-1zM1981 1778h1v-49h-1zM1982 1777h1v-51h-1zM1983 1778h1v-49h-1zM1984 1778h1v-45h-1zM1985 1777h1v-45h-1zM1986 1774h1v-22h-1zM1987 1758h1v-4h-1zM1988 1774h1v-2h-1zM1991 1778h1v-2h-1zM1992 1771h1v-10h-1zM1993 1778h1v-2h-1zM1994 1777h1v-10h-1zM1995 1777h1v-6h-1zM1996 1767h1v-13h-1zM1997 1769h1v-8h-1zM1998 1727h1v-31h-1zM1999 1777h1v-16h-1zM2000 1777h1v-35h-1zM2001 1773h1v-9h-1zM2002 1766h1v-12h-1zM2003 1744h1v-26h-1zM2004 1766h1v-12h-1zM2005 1756h1v-2h-1zM2006 1734h1v-7h-1zM2007 1757h1v-3h-1zM2008 1759h1v-3h-1zM2009 1769h1v-2h-1zM2011 1782h1v-4h-1zM2012 1777h1v-6h-1zM2013 1777h1v-8h-1zM2014 1778h2v-10h-2zM2016 1777h1v-9h-1zM2017 1778h1v-10h-1zM2018 1777h1v-11h-1zM2019 1777h1v-10h-1zM2020 1778h1v-14h-1zM2021 1777h1v-15h-1zM2022 1776h1v-14h-1zM2023 1775h1v-14h-1zM2024 1773h1v-12h-1zM2025 1771h1v-10h-1zM2026 1771h1v-13h-1zM2027 1769h1v-10h-1zM2028 1768h1v-11h-1zM2029 1767h2v-7h-2zM2031 1766h1v-7h-1zM2032 1768h1v-9h-1zM2033 1767h1v-7h-1zM2034 1766h1v-6h-1zM2035 1767h1v-8h-1zM2036 1766h1v-6h-1zM2037 1768h1v-10h-1zM2038 1769h1v-9h-1zM2039 1770h1v-11h-1zM2040 1768h1v-9h-1zM2041 1769h1v-9h-1zM2042 1765h1v-9h-1zM2043 1777h1v-4h-1zM2044 1778h1v-15h-1zM2045 1769h1v-27h-1zM2046 1777h1v-14h-1zM2047 1774h1v-2h-1zM2048 1763h1v-3h-1zM2049 1769h1v-26h-1zM2050 1756h1v-7h-1zM2051 1774h1v-9h-1zM2052 1760h1v-8h-1zM2053 1759h1v-13h-1zM2054 1752h1v-37h-1zM2055 1750h1v-4h-1zM2056 1777h1v-44h-1zM2057 1766h1v-6h-1zM2058 1778h1v-18h-1zM2059 1766h1v-21h-1zM2060 1777h1v-13h-1zM2062 1778h1v-4h-1zM2066 1777h1v-2h-1zM2067 1777h1v-11h-1zM2068 1765h1v-2h-1zM2069 1761h1v-16h-1zM2070 1753h1v-8h-1zM2071 1771h1v-3h-1zM2072 1784h1v-4h-1zM2073 1778h1v-9h-1zM2074 1778h1v-6h-1zM2075 1778h1v-16h-1zM2076 1777h1v-5h-1zM2078 1756h1v-19h-1zM2079 1731h1v-36h-1zM2080 1732h1v-35h-1zM2081 1734h1v-36h-1zM2082 1736h1v-34h-1zM2083 1737h1v-32h-1zM2084 1739h1v-31h-1zM2085 1740h1v-30h-1zM2086 1741h1v-30h-1zM2087 1742h1v-28h-1zM2088 1744h1v-29h-1zM2089 1745h1v-28h-1zM2090 1746h1v-27h-1zM2091 1748h2v-26h-2zM2093 1748h1v-25h-1zM2094 1749h1v-25h-1zM2095 1750h1v-24h-1zM2096 1751h1v-24h-1zM2097 1750h1v-23h-1zM2098 1751h1v-22h-1zM2099 1751h2v-20h-2zM2101 1739h1v-7h-1zM2102 1752h1v-19h-1zM2103 1753h1v-18h-1zM2104 1752h1v-16h-1zM2105 1752h1v-15h-1zM2106 1753h1v-13h-1zM2107 1752h1v-12h-1zM2108 1753h1v-10h-1zM2109 1752h1v-7h-1zM2110 1754h1v-8h-1zM2111 1753h1v-6h-1zM2113 1754h1v-4h-1zM2114 1756h1v-4h-1zM2115 1759h1v-6h-1zM2116 1761h1v-6h-1zM2117 1762h1v-5h-1zM2118 1765h1v-7h-1zM2119 1765h1v-6h-1zM2120 1768h1v-6h-1zM2121 1770h1v-5h-1zM2122 1771h1v-5h-1zM2123 1773h1v-5h-1zM2124 1775h1v-5h-1zM2125 1776h1v-4h-1zM2126 1777h1v-4h-1zM2127 1777h1v-3h-1zM2128 1778h1v-3h-1zM2129 1778h1v-2h-1zM2130 1780h1v-1h-1zM2131 1782h1v-3h-1zM2132 1782h2v-2h-2zM2134 1783h3v-1h-3zM2138 1784h1v-1h-1zM2142 1784h2v-1h-2zM2157 1784h1v-6h-1zM2158 1778h1v-8h-1zM2159 1765h1v-7h-1zM2160 1766h1v-48h-1zM2161 1777h1v-19h-1zM2162 1778h1v-45h-1zM2163 1735h1v-1h-1zM2164 1741h1v-44h-1zM2165 1755h1v-21h-1zM2166 1778h1v-10h-1zM2167 1777h1v-14h-1zM2168 1762h1v-2h-1zM2169 1777h1v-37h-1zM2170 1765h1v-8h-1zM2171 1735h1v-14h-1zM2172 1761h1v-4h-1zM2173 1764h1v-8h-1zM2174 1775h1v-7h-1zM2175 1773h1v-17h-1zM2176 1760h1v-35h-1zM2177 1773h1v-17h-1zM2178 1777h1v-2h-1zM2179 1784h1v-4h-1zM2180 1776h1v-11h-1zM2181 1769h1v-22h-1zM2182 1776h1v-11h-1zM2184 1770h1v-3h-1zM2185 1756h1v-3h-1zM2186 1748h1v-19h-1zM2187 1747h1v-20h-1zM2188 1748h1v-22h-1zM2189 1745h1v-15h-1zM2190 1745h1v-20h-1zM2191 1747h1v-19h-1zM2192 1745h1v-18h-1zM2193 1746h1v-23h-1zM2194 1752h1v-22h-1zM2195 1754h1v-18h-1zM2196 1749h1v-14h-1zM2197 1752h1v-18h-1zM2198 1765h1v-9h-1zM2203 1783h1v-3h-1zM2204 1778h1v-5h-1zM2205 1783h1v-3h-1zM2209 1777h1v-1h-1zM2210 1772h1v-10h-1zM2211 1778h1v-6h-1zM2213 1756h1v-3h-1zM2214 1777h1v-5h-1zM2215 1777h1v-16h-1zM2216 1760h1v-4h-1zM2217 1769h1v-39h-1zM2218 1776h1v-20h-1zM2220 1784h1v-7h-1zM2221 1769h1v-25h-1zM2222 1768h1v-2h-1zM2223 1769h1v-39h-1zM2224 1776h1v-10h-1zM2225 1781h1v-1h-1zM2226 1784h1v-3h-1zM2227 1784h1v-6h-1zM2228 1784h1v-3h-1zM2229 1778h1v-2h-1zM2230 1777h1v-16h-1zM2231 1768h1v-2h-1zM2232 1774h1v-28h-1zM2233 1774h1v-8h-1zM2234 1778h1v-2h-1zM2235 1784h1v-4h-1zM2236 1777h1v-3h-1zM2237 1784h1v-4h-1zM2238 1774h1v-2h-1zM2239 1778h1v-1h-1zM2240 1735h1v-3h-1zM2241 1685h1v-5h-1zM2242 1685h2v-7h-2zM2244 1684h1v-7h-1zM2245 1684h1v-6h-1zM2246 1683h1v-5h-1zM2247 1684h1v-7h-1zM2248 1685h1v-8h-1zM2249 1684h1v-7h-1zM2250 1685h1v-7h-1zM2251 1686h1v-7h-1zM2252 1686h1v-8h-1zM2253 1735h1v-4h-1zM2254 1767h1v-5h-1zM2255 1761h1v-35h-1zM2256 1775h1v-13h-1zM2260 1778h1v-25h-1zM2261 1739h1v-2h-1zM2262 1777h2v-22h-2zM2264 1777h1v-25h-1zM2265 1777h1v-9h-1zM2266 1777h1v-4h-1zM2267 1778h1v-16h-1zM2268 1777h1v-4h-1zM2269 1777h1v-2h-1zM2270 1782h1v-3h-1zM2271 1777h1v-11h-1zM2272 1755h1v-8h-1zM2273 1766h1v-35h-1zM2274 1762h1v-30h-1zM2275 1766h1v-37h-1zM2276 1763h1v-31h-1zM2277 1763h1v-29h-1zM2278 1762h1v-31h-1zM2279 1771h1v-22h-1zM2280 1777h1v-10h-1zM2319 1758h1v-8h-1zM2320 1734h1v-20h-1zM2321 1732h1v-17h-1zM2322 1734h1v-19h-1zM2323 1735h3v-20h-3zM2326 1736h1v-20h-1zM2327 1737h1v-21h-1zM2328 1738h1v-22h-1zM2329 1761h1v-12h-1zM2333 1739h1v-11h-1zM2334 1695h1v-21h-1zM2335 1693h1v-22h-1zM2336 1695h1v-22h-1zM2337 1693h1v-21h-1zM2338 1694h1v-21h-1zM2339 1694h1v-22h-1zM2340 1692h1v-21h-1zM2341 1694h1v-21h-1zM2342 1739h1v-10h-1zM2346 1768h1v-26h-1zM2347 1755h1v-50h-1zM2348 1755h1v-47h-1zM2349 1752h1v-41h-1zM2350 1769h1v-20h-1zM2354 1778h1v-7h-1zM2355 1777h1v-33h-1zM2356 1777h1v-6h-1zM2357 1778h1v-40h-1zM2358 1778h1v-111h-1zM2359 1778h1v-40h-1zM2363 1760h1v-13h-1zM2364 1735h1v-23h-1zM2365 1735h1v-24h-1zM2366 1733h1v-22h-1zM2367 1734h1v-24h-1zM2368 1733h1v-22h-1zM2369 1732h1v-21h-1zM2370 1733h1v-23h-1zM2371 1732h1v-20h-1zM2372 1732h1v-22h-1zM2373 1731h1v-19h-1zM2374 1729h1v-17h-1zM2375 1728h1v-17h-1zM2376 1728h1v-18h-1zM2377 1726h1v-15h-1zM2378 1725h1v-15h-1zM2379 1725h1v-14h-1zM2380 1726h1v-16h-1zM2381 1724h1v-13h-1zM2382 1725h1v-14h-1zM2383 1724h1v-12h-1zM2384 1723h1v-12h-1zM2385 1723h1v-13h-1zM2386 1753h1v-6h-1zM2390 1766h1v-8h-1zM2391 1719h1v-31h-1zM2392 1766h1v-8h-1zM2395 1777h1v-1h-1zM2396 1777h1v-12h-1zM2397 1777h1v-1h-1zM2398 1784h1v-3h-1zM2399 1777h1v-2h-1zM2400 1784h1v-3h-1zM2401 1757h1v-2h-1zM2402 1728h1v-4h-1zM2403 1757h1v-2h-1zM2404 1778h1v-6h-1zM2405 1777h1v-18h-1zM2406 1778h1v-6h-1zM2407 1784h1v-6h-1zM2408 1777h1v-9h-1zM2409 1784h1v-6h-1zM2415 1777h1v-13h-1zM2416 1778h1v-1h-1zM2420 1777h1v-3h-1zM2421 1777h1v-23h-1zM2422 1777h1v-3h-1zM2439 1777h1v-15h-1zM2449 1778h1v-5h-1zM2450 1778h1v-27h-1zM2451 1778h1v-5h-1zM2461 1776h1v-3h-1zM2462 1756h1v-11h-1zM2463 1776h1v-3h-1zM2468 1777h1v-5h-1zM2469 1772h1v-63h-1zM2470 1777h1v-115h-1zM2471 1777h1v-68h-1zM2472 1775h1v-3h-1zM2473 1757h1v-22h-1zM2474 1764h1v-92h-1zM2475 1761h1v-26h-1zM2479 1774h1v-2h-1zM2481 1777h1v-27h-1zM2482 1753h1v-1h-1zM2483 1756h1v-4h-1zM2484 1758h1v-7h-1zM2485 1768h1v-4h-1zM2486 1775h1v-1h-1zM2489 1777h1v-41h-1zM2490 1777h1v-102h-1zM2491 1777h1v-41h-1zM2495 1768h2v-3h-2zM2497 1768h1v-2h-1zM2498 1768h1v-3h-1zM2499 1768h1v-1h-1zM2500 1769h1v-5h-1zM2501 1769h1v-4h-1zM2502 1769h1v-3h-1zM2503 1767h1v-2h-1zM2504 1767h1v-1h-1zM2505 1769h1v-4h-1zM2506 1767h1v-3h-1zM2507 1767h2v-5h-2zM2509 1769h1v-11h-1zM2510 1768h1v-10h-1zM2511 1769h1v-13h-1zM2512 1767h1v-14h-1zM2513 1768h1v-16h-1zM2514 1767h1v-13h-1zM2515 1769h1v-17h-1zM2516 1768h1v-14h-1zM2517 1767h1v-17h-1zM2518 1769h1v-17h-1zM2519 1768h1v-16h-1zM2520 1767h1v-15h-1zM2521 1770h1v-18h-1zM2522 1767h1v-14h-1zM2523 1766h1v-12h-1zM2524 1767h1v-16h-1zM2525 1767h1v-14h-1zM2526 1767h1v-13h-1zM2527 1768h1v-11h-1zM2528 1769h1v-11h-1zM2529 1768h1v-11h-1zM2530 1769h1v-9h-1zM2531 1769h1v-10h-1zM2532 1769h1v-8h-1zM2533 1768h1v-4h-1zM2534 1769h2v-5h-2zM2536 1766h1v-1h-1zM2537 1768h1v-2h-1zM2538 1767h1v-3h-1zM2539 1769h1v-5h-1zM2540 1767h2v-3h-2zM2542 1767h2v-2h-2zM2544 1767h1v-1h-1zM2545 1768h1v-3h-1zM2546 1768h1v-4h-1zM2547 1769h1v-2h-1zM2548 1767h1v-1h-1zM2549 1777h1v-2h-1zM2568 1777h1v-1h-1zM2571 1784h1v-5h-1zM2572 1778h1v-11h-1zM2573 1784h1v-5h-1zM2584 1778h1v-2h-1zM2585 1776h1v-6h-1zM2586 1775h1v-7h-1zM2587 1774h1v-4h-1zM2588 1778h1v-11h-1zM2589 1776h1v-6h-1zM2590 1777h1v-6h-1zM2591 1776h1v-6h-1zM2592 1776h1v-8h-1zM2593 1777h2v-8h-2zM2595 1774h1v-4h-1zM2596 1775h1v-6h-1zM2597 1777h1v-1h-1zM2602 1777h1v-7h-1zM2603 1777h1v-21h-1zM2604 1777h1v-33h-1zM2605 1777h1v-21h-1zM2606 1777h1v-7h-1zM2611 1776h1v-6h-1zM2612 1778h1v-18h-1zM2613 1777h1v-7h-1zM2614 1777h1v-1h-1zM2615 1778h1v-7h-1zM2616 1778h1v-2h-1z" fill="#ffc328"/><path d="M568 1773h1v-2h-1zM569 1763h1v-5h-1zM570 1755h1v-8h-1zM571 1747h1v-10h-1zM572 1755h1v-8h-1zM573 1763h1v-5h-1zM574 1773h1v-2h-1zM595 1778h1v-14h-1zM596 1759h1v-25h-1zM597 1778h1v-14h-1zM617 1777h1v-1h-1zM618 1777h1v-2h-1zM619 1778h2v-3h-2zM621 1777h1v-3h-1zM622 1778h1v-2h-1zM623 1778h2v-4h-2zM625 1778h1v-5h-1zM626 1777h1v-5h-1zM627 1778h1v-4h-1zM628 1772h1v-1h-1zM630 1778h1v-6h-1zM631 1778h1v-7h-1zM632 1772h1v-1h-1zM633 1778h1v-6h-1zM634 1777h2v-8h-2zM636 1778h1v-6h-1zM637 1770h1v-1h-1zM638 1777h1v-6h-1zM639 1777h1v-7h-1zM640 1777h1v-8h-1zM641 1777h1v-4h-1zM642 1771h1v-1h-1zM643 1778h1v-5h-1zM644 1777h1v-6h-1zM645 1777h1v-4h-1zM646 1777h1v-6h-1zM647 1778h1v-4h-1zM648 1777h1v-5h-1zM649 1778h1v-5h-1zM651 1778h2v-6h-2zM653 1778h1v-3h-1zM654 1777h1v-3h-1zM655 1777h1v-2h-1zM656 1778h1v-2h-1zM657 1778h1v-3h-1zM658 1778h1v-2h-1zM675 1781h1v-1h-1zM676 1777h1v-2h-1zM677 1781h1v-1h-1zM678 1780h1v-1h-1zM680 1784h1v-6h-1zM681 1777h1v-7h-1zM682 1784h1v-6h-1zM683 1778h1v-2h-1zM684 1783h1v-2h-1zM798 1739h1v-6h-1zM799 1746h1v-3h-1zM800 1733h1v-4h-1zM801 1729h1v-12h-1zM802 1735h1v-1h-1zM803 1726h1v-4h-1zM804 1729h1v-4h-1zM805 1738h1v-9h-1zM807 1742h1v-15h-1zM809 1733h1v-1h-1zM810 1752h1v-6h-1zM811 1748h1v-16h-1zM812 1743h1v-1h-1zM813 1755h1v-6h-1zM815 1743h1v-5h-1zM816 1733h1v-2h-1zM817 1743h1v-5h-1zM818 1748h1v-24h-1zM819 1739h1v-21h-1zM823 1777h1v-5h-1zM824 1777h1v-17h-1zM825 1777h1v-16h-1zM826 1778h1v-17h-1zM827 1777h1v-17h-1zM828 1777h1v-15h-1zM829 1778h1v-17h-1zM830 1778h1v-18h-1zM831 1778h1v-17h-1zM832 1778h2v-16h-2zM834 1777h1v-17h-1zM835 1778h3v-16h-3zM838 1778h1v-15h-1zM839 1776h1v-13h-1zM840 1777h1v-16h-1zM841 1776h1v-14h-1zM842 1776h1v-15h-1zM843 1775h1v-14h-1zM844 1777h1v-17h-1zM845 1775h1v-14h-1zM846 1777h1v-17h-1zM847 1776h1v-16h-1zM848 1775h1v-15h-1zM849 1774h1v-13h-1zM850 1773h2v-14h-2zM852 1774h1v-16h-1zM853 1773h1v-15h-1zM854 1773h1v-14h-1zM855 1773h1v-15h-1zM856 1770h1v-14h-1zM857 1770h1v-13h-1zM858 1770h1v-12h-1zM859 1767h1v-10h-1zM860 1767h1v-12h-1zM861 1766h1v-10h-1zM862 1766h1v-12h-1zM863 1764h1v-9h-1zM864 1763h1v-9h-1zM865 1762h1v-8h-1zM866 1761h1v-7h-1zM867 1761h1v-9h-1zM868 1759h1v-5h-1zM869 1758h1v-6h-1zM870 1757h1v-4h-1zM871 1757h1v-6h-1zM872 1756h1v-6h-1zM873 1754h1v-3h-1zM874 1752h1v-1h-1zM875 1752h1v-2h-1zM876 1778h1v-28h-1zM877 1752h1v-2h-1zM878 1751h1v-2h-1zM879 1753h1v-6h-1zM880 1753h1v-5h-1zM881 1751h1v-3h-1zM882 1753h1v-4h-1zM883 1752h1v-3h-1zM884 1753h2v-3h-2zM886 1754h1v-3h-1zM887 1753h1v-2h-1zM888 1753h1v-3h-1zM889 1754h1v-2h-1zM890 1754h3v-1h-3zM893 1778h1v-25h-1zM894 1777h1v-24h-1zM895 1777h1v-22h-1zM896 1778h1v-21h-1zM897 1777h1v-21h-1zM898 1777h1v-19h-1zM899 1777h1v-21h-1zM900 1778h1v-21h-1zM901 1777h2v-17h-2zM903 1778h1v-19h-1zM904 1778h2v-17h-2zM906 1778h2v-16h-2zM908 1778h1v-4h-1zM927 1769h1v-2h-1zM928 1754h1v-3h-1zM929 1741h1v-4h-1zM930 1730h1v-6h-1zM931 1741h1v-4h-1zM932 1754h1v-3h-1zM933 1769h1v-2h-1zM972 1753h1v-1h-1zM973 1774h1v-44h-1zM974 1757h1v-5h-1zM1067 1776h1v-2h-1zM1070 1773h1v-1h-1zM1072 1766h1v-4h-1zM1073 1767h1v-4h-1zM1074 1760h1v-2h-1zM1075 1756h1v-2h-1zM1076 1778h1v-13h-1zM1077 1766h1v-3h-1zM1078 1762h1v-6h-1zM1079 1752h1v-3h-1zM1080 1757h1v-4h-1zM1081 1753h1v-2h-1zM1083 1755h1v-3h-1zM1084 1745h1v-2h-1zM1085 1753h1v-5h-1zM1086 1748h1v-8h-1zM1087 1746h1v-1h-1zM1089 1750h1v-2h-1zM1090 1749h1v-7h-1zM1091 1755h1v-10h-1zM1092 1751h1v-2h-1zM1093 1757h1v-9h-1zM1094 1759h1v-1h-1zM1095 1757h1v-1h-1zM1120 1771h1v-4h-1zM1122 1765h1v-3h-1zM1123 1770h1v-2h-1zM1124 1756h1v-5h-1zM1125 1758h1v-4h-1zM1126 1762h1v-12h-1zM1127 1764h1v-3h-1zM1128 1773h1v-13h-1zM1129 1775h1v-4h-1zM1130 1773h1v-5h-1zM1161 1756h1v-4h-1zM1162 1759h1v-8h-1zM1163 1750h1v-4h-1zM1164 1755h1v-5h-1zM1165 1742h1v-1h-1zM1166 1745h1v-6h-1zM1167 1755h1v-6h-1zM1168 1738h1v-1h-1zM1169 1750h1v-16h-1zM1170 1749h1v-3h-1zM1171 1741h1v-3h-1zM1172 1751h1v-13h-1zM1173 1755h1v-9h-1zM1174 1747h1v-6h-1zM1175 1749h1v-9h-1zM1176 1736h1v-3h-1zM1177 1741h1v-3h-1zM1178 1755h1v-9h-1zM1179 1743h1v-6h-1zM1180 1756h1v-12h-1zM1181 1750h1v-11h-1zM1182 1749h1v-3h-1zM1183 1741h1v-5h-1zM1184 1755h1v-10h-1zM1185 1757h1v-12h-1zM1186 1756h1v-7h-1zM1187 1740h1v-6h-1zM1188 1750h1v-4h-1zM1189 1739h1v-1h-1zM1190 1750h1v-1h-1zM1191 1754h1v-7h-1zM1192 1753h1v-6h-1zM1193 1737h1v-2h-1zM1194 1754h1v-16h-1zM1195 1750h1v-4h-1zM1196 1741h1v-3h-1zM1197 1751h1v-6h-1zM1198 1748h1v-7h-1zM1199 1734h1v-4h-1zM1200 1748h1v-6h-1zM1201 1751h1v-8h-1zM1202 1754h1v-14h-1zM1203 1755h1v-19h-1zM1204 1755h1v-20h-1zM1205 1756h1v-17h-1zM1206 1757h1v-6h-1zM1207 1755h1v-14h-1zM1208 1758h1v-6h-1zM1209 1757h1v-11h-1zM1210 1762h1v-9h-1zM1217 1765h1v-6h-1zM1218 1740h1v-12h-1zM1219 1765h1v-6h-1zM1249 1784h1v-5h-1zM1250 1777h1v-6h-1zM1251 1777h1v-4h-1zM1252 1777h1v-6h-1zM1253 1784h1v-6h-1zM1263 1778h1v-12h-1zM1264 1777h1v-46h-1zM1265 1778h1v-12h-1zM1269 1784h1v-3h-1zM1270 1772h1v-6h-1zM1271 1784h1v-3h-1zM1278 1784h1v-1h-1zM1279 1769h1v-10h-1zM1280 1751h1v-17h-1zM1281 1751h1v-16h-1zM1282 1753h1v-21h-1zM1283 1754h1v-22h-1zM1284 1769h1v-10h-1zM1290 1784h1v-5h-1zM1291 1777h1v-6h-1zM1292 1784h1v-5h-1zM1306 1777h1v-2h-1zM1307 1778h1v-12h-1zM1308 1777h1v-19h-1zM1309 1777h2v-20h-2zM1311 1778h1v-20h-1zM1312 1777h1v-19h-1zM1313 1777h1v-18h-1zM1314 1778h1v-20h-1zM1315 1777h1v-18h-1zM1316 1778h1v-20h-1zM1317 1777h1v-19h-1zM1318 1778h1v-20h-1zM1319 1777h3v-18h-3zM1322 1777h1v-19h-1zM1323 1778h1v-19h-1zM1324 1778h1v-21h-1zM1325 1778h2v-20h-2zM1327 1777h1v-20h-1zM1328 1778h1v-19h-1zM1329 1777h1v-18h-1zM1330 1777h1v-19h-1zM1331 1778h1v-19h-1zM1332 1778h2v-20h-2zM1334 1777h1v-18h-1zM1335 1778h1v-19h-1zM1336 1777h1v-19h-1zM1337 1778h1v-19h-1zM1338 1777h1v-18h-1zM1339 1778h1v-11h-1zM1340 1777h1v-1h-1zM1368 1778h1v-9h-1zM1369 1778h1v-39h-1zM1370 1777h1v-8h-1zM1377 1777h1v-10h-1zM1378 1777h1v-26h-1zM1379 1777h1v-40h-1zM1380 1777h1v-26h-1zM1381 1777h1v-10h-1zM1382 1753h1v-11h-1zM1383 1721h1v-23h-1zM1384 1721h1v-22h-1zM1385 1722h1v-22h-1zM1386 1720h1v-20h-1zM1387 1722h1v-24h-1zM1388 1722h1v-22h-1zM1389 1753h1v-11h-1zM1618 1777h1v-10h-1zM1619 1777h1v-43h-1zM1620 1778h1v-11h-1zM1624 1777h1v-2h-1zM1625 1778h1v-14h-1zM1626 1777h1v-15h-1zM1627 1778h1v-17h-1zM1628 1777h1v-17h-1zM1629 1778h1v-20h-1zM1630 1777h2v-21h-2zM1632 1777h1v-23h-1zM1633 1777h1v-24h-1zM1634 1778h2v-28h-2zM1636 1778h1v-29h-1zM1637 1778h1v-31h-1zM1638 1777h1v-30h-1zM1639 1777h1v-32h-1zM1640 1778h1v-33h-1zM1641 1777h1v-34h-1zM1642 1778h3v-36h-3zM1645 1777h1v-35h-1zM1646 1778h1v-37h-1zM1647 1778h1v-38h-1zM1650 1744h1v-1h-1zM1652 1777h1v-28h-1zM1653 1777h1v-26h-1zM1654 1778h1v-26h-1zM1655 1755h1v-1h-1zM1656 1757h1v-1h-1zM1660 1778h1v-9h-1zM1662 1777h1v-4h-1zM1666 1784h1v-4h-1zM1707 1776h1v-7h-1zM1708 1767h1v-12h-1zM1709 1760h1v-23h-1zM1710 1760h1v-22h-1zM1711 1761h2v-24h-2zM1713 1767h1v-12h-1zM1714 1776h1v-7h-1zM1737 1766h1v-12h-1zM1738 1737h1v-31h-1zM1739 1766h1v-12h-1zM1768 1773h1v-2h-1zM1769 1752h1v-8h-1zM1770 1773h1v-2h-1zM1779 1768h1v-19h-1zM1780 1751h1v-35h-1zM1781 1732h1v-49h-1zM1782 1733h1v-52h-1zM1783 1727h1v-44h-1zM1784 1725h1v-40h-1zM1785 1722h1v-38h-1zM1786 1719h1v-33h-1zM1787 1718h1v-32h-1zM1788 1716h1v-31h-1zM1789 1713h1v-24h-1zM1790 1717h1v-22h-1zM1791 1723h1v-19h-1zM1792 1730h1v-21h-1zM1793 1753h1v-15h-1zM1794 1770h1v-7h-1zM1795 1784h1v-3h-1zM1796 1784h1v-5h-1zM1797 1784h1v-3h-1zM1799 1784h1v-5h-1zM1800 1778h1v-5h-1zM1801 1758h1v-7h-1zM1802 1777h1v-8h-1zM1803 1774h1v-15h-1zM1804 1741h1v-4h-1zM1805 1761h1v-2h-1zM1806 1770h1v-11h-1zM1807 1749h1v-28h-1zM1808 1770h1v-11h-1zM1809 1778h1v-3h-1zM1810 1784h1v-3h-1zM1812 1775h1v-1h-1zM1813 1753h1v-3h-1zM1814 1775h1v-1h-1zM1815 1778h1v-1h-1zM1816 1767h1v-30h-1zM1817 1749h1v-67h-1zM1818 1767h1v-30h-1zM1819 1773h1v-7h-1zM1820 1778h1v-25h-1zM1821 1754h1v-10h-1zM1822 1723h1v-15h-1zM1823 1757h1v-13h-1zM1824 1750h1v-18h-1zM1825 1762h1v-6h-1zM1826 1778h1v-7h-1zM1827 1777h1v-18h-1zM1828 1777h1v-22h-1zM1829 1777h1v-23h-1zM1830 1778h1v-22h-1zM1831 1777h1v-25h-1zM1832 1778h1v-25h-1zM1833 1778h1v-27h-1zM1834 1778h2v-26h-2zM1836 1778h1v-23h-1zM1837 1778h1v-22h-1zM1838 1777h1v-19h-1zM1839 1778h1v-16h-1zM1840 1777h1v-3h-1zM1849 1778h1v-3h-1zM1850 1777h1v-8h-1zM1851 1777h1v-2h-1zM1852 1760h1v-9h-1zM1853 1734h1v-12h-1zM1854 1703h1v-13h-1zM1855 1736h1v-39h-1zM1856 1731h1v-34h-1zM1857 1736h1v-31h-1zM1858 1731h1v-27h-1zM1859 1737h1v-29h-1zM1860 1733h1v-19h-1zM1861 1734h1v-16h-1zM1862 1753h1v-11h-1zM1863 1768h1v-3h-1zM1864 1778h1v-1h-1zM1865 1778h1v-2h-1zM1866 1777h1v-6h-1zM1867 1777h1v-1h-1zM1868 1776h1v-6h-1zM1869 1780h1v-3h-1zM1870 1778h1v-1h-1zM1871 1778h1v-14h-1zM1872 1784h1v-7h-1zM1873 1784h1v-4h-1zM1874 1784h1v-7h-1zM1875 1784h1v-4h-1zM1879 1778h1v-9h-1zM1880 1778h1v-6h-1zM1881 1784h1v-5h-1zM1885 1778h1v-15h-1zM1886 1757h1v-14h-1zM1887 1777h1v-14h-1zM1888 1784h1v-4h-1zM1889 1784h1v-6h-1zM1890 1778h1v-9h-1zM1891 1784h1v-7h-1zM1892 1778h1v-7h-1zM1893 1784h1v-7h-1zM1894 1777h1v-8h-1zM1895 1778h1v-24h-1zM1896 1777h1v-22h-1zM1897 1777h1v-24h-1zM1898 1778h1v-25h-1zM1899 1778h1v-23h-1zM1900 1777h1v-23h-1zM1901 1777h2v-22h-2zM1903 1778h1v-9h-1zM1904 1767h1v-11h-1zM1905 1778h1v-9h-1zM1906 1784h1v-4h-1zM1907 1772h1v-9h-1zM1908 1761h1v-17h-1zM1909 1772h1v-9h-1zM1910 1777h1v-10h-1zM1911 1777h1v-11h-1zM1912 1778h1v-10h-1zM1913 1778h1v-11h-1zM1914 1778h1v-12h-1zM1915 1777h2v-11h-2zM1917 1777h1v-9h-1zM1918 1778h2v-9h-2zM1920 1777h2v-8h-2zM1922 1777h1v-11h-1zM1923 1778h1v-10h-1zM1924 1778h1v-11h-1zM1925 1778h1v-13h-1zM1926 1778h1v-11h-1zM1927 1777h1v-11h-1zM1928 1777h1v-12h-1zM1929 1778h1v-14h-1zM1930 1777h1v-10h-1zM1931 1778h1v-14h-1zM1932 1777h1v-14h-1zM1933 1778h1v-13h-1zM1934 1778h1v-14h-1zM1935 1772h1v-6h-1zM1936 1778h1v-2h-1zM1937 1784h1v-6h-1zM1938 1777h1v-12h-1zM1939 1770h1v-7h-1zM1940 1751h1v-11h-1zM1941 1753h1v-10h-1zM1942 1755h1v-14h-1zM1943 1753h1v-18h-1zM1944 1751h1v-14h-1zM1945 1748h1v-12h-1zM1946 1750h1v-14h-1zM1947 1752h1v-10h-1zM1948 1752h1v-11h-1zM1949 1754h1v-9h-1zM1950 1769h1v-16h-1zM1951 1753h1v-27h-1zM1952 1775h1v-15h-1zM1953 1784h1v-4h-1zM1954 1778h1v-2h-1zM1955 1784h1v-4h-1zM1959 1777h1v-1h-1zM1960 1784h1v-3h-1zM1961 1778h1v-1h-1zM1962 1774h1v-4h-1zM1963 1779h1v-2h-1zM1965 1777h1v-4h-1zM1966 1774h1v-20h-1zM1967 1778h1v-5h-1zM1968 1777h1v-1h-1zM1969 1772h1v-2h-1zM1970 1777h1v-1h-1zM1974 1778h1v-5h-1zM1975 1778h1v-20h-1zM1976 1771h1v-5h-1zM1977 1762h1v-10h-1zM1978 1769h1v-3h-1zM1979 1784h1v-1h-1zM1986 1777h1v-3h-1zM1987 1760h1v-2h-1zM1988 1777h1v-3h-1zM1993 1784h1v-2h-1zM1994 1784h1v-4h-1zM1995 1784h1v-2h-1zM1997 1784h1v-3h-1zM1998 1784h1v-5h-1zM1999 1784h1v-3h-1zM2000 1784h1v-5h-1zM2001 1777h1v-4h-1zM2002 1784h1v-5h-1zM2003 1778h1v-22h-1zM2004 1754h1v-22h-1zM2005 1760h1v-4h-1zM2006 1777h1v-7h-1zM2007 1777h1v-8h-1zM2008 1778h1v-19h-1zM2009 1777h1v-8h-1zM2011 1784h1v-1h-1zM2012 1782h1v-1h-1zM2013 1783h2v-2h-2zM2016 1783h1v-2h-1zM2017 1783h1v-3h-1zM2018 1784h1v-2h-1zM2019 1781h1v-2h-1zM2020 1780h1v-2h-1zM2022 1777h1v-1h-1zM2023 1777h1v-2h-1zM2024 1776h1v-3h-1zM2025 1776h1v-5h-1zM2026 1775h1v-4h-1zM2027 1773h1v-4h-1zM2028 1772h1v-4h-1zM2029 1772h1v-5h-1zM2030 1773h1v-6h-1zM2031 1770h1v-4h-1zM2032 1771h1v-3h-1zM2033 1771h1v-4h-1zM2034 1770h1v-4h-1zM2035 1769h1v-2h-1zM2036 1772h1v-6h-1zM2037 1771h1v-3h-1zM2038 1772h1v-3h-1zM2039 1771h1v-1h-1zM2040 1772h1v-4h-1zM2041 1772h1v-3h-1zM2042 1777h1v-12h-1zM2043 1784h1v-7h-1zM2044 1763h1v-1h-1zM2045 1742h1v-2h-1zM2046 1763h1v-1h-1zM2047 1778h1v-4h-1zM2048 1778h1v-15h-1zM2049 1778h1v-9h-1zM2050 1778h1v-12h-1zM2051 1777h1v-3h-1zM2052 1778h1v-18h-1zM2053 1777h1v-1h-1zM2055 1784h1v-2h-1zM2057 1784h1v-4h-1zM2058 1760h1v-7h-1zM2059 1745h1v-22h-1zM2060 1764h1v-11h-1zM2066 1775h1v-3h-1zM2067 1766h1v-6h-1zM2068 1763h1v-5h-1zM2069 1771h1v-4h-1zM2070 1778h1v-3h-1zM2072 1780h1v-1h-1zM2073 1769h1v-1h-1zM2074 1769h1v-2h-1zM2075 1762h1v-8h-1zM2076 1772h1v-5h-1zM2078 1737h1v-4h-1zM2079 1695h1v-14h-1zM2080 1697h1v-17h-1zM2081 1698h1v-17h-1zM2082 1702h1v-21h-1zM2083 1705h1v-24h-1zM2084 1708h1v-26h-1zM2085 1710h1v-29h-1zM2086 1711h1v-29h-1zM2087 1714h1v-33h-1zM2088 1715h1v-35h-1zM2089 1717h1v-36h-1zM2090 1719h1v-39h-1zM2091 1722h1v-42h-1zM2092 1722h1v-40h-1zM2093 1723h1v-41h-1zM2094 1724h1v-43h-1zM2095 1726h1v-45h-1zM2096 1727h1v-46h-1zM2097 1727h1v-45h-1zM2098 1729h1v-48h-1zM2099 1731h2v-50h-2zM2101 1732h1v-51h-1zM2102 1731h1v-50h-1zM2103 1723h1v-42h-1zM2104 1712h1v-30h-1zM2105 1711h1v-29h-1zM2106 1718h1v-35h-1zM2107 1719h1v-34h-1zM2108 1727h1v-43h-1zM2109 1730h1v-44h-1zM2110 1738h1v-52h-1zM2111 1744h1v-57h-1zM2112 1749h1v-58h-1zM2113 1750h1v-55h-1zM2114 1752h1v-50h-1zM2115 1753h1v-46h-1zM2116 1755h1v-43h-1zM2117 1757h1v-40h-1zM2118 1758h1v-35h-1zM2119 1759h1v-32h-1zM2120 1762h1v-30h-1zM2121 1765h1v-29h-1zM2122 1766h1v-26h-1zM2123 1768h1v-24h-1zM2124 1770h1v-24h-1zM2125 1772h1v-22h-1zM2126 1773h1v-20h-1zM2127 1774h1v-19h-1zM2128 1775h1v-18h-1zM2129 1776h1v-16h-1zM2130 1778h1v-16h-1zM2131 1778h1v-14h-1zM2132 1777h1v-10h-1zM2133 1778h1v-11h-1zM2134 1778h1v-9h-1zM2135 1777h1v-6h-1zM2136 1777h1v-5h-1zM2137 1778h1v-4h-1zM2138 1778h1v-2h-1zM2140 1784h1v-6h-1zM2141 1784h1v-5h-1zM2142 1783h1v-4h-1zM2143 1783h1v-3h-1zM2144 1783h1v-2h-1zM2145 1784h1v-1h-1zM2157 1778h1v-3h-1zM2158 1770h1v-7h-1zM2159 1777h1v-2h-1zM2160 1777h1v-11h-1zM2161 1758h1v-1h-1zM2162 1733h1v-7h-1zM2163 1771h1v-14h-1zM2164 1777h1v-36h-1zM2165 1777h1v-18h-1zM2166 1768h1v-35h-1zM2167 1763h1v-8h-1zM2168 1760h1v-8h-1zM2169 1739h1v-15h-1zM2170 1757h1v-5h-1zM2171 1777h1v-42h-1zM2172 1777h1v-14h-1zM2173 1777h1v-13h-1zM2174 1777h1v-2h-1zM2175 1777h1v-4h-1zM2176 1777h1v-17h-1zM2177 1778h1v-5h-1zM2178 1775h1v-7h-1zM2179 1780h1v-2h-1zM2180 1777h1v-1h-1zM2181 1778h1v-9h-1zM2182 1777h1v-1h-1zM2184 1777h1v-7h-1zM2185 1777h1v-21h-1zM2186 1777h1v-29h-1zM2187 1777h1v-30h-1zM2188 1777h1v-29h-1zM2189 1777h2v-32h-2zM2191 1778h1v-31h-1zM2192 1778h1v-33h-1zM2193 1778h1v-32h-1zM2194 1778h1v-26h-1zM2195 1777h1v-23h-1zM2196 1777h1v-28h-1zM2197 1778h1v-26h-1zM2198 1778h1v-13h-1zM2199 1778h1v-3h-1zM2203 1784h1v-1h-1zM2204 1784h1v-2h-1zM2205 1784h1v-1h-1zM2209 1776h1v-12h-1zM2210 1762h1v-31h-1zM2211 1772h1v-8h-1zM2212 1778h1v-5h-1zM2213 1777h1v-21h-1zM2214 1772h1v-2h-1zM2215 1761h1v-7h-1zM2216 1778h1v-8h-1zM2217 1777h1v-8h-1zM2218 1778h1v-2h-1zM2221 1777h1v-8h-1zM2223 1777h1v-8h-1zM2224 1778h1v-2h-1zM2225 1784h1v-3h-1zM2226 1781h1v-3h-1zM2227 1778h1v-6h-1zM2228 1781h1v-3h-1zM2229 1776h1v-3h-1zM2230 1761h1v-8h-1zM2231 1777h1v-4h-1zM2232 1777h1v-3h-1zM2233 1784h2v-5h-2zM2235 1778h1v-2h-1zM2236 1774h1v-9h-1zM2237 1778h1v-2h-1zM2238 1784h1v-6h-1zM2239 1774h1v-1h-1zM2240 1774h1v-5h-1zM2241 1774h1v-23h-1zM2242 1772h1v-23h-1zM2243 1772h1v-26h-1zM2244 1769h1v-27h-1zM2245 1768h1v-30h-1zM2246 1766h1v-31h-1zM2247 1765h1v-33h-1zM2248 1762h1v-37h-1zM2249 1758h1v-37h-1zM2250 1754h1v-38h-1zM2251 1751h1v-40h-1zM2252 1747h1v-42h-1zM2253 1764h1v-22h-1zM2254 1778h1v-11h-1zM2255 1778h1v-17h-1zM2256 1778h1v-3h-1zM2260 1753h1v-17h-1zM2261 1777h1v-38h-1zM2262 1755h1v-17h-1zM2263 1755h1v-27h-1zM2264 1752h1v-11h-1zM2265 1784h1v-5h-1zM2266 1784h1v-3h-1zM2267 1784h1v-5h-1zM2268 1784h1v-3h-1zM2269 1784h1v-5h-1zM2270 1784h1v-2h-1zM2271 1766h1v-8h-1zM2272 1747h1v-11h-1zM2273 1724h1v-12h-1zM2274 1727h1v-14h-1zM2275 1728h1v-13h-1zM2276 1731h1v-13h-1zM2277 1727h1v-7h-1zM2278 1729h1v-7h-1zM2279 1749h1v-5h-1zM2280 1767h1v-3h-1zM2319 1774h1v-16h-1zM2320 1759h1v-25h-1zM2321 1754h1v-22h-1zM2322 1749h1v-15h-1zM2323 1743h1v-8h-1zM2324 1738h1v-3h-1zM2325 1746h1v-11h-1zM2326 1754h1v-18h-1zM2327 1759h1v-22h-1zM2328 1767h1v-29h-1zM2329 1778h1v-17h-1zM2333 1769h1v-10h-1zM2334 1747h1v-13h-1zM2335 1736h1v-4h-1zM2336 1778h2v-47h-2zM2338 1777h1v-46h-1zM2339 1777h1v-45h-1zM2340 1778h1v-44h-1zM2341 1737h1v-2h-1zM2342 1764h1v-5h-1zM2346 1775h1v-7h-1zM2347 1765h2v-10h-2zM2349 1763h1v-11h-1zM2350 1774h1v-5h-1zM2363 1777h1v-13h-1zM2364 1778h3v-34h-3zM2367 1777h2v-32h-2zM2369 1777h1v-33h-1zM2370 1777h1v-31h-1zM2371 1778h1v-33h-1zM2372 1777h1v-32h-1zM2373 1778h1v-34h-1zM2374 1778h1v-33h-1zM2375 1777h2v-33h-2zM2377 1777h2v-32h-2zM2379 1777h1v-33h-1zM2380 1778h1v-33h-1zM2381 1778h1v-32h-1zM2382 1777h3v-32h-3zM2385 1778h1v-33h-1zM2386 1778h1v-14h-1zM2390 1777h1v-11h-1zM2391 1777h1v-58h-1zM2392 1777h1v-11h-1zM2395 1776h1v-1h-1zM2396 1765h1v-2h-1zM2397 1776h1v-1h-1zM2398 1777h1v-3h-1zM2399 1775h1v-19h-1zM2400 1778h1v-4h-1zM2401 1778h1v-21h-1zM2402 1777h1v-49h-1zM2403 1778h1v-21h-1zM2404 1772h1v-7h-1zM2405 1759h1v-16h-1zM2406 1772h1v-7h-1zM2407 1778h1v-4h-1zM2408 1768h1v-13h-1zM2409 1777h1v-3h-1zM2458 1777h1v-2h-1zM2459 1777h1v-10h-1zM2460 1778h1v-3h-1zM2467 1784h1v-3h-1zM2469 1784h1v-3h-1zM2472 1777h1v-2h-1zM2473 1778h1v-21h-1zM2474 1778h1v-3h-1zM2475 1772h1v-2h-1zM2476 1758h1v-6h-1zM2477 1772h1v-2h-1zM2479 1770h1v-22h-1zM2480 1760h1v-50h-1zM2481 1745h1v-71h-1zM2482 1740h2v-67h-2zM2484 1747h1v-74h-1zM2485 1762h1v-51h-1zM2486 1774h1v-27h-1zM2494 1777h1v-2h-1zM2495 1770h1v-2h-1zM2496 1771h1v-3h-1zM2497 1769h1v-1h-1zM2498 1778h1v-9h-1zM2499 1769h1v-1h-1zM2500 1770h2v-1h-2zM2502 1771h1v-2h-1zM2503 1771h1v-4h-1zM2504 1768h1v-1h-1zM2505 1771h1v-2h-1zM2506 1770h1v-3h-1zM2507 1769h1v-2h-1zM2508 1771h1v-4h-1zM2509 1771h1v-2h-1zM2510 1771h1v-3h-1zM2511 1778h1v-9h-1zM2512 1769h1v-2h-1zM2513 1771h1v-3h-1zM2514 1769h1v-2h-1zM2515 1777h1v-8h-1zM2516 1771h1v-3h-1zM2517 1771h1v-4h-1zM2518 1777h1v-8h-1zM2519 1770h1v-2h-1zM2520 1771h1v-4h-1zM2521 1778h1v-8h-1zM2522 1771h1v-4h-1zM2523 1769h1v-3h-1zM2524 1770h2v-3h-2zM2526 1769h1v-2h-1zM2527 1772h1v-4h-1zM2528 1778h1v-9h-1zM2529 1777h1v-8h-1zM2530 1770h1v-1h-1zM2531 1777h1v-8h-1zM2532 1772h1v-3h-1zM2533 1770h1v-2h-1zM2534 1778h1v-8h-1zM2535 1770h1v-1h-1zM2536 1771h1v-5h-1zM2537 1770h1v-2h-1zM2538 1768h1v-1h-1zM2539 1770h1v-1h-1zM2540 1770h1v-3h-1zM2541 1769h1v-2h-1zM2542 1771h1v-4h-1zM2543 1769h1v-2h-1zM2544 1770h1v-3h-1zM2545 1772h1v-4h-1zM2546 1770h1v-2h-1zM2547 1767h1v-1h-1zM2548 1771h1v-4h-1zM2549 1784h1v-7h-1zM2602 1770h1v-3h-1zM2603 1756h1v-4h-1zM2604 1744h1v-6h-1zM2605 1756h1v-4h-1zM2606 1770h1v-3h-1z" fill="#00aadc"/><path d="M528 1784h3v-7h-3zM531 1784h2v-6h-2zM533 1784h1v-7h-1zM534 1784h2v-6h-2zM536 1784h1v-7h-1zM537 1782h1v-4h-1zM538 1779h1v-1h-1zM539 1782h1v-5h-1zM540 1784h1v-7h-1zM541 1781h1v-3h-1zM542 1784h1v-7h-1zM543 1781h1v-4h-1zM544 1784h1v-7h-1zM545 1784h3v-6h-3zM548 1784h2v-7h-2zM550 1784h2v-6h-2zM552 1784h1v-7h-1zM553 1784h3v-6h-3zM556 1784h1v-7h-1zM557 1784h1v-6h-1zM558 1784h2v-7h-2zM560 1784h1v-6h-1zM561 1784h1v-7h-1zM562 1784h2v-6h-2zM564 1784h1v-7h-1zM565 1784h2v-6h-2zM567 1781h1v-4h-1zM568 1779h1v-2h-1zM569 1784h3v-7h-3zM572 1784h2v-6h-2zM574 1779h1v-2h-1zM575 1784h2v-6h-2zM577 1784h5v-7h-5zM582 1784h1v-6h-1zM583 1784h1v-11h-1zM584 1784h1v-6h-1zM585 1784h1v-7h-1zM586 1784h2v-6h-2zM588 1784h1v-7h-1zM589 1784h1v-6h-1zM590 1784h1v-7h-1zM591 1784h1v-6h-1zM592 1784h2v-7h-2zM594 1784h2v-6h-2zM596 1784h1v-7h-1zM597 1784h2v-6h-2zM599 1784h2v-7h-2zM601 1784h2v-6h-2zM603 1784h1v-7h-1zM604 1784h3v-6h-3zM607 1784h2v-7h-2zM609 1784h3v-6h-3zM612 1784h3v-7h-3zM615 1784h1v-6h-1zM616 1784h3v-7h-3zM619 1784h2v-6h-2zM621 1784h1v-7h-1zM622 1784h4v-6h-4zM626 1784h1v-7h-1zM627 1784h1v-6h-1zM628 1784h2v-7h-2zM630 1784h4v-6h-4zM634 1784h2v-7h-2zM636 1784h1v-6h-1zM637 1784h6v-7h-6zM643 1784h1v-6h-1zM644 1784h3v-7h-3zM647 1784h1v-6h-1zM648 1784h1v-7h-1zM649 1784h1v-6h-1zM650 1784h1v-7h-1zM651 1784h3v-6h-3zM654 1784h2v-7h-2zM656 1784h5v-6h-5zM661 1784h1v-7h-1zM662 1784h3v-6h-3zM665 1784h2v-7h-2zM667 1778h1v-1h-1zM668 1784h1v-6h-1zM669 1784h2v-7h-2zM671 1778h1v-1h-1zM672 1784h1v-7h-1zM673 1784h2v-6h-2zM675 1780h1v-3h-1zM676 1784h1v-6h-1zM677 1780h1v-3h-1zM678 1779h1v-2h-1zM679 1778h1v-1h-1zM681 1784h1v-7h-1zM683 1780h1v-2h-1zM684 1779h1v-1h-1zM685 1784h1v-6h-1zM686 1784h1v-7h-1zM687 1784h2v-6h-2zM695 1778h1v-1h-1zM703 1778h1v-1h-1zM705 1778h1v-1h-1zM708 1778h1v-1h-1zM710 1778h1v-1h-1zM712 1784h1v-6h-1zM716 1778h1v-1h-1zM719 1778h1v-1h-1zM721 1778h2v-1h-2zM725 1784h1v-6h-1zM726 1778h1v-1h-1zM731 1778h2v-1h-2zM734 1784h1v-6h-1zM735 1778h2v-1h-2zM738 1778h1v-1h-1zM739 1777h1v-2h-1zM740 1772h1v-16h-1zM741 1777h1v-2h-1zM744 1778h1v-1h-1zM748 1778h2v-1h-2zM751 1778h2v-1h-2zM754 1784h2v-6h-2zM758 1778h1v-1h-1zM759 1784h2v-6h-2zM761 1778h1v-1h-1zM762 1784h1v-6h-1zM763 1784h1v-7h-1zM764 1784h1v-6h-1zM765 1784h1v-7h-1zM766 1784h1v-6h-1zM767 1784h3v-7h-3zM770 1784h3v-6h-3zM773 1784h1v-7h-1zM774 1784h2v-6h-2zM776 1784h3v-7h-3zM779 1784h2v-6h-2zM781 1784h3v-7h-3zM784 1784h1v-6h-1zM785 1778h1v-1h-1zM786 1784h5v-6h-5zM791 1784h3v-7h-3zM794 1784h2v-6h-2zM796 1784h2v-7h-2zM798 1784h2v-6h-2zM800 1784h1v-7h-1zM801 1784h2v-6h-2zM803 1784h1v-7h-1zM804 1784h2v-6h-2zM806 1784h1v-7h-1zM807 1784h5v-6h-5zM812 1784h1v-7h-1zM813 1784h3v-6h-3zM816 1784h3v-7h-3zM819 1784h1v-6h-1zM820 1784h3v-7h-3zM823 1782h1v-5h-1zM824 1781h1v-4h-1zM825 1779h1v-2h-1zM826 1781h1v-3h-1zM827 1780h2v-3h-2zM829 1780h1v-2h-1zM832 1780h1v-2h-1zM834 1780h1v-3h-1zM835 1779h1v-1h-1zM839 1784h1v-6h-1zM840 1778h1v-1h-1zM841 1784h1v-7h-1zM842 1784h2v-6h-2zM845 1784h1v-7h-1zM846 1784h4v-6h-4zM850 1784h5v-7h-5zM855 1784h1v-6h-1zM856 1784h1v-7h-1zM857 1784h1v-6h-1zM858 1784h2v-7h-2zM860 1784h2v-6h-2zM862 1784h2v-7h-2zM864 1784h4v-6h-4zM868 1784h3v-7h-3zM871 1784h3v-6h-3zM874 1784h1v-7h-1zM875 1784h2v-6h-2zM877 1784h3v-7h-3zM880 1784h3v-6h-3zM883 1784h1v-7h-1zM884 1784h2v-6h-2zM886 1784h1v-7h-1zM887 1784h4v-6h-4zM891 1784h1v-7h-1zM892 1784h2v-6h-2zM894 1784h2v-7h-2zM896 1784h1v-6h-1zM897 1784h3v-7h-3zM900 1784h1v-6h-1zM901 1784h2v-7h-2zM903 1784h6v-6h-6zM909 1784h1v-7h-1zM910 1784h1v-6h-1zM911 1784h1v-7h-1zM912 1780h1v-2h-1zM913 1784h3v-6h-3zM916 1780h1v-2h-1zM917 1784h1v-6h-1zM918 1784h2v-7h-2zM920 1784h2v-6h-2zM922 1784h1v-7h-1zM923 1784h1v-6h-1zM924 1784h3v-7h-3zM927 1784h3v-6h-3zM930 1784h2v-7h-2zM932 1784h2v-6h-2zM934 1784h3v-7h-3zM937 1784h1v-6h-1zM938 1778h1v-1h-1zM940 1779h1v-1h-1zM942 1778h1v-1h-1zM943 1784h5v-6h-5zM948 1784h1v-7h-1zM949 1784h1v-6h-1zM950 1784h1v-7h-1zM951 1778h1v-1h-1zM955 1778h1v-1h-1zM956 1784h1v-7h-1zM957 1784h3v-6h-3zM960 1784h1v-7h-1zM961 1784h3v-6h-3zM964 1784h1v-7h-1zM965 1784h4v-6h-4zM969 1779h1v-1h-1zM970 1784h1v-6h-1zM971 1784h1v-7h-1zM972 1784h1v-6h-1zM973 1779h1v-1h-1zM975 1784h1v-7h-1zM976 1784h1v-6h-1zM977 1784h1v-7h-1zM978 1784h2v-6h-2zM980 1784h2v-7h-2zM982 1778h1v-1h-1zM983 1784h1v-6h-1zM984 1784h1v-7h-1zM985 1784h2v-6h-2zM987 1784h1v-7h-1zM988 1784h4v-6h-4zM992 1784h4v-7h-4zM996 1784h3v-6h-3zM999 1784h1v-7h-1zM1000 1784h1v-6h-1zM1001 1784h3v-7h-3zM1004 1784h1v-6h-1zM1005 1784h2v-7h-2zM1007 1784h1v-6h-1zM1008 1784h3v-7h-3zM1011 1784h5v-6h-5zM1016 1784h1v-7h-1zM1017 1784h3v-6h-3zM1020 1781h1v-3h-1zM1021 1784h2v-7h-2zM1023 1784h1v-6h-1zM1024 1784h1v-7h-1zM1025 1784h3v-6h-3zM1028 1784h3v-7h-3zM1031 1784h2v-6h-2zM1033 1784h1v-7h-1zM1034 1784h2v-6h-2zM1036 1784h2v-7h-2zM1038 1784h4v-6h-4zM1042 1784h2v-7h-2zM1044 1784h6v-6h-6zM1050 1784h1v-7h-1zM1051 1784h6v-6h-6zM1057 1784h4v-7h-4zM1061 1784h3v-6h-3zM1064 1784h1v-7h-1zM1065 1784h1v-6h-1zM1066 1784h1v-7h-1zM1067 1779h1v-1h-1zM1068 1784h1v-6h-1zM1069 1784h2v-7h-2zM1071 1784h1v-6h-1zM1072 1784h1v-7h-1zM1073 1784h2v-6h-2zM1075 1784h1v-7h-1zM1076 1784h1v-6h-1zM1077 1784h1v-7h-1zM1078 1784h2v-6h-2zM1080 1784h1v-7h-1zM1081 1784h1v-6h-1zM1082 1784h1v-7h-1zM1083 1784h1v-6h-1zM1084 1784h1v-7h-1zM1085 1784h2v-6h-2zM1087 1784h2v-7h-2zM1089 1784h1v-6h-1zM1090 1784h1v-7h-1zM1091 1784h2v-6h-2zM1093 1784h1v-7h-1zM1094 1784h1v-6h-1zM1095 1784h1v-7h-1zM1096 1784h1v-6h-1zM1097 1784h1v-7h-1zM1098 1784h2v-6h-2zM1100 1784h1v-7h-1zM1101 1784h2v-6h-2zM1103 1784h2v-7h-2zM1105 1784h1v-6h-1zM1106 1784h1v-7h-1zM1107 1784h2v-6h-2zM1109 1784h1v-7h-1zM1110 1784h1v-6h-1zM1111 1784h4v-7h-4zM1115 1784h1v-6h-1zM1116 1784h2v-7h-2zM1118 1784h2v-6h-2zM1120 1778h1v-1h-1zM1121 1784h1v-7h-1zM1123 1784h1v-7h-1zM1124 1784h6v-6h-6zM1130 1779h1v-1h-1zM1131 1784h1v-6h-1zM1132 1784h4v-7h-4zM1136 1784h6v-6h-6zM1142 1784h2v-7h-2zM1144 1784h4v-6h-4zM1148 1784h1v-7h-1zM1149 1784h8v-6h-8zM1157 1784h1v-7h-1zM1158 1784h1v-6h-1zM1159 1784h1v-7h-1zM1160 1784h3v-6h-3zM1163 1784h2v-7h-2zM1165 1784h3v-6h-3zM1168 1784h1v-7h-1zM1169 1784h1v-6h-1zM1170 1784h6v-7h-6zM1176 1784h3v-6h-3zM1179 1784h2v-7h-2zM1181 1784h2v-6h-2zM1183 1784h1v-7h-1zM1184 1784h2v-6h-2zM1186 1784h1v-7h-1zM1187 1784h5v-6h-5zM1192 1784h2v-7h-2zM1194 1784h1v-6h-1zM1195 1784h1v-7h-1zM1196 1784h1v-6h-1zM1197 1784h1v-7h-1zM1198 1784h1v-6h-1zM1199 1784h2v-7h-2zM1201 1784h1v-6h-1zM1202 1784h1v-7h-1zM1203 1784h3v-6h-3zM1206 1784h2v-7h-2zM1208 1784h2v-6h-2zM1210 1784h1v-7h-1zM1211 1784h1v-6h-1zM1212 1784h1v-7h-1zM1213 1784h1v-6h-1zM1214 1784h3v-7h-3zM1217 1784h1v-6h-1zM1218 1784h1v-7h-1zM1219 1784h9v-6h-9zM1228 1782h1v-4h-1zM1229 1784h1v-7h-1zM1230 1782h1v-5h-1zM1231 1784h5v-6h-5zM1236 1782h1v-5h-1zM1237 1784h1v-7h-1zM1238 1782h1v-5h-1zM1239 1784h1v-7h-1zM1240 1784h1v-6h-1zM1241 1779h1v-1h-1zM1242 1784h1v-7h-1zM1243 1779h1v-1h-1zM1244 1784h2v-6h-2zM1246 1784h2v-7h-2zM1248 1784h1v-6h-1zM1249 1779h1v-2h-1zM1250 1784h3v-7h-3zM1254 1784h3v-7h-3zM1257 1784h4v-6h-4zM1261 1784h1v-7h-1zM1262 1784h2v-6h-2zM1264 1784h1v-7h-1zM1265 1784h1v-6h-1zM1266 1784h2v-7h-2zM1268 1784h1v-6h-1zM1269 1781h1v-4h-1zM1270 1784h1v-6h-1zM1271 1781h1v-3h-1zM1272 1784h1v-7h-1zM1273 1784h1v-6h-1zM1274 1784h1v-7h-1zM1275 1784h1v-6h-1zM1276 1784h1v-7h-1zM1277 1784h1v-6h-1zM1278 1783h1v-5h-1zM1279 1784h1v-7h-1zM1280 1784h2v-6h-2zM1282 1784h2v-7h-2zM1284 1784h1v-6h-1zM1285 1784h2v-7h-2zM1287 1784h3v-6h-3zM1290 1779h1v-1h-1zM1291 1784h1v-7h-1zM1292 1779h1v-1h-1zM1293 1784h2v-6h-2zM1295 1784h1v-7h-1zM1296 1784h1v-6h-1zM1297 1784h2v-7h-2zM1299 1784h2v-6h-2zM1301 1784h1v-7h-1zM1302 1784h1v-6h-1zM1303 1784h1v-7h-1zM1304 1784h1v-6h-1zM1305 1784h2v-7h-2zM1307 1784h1v-6h-1zM1308 1784h3v-7h-3zM1311 1784h1v-6h-1zM1312 1784h2v-7h-2zM1314 1784h1v-6h-1zM1315 1784h1v-7h-1zM1316 1784h1v-6h-1zM1317 1784h1v-7h-1zM1318 1784h1v-6h-1zM1319 1784h4v-7h-4zM1323 1784h4v-6h-4zM1327 1784h1v-7h-1zM1328 1784h1v-6h-1zM1329 1784h2v-7h-2zM1331 1784h3v-6h-3zM1334 1784h1v-7h-1zM1335 1784h1v-6h-1zM1336 1784h1v-7h-1zM1337 1784h1v-6h-1zM1338 1784h1v-7h-1zM1339 1784h1v-6h-1zM1340 1784h1v-7h-1zM1341 1784h1v-6h-1zM1342 1784h1v-7h-1zM1343 1784h1v-6h-1zM1344 1784h2v-7h-2zM1346 1784h1v-6h-1zM1347 1784h2v-7h-2zM1349 1783h1v-5h-1zM1350 1784h1v-7h-1zM1351 1783h1v-5h-1zM1352 1784h1v-6h-1zM1353 1784h2v-7h-2zM1355 1784h3v-6h-3zM1358 1784h2v-7h-2zM1360 1784h1v-6h-1zM1361 1784h1v-7h-1zM1362 1784h1v-6h-1zM1363 1784h1v-7h-1zM1364 1784h1v-6h-1zM1365 1784h3v-7h-3zM1368 1784h2v-6h-2zM1370 1784h1v-7h-1zM1371 1784h1v-6h-1zM1372 1784h1v-7h-1zM1373 1784h1v-6h-1zM1374 1784h1v-7h-1zM1375 1784h1v-6h-1zM1376 1784h7v-7h-7zM1383 1784h1v-6h-1zM1384 1784h5v-7h-5zM1389 1784h4v-6h-4zM1393 1784h3v-7h-3zM1396 1784h1v-6h-1zM1397 1784h2v-7h-2zM1399 1784h3v-6h-3zM1402 1784h1v-7h-1zM1403 1784h2v-6h-2zM1405 1784h1v-7h-1zM1406 1784h5v-6h-5zM1411 1784h2v-7h-2zM1413 1784h2v-6h-2zM1415 1784h1v-7h-1zM1416 1784h2v-6h-2zM1418 1784h1v-7h-1zM1419 1784h1v-6h-1zM1420 1784h2v-7h-2zM1422 1784h3v-6h-3zM1425 1784h3v-7h-3zM1428 1784h2v-6h-2zM1430 1784h1v-7h-1zM1431 1784h1v-6h-1zM1432 1784h1v-7h-1zM1433 1784h1v-6h-1zM1434 1784h1v-7h-1zM1435 1784h2v-6h-2zM1437 1784h3v-7h-3zM1440 1784h2v-6h-2zM1442 1784h2v-7h-2zM1444 1784h1v-6h-1zM1445 1784h6v-7h-6zM1451 1784h3v-6h-3zM1454 1784h4v-7h-4zM1458 1784h1v-6h-1zM1459 1784h2v-7h-2zM1461 1784h2v-6h-2zM1463 1784h2v-7h-2zM1465 1784h1v-6h-1zM1466 1784h1v-7h-1zM1467 1784h1v-11h-1zM1468 1784h2v-6h-2zM1470 1784h1v-7h-1zM1471 1784h4v-6h-4zM1475 1784h3v-7h-3zM1478 1784h1v-11h-1zM1479 1784h2v-6h-2zM1481 1784h1v-9h-1zM1482 1784h2v-6h-2zM1484 1784h1v-10h-1zM1485 1784h1v-7h-1zM1486 1784h2v-6h-2zM1488 1784h1v-7h-1zM1489 1784h1v-6h-1zM1490 1784h2v-7h-2zM1492 1784h1v-6h-1zM1493 1784h1v-7h-1zM1494 1784h2v-6h-2zM1496 1784h2v-7h-2zM1498 1784h1v-12h-1zM1499 1784h2v-6h-2zM1501 1784h2v-7h-2zM1503 1784h1v-11h-1zM1504 1784h2v-6h-2zM1506 1784h1v-7h-1zM1507 1784h2v-6h-2zM1509 1784h2v-7h-2zM1511 1784h7v-6h-7zM1518 1784h2v-7h-2zM1520 1784h2v-6h-2zM1522 1784h1v-7h-1zM1523 1784h4v-6h-4zM1527 1784h3v-7h-3zM1530 1784h2v-6h-2zM1532 1784h4v-7h-4zM1536 1784h1v-6h-1zM1537 1784h2v-7h-2zM1539 1784h1v-6h-1zM1540 1784h1v-7h-1zM1541 1784h2v-6h-2zM1544 1784h2v-6h-2zM1546 1784h1v-7h-1zM1547 1784h2v-6h-2zM1550 1784h1v-6h-1zM1551 1784h2v-7h-2zM1553 1784h2v-6h-2zM1555 1784h1v-7h-1zM1556 1784h2v-6h-2zM1558 1784h2v-7h-2zM1560 1784h1v-6h-1zM1561 1784h1v-7h-1zM1562 1784h1v-6h-1zM1563 1784h4v-7h-4zM1567 1784h5v-6h-5zM1572 1784h2v-7h-2zM1574 1784h2v-6h-2zM1576 1784h1v-7h-1zM1577 1784h3v-6h-3zM1580 1784h1v-7h-1zM1581 1784h1v-6h-1zM1582 1784h3v-7h-3zM1585 1784h1v-6h-1zM1586 1784h1v-7h-1zM1587 1784h1v-6h-1zM1588 1784h4v-7h-4zM1592 1784h1v-6h-1zM1593 1784h4v-7h-4zM1597 1784h1v-6h-1zM1598 1784h1v-7h-1zM1599 1784h1v-6h-1zM1600 1784h2v-7h-2zM1602 1784h1v-6h-1zM1603 1784h1v-7h-1zM1604 1784h3v-6h-3zM1607 1784h1v-7h-1zM1608 1784h1v-6h-1zM1609 1784h1v-7h-1zM1610 1784h1v-6h-1zM1611 1784h1v-7h-1zM1612 1784h2v-6h-2zM1614 1784h1v-7h-1zM1615 1784h1v-6h-1zM1616 1784h4v-7h-4zM1620 1784h1v-6h-1zM1621 1784h1v-7h-1zM1622 1784h2v-6h-2zM1624 1784h1v-7h-1zM1625 1784h1v-6h-1zM1626 1784h1v-7h-1zM1627 1784h1v-6h-1zM1628 1784h1v-7h-1zM1629 1784h1v-6h-1zM1630 1784h4v-7h-4zM1634 1784h4v-6h-4zM1638 1784h2v-7h-2zM1640 1784h1v-6h-1zM1641 1784h1v-7h-1zM1642 1784h3v-6h-3zM1645 1784h1v-7h-1zM1646 1784h2v-6h-2zM1648 1784h2v-7h-2zM1650 1784h1v-6h-1zM1651 1784h3v-7h-3zM1654 1784h1v-6h-1zM1655 1784h1v-7h-1zM1656 1784h1v-6h-1zM1657 1784h2v-7h-2zM1659 1784h3v-6h-3zM1662 1784h1v-7h-1zM1663 1784h1v-6h-1zM1665 1779h2v-1h-2zM1667 1782h1v-4h-1zM1668 1784h1v-7h-1zM1669 1784h1v-6h-1zM1670 1784h1v-7h-1zM1671 1784h1v-6h-1zM1672 1784h1v-7h-1zM1673 1784h4v-6h-4zM1677 1784h2v-7h-2zM1679 1784h1v-6h-1zM1680 1784h1v-7h-1zM1681 1784h2v-6h-2zM1683 1784h3v-7h-3zM1686 1780h1v-16h-1zM1687 1773h1v-48h-1zM1688 1768h1v-74h-1zM1689 1763h1v-97h-1zM1690 1768h1v-74h-1zM1691 1773h1v-48h-1zM1692 1780h1v-16h-1zM1693 1784h1v-7h-1zM1694 1784h1v-6h-1zM1695 1784h2v-7h-2zM1697 1784h4v-6h-4zM1701 1784h1v-7h-1zM1702 1784h3v-6h-3zM1705 1784h2v-7h-2zM1707 1784h2v-6h-2zM1709 1784h3v-7h-3zM1712 1784h1v-6h-1zM1713 1784h2v-7h-2zM1715 1784h1v-6h-1zM1716 1784h3v-7h-3zM1719 1784h1v-6h-1zM1720 1784h1v-7h-1zM1721 1784h1v-6h-1zM1722 1784h2v-7h-2zM1724 1784h2v-6h-2zM1726 1784h1v-7h-1zM1727 1784h3v-6h-3zM1730 1784h1v-7h-1zM1731 1784h1v-6h-1zM1732 1784h1v-7h-1zM1733 1784h1v-6h-1zM1734 1784h1v-7h-1zM1735 1784h2v-6h-2zM1737 1784h1v-7h-1zM1738 1784h3v-6h-3zM1741 1784h1v-7h-1zM1742 1784h2v-6h-2zM1744 1784h2v-7h-2zM1746 1784h1v-6h-1zM1747 1784h1v-7h-1zM1748 1784h5v-6h-5zM1753 1784h4v-7h-4zM1757 1784h1v-6h-1zM1758 1784h3v-7h-3zM1761 1784h1v-6h-1zM1762 1784h1v-7h-1zM1763 1784h1v-6h-1zM1764 1784h1v-7h-1zM1765 1784h1v-6h-1zM1766 1784h1v-7h-1zM1767 1784h1v-6h-1zM1768 1784h1v-7h-1zM1769 1784h4v-6h-4zM1773 1784h1v-7h-1zM1774 1784h2v-6h-2zM1776 1784h1v-7h-1zM1777 1784h2v-6h-2zM1780 1784h4v-7h-4zM1784 1784h1v-6h-1zM1785 1784h1v-7h-1zM1786 1784h1v-6h-1zM1788 1784h2v-6h-2zM1790 1780h1v-2h-1zM1791 1782h1v-5h-1zM1792 1781h1v-3h-1zM1793 1784h1v-7h-1zM1794 1784h1v-6h-1zM1795 1781h1v-3h-1zM1796 1779h1v-2h-1zM1797 1781h1v-3h-1zM1798 1784h1v-7h-1zM1799 1779h1v-2h-1zM1800 1784h1v-6h-1zM1801 1784h3v-7h-3zM1804 1784h2v-6h-2zM1806 1784h1v-7h-1zM1807 1784h3v-6h-3zM1810 1779h1v-1h-1zM1811 1784h1v-7h-1zM1812 1784h3v-6h-3zM1815 1782h1v-4h-1zM1816 1784h2v-6h-2zM1818 1784h1v-7h-1zM1819 1784h2v-6h-2zM1821 1784h1v-7h-1zM1822 1784h3v-6h-3zM1825 1784h1v-7h-1zM1826 1784h1v-6h-1zM1827 1784h3v-7h-3zM1830 1784h1v-6h-1zM1831 1784h1v-7h-1zM1832 1784h6v-6h-6zM1838 1784h1v-7h-1zM1839 1784h1v-6h-1zM1840 1778h3v-1h-3zM1843 1784h2v-6h-2zM1845 1784h2v-7h-2zM1847 1780h1v-2h-1zM1848 1784h1v-7h-1zM1849 1784h1v-6h-1zM1850 1784h2v-7h-2zM1853 1784h1v-6h-1zM1854 1784h1v-7h-1zM1855 1784h2v-6h-2zM1857 1784h6v-7h-6zM1863 1784h3v-6h-3zM1866 1784h3v-7h-3zM1870 1784h2v-6h-2zM1873 1780h1v-3h-1zM1875 1780h1v-2h-1zM1877 1784h1v-6h-1zM1879 1784h2v-6h-2zM1881 1779h1v-2h-1zM1882 1784h1v-7h-1zM1883 1784h3v-6h-3zM1886 1784h2v-7h-2zM1888 1780h1v-2h-1zM1890 1784h1v-6h-1zM1892 1784h1v-6h-1zM1894 1784h1v-7h-1zM1895 1784h1v-6h-1zM1896 1784h2v-7h-2zM1898 1784h2v-6h-2zM1900 1784h3v-7h-3zM1903 1784h3v-6h-3zM1906 1780h1v-2h-1zM1907 1784h3v-6h-3zM1910 1784h2v-7h-2zM1912 1784h3v-6h-3zM1915 1784h3v-7h-3zM1918 1784h2v-6h-2zM1920 1784h3v-7h-3zM1923 1784h4v-6h-4zM1927 1784h2v-7h-2zM1929 1784h1v-6h-1zM1930 1784h1v-7h-1zM1931 1784h1v-6h-1zM1932 1784h1v-7h-1zM1933 1784h2v-6h-2zM1935 1784h1v-7h-1zM1936 1784h1v-6h-1zM1938 1784h1v-7h-1zM1940 1784h1v-6h-1zM1941 1784h2v-7h-2zM1943 1784h5v-6h-5zM1948 1784h1v-7h-1zM1949 1784h4v-6h-4zM1953 1780h1v-3h-1zM1954 1784h1v-6h-1zM1955 1780h1v-2h-1zM1956 1784h2v-6h-2zM1958 1784h2v-7h-2zM1960 1781h1v-3h-1zM1961 1779h1v-1h-1zM1962 1784h1v-7h-1zM1964 1784h1v-6h-1zM1965 1781h1v-4h-1zM1966 1784h1v-6h-1zM1967 1781h1v-3h-1zM1969 1784h1v-7h-1zM1971 1784h3v-7h-3zM1974 1784h2v-6h-2zM1976 1784h1v-7h-1zM1977 1779h1v-1h-1zM1978 1784h1v-7h-1zM1979 1783h1v-6h-1zM1980 1784h1v-7h-1zM1981 1784h1v-6h-1zM1982 1784h1v-7h-1zM1983 1784h2v-6h-2zM1985 1784h4v-7h-4zM1989 1784h2v-6h-2zM1991 1779h1v-1h-1zM1992 1784h1v-6h-1zM1993 1782h1v-4h-1zM1994 1780h1v-3h-1zM1995 1782h1v-5h-1zM1996 1784h1v-6h-1zM1997 1781h1v-3h-1zM1998 1779h1v-1h-1zM1999 1778h1v-1h-1zM2000 1779h1v-2h-1zM2001 1784h1v-7h-1zM2002 1779h1v-2h-1zM2003 1784h1v-6h-1zM2004 1784h1v-7h-1zM2005 1784h1v-6h-1zM2006 1784h2v-7h-2zM2008 1784h1v-6h-1zM2009 1784h2v-7h-2zM2011 1778h1v-1h-1zM2012 1781h2v-4h-2zM2014 1781h2v-3h-2zM2016 1781h1v-4h-1zM2017 1780h1v-2h-1zM2018 1781h1v-4h-1zM2019 1779h1v-2h-1zM2021 1778h1v-1h-1zM2023 1778h1v-1h-1zM2024 1784h1v-7h-1zM2025 1784h1v-6h-1zM2026 1784h1v-7h-1zM2027 1784h1v-6h-1zM2028 1784h2v-7h-2zM2030 1784h1v-6h-1zM2031 1784h1v-7h-1zM2032 1784h2v-6h-2zM2034 1784h3v-7h-3zM2037 1784h1v-6h-1zM2038 1784h4v-7h-4zM2042 1779h1v-2h-1zM2044 1784h2v-6h-2zM2046 1784h1v-7h-1zM2047 1784h4v-6h-4zM2051 1784h1v-7h-1zM2052 1784h1v-6h-1zM2053 1784h1v-7h-1zM2054 1784h1v-6h-1zM2055 1782h1v-4h-1zM2056 1784h1v-7h-1zM2057 1780h1v-2h-1zM2058 1784h1v-6h-1zM2059 1784h2v-7h-2zM2061 1780h1v-2h-1zM2062 1784h1v-6h-1zM2063 1780h1v-2h-1zM2064 1784h3v-7h-3zM2067 1778h1v-1h-1zM2068 1784h1v-7h-1zM2069 1784h3v-6h-3zM2072 1779h1v-1h-1zM2073 1784h3v-6h-3zM2076 1784h1v-7h-1zM2077 1784h2v-6h-2zM2079 1784h2v-7h-2zM2081 1784h1v-6h-1zM2082 1784h1v-7h-1zM2083 1784h1v-6h-1zM2084 1784h2v-7h-2zM2086 1784h6v-6h-6zM2092 1784h1v-7h-1zM2093 1784h2v-6h-2zM2095 1784h1v-7h-1zM2096 1784h1v-6h-1zM2097 1783h1v-5h-1zM2098 1784h3v-6h-3zM2101 1784h1v-7h-1zM2102 1784h1v-6h-1zM2103 1784h1v-7h-1zM2104 1784h1v-6h-1zM2105 1784h2v-7h-2zM2107 1784h2v-6h-2zM2109 1784h1v-7h-1zM2110 1784h2v-6h-2zM2112 1784h3v-7h-3zM2115 1784h3v-6h-3zM2118 1784h3v-7h-3zM2121 1784h3v-6h-3zM2124 1784h1v-7h-1zM2125 1784h3v-6h-3zM2128 1779h1v-1h-1zM2129 1780h1v-2h-1zM2130 1779h2v-1h-2zM2132 1780h1v-3h-1zM2133 1780h1v-2h-1zM2134 1782h1v-4h-1zM2135 1782h2v-5h-2zM2137 1783h2v-5h-2zM2139 1783h1v-6h-1zM2140 1778h1v-1h-1zM2141 1779h1v-2h-1zM2142 1779h1v-1h-1zM2143 1780h1v-2h-1zM2144 1781h1v-3h-1zM2145 1783h1v-6h-1zM2146 1784h3v-7h-3zM2149 1784h1v-6h-1zM2150 1784h1v-7h-1zM2151 1784h2v-6h-2zM2153 1784h4v-7h-4zM2158 1784h1v-6h-1zM2159 1784h3v-7h-3zM2162 1779h1v-1h-1zM2163 1784h1v-6h-1zM2164 1779h1v-2h-1zM2165 1784h1v-7h-1zM2166 1784h1v-6h-1zM2167 1784h1v-7h-1zM2168 1784h1v-6h-1zM2169 1784h8v-7h-8zM2177 1784h1v-6h-1zM2178 1784h1v-7h-1zM2179 1778h1v-1h-1zM2180 1784h1v-7h-1zM2181 1784h1v-6h-1zM2182 1784h9v-7h-9zM2191 1784h4v-6h-4zM2195 1784h2v-7h-2zM2197 1784h3v-6h-3zM2200 1784h1v-7h-1zM2201 1784h2v-6h-2zM2203 1780h1v-3h-1zM2204 1782h1v-4h-1zM2205 1780h1v-2h-1zM2206 1784h1v-6h-1zM2207 1784h1v-7h-1zM2208 1784h1v-6h-1zM2209 1784h2v-7h-2zM2211 1784h2v-6h-2zM2213 1784h3v-7h-3zM2216 1784h1v-6h-1zM2217 1784h1v-7h-1zM2218 1784h1v-6h-1zM2219 1784h1v-7h-1zM2221 1784h3v-7h-3zM2224 1784h1v-6h-1zM2225 1780h1v-2h-1zM2226 1778h1v-1h-1zM2229 1784h1v-6h-1zM2230 1784h3v-7h-3zM2233 1779h2v-1h-2zM2235 1780h1v-2h-1zM2236 1784h1v-7h-1zM2237 1780h1v-2h-1zM2238 1778h1v-1h-1zM2239 1784h3v-6h-3zM2242 1784h1v-7h-1zM2243 1784h2v-6h-2zM2245 1784h2v-7h-2zM2247 1784h1v-6h-1zM2248 1784h1v-7h-1zM2249 1784h1v-6h-1zM2250 1784h1v-7h-1zM2251 1784h2v-6h-2zM2253 1784h1v-7h-1zM2254 1784h4v-6h-4zM2258 1784h1v-7h-1zM2259 1784h2v-6h-2zM2261 1784h4v-7h-4zM2265 1779h1v-2h-1zM2266 1781h1v-4h-1zM2267 1779h1v-1h-1zM2268 1781h1v-4h-1zM2269 1779h1v-2h-1zM2270 1779h1v-1h-1zM2272 1784h2v-6h-2zM2274 1784h2v-7h-2zM2276 1784h1v-6h-1zM2277 1784h1v-7h-1zM2278 1784h1v-6h-1zM2279 1784h1v-7h-1zM2281 1784h1v-6h-1zM2282 1784h1v-7h-1zM2283 1784h2v-6h-2zM2285 1784h2v-7h-2zM2287 1784h1v-6h-1zM2288 1784h1v-7h-1zM2289 1784h1v-6h-1zM2290 1784h1v-7h-1zM2291 1784h1v-6h-1zM2292 1784h4v-7h-4zM2296 1784h2v-6h-2zM2298 1784h4v-7h-4zM2302 1784h3v-6h-3zM2305 1784h1v-7h-1zM2306 1784h2v-6h-2zM2308 1784h1v-7h-1zM2309 1784h2v-6h-2zM2311 1784h3v-7h-3zM2314 1784h1v-6h-1zM2315 1784h2v-7h-2zM2317 1784h2v-6h-2zM2319 1784h1v-7h-1zM2320 1784h1v-6h-1zM2321 1784h1v-7h-1zM2322 1784h1v-6h-1zM2323 1784h1v-7h-1zM2324 1784h1v-6h-1zM2325 1784h1v-7h-1zM2326 1784h3v-6h-3zM2329 1779h1v-1h-1zM2330 1784h2v-6h-2zM2332 1784h1v-7h-1zM2333 1784h1v-6h-1zM2334 1784h1v-7h-1zM2335 1784h3v-6h-3zM2338 1784h2v-7h-2zM2340 1784h4v-6h-4zM2344 1784h2v-7h-2zM2346 1784h9v-6h-9zM2355 1784h2v-7h-2zM2357 1784h4v-6h-4zM2361 1784h3v-7h-3zM2364 1784h3v-6h-3zM2367 1784h4v-7h-4zM2371 1784h1v-6h-1zM2372 1784h1v-7h-1zM2373 1784h2v-6h-2zM2375 1784h5v-7h-5zM2380 1784h2v-6h-2zM2382 1784h3v-7h-3zM2385 1784h2v-6h-2zM2387 1784h1v-7h-1zM2388 1784h1v-6h-1zM2389 1784h5v-7h-5zM2394 1784h1v-6h-1zM2395 1784h3v-7h-3zM2398 1781h1v-4h-1zM2399 1784h1v-7h-1zM2400 1781h1v-3h-1zM2401 1784h1v-6h-1zM2402 1784h1v-7h-1zM2403 1784h2v-6h-2zM2405 1784h1v-7h-1zM2406 1784h1v-6h-1zM2408 1784h1v-7h-1zM2409 1778h1v-1h-1zM2410 1784h3v-6h-3zM2413 1784h3v-7h-3zM2416 1784h1v-6h-1zM2417 1784h2v-7h-2zM2419 1784h1v-6h-1zM2420 1784h4v-7h-4zM2424 1784h1v-6h-1zM2425 1784h3v-7h-3zM2428 1784h1v-6h-1zM2429 1784h1v-7h-1zM2430 1784h2v-6h-2zM2432 1784h1v-7h-1zM2433 1784h3v-6h-3zM2436 1784h5v-7h-5zM2441 1784h1v-6h-1zM2442 1784h3v-7h-3zM2445 1784h1v-6h-1zM2446 1784h1v-7h-1zM2447 1784h5v-6h-5zM2452 1784h3v-7h-3zM2455 1784h1v-6h-1zM2456 1784h1v-7h-1zM2457 1784h1v-6h-1zM2458 1784h2v-7h-2zM2460 1784h3v-6h-3zM2463 1784h1v-7h-1zM2464 1784h1v-6h-1zM2465 1784h1v-7h-1zM2466 1784h1v-6h-1zM2467 1781h1v-3h-1zM2468 1784h1v-7h-1zM2469 1781h1v-4h-1zM2470 1784h3v-7h-3zM2473 1784h4v-6h-4zM2477 1784h3v-7h-3zM2480 1784h1v-6h-1zM2481 1784h2v-7h-2zM2483 1784h2v-6h-2zM2485 1784h1v-7h-1zM2486 1784h1v-6h-1zM2487 1784h6v-7h-6zM2493 1784h1v-6h-1zM2494 1778h1v-1h-1zM2495 1784h1v-6h-1zM2496 1784h2v-7h-2zM2498 1784h1v-6h-1zM2499 1784h1v-7h-1zM2500 1784h1v-6h-1zM2501 1784h1v-7h-1zM2502 1784h1v-6h-1zM2503 1784h1v-7h-1zM2504 1784h3v-6h-3zM2507 1784h1v-7h-1zM2508 1784h1v-6h-1zM2509 1784h1v-7h-1zM2510 1784h4v-6h-4zM2514 1784h7v-7h-7zM2521 1784h1v-6h-1zM2522 1784h3v-7h-3zM2525 1784h1v-6h-1zM2526 1784h2v-7h-2zM2528 1784h1v-6h-1zM2529 1784h5v-7h-5zM2534 1784h6v-6h-6zM2540 1784h3v-7h-3zM2543 1784h1v-6h-1zM2544 1784h1v-7h-1zM2545 1784h2v-6h-2zM2547 1784h1v-7h-1zM2548 1784h1v-6h-1zM2550 1783h1v-6h-1zM2551 1778h1v-1h-1zM2552 1783h1v-5h-1zM2553 1784h1v-7h-1zM2554 1784h2v-6h-2zM2556 1784h1v-7h-1zM2557 1784h1v-6h-1zM2558 1784h1v-7h-1zM2559 1784h3v-6h-3zM2562 1784h1v-7h-1zM2563 1784h1v-6h-1zM2564 1780h1v-2h-1zM2565 1784h1v-6h-1zM2566 1780h1v-2h-1zM2567 1784h1v-6h-1zM2568 1784h1v-7h-1zM2569 1784h2v-6h-2zM2571 1779h1v-1h-1zM2572 1784h1v-6h-1zM2573 1779h1v-2h-1zM2574 1784h3v-7h-3zM2577 1784h1v-6h-1zM2578 1784h1v-7h-1zM2579 1784h1v-6h-1zM2580 1784h4v-7h-4zM2584 1781h1v-3h-1zM2585 1784h2v-7h-2zM2587 1784h2v-6h-2zM2589 1784h1v-7h-1zM2590 1784h2v-6h-2zM2592 1784h1v-7h-1zM2593 1784h2v-6h-2zM2595 1784h1v-7h-1zM2596 1784h1v-6h-1zM2597 1780h1v-3h-1zM2598 1784h4v-6h-4zM2602 1784h5v-7h-5zM2608 1784h3v-7h-3zM2611 1784h2v-6h-2zM2613 1784h2v-7h-2zM2615 1784h3v-6h-3zM2618 1784h6v-7h-6zM2624 1784h1v-6h-1zM2625 1784h2v-7h-2z" fill="#3c6ef0"/><path d="M594 1778h1v-19h-1zM595 1764h1v-45h-1zM596 1777h1v-18h-1zM798 1733h1v-17h-1zM799 1737h1v-1h-1zM801 1732h1v-3h-1zM802 1734h1v-7h-1zM803 1738h1v-8h-1zM804 1765h1v-21h-1zM805 1729h1v-2h-1zM806 1731h1v-2h-1zM807 1723h1v-1h-1zM808 1739h1v-3h-1zM809 1729h1v-3h-1zM810 1736h1v-6h-1zM811 1731h1v-3h-1zM813 1724h1v-3h-1zM814 1738h1v-1h-1zM815 1737h1v-1h-1zM816 1738h1v-5h-1zM817 1738h1v-8h-1zM818 1752h1v-4h-1zM819 1747h1v-3h-1zM2494 1784h1v-6h-1zM2495 1778h1v-8h-1zM2496 1777h1v-6h-1zM2497 1777h1v-8h-1zM2498 1769h1v-1h-1zM2499 1777h1v-8h-1zM2500 1778h1v-8h-1zM2501 1777h1v-7h-1zM2502 1778h1v-7h-1zM2503 1777h1v-6h-1zM2504 1778h1v-10h-1zM2505 1778h1v-7h-1zM2506 1778h1v-8h-1zM2507 1777h1v-8h-1zM2508 1778h1v-7h-1zM2509 1777h1v-6h-1zM2510 1778h1v-7h-1zM2512 1778h1v-9h-1zM2513 1778h1v-7h-1zM2514 1777h1v-8h-1zM2516 1777h2v-6h-2zM2519 1777h1v-7h-1zM2520 1777h1v-6h-1zM2522 1777h1v-6h-1zM2523 1777h1v-8h-1zM2524 1777h1v-7h-1zM2525 1778h1v-8h-1zM2526 1777h1v-8h-1zM2527 1777h1v-5h-1zM2529 1769h1v-1h-1zM2530 1777h1v-7h-1zM2532 1777h1v-5h-1zM2533 1777h1v-7h-1zM2534 1770h1v-1h-1zM2535 1778h1v-8h-1zM2536 1778h1v-7h-1zM2537 1778h1v-8h-1zM2538 1778h1v-10h-1zM2539 1778h1v-8h-1zM2540 1777h1v-7h-1zM2541 1777h1v-8h-1zM2542 1777h1v-6h-1zM2543 1778h1v-9h-1zM2544 1777h1v-7h-1zM2545 1778h1v-6h-1zM2546 1778h1v-8h-1zM2547 1777h1v-8h-1zM2548 1778h1v-7h-1zM2584 1784h1v-3h-1zM2585 1777h1v-1h-1zM2586 1777h1v-2h-1zM2587 1778h1v-4h-1zM2589 1777h1v-1h-1zM2590 1778h1v-1h-1zM2591 1778h1v-2h-1zM2592 1777h1v-1h-1zM2593 1778h2v-1h-2zM2595 1777h1v-3h-1zM2596 1778h1v-3h-1zM2597 1784h1v-4h-1z" fill="#6fb35a"/><path d="M798 1716h1v-16h-1zM799 1735h1v-49h-1zM800 1729h1v-8h-1zM801 1717h1v-8h-1zM802 1727h1v-16h-1zM803 1722h1v-4h-1zM804 1725h1v-10h-1zM805 1727h1v-16h-1zM806 1725h1v-25h-1zM807 1722h1v-6h-1zM808 1729h1v-28h-1zM809 1726h1v-27h-1zM810 1730h1v-20h-1zM811 1724h1v-14h-1zM812 1742h1v-13h-1zM813 1734h1v-10h-1zM814 1747h1v-9h-1zM815 1736h1v-1h-1zM816 1731h1v-4h-1zM817 1730h1v-6h-1zM818 1724h1v-11h-1zM819 1718h1v-13h-1zM965 1778h1v-10h-1zM966 1778h1v-34h-1zM967 1778h1v-10h-1zM1120 1776h1v-5h-1zM1121 1773h1v-10h-1zM1122 1762h1v-1h-1zM1123 1764h1v-15h-1zM1124 1751h1v-14h-1zM1125 1754h1v-4h-1zM1126 1750h1v-1h-1zM1127 1761h1v-6h-1zM1128 1760h1v-1h-1zM1129 1765h1v-7h-1zM1130 1768h1v-7h-1zM1370 1769h1v-3h-1zM1371 1761h1v-32h-1zM1372 1777h1v-11h-1z" fill="#46b35a"/><path d="M798 1763h1v-12h-1zM799 1763h1v-17h-1zM800 1766h1v-12h-1zM801 1743h1v-1h-1zM802 1765h1v-23h-1zM803 1764h1v-14h-1zM804 1744h1v-4h-1zM805 1741h1v-3h-1zM806 1756h1v-18h-1zM807 1764h1v-22h-1zM808 1763h1v-21h-1zM809 1754h1v-7h-1zM810 1753h1v-1h-1zM811 1757h1v-9h-1zM812 1745h1v-2h-1zM813 1756h1v-1h-1zM814 1760h1v-7h-1zM815 1757h1v-8h-1zM816 1777h1v-19h-1zM817 1758h1v-3h-1zM818 1753h1v-1h-1zM819 1760h1v-3h-1zM974 1764h1v-7h-1zM975 1742h1v-11h-1zM976 1726h1v-27h-1zM977 1721h2v-17h-2zM979 1724h1v-19h-1zM980 1724h1v-22h-1zM981 1744h1v-16h-1zM982 1777h1v-21h-1zM1067 1780h1v-1h-1zM1070 1772h1v-2h-1zM1072 1777h1v-3h-1zM1073 1771h1v-4h-1zM1074 1772h1v-6h-1zM1075 1765h2v-9h-2zM1077 1777h1v-11h-1zM1078 1778h1v-16h-1zM1079 1756h1v-4h-1zM1080 1753h1v-2h-1zM1082 1760h1v-6h-1zM1083 1752h1v-7h-1zM1084 1750h1v-5h-1zM1085 1747h1v-3h-1zM1087 1750h1v-4h-1zM1088 1758h1v-14h-1zM1089 1748h1v-2h-1zM1090 1759h1v-10h-1zM1091 1756h1v-1h-1zM1092 1755h1v-4h-1zM1093 1760h1v-3h-1zM1094 1762h1v-3h-1zM1095 1777h1v-20h-1zM1096 1760h1v-2h-1zM1100 1777h1v-12h-1zM1101 1778h1v-33h-1zM1102 1778h1v-29h-1zM1103 1777h1v-23h-1zM1104 1777h1v-24h-1zM1105 1778h1v-23h-1zM1106 1777h1v-17h-1zM1107 1778h1v-15h-1zM1108 1778h1v-12h-1zM1109 1758h1v-3h-1zM1110 1778h1v-11h-1zM1111 1769h1v-5h-1zM1112 1775h1v-4h-1zM1113 1772h1v-4h-1zM1114 1776h1v-1h-1zM1115 1777h1v-1h-1zM1141 1778h1v-5h-1zM1142 1777h1v-16h-1zM1143 1777h1v-15h-1zM1144 1778h1v-17h-1zM1145 1778h1v-16h-1zM1146 1778h1v-18h-1zM1147 1778h1v-5h-1zM1161 1778h1v-10h-1zM1162 1778h1v-13h-1zM1163 1777h2v-12h-2zM1165 1778h1v-11h-1zM1166 1778h1v-10h-1zM1167 1778h1v-12h-1zM1168 1777h1v-10h-1zM1169 1778h1v-9h-1zM1170 1777h1v-13h-1zM1171 1777h1v-11h-1zM1172 1777h1v-12h-1zM1173 1777h1v-15h-1zM1174 1777h2v-12h-2zM1176 1778h1v-9h-1zM1177 1778h1v-11h-1zM1178 1778h1v-9h-1zM1179 1777h1v-11h-1zM1180 1777h1v-10h-1zM1181 1778h1v-10h-1zM1182 1778h1v-8h-1zM1183 1777h1v-12h-1zM1184 1778h1v-13h-1zM1185 1778h1v-7h-1zM1186 1777h1v-7h-1zM1187 1778h1v-12h-1zM1188 1778h2v-11h-2zM1190 1778h1v-12h-1zM1191 1778h1v-10h-1zM1192 1777h1v-12h-1zM1193 1777h1v-10h-1zM1194 1778h1v-15h-1zM1195 1777h1v-12h-1zM1196 1778h1v-16h-1zM1197 1777h1v-13h-1zM1198 1778h1v-12h-1zM1199 1777h2v-7h-2zM1201 1778h1v-13h-1zM1202 1777h1v-9h-1zM1203 1778h1v-12h-1zM1204 1778h2v-13h-2zM1206 1777h1v-8h-1zM1207 1777h1v-12h-1zM1208 1778h1v-8h-1zM1209 1778h1v-10h-1zM1210 1777h1v-10h-1zM1487 1778h1v-8h-1zM1488 1777h1v-25h-1zM1489 1778h1v-8h-1zM1567 1778h1v-15h-1zM1568 1778h1v-56h-1zM1569 1778h1v-15h-1zM1571 1778h1v-3h-1zM1572 1777h1v-4h-1zM1573 1777h1v-6h-1zM1574 1778h1v-8h-1zM1575 1778h1v-6h-1zM1576 1777h1v-7h-1zM1577 1778h2v-5h-2zM1579 1778h1v-1h-1zM1595 1777h1v-12h-1zM1596 1777h1v-51h-1zM1597 1778h1v-83h-1zM1598 1777h1v-51h-1zM1599 1778h1v-13h-1zM1702 1778h1v-34h-1zM1703 1778h1v-97h-1zM1704 1778h1v-34h-1zM1826 1771h1v-3h-1zM1827 1759h1v-5h-1zM1828 1755h1v-1h-1zM1829 1754h1v-3h-1zM1830 1756h1v-8h-1zM1831 1752h1v-5h-1zM1832 1753h1v-8h-1zM1833 1751h1v-5h-1zM1834 1752h1v-3h-1zM1835 1752h1v-5h-1zM1836 1755h1v-6h-1zM1837 1756h1v-7h-1zM1838 1758h1v-7h-1zM1839 1762h1v-10h-1zM1840 1774h1v-5h-1zM1888 1778h1v-7h-1zM1889 1778h1v-1h-1zM1903 1766h1v-6h-1zM1904 1756h1v-17h-1zM1905 1769h1v-9h-1zM1939 1754h1v-21h-1zM1940 1714h1v-28h-1zM1941 1707h1v-19h-1zM1942 1696h1v-11h-1zM1943 1693h1v-3h-1zM1944 1737h1v-52h-1zM1945 1736h1v-45h-1zM1946 1736h1v-38h-1zM1947 1742h1v-43h-1zM1948 1741h1v-32h-1zM1949 1745h1v-35h-1zM1950 1751h1v-35h-1zM1951 1762h1v-9h-1zM1978 1763h1v-6h-1zM1979 1736h1v-11h-1zM1980 1699h1v-5h-1zM1981 1720h1v-34h-1zM1982 1718h1v-37h-1zM1983 1717h1v-40h-1zM1984 1725h1v-35h-1zM1985 1725h1v-27h-1zM1986 1736h1v-4h-1zM1987 1765h1v-5h-1zM1991 1784h1v-5h-1zM1992 1778h1v-7h-1zM1993 1770h1v-2h-1zM1994 1767h1v-40h-1zM1995 1771h1v-3h-1zM1996 1778h1v-11h-1zM1997 1778h1v-9h-1zM1998 1771h1v-44h-1zM1999 1761h1v-19h-1zM2000 1742h1v-49h-1zM2001 1764h1v-22h-1zM2002 1777h1v-11h-1zM2003 1756h1v-12h-1zM2004 1777h1v-11h-1zM2005 1778h1v-18h-1zM2006 1770h1v-36h-1zM2007 1769h1v-9h-1zM2044 1762h1v-14h-1zM2045 1740h1v-26h-1zM2046 1757h1v-9h-1zM2047 1769h1v-11h-1zM2048 1760h1v-31h-1zM2049 1743h1v-24h-1zM2050 1766h1v-10h-1zM2051 1765h1v-6h-1zM2052 1752h1v-46h-1zM2053 1776h1v-17h-1zM2054 1778h1v-26h-1zM2055 1778h1v-28h-1zM2056 1733h1v-23h-1zM2057 1760h1v-10h-1zM2058 1743h1v-11h-1zM2059 1723h1v-40h-1zM2060 1753h1v-21h-1zM2061 1784h1v-4h-1zM2063 1784h1v-4h-1zM2067 1784h1v-6h-1zM2068 1777h1v-12h-1zM2069 1778h1v-7h-1zM2070 1775h1v-22h-1zM2071 1778h1v-7h-1zM2074 1767h1v-11h-1zM2075 1754h1v-20h-1zM2076 1767h1v-11h-1zM2165 1759h1v-4h-1zM2166 1733h1v-30h-1zM2167 1755h1v-16h-1zM2168 1778h1v-16h-1zM2169 1740h1v-1h-1zM2170 1777h1v-12h-1zM2178 1768h1v-11h-1zM2179 1777h1v-4h-1zM2233 1778h1v-4h-1zM2234 1776h1v-9h-1zM2235 1776h1v-2h-1zM2238 1777h1v-3h-1zM2239 1773h1v-6h-1zM2240 1778h1v-4h-1zM2260 1736h1v-34h-1zM2261 1737h1v-30h-1zM2262 1738h1v-27h-1zM2263 1728h1v-18h-1zM2264 1741h1v-29h-1zM2272 1771h1v-16h-1zM2273 1731h1v-7h-1zM2274 1732h1v-5h-1zM2275 1729h1v-1h-1zM2276 1732h1v-1h-1zM2277 1734h1v-7h-1zM2278 1731h1v-2h-1zM2279 1744h1v-9h-1zM2280 1764h1v-4h-1zM2395 1775h1v-17h-1zM2396 1763h1v-44h-1zM2397 1775h1v-17h-1zM2458 1775h1v-14h-1zM2459 1767h1v-24h-1zM2460 1775h1v-14h-1zM2461 1778h1v-2h-1zM2462 1778h1v-22h-1zM2463 1777h1v-1h-1zM2467 1778h1v-6h-1zM2468 1772h1v-18h-1zM2469 1777h1v-5h-1zM2475 1778h1v-6h-1zM2476 1778h1v-20h-1zM2477 1777h1v-5h-1zM2479 1772h1v-2h-1zM2480 1761h1v-1h-1zM2481 1750h1v-1h-1zM2482 1777h1v-24h-1zM2483 1778h1v-22h-1zM2484 1778h1v-20h-1zM2485 1777h1v-9h-1zM2486 1778h1v-1h-1zM2489 1736h1v-5h-1zM2490 1675h1v-12h-1zM2491 1736h1v-5h-1zM2494 1760h1v-31h-1zM2495 1733h1v-59h-1zM2496 1735h1v-62h-1zM2497 1736h1v-62h-1zM2498 1735h1v-62h-1zM2499 1735h1v-63h-1zM2500 1733h1v-62h-1zM2501 1733h1v-60h-1zM2502 1732h1v-60h-1zM2503 1731h1v-57h-1zM2504 1734h1v-60h-1zM2505 1733h1v-61h-1zM2506 1726h1v-51h-1zM2507 1716h1v-42h-1zM2508 1709h1v-37h-1zM2509 1698h1v-27h-1zM2510 1693h1v-21h-1zM2511 1688h1v-15h-1zM2512 1688h1v-14h-1zM2513 1687h1v-15h-1zM2514 1688h1v-16h-1zM2515 1686h1v-13h-1zM2516 1687h1v-15h-1zM2517 1688h1v-15h-1zM2518 1688h2v-16h-2zM2520 1688h1v-15h-1zM2521 1687h1v-13h-1zM2522 1686h1v-13h-1zM2523 1689h1v-17h-1zM2524 1695h1v-22h-1zM2525 1698h1v-25h-1zM2526 1702h1v-28h-1zM2527 1705h1v-34h-1zM2528 1708h1v-35h-1zM2529 1715h1v-43h-1zM2530 1720h1v-49h-1zM2531 1723h1v-52h-1zM2532 1730h1v-56h-1zM2533 1731h1v-56h-1zM2534 1734h1v-61h-1zM2535 1734h1v-60h-1zM2536 1734h1v-61h-1zM2537 1735h1v-63h-1zM2538 1733h1v-61h-1zM2539 1735h1v-61h-1zM2540 1735h1v-63h-1zM2541 1735h1v-61h-1zM2542 1734h1v-61h-1zM2543 1733h2v-59h-2zM2545 1735h1v-62h-1zM2546 1735h2v-61h-2zM2548 1735h1v-62h-1zM2549 1759h1v-31h-1zM2584 1767h1v-21h-1zM2585 1750h1v-38h-1zM2586 1751h1v-38h-1zM2587 1751h1v-39h-1zM2588 1753h1v-40h-1zM2589 1752h1v-37h-1zM2590 1749h1v-36h-1zM2591 1750h1v-35h-1zM2592 1750h1v-38h-1zM2593 1750h2v-35h-2zM2595 1752h1v-38h-1zM2596 1750h1v-38h-1zM2597 1768h1v-21h-1zM2602 1755h1v-4h-1zM2603 1728h1v-8h-1zM2604 1704h1v-11h-1zM2605 1728h1v-8h-1zM2606 1755h1v-4h-1zM2607 1784h1v-6h-1zM2608 1777h1v-3h-1zM2609 1777h1v-1h-1zM2610 1777h1v-15h-1zM2611 1778h1v-2h-1zM2614 1776h1v-12h-1zM2615 1771h1v-47h-1zM2616 1776h1v-12h-1zM2619 1777h1v-10h-1zM2620 1777h1v-43h-1zM2621 1777h1v-10h-1z" fill="#a5b35a"/><path d="M974 1784h1v-6h-1zM975 1777h1v-8h-1zM976 1778h1v-11h-1zM977 1777h1v-11h-1zM978 1778h1v-12h-1zM979 1778h1v-16h-1zM980 1777h1v-13h-1zM981 1777h1v-6h-1zM982 1784h1v-6h-1zM1079 1749h1v-28h-1zM1080 1749h1v-34h-1zM1081 1750h1v-39h-1zM1082 1751h1v-45h-1zM1083 1744h1v-50h-1zM1084 1743h1v-44h-1zM1085 1744h1v-29h-1zM1086 1740h1v-36h-1zM1087 1735h1v-30h-1zM1088 1736h1v-31h-1zM1089 1737h1v-31h-1zM1090 1726h1v-25h-1zM1091 1732h1v-12h-1zM1092 1732h1v-20h-1zM1093 1743h1v-32h-1zM1094 1741h1v-21h-1zM1095 1743h1v-11h-1zM1096 1745h1v-8h-1zM1158 1778h1v-32h-1zM1159 1777h1v-91h-1zM1160 1778h1v-32h-1zM1161 1768h1v-10h-1zM1162 1762h1v-3h-1zM1163 1755h1v-5h-1zM1164 1765h1v-5h-1zM1165 1767h1v-9h-1zM1166 1758h1v-1h-1zM1167 1766h1v-8h-1zM1168 1767h1v-11h-1zM1169 1769h1v-12h-1zM1170 1764h1v-13h-1zM1171 1756h1v-2h-1zM1172 1755h1v-4h-1zM1174 1756h1v-9h-1zM1175 1753h1v-4h-1zM1176 1759h1v-11h-1zM1179 1759h1v-2h-1zM1180 1760h1v-4h-1zM1181 1759h1v-9h-1zM1182 1761h1v-12h-1zM1183 1764h1v-18h-1zM1184 1761h1v-6h-1zM1185 1760h1v-3h-1zM1186 1762h1v-6h-1zM1187 1756h1v-6h-1zM1188 1763h1v-13h-1zM1189 1755h1v-8h-1zM1190 1761h1v-11h-1zM1191 1768h1v-12h-1zM1192 1765h1v-7h-1zM1193 1755h1v-6h-1zM1194 1763h1v-7h-1zM1195 1759h1v-9h-1zM1197 1757h1v-6h-1zM1198 1757h1v-9h-1zM1199 1756h1v-7h-1zM1200 1756h1v-8h-1zM1201 1757h1v-6h-1zM1202 1756h1v-2h-1zM1203 1759h1v-4h-1zM1204 1756h1v-1h-1zM1205 1760h1v-4h-1zM1207 1765h1v-9h-1zM1208 1759h1v-1h-1zM1209 1768h1v-8h-1zM1210 1753h1v-4h-1zM1939 1784h1v-6h-1zM1940 1778h1v-8h-1zM1941 1777h1v-12h-1zM1942 1777h1v-9h-1zM1943 1778h1v-9h-1zM1944 1778h1v-10h-1zM1945 1778h1v-9h-1zM1946 1778h1v-14h-1zM1947 1778h1v-8h-1zM1948 1777h1v-7h-1zM1949 1778h1v-10h-1zM1950 1778h1v-9h-1zM1951 1778h1v-1h-1z" fill="#874040"/><path d="M528.5 1783.6H2626.5" stroke="#e8a030" stroke-width="1"/><path d="M528.5 1784.7H2626.5" stroke="#c030d0" stroke-width="0.9"/><path d="M541 1818h1v-2h-1zM542 1818h1v-4h-1zM543 1818h1v-2h-1zM550 1818h1v-11h-1zM551 1818h1v-22h-1zM552 1818h1v-11h-1zM560 1818h1v-9h-1zM561 1818h1v-18h-1zM562 1818h1v-9h-1zM569 1818h1v-10h-1zM570 1818h1v-20h-1zM571 1818h3v-30h-3zM574 1818h1v-20h-1zM575 1818h1v-10h-1zM588 1818h1v-7h-1zM589 1818h1v-15h-1zM590 1818h1v-7h-1zM601 1818h1v-10h-1zM602 1818h2v-20h-2zM604 1818h1v-10h-1zM616 1818h1v-10h-1zM617 1818h1v-20h-1zM618 1818h45v-30h-45zM663 1818h1v-20h-1zM664 1818h1v-10h-1zM665 1818h1v-20h-1zM666 1818h104v-30h-104zM770 1818h1v-20h-1zM771 1818h1v-10h-1zM787 1818h1v-10h-1zM788 1818h1v-20h-1zM789 1818h2v-30h-2zM791 1818h1v-20h-1zM792 1818h1v-10h-1zM822 1818h1v-10h-1zM823 1818h1v-20h-1zM824 1818h85v-30h-85zM909 1818h1v-20h-1zM910 1818h1v-10h-1zM924 1818h1v-10h-1zM925 1818h1v-20h-1zM926 1818h7v-30h-7zM933 1818h1v-20h-1zM934 1818h1v-10h-1zM935 1818h1v-20h-1zM936 1818h22v-30h-22zM958 1818h1v-20h-1zM959 1818h1v-10h-1zM967 1818h1v-10h-1zM968 1818h1v-20h-1zM969 1818h1v-30h-1zM970 1818h1v-20h-1zM971 1818h1v-10h-1zM992 1818h1v-3h-1zM993 1818h1v-8h-1zM994 1818h1v-4h-1zM995 1818h1v-9h-1zM996 1818h1v-4h-1zM997 1818h1v-5h-1zM998 1818h1v-11h-1zM999 1818h2v-5h-2zM1001 1818h1v-13h-1zM1002 1818h1v-6h-1zM1003 1818h1v-15h-1zM1004 1818h1v-6h-1zM1005 1818h1v-7h-1zM1006 1818h1v-16h-1zM1007 1818h1v-8h-1zM1008 1818h1v-18h-1zM1009 1818h2v-8h-2zM1011 1818h1v-20h-1zM1012 1818h1v-9h-1zM1013 1818h1v-22h-1zM1014 1818h1v-9h-1zM1015 1818h1v-10h-1zM1016 1818h1v-24h-1zM1017 1818h1v-11h-1zM1018 1818h1v-26h-1zM1019 1818h2v-11h-2zM1021 1818h1v-27h-1zM1022 1818h1v-11h-1zM1055 1818h1v-10h-1zM1056 1818h1v-20h-1zM1057 1818h1v-10h-1zM1115 1818h1v-6h-1zM1116 1818h1v-13h-1zM1117 1818h1v-6h-1zM1134 1818h1v-5h-1zM1135 1818h1v-10h-1zM1136 1818h1v-5h-1zM1149 1818h1v-5h-1zM1150 1818h1v-10h-1zM1151 1818h1v-5h-1zM1154 1818h1v-15h-1zM1155 1818h1v-30h-1zM1156 1818h1v-15h-1zM1215 1818h1v-15h-1zM1216 1818h1v-30h-1zM1217 1818h1v-15h-1zM1218 1818h1v-1h-1zM1219 1818h1v-6h-1zM1220 1818h1v-1h-1zM1221 1818h1v-2h-1zM1222 1818h1v-7h-1zM1223 1818h1v-2h-1zM1224 1818h1v-8h-1zM1225 1818h1v-2h-1zM1226 1818h1v-8h-1zM1227 1818h1v-2h-1zM1236 1818h1v-10h-1zM1237 1818h1v-20h-1zM1238 1818h1v-10h-1zM1242 1818h1v-4h-1zM1243 1818h1v-9h-1zM1244 1818h1v-4h-1zM1249 1818h1v-10h-1zM1250 1818h1v-20h-1zM1251 1818h1v-30h-1zM1252 1818h1v-20h-1zM1253 1818h1v-10h-1zM1257 1818h1v-6h-1zM1258 1818h1v-10h-1zM1259 1818h1v-6h-1zM1262 1818h1v-9h-1zM1263 1818h1v-21h-1zM1264 1818h1v-9h-1zM1268 1818h1v-12h-1zM1269 1818h1v-22h-1zM1270 1818h1v-12h-1zM1272 1818h1v-7h-1zM1273 1818h1v-14h-1zM1274 1818h1v-7h-1zM1275 1818h1v-8h-1zM1276 1818h1v-5h-1zM1277 1818h1v-1h-1zM1279 1818h1v-10h-1zM1280 1818h1v-20h-1zM1281 1818h2v-30h-2zM1283 1818h1v-20h-1zM1284 1818h1v-10h-1zM1296 1818h1v-8h-1zM1297 1818h1v-19h-1zM1298 1818h1v-8h-1zM1299 1818h1v-11h-1zM1300 1818h1v-4h-1zM1301 1818h1v-5h-1zM1302 1818h1v-12h-1zM1303 1818h1v-23h-1zM1304 1818h1v-12h-1zM1305 1818h1v-10h-1zM1306 1818h1v-20h-1zM1307 1818h32v-30h-32zM1339 1818h1v-20h-1zM1340 1818h1v-10h-1zM1346 1818h1v-10h-1zM1347 1818h1v-20h-1zM1348 1818h10v-30h-10zM1358 1818h1v-20h-1zM1359 1818h1v-10h-1zM1361 1818h1v-5h-1zM1362 1818h1v-14h-1zM1363 1818h1v-5h-1zM1365 1818h1v-8h-1zM1366 1818h1v-15h-1zM1367 1818h1v-8h-1zM1372 1818h1v-12h-1zM1373 1818h1v-25h-1zM1374 1818h1v-12h-1zM1377 1818h1v-10h-1zM1378 1818h1v-20h-1zM1379 1818h9v-30h-9zM1388 1818h1v-20h-1zM1389 1818h1v-10h-1zM1391 1818h1v-6h-1zM1392 1818h1v-11h-1zM1393 1818h1v-6h-1zM1394 1818h1v-4h-1zM1395 1818h1v-7h-1zM1396 1818h1v-5h-1zM1397 1818h1v-14h-1zM1398 1818h1v-5h-1zM1418 1818h1v-9h-1zM1419 1818h1v-18h-1zM1420 1818h1v-9h-1zM1440 1818h1v-7h-1zM1441 1818h1v-15h-1zM1442 1818h1v-8h-1zM1443 1818h1v-20h-1zM1444 1818h1v-8h-1zM1446 1818h1v-15h-1zM1447 1818h1v-30h-1zM1448 1818h1v-15h-1zM1449 1818h1v-6h-1zM1450 1818h1v-11h-1zM1451 1818h1v-12h-1zM1452 1818h1v-21h-1zM1453 1818h1v-12h-1zM1454 1818h1v-11h-1zM1455 1818h1v-5h-1zM1486 1818h1v-6h-1zM1487 1818h1v-12h-1zM1488 1818h1v-6h-1zM1521 1818h1v-3h-1zM1522 1818h1v-6h-1zM1523 1818h1v-7h-1zM1524 1818h1v-22h-1zM1525 1818h1v-7h-1zM1526 1818h1v-15h-1zM1527 1818h2v-26h-2zM1529 1818h1v-14h-1zM1533 1818h1v-5h-1zM1534 1818h1v-16h-1zM1535 1818h1v-10h-1zM1536 1818h1v-19h-1zM1537 1818h1v-10h-1zM1538 1818h1v-8h-1zM1539 1818h1v-3h-1zM1540 1818h1v-13h-1zM1541 1818h1v-25h-1zM1542 1818h1v-13h-1zM1543 1818h1v-10h-1zM1544 1818h1v-20h-1zM1545 1818h6v-30h-6zM1551 1818h1v-20h-1zM1552 1818h1v-10h-1zM1554 1818h1v-6h-1zM1555 1818h1v-21h-1zM1556 1818h1v-6h-1zM1563 1818h1v-7h-1zM1564 1818h1v-20h-1zM1565 1818h1v-7h-1zM1585 1818h1v-4h-1zM1586 1818h1v-9h-1zM1587 1818h1v-4h-1zM1588 1818h1v-7h-1zM1589 1818h1v-12h-1zM1590 1818h1v-7h-1zM1591 1818h1v-2h-1zM1612 1818h1v-14h-1zM1613 1818h1v-26h-1zM1614 1818h1v-14h-1zM1615 1818h1v-6h-1zM1616 1818h1v-13h-1zM1617 1818h1v-6h-1zM1623 1818h1v-10h-1zM1624 1818h1v-20h-1zM1625 1818h54v-30h-54zM1679 1818h1v-20h-1zM1680 1818h1v-10h-1zM1681 1818h1v-20h-1zM1682 1818h1v-22h-1zM1683 1818h1v-15h-1zM1684 1818h1v-8h-1zM1687 1818h1v-8h-1zM1688 1818h1v-15h-1zM1689 1818h1v-22h-1zM1690 1818h2v-30h-2zM1692 1818h1v-22h-1zM1693 1818h1v-15h-1zM1694 1818h1v-8h-1zM1701 1818h1v-8h-1zM1702 1818h1v-15h-1zM1703 1818h1v-22h-1zM1704 1818h9v-30h-9zM1713 1818h1v-26h-1zM1714 1818h1v-22h-1zM1715 1818h2v-20h-2zM1717 1818h1v-13h-1zM1718 1818h1v-16h-1zM1719 1818h2v-15h-2zM1721 1818h1v-30h-1zM1722 1818h1v-23h-1zM1723 1818h1v-16h-1zM1724 1818h1v-21h-1zM1725 1818h1v-30h-1zM1726 1818h1v-21h-1zM1727 1818h1v-18h-1zM1728 1818h1v-24h-1zM1729 1818h4v-30h-4zM1733 1818h1v-19h-1zM1734 1818h1v-16h-1zM1735 1818h1v-24h-1zM1736 1818h1v-30h-1zM1737 1818h1v-13h-1zM1738 1818h1v-14h-1zM1739 1818h1v-22h-1zM1740 1818h1v-15h-1zM1741 1818h1v-16h-1zM1742 1818h1v-24h-1zM1743 1818h1v-30h-1zM1744 1818h1v-17h-1zM1745 1818h1v-10h-1zM1746 1818h1v-11h-1zM1747 1818h1v-18h-1zM1748 1818h4v-30h-4zM1752 1818h1v-7h-1zM1753 1818h1v-8h-1zM1754 1818h2v-30h-2zM1756 1818h1v-21h-1zM1757 1818h1v-23h-1zM1758 1818h2v-30h-2zM1760 1818h1v-13h-1zM1761 1818h1v-11h-1zM1762 1818h1v-20h-1zM1763 1818h1v-14h-1zM1764 1818h1v-12h-1zM1765 1818h1v-17h-1zM1766 1818h1v-7h-1zM1767 1818h1v-9h-1zM1768 1818h1v-30h-1zM1769 1818h1v-13h-1zM1770 1818h1v-6h-1zM1771 1818h1v-19h-1zM1772 1818h1v-24h-1zM1773 1818h1v-21h-1zM1774 1818h1v-19h-1zM1775 1818h1v-22h-1zM1776 1818h1v-26h-1zM1777 1818h20v-30h-20zM1797 1818h1v-21h-1zM1798 1818h1v-12h-1zM1799 1818h1v-8h-1zM1800 1818h1v-15h-1zM1801 1818h1v-19h-1zM1802 1818h1v-18h-1zM1803 1818h1v-21h-1zM1804 1818h1v-30h-1zM1805 1818h1v-21h-1zM1806 1818h2v-17h-2zM1808 1818h1v-10h-1zM1809 1818h1v-8h-1zM1810 1818h1v-13h-1zM1811 1818h1v-21h-1zM1812 1818h1v-16h-1zM1813 1818h1v-7h-1zM1814 1818h1v-20h-1zM1815 1818h1v-30h-1zM1816 1818h1v-18h-1zM1817 1818h1v-16h-1zM1818 1818h2v-30h-2zM1820 1818h1v-13h-1zM1821 1818h2v-6h-2zM1823 1818h1v-13h-1zM1824 1818h21v-30h-21zM1845 1818h1v-22h-1zM1846 1818h1v-24h-1zM1847 1818h2v-30h-2zM1849 1818h1v-18h-1zM1850 1818h1v-19h-1zM1851 1818h12v-30h-12zM1863 1818h1v-12h-1zM1864 1818h1v-2h-1zM1865 1818h1v-11h-1zM1866 1818h1v-30h-1zM1867 1818h1v-14h-1zM1868 1818h1v-10h-1zM1869 1818h1v-17h-1zM1870 1818h1v-10h-1zM1871 1818h1v-7h-1zM1872 1818h9v-30h-9zM1881 1818h1v-22h-1zM1882 1818h1v-19h-1zM1883 1818h1v-21h-1zM1884 1818h1v-27h-1zM1885 1818h3v-30h-3zM1888 1818h1v-14h-1zM1889 1818h1v-6h-1zM1890 1818h1v-12h-1zM1891 1818h13v-30h-13zM1904 1818h1v-15h-1zM1905 1818h1v-7h-1zM1906 1818h30v-30h-30zM1936 1818h1v-22h-1zM1937 1818h1v-15h-1zM1938 1818h1v-8h-1zM1952 1818h1v-8h-1zM1953 1818h1v-15h-1zM1954 1818h1v-22h-1zM1955 1818h5v-30h-5zM1960 1818h1v-22h-1zM1961 1818h1v-15h-1zM1962 1818h1v-8h-1zM1968 1818h1v-8h-1zM1969 1818h1v-15h-1zM1970 1818h1v-22h-1zM1971 1818h8v-30h-8zM1979 1818h1v-22h-1zM1980 1818h1v-15h-1zM1981 1818h1v-8h-1zM1998 1818h1v-8h-1zM1999 1818h1v-15h-1zM2000 1818h1v-22h-1zM2001 1818h44v-30h-44zM2045 1818h1v-22h-1zM2046 1818h1v-15h-1zM2047 1818h1v-8h-1zM2071 1818h1v-8h-1zM2072 1818h1v-15h-1zM2073 1818h1v-22h-1zM2074 1818h81v-30h-81zM2155 1818h1v-22h-1zM2156 1818h1v-15h-1zM2157 1818h1v-8h-1zM2166 1818h1v-8h-1zM2167 1818h1v-15h-1zM2168 1818h1v-22h-1zM2169 1818h2v-30h-2zM2171 1818h1v-24h-1zM2172 1818h1v-19h-1zM2173 1818h1v-22h-1zM2174 1818h2v-30h-2zM2176 1818h1v-23h-1zM2177 1818h1v-19h-1zM2178 1818h1v-11h-1zM2179 1818h1v-6h-1zM2180 1818h1v-11h-1zM2181 1818h1v-19h-1zM2182 1818h1v-20h-1zM2183 1818h1v-24h-1zM2184 1818h5v-30h-5zM2189 1818h1v-12h-1zM2190 1818h1v-3h-1zM2191 1818h1v-10h-1zM2192 1818h1v-26h-1zM2193 1818h1v-19h-1zM2194 1818h1v-15h-1zM2195 1818h1v-16h-1zM2196 1818h1v-20h-1zM2197 1818h1v-24h-1zM2198 1818h1v-11h-1zM2199 1818h1v-4h-1zM2200 1818h1v-11h-1zM2201 1818h2v-30h-2zM2203 1818h1v-20h-1zM2204 1818h1v-21h-1zM2205 1818h1v-30h-1zM2206 1818h1v-23h-1zM2207 1818h1v-19h-1zM2208 1818h1v-21h-1zM2209 1818h2v-11h-2zM2211 1818h2v-30h-2zM2213 1818h1v-26h-1zM2214 1818h1v-20h-1zM2215 1818h1v-21h-1zM2216 1818h1v-14h-1zM2217 1818h1v-4h-1zM2218 1818h1v-15h-1zM2219 1818h2v-7h-2zM2221 1818h2v-15h-2zM2223 1818h1v-10h-1zM2224 1818h1v-17h-1zM2225 1818h1v-22h-1zM2226 1818h1v-14h-1zM2227 1818h1v-8h-1zM2228 1818h1v-10h-1zM2229 1818h1v-17h-1zM2230 1818h3v-30h-3zM2233 1818h1v-18h-1zM2234 1818h1v-4h-1zM2235 1818h1v-19h-1zM2236 1818h2v-30h-2zM2238 1818h1v-24h-1zM2239 1818h1v-20h-1zM2240 1818h1v-24h-1zM2241 1818h14v-30h-14zM2255 1818h1v-22h-1zM2256 1818h1v-15h-1zM2257 1818h1v-8h-1zM2265 1818h1v-15h-1zM2266 1818h1v-10h-1zM2267 1818h1v-20h-1zM2268 1818h1v-10h-1zM2269 1818h1v-17h-1zM2270 1818h1v-10h-1zM2271 1818h1v-20h-1zM2272 1818h1v-12h-1zM2273 1818h1v-8h-1zM2274 1818h5v-30h-5zM2279 1818h1v-20h-1zM2280 1818h1v-10h-1zM2318 1818h1v-10h-1zM2319 1818h1v-20h-1zM2320 1818h8v-30h-8zM2328 1818h1v-20h-1zM2329 1818h1v-10h-1zM2331 1818h1v-10h-1zM2332 1818h1v-20h-1zM2333 1818h9v-30h-9zM2342 1818h1v-20h-1zM2343 1818h1v-10h-1zM2346 1818h1v-10h-1zM2347 1818h1v-20h-1zM2348 1818h2v-30h-2zM2350 1818h1v-20h-1zM2351 1818h1v-10h-1zM2353 1818h1v-6h-1zM2354 1818h1v-14h-1zM2355 1818h1v-11h-1zM2356 1818h1v-9h-1zM2357 1818h1v-18h-1zM2358 1818h1v-30h-1zM2359 1818h1v-14h-1zM2360 1818h1v-6h-1zM2362 1818h1v-10h-1zM2363 1818h1v-20h-1zM2364 1818h21v-30h-21zM2385 1818h1v-20h-1zM2386 1818h1v-10h-1zM2391 1818h1v-10h-1zM2392 1818h1v-20h-1zM2393 1818h2v-30h-2zM2395 1818h1v-20h-1zM2396 1818h1v-10h-1z" fill="#ff80a0"/><path d="M528.5 1818.5H2626.5" stroke="#ff80a0" stroke-width="1.4"/><path d="M539.3 1821.7h1.6v30.4h-1.6zM552.6 1821.7h1.9v30.4h-1.9zM584.1 1821.7h1.6v30.4h-1.6zM592.2 1821.7h3.5v30.4h-3.5zM797.2 1821.7h1.6v30.4h-1.6zM962.6 1821.7h1.9v30.4h-1.9zM972.4 1821.7h1.4v30.4h-1.4zM986.6 1821.7h1.2v30.4h-1.2zM1020.8 1821.7h2.3v30.4h-2.3zM1025.0 1821.7h2.8v30.4h-2.8zM1029.7 1821.7h2.3v30.4h-2.3zM1034.3 1821.7h3.3v30.4h-3.3zM1039.9 1821.7h3.0v30.4h-3.0zM1046.0 1821.7h2.8v30.4h-2.8zM1050.6 1821.7h2.8v30.4h-2.8zM1066.9 1821.7h5.1v30.4h-5.1zM1119.1 1821.7h7.7v30.4h-7.7zM1138.4 1821.7h1.2v30.4h-1.2zM1160.1 1821.7h10.9v30.4h-10.9zM1175.0 1821.7h3.7v30.4h-3.7zM1212.3 1821.7h3.7v30.4h-3.7zM1458.7 1821.7h22.1v30.4h-22.1zM1486.7 1821.7h1.9v30.4h-1.9zM1565.9 1821.7h3.5v30.4h-3.5zM1593.8 1821.7h2.3v30.4h-2.3zM1598.5 1821.7h8.2v30.4h-8.2zM1692.8 1821.7h1.2v30.4h-1.2zM1692.1 1821.7h1.4v30.4h-1.4zM1698.2 1821.7h3.3v30.4h-3.3zM1936.9 1821.7h1.6v30.4h-1.6zM1977.0 1821.7h1.6v30.4h-1.6zM1992.1 1821.7h2.3v30.4h-2.3zM2045.2 1821.7h5.6v30.4h-5.6zM2053.9 1821.7h1.6v30.4h-1.6zM2063.2 1821.7h1.6v30.4h-1.6zM2067.1 1821.7h1.4v30.4h-1.4zM2070.9 1821.7h1.4v30.4h-1.4zM2156.4 1821.7h1.6v30.4h-1.6zM2164.0 1821.7h1.6v30.4h-1.6zM2170.3 1821.7h4.0v30.4h-4.0zM2257.7 1821.7h1.4v30.4h-1.4zM2298.6 1821.7h1.2v30.4h-1.2zM2397.6 1821.7h4.0v30.4h-4.0zM2403.8 1821.7h1.8v30.4h-1.8zM2408.0 1821.7h3.7v30.4h-3.7zM2447.2 1821.7h13.6v30.4h-13.6zM2462.3 1821.7h1.5v30.4h-1.5zM2465.0 1821.7h1.8v30.4h-1.8zM2472.0 1821.7h1.7v30.4h-1.7zM2477.0 1821.7h1.8v30.4h-1.8zM2487.1 1821.7h1.5v30.4h-1.5zM2598.4 1821.7h1.5v30.4h-1.5zM2608.1 1821.7h7.7v30.4h-7.7z" fill="#f0f000"/><path d="M541.4 1821.7h1.4v30.4h-1.4zM550.3 1821.7h1.4v30.4h-1.4zM556.1 1821.7h1.2v30.4h-1.2zM559.1 1821.7h4.0v30.4h-4.0zM566.1 1821.7h2.8v30.4h-2.8zM577.5 1821.7h1.9v30.4h-1.9zM581.0 1821.7h1.9v30.4h-1.9zM588.0 1821.7h1.4v30.4h-1.4zM600.4 1821.7h1.6v30.4h-1.6zM612.5 1821.7h3.0v30.4h-3.0zM665.6 1821.7h1.2v30.4h-1.2zM794.9 1821.7h1.4v30.4h-1.4zM820.5 1821.7h1.4v30.4h-1.4zM910.9 1821.7h1.4v30.4h-1.4zM917.9 1821.7h3.3v30.4h-3.3zM923.0 1821.7h1.2v30.4h-1.2zM935.8 1821.7h1.2v30.4h-1.2zM965.4 1821.7h1.4v30.4h-1.4zM992.4 1821.7h9.8v30.4h-9.8zM1004.0 1821.7h3.3v30.4h-3.3zM1008.7 1821.7h2.3v30.4h-2.3zM1012.0 1821.7h2.3v30.4h-2.3zM1015.7 1821.7h2.8v30.4h-2.8zM1114.5 1821.7h1.9v30.4h-1.9zM1115.1 1821.7h1.6v30.4h-1.6zM1134.5 1821.7h1.4v30.4h-1.4zM1148.5 1821.7h4.7v30.4h-4.7zM1157.1 1821.7h2.3v30.4h-2.3zM1220.0 1821.7h7.7v30.4h-7.7zM1229.3 1821.7h1.6v30.4h-1.6zM1232.3 1821.7h2.3v30.4h-2.3zM1235.6 1821.7h10.0v30.4h-10.0zM1247.2 1821.7h1.4v30.4h-1.4zM1256.1 1821.7h4.7v30.4h-4.7zM1264.2 1821.7h2.3v30.4h-2.3zM1267.7 1821.7h3.5v30.4h-3.5zM1275.9 1821.7h1.6v30.4h-1.6zM1278.9 1821.7h1.6v30.4h-1.6zM1286.3 1821.7h1.4v30.4h-1.4zM1297.5 1821.7h1.6v30.4h-1.6zM1300.8 1821.7h1.4v30.4h-1.4zM1303.8 1821.7h1.2v30.4h-1.2zM1344.1 1821.7h1.4v30.4h-1.4zM1362.1 1821.7h1.6v30.4h-1.6zM1367.4 1821.7h1.6v30.4h-1.6zM1371.4 1821.7h1.6v30.4h-1.6zM1374.4 1821.7h1.4v30.4h-1.4zM1392.3 1821.7h1.2v30.4h-1.2zM1395.4 1821.7h1.4v30.4h-1.4zM1418.0 1821.7h1.6v30.4h-1.6zM1440.6 1821.7h1.4v30.4h-1.4zM1444.3 1821.7h1.4v30.4h-1.4zM1447.1 1821.7h1.6v30.4h-1.6zM1450.1 1821.7h1.6v30.4h-1.6zM1452.9 1821.7h1.6v30.4h-1.6zM1456.4 1821.7h1.4v30.4h-1.4zM1519.3 1821.7h1.4v30.4h-1.4zM1522.1 1821.7h1.4v30.4h-1.4zM1525.1 1821.7h1.2v30.4h-1.2zM1528.1 1821.7h1.4v30.4h-1.4zM1530.9 1821.7h1.6v30.4h-1.6zM1534.0 1821.7h1.6v30.4h-1.6zM1537.5 1821.7h1.4v30.4h-1.4zM1541.0 1821.7h1.6v30.4h-1.6zM1555.4 1821.7h1.6v30.4h-1.6zM1558.4 1821.7h1.6v30.4h-1.6zM1561.2 1821.7h1.4v30.4h-1.4zM1564.0 1821.7h1.4v30.4h-1.4zM1583.3 1821.7h5.4v30.4h-5.4zM1589.9 1821.7h2.1v30.4h-2.1zM1610.1 1821.7h1.4v30.4h-1.4zM1612.9 1821.7h1.4v30.4h-1.4zM1615.7 1821.7h1.9v30.4h-1.9zM1619.0 1821.7h1.6v30.4h-1.6zM1621.8 1821.7h1.4v30.4h-1.4zM1698.2 1821.7h1.9v30.4h-1.9zM1692.8 1821.7h1.6v30.4h-1.6zM1704.5 1821.7h1.6v30.4h-1.6zM1716.1 1821.7h1.6v30.4h-1.6zM1720.1 1821.7h10.0v30.4h-10.0zM1731.7 1821.7h2.3v30.4h-2.3zM1740.1 1821.7h5.1v30.4h-5.1zM1747.6 1821.7h2.3v30.4h-2.3zM1751.7 1821.7h2.3v30.4h-2.3zM1755.0 1821.7h3.0v30.4h-3.0zM1759.2 1821.7h2.3v30.4h-2.3zM1763.4 1821.7h3.3v30.4h-3.3zM1772.0 1821.7h3.5v30.4h-3.5zM1776.7 1821.7h2.3v30.4h-2.3zM1803.0 1821.7h6.3v30.4h-6.3zM1816.3 1821.7h1.6v30.4h-1.6zM1822.1 1821.7h2.3v30.4h-2.3zM1844.2 1821.7h7.7v30.4h-7.7zM1864.5 1821.7h1.9v30.4h-1.9zM1868.7 1821.7h1.9v30.4h-1.9zM1873.8 1821.7h1.9v30.4h-1.9zM1876.8 1821.7h1.6v30.4h-1.6zM1880.8 1821.7h1.9v30.4h-1.9zM1886.1 1821.7h2.3v30.4h-2.3zM1889.6 1821.7h2.8v30.4h-2.8zM1905.5 1821.7h1.4v30.4h-1.4zM1952.1 1821.7h4.0v30.4h-4.0zM1960.0 1821.7h11.2v30.4h-11.2zM1988.6 1821.7h1.6v30.4h-1.6zM2000.3 1821.7h1.6v30.4h-1.6zM2007.3 1821.7h1.6v30.4h-1.6zM2072.5 1821.7h1.6v30.4h-1.6zM2175.0 1821.7h1.6v30.4h-1.6zM2178.5 1821.7h1.9v30.4h-1.9zM2182.0 1821.7h2.3v30.4h-2.3zM2190.1 1821.7h2.3v30.4h-2.3zM2199.5 1821.7h1.9v30.4h-1.9zM2202.9 1821.7h7.0v30.4h-7.0zM2212.3 1821.7h2.3v30.4h-2.3zM2215.8 1821.7h3.5v30.4h-3.5zM2223.2 1821.7h3.0v30.4h-3.0zM2227.4 1821.7h1.9v30.4h-1.9zM2230.9 1821.7h1.6v30.4h-1.6zM2234.4 1821.7h1.4v30.4h-1.4zM2237.9 1821.7h1.6v30.4h-1.6zM2264.7 1821.7h1.4v30.4h-1.4zM2269.3 1821.7h2.3v30.4h-2.3zM2265.5 1821.7h1.6v30.4h-1.6zM2270.7 1821.7h1.6v30.4h-1.6zM2317.9 1821.7h1.6v30.4h-1.6zM2331.7 1821.7h1.6v30.4h-1.6zM2345.9 1821.7h1.6v30.4h-1.6zM2353.8 1821.7h1.6v30.4h-1.6zM2357.1 1821.7h1.6v30.4h-1.6zM2361.7 1821.7h1.6v30.4h-1.6zM2390.9 1821.7h1.6v30.4h-1.6z" fill="#00f0f0"/><path d="M528.5 1852.4H2626.5" stroke="#f0f000" stroke-width="1.1"/><path d="M528.5 1855.6H2626.5V1873.0H528.5z" fill="#c2c2c2"/><path d="M569.4 1855.6h6.1v17.4h-6.1zM596.9 1855.6h3.5v17.4h-3.5zM615.5 1855.6h44.3v17.4h-44.3zM666.8 1855.6h96.7v17.4h-96.7zM799.1 1855.6h20.3v17.4h-20.3zM821.7 1855.6h87.4v17.4h-87.4zM924.1 1855.6h8.2v17.4h-8.2zM937.0 1855.6h21.0v17.4h-21.0zM973.1 1855.6h9.3v17.4h-9.3zM1122.1 1855.6h7.0v17.4h-7.0zM1140.8 1855.6h5.8v17.4h-5.8zM1161.0 1855.6h48.5v17.4h-48.5zM1249.1 1855.6h4.7v17.4h-4.7zM1305.0 1855.6h36.1v17.4h-36.1zM1346.9 1855.6h12.8v17.4h-12.8zM1377.2 1855.6h11.6v17.4h-11.6zM1543.7 1855.6h7.0v17.4h-7.0zM1571.7 1855.6h8.2v17.4h-8.2zM1623.6 1855.6h37.7v17.4h-37.7zM1706.1 1855.6h8.4v17.4h-8.4zM1767.4 1855.6h4.0v17.4h-4.0zM1779.0 1855.6h16.3v17.4h-16.3zM1810.4 1855.6h4.7v17.4h-4.7zM1825.6 1855.6h17.5v17.4h-17.5zM1851.2 1855.6h12.8v17.4h-12.8zM1893.1 1855.6h11.6v17.4h-11.6zM1907.1 1855.6h28.0v17.4h-28.0zM1938.6 1855.6h11.6v17.4h-11.6zM2008.4 1855.6h34.9v17.4h-34.9zM2076.0 1855.6h39.6v17.4h-39.6zM2183.1 1855.6h12.8v17.4h-12.8zM2240.2 1855.6h14.0v17.4h-14.0zM2272.0 1855.6h6.4v17.4h-6.4zM2318.8 1855.6h10.1v17.4h-10.1zM2332.6 1855.6h10.1v17.4h-10.1zM2346.4 1855.6h4.6v17.4h-4.6zM2362.1 1855.6h23.9v17.4h-23.9zM2391.5 1855.6h4.6v17.4h-4.6zM2478.8 1855.6h7.4v17.4h-7.4zM2493.5 1855.6h56.1v17.4h-56.1zM2600.2 1855.6h6.4v17.4h-6.4z" fill="#6e6e6e"/><path d="M822.4 1862.6h86.2v10.4h-86.2zM967.2 1862.6h2.8v10.4h-2.8zM1153.6 1862.6h1.2v10.4h-1.2zM1280.5 1862.6h3.5v10.4h-3.5zM2185.5 1862.6h3.5v10.4h-3.5zM2333.2 1862.6h9.6v10.4h-9.6zM2346.4 1862.6h4.6v10.4h-4.6zM2392.8 1862.6h2.9v10.4h-2.9z" fill="#ffa500"/><path d="M988.2 1863.6h1.9v9.4h-1.9zM1076.3 1863.6h1.4v9.4h-1.4zM2158.7 1863.6h10.5v9.4h-10.5zM2260.0 1863.6h4.7v9.4h-4.7zM2260.0 1863.6h3.3v9.4h-3.3zM2464.1 1863.6h9.2v9.4h-9.2zM2601.1 1863.6h4.6v9.4h-4.6z" fill="#0a8c46"/></svg>
<svg style="left:0;top:0" width="3499" height="150"><path d="M537.5 145.4v-3.8M547.0 145.4v-3.8M556.6 145.4v-3.8M566.2 145.4v-3.8M575.8 145.4v-8.0M585.3 145.4v-3.8M594.9 145.4v-3.8M604.5 145.4v-3.8M614.0 145.4v-3.8M623.6 145.4v-10.5M633.2 145.4v-3.8M642.8 145.4v-3.8M652.3 145.4v-3.8M661.9 145.4v-3.8M671.5 145.4v-8.0M681.1 145.4v-3.8M690.6 145.4v-3.8M700.2 145.4v-3.8M709.8 145.4v-3.8M719.3 145.4v-10.5M728.9 145.4v-3.8M738.5 145.4v-3.8M748.1 145.4v-3.8M757.6 145.4v-3.8M767.2 145.4v-8.0M776.8 145.4v-3.8M786.3 145.4v-3.8M795.9 145.4v-3.8M805.5 145.4v-3.8M815.1 145.4v-10.5M824.6 145.4v-3.8M834.2 145.4v-3.8M843.8 145.4v-3.8M853.3 145.4v-3.8M862.9 145.4v-8.0M872.5 145.4v-3.8M882.1 145.4v-3.8M891.6 145.4v-3.8M901.2 145.4v-3.8M910.8 145.4v-10.5M920.4 145.4v-3.8M929.9 145.4v-3.8M939.5 145.4v-3.8M949.1 145.4v-3.8M958.6 145.4v-8.0M968.2 145.4v-3.8M977.8 145.4v-3.8M987.4 145.4v-3.8M996.9 145.4v-3.8M1006.5 145.4v-10.5M1016.1 145.4v-3.8M1025.6 145.4v-3.8M1035.2 145.4v-3.8M1044.8 145.4v-3.8M1054.4 145.4v-8.0M1063.9 145.4v-3.8M1073.5 145.4v-3.8M1083.1 145.4v-3.8M1092.6 145.4v-3.8M1102.2 145.4v-10.5M1111.8 145.4v-3.8M1121.4 145.4v-3.8M1130.9 145.4v-3.8M1140.5 145.4v-3.8M1150.1 145.4v-8.0M1159.7 145.4v-3.8M1169.2 145.4v-3.8M1178.8 145.4v-3.8M1188.4 145.4v-3.8M1197.9 145.4v-10.5M1207.5 145.4v-3.8M1217.1 145.4v-3.8M1226.7 145.4v-3.8M1236.2 145.4v-3.8M1245.8 145.4v-8.0M1255.4 145.4v-3.8M1264.9 145.4v-3.8M1274.5 145.4v-3.8M1284.1 145.4v-3.8M1293.7 145.4v-10.5M1303.2 145.4v-3.8M1312.8 145.4v-3.8M1322.4 145.4v-3.8M1331.9 145.4v-3.8M1341.5 145.4v-8.0M1351.1 145.4v-3.8M1360.7 145.4v-3.8M1370.2 145.4v-3.8M1379.8 145.4v-3.8M1389.4 145.4v-10.5M1399.0 145.4v-3.8M1408.5 145.4v-3.8M1418.1 145.4v-3.8M1427.7 145.4v-3.8M1437.2 145.4v-8.0M1446.8 145.4v-3.8M1456.4 145.4v-3.8M1466.0 145.4v-3.8M1475.5 145.4v-3.8M1485.1 145.4v-10.5M1494.7 145.4v-3.8M1504.2 145.4v-3.8M1513.8 145.4v-3.8M1523.4 145.4v-3.8M1533.0 145.4v-8.0M1542.5 145.4v-3.8M1552.1 145.4v-3.8M1561.7 145.4v-3.8M1571.2 145.4v-3.8M1580.8 145.4v-10.5M1590.4 145.4v-3.8M1600.0 145.4v-3.8M1609.5 145.4v-3.8M1619.1 145.4v-3.8M1628.7 145.4v-8.0M1638.3 145.4v-3.8M1647.8 145.4v-3.8M1657.4 145.4v-3.8M1667.0 145.4v-3.8M1676.5 145.4v-10.5M1686.1 145.4v-3.8M1695.7 145.4v-3.8M1705.3 145.4v-3.8M1714.8 145.4v-3.8M1724.4 145.4v-8.0M1734.0 145.4v-3.8M1743.5 145.4v-3.8M1753.1 145.4v-3.8M1762.7 145.4v-3.8M1772.3 145.4v-10.5M1781.8 145.4v-3.8M1791.4 145.4v-3.8M1801.0 145.4v-3.8M1810.5 145.4v-3.8M1820.1 145.4v-8.0M1829.7 145.4v-3.8M1839.3 145.4v-3.8M1848.8 145.4v-3.8M1858.4 145.4v-3.8M1868.0 145.4v-10.5M1877.6 145.4v-3.8M1887.1 145.4v-3.8M1896.7 145.4v-3.8M1906.3 145.4v-3.8M1915.8 145.4v-8.0M1925.4 145.4v-3.8M1935.0 145.4v-3.8M1944.6 145.4v-3.8M1954.1 145.4v-3.8M1963.7 145.4v-10.5M1973.3 145.4v-3.8M1982.8 145.4v-3.8M1992.4 145.4v-3.8M2002.0 145.4v-3.8M2011.6 145.4v-8.0M2021.1 145.4v-3.8M2030.7 145.4v-3.8M2040.3 145.4v-3.8M2049.8 145.4v-3.8M2059.4 145.4v-10.5M2069.0 145.4v-3.8M2078.6 145.4v-3.8M2088.1 145.4v-3.8M2097.7 145.4v-3.8M2107.3 145.4v-8.0M2116.9 145.4v-3.8M2126.4 145.4v-3.8M2136.0 145.4v-3.8M2145.6 145.4v-3.8M2155.1 145.4v-10.5M2164.7 145.4v-3.8M2174.3 145.4v-3.8M2183.9 145.4v-3.8M2193.4 145.4v-3.8M2203.0 145.4v-8.0M2212.6 145.4v-3.8M2222.1 145.4v-3.8M2231.7 145.4v-3.8M2241.3 145.4v-3.8M2250.9 145.4v-10.5M2260.4 145.4v-3.8M2270.0 145.4v-3.8M2279.6 145.4v-3.8M2289.1 145.4v-3.8M2298.7 145.4v-8.0M2308.3 145.4v-3.8M2317.9 145.4v-3.8M2327.4 145.4v-3.8M2337.0 145.4v-3.8M2346.6 145.4v-10.5M2356.2 145.4v-3.8M2365.7 145.4v-3.8M2375.3 145.4v-3.8M2384.9 145.4v-3.8M2394.4 145.4v-8.0M2404.0 145.4v-3.8M2413.6 145.4v-3.8M2423.2 145.4v-3.8M2432.7 145.4v-3.8M2442.3 145.4v-10.5M2451.9 145.4v-3.8M2461.4 145.4v-3.8M2471.0 145.4v-3.8M2480.6 145.4v-3.8M2490.2 145.4v-8.0M2499.7 145.4v-3.8M2509.3 145.4v-3.8M2518.9 145.4v-3.8M2528.4 145.4v-3.8M2538.0 145.4v-10.5M2547.6 145.4v-3.8M2557.2 145.4v-3.8M2566.7 145.4v-3.8M2576.3 145.4v-3.8M2585.9 145.4v-8.0M2595.5 145.4v-3.8M2605.0 145.4v-3.8M2614.6 145.4v-3.8" stroke="#fff" stroke-width="1.1" fill="none"/><path d="M528.5 145.4H2623" stroke="#fff" stroke-width="1.3"/></svg>
<div class="c" style="left:487.4px;top:108.7px;width:80px;height:18px;line-height:18px;font-size:15px;color:#fff;">0ms</div>
<div class="c" style="left:583.1px;top:108.7px;width:80px;height:18px;line-height:18px;font-size:15px;color:#fff;">1ms</div>
<div class="c" style="left:678.8px;top:108.7px;width:80px;height:18px;line-height:18px;font-size:15px;color:#fff;">2ms</div>
<div class="c" style="left:774.6px;top:108.7px;width:80px;height:18px;line-height:18px;font-size:15px;color:#fff;">3ms</div>
<div class="c" style="left:870.3px;top:108.7px;width:80px;height:18px;line-height:18px;font-size:15px;color:#fff;">4ms</div>
<div class="c" style="left:966.0px;top:108.7px;width:80px;height:18px;line-height:18px;font-size:15px;color:#fff;">5ms</div>
<div class="c" style="left:1061.7px;top:108.7px;width:80px;height:18px;line-height:18px;font-size:15px;color:#fff;">6ms</div>
<div class="c" style="left:1157.4px;top:108.7px;width:80px;height:18px;line-height:18px;font-size:15px;color:#fff;">7ms</div>
<div class="c" style="left:1253.2px;top:108.7px;width:80px;height:18px;line-height:18px;font-size:15px;color:#fff;">8ms</div>
<div class="c" style="left:1348.9px;top:108.7px;width:80px;height:18px;line-height:18px;font-size:15px;color:#fff;">9ms</div>
<div class="c" style="left:1444.6px;top:108.7px;width:80px;height:18px;line-height:18px;font-size:15px;color:#fff;">10ms</div>
<div class="c" style="left:1540.3px;top:108.7px;width:80px;height:18px;line-height:18px;font-size:15px;color:#fff;">11ms</div>
<div class="c" style="left:1636.0px;top:108.7px;width:80px;height:18px;line-height:18px;font-size:15px;color:#fff;">12ms</div>
<div class="c" style="left:1731.8px;top:108.7px;width:80px;height:18px;line-height:18px;font-size:15px;color:#fff;">13ms</div>
<div class="c" style="left:1827.5px;top:108.7px;width:80px;height:18px;line-height:18px;font-size:15px;color:#fff;">14ms</div>
<div class="c" style="left:1923.2px;top:108.7px;width:80px;height:18px;line-height:18px;font-size:15px;color:#fff;">15ms</div>
<div class="c" style="left:2018.9px;top:108.7px;width:80px;height:18px;line-height:18px;font-size:15px;color:#fff;">16ms</div>
<div class="c" style="left:2114.6px;top:108.7px;width:80px;height:18px;line-height:18px;font-size:15px;color:#fff;">17ms</div>
<div class="c" style="left:2210.4px;top:108.7px;width:80px;height:18px;line-height:18px;font-size:15px;color:#fff;">18ms</div>
<div class="c" style="left:2306.1px;top:108.7px;width:80px;height:18px;line-height:18px;font-size:15px;color:#fff;">19ms</div>
<div class="c" style="left:2401.8px;top:108.7px;width:80px;height:18px;line-height:18px;font-size:15px;color:#fff;">20ms</div>
<div class="c" style="left:2497.5px;top:108.7px;width:80px;height:18px;line-height:18px;font-size:15px;color:#fff;">21ms</div>
<div class="t" style="left:513.5px;top:108.7px;font-size:15px;color:#fff;width:9.5px;text-align:left;height:18.0px;line-height:18.0px;">0r</div>
<div style="left:523.0px;top:110.0px;width:43.0px;height:36.0px;background:#0a0a78;"></div>
<div class="t" style="left:527.5px;top:114.1px;font-size:18px;color:#fff;width:38.5px;text-align:left;height:24.0px;line-height:24.0px;">0ms</div>
<div style="left:1259.2px;top:110.0px;width:97.8px;height:36.0px;background:rgba(6,124,6,0.92);"></div>
<div class="t" style="left:1263.5px;top:114.1px;font-size:18px;color:#fff;width:93.5px;text-align:left;height:24.0px;line-height:24.0px;">8.15082ms</div>
<div style="left:1461.8px;top:110.0px;width:98.2px;height:36.0px;background:rgba(0,0,0,0.88);"></div>
<div class="t" style="left:1466.5px;top:114.1px;font-size:18px;color:#a8a8a8;width:93.5px;text-align:left;height:24.0px;line-height:24.0px;">10.2671ms</div>
<div style="left:1549.4px;top:110.0px;width:97.8px;height:36.0px;background:rgba(124,6,6,0.92);"></div>
<div class="t" style="left:1554.0px;top:114.1px;font-size:18px;color:#fff;width:93.2px;text-align:left;height:24.0px;line-height:24.0px;">11.1784ms</div>
<svg style="left:0;top:0" width="3499" height="1073"><path d="M531.9 1068.7v-3.8M541.5 1068.7v-10.5M551.1 1068.7v-3.8M560.6 1068.7v-3.8M570.2 1068.7v-3.8M579.8 1068.7v-3.8M589.4 1068.7v-8.0M598.9 1068.7v-3.8M608.5 1068.7v-3.8M618.1 1068.7v-3.8M627.6 1068.7v-3.8M637.2 1068.7v-10.5M646.8 1068.7v-3.8M656.4 1068.7v-3.8M665.9 1068.7v-3.8M675.5 1068.7v-3.8M685.1 1068.7v-8.0M694.7 1068.7v-3.8M704.2 1068.7v-3.8M713.8 1068.7v-3.8M723.4 1068.7v-3.8M732.9 1068.7v-10.5M742.5 1068.7v-3.8M752.1 1068.7v-3.8M761.7 1068.7v-3.8M771.2 1068.7v-3.8M780.8 1068.7v-8.0M790.4 1068.7v-3.8M799.9 1068.7v-3.8M809.5 1068.7v-3.8M819.1 1068.7v-3.8M828.7 1068.7v-10.5M838.2 1068.7v-3.8M847.8 1068.7v-3.8M857.4 1068.7v-3.8M866.9 1068.7v-3.8M876.5 1068.7v-8.0M886.1 1068.7v-3.8M895.7 1068.7v-3.8M905.2 1068.7v-3.8M914.8 1068.7v-3.8M924.4 1068.7v-10.5M934.0 1068.7v-3.8M943.5 1068.7v-3.8M953.1 1068.7v-3.8M962.7 1068.7v-3.8M972.2 1068.7v-8.0M981.8 1068.7v-3.8M991.4 1068.7v-3.8M1001.0 1068.7v-3.8M1010.5 1068.7v-3.8M1020.1 1068.7v-10.5M1029.7 1068.7v-3.8M1039.2 1068.7v-3.8M1048.8 1068.7v-3.8M1058.4 1068.7v-3.8M1068.0 1068.7v-8.0M1077.5 1068.7v-3.8M1087.1 1068.7v-3.8M1096.7 1068.7v-3.8M1106.2 1068.7v-3.8M1115.8 1068.7v-10.5M1125.4 1068.7v-3.8M1135.0 1068.7v-3.8M1144.5 1068.7v-3.8M1154.1 1068.7v-3.8M1163.7 1068.7v-8.0M1173.3 1068.7v-3.8M1182.8 1068.7v-3.8M1192.4 1068.7v-3.8M1202.0 1068.7v-3.8M1211.5 1068.7v-10.5M1221.1 1068.7v-3.8M1230.7 1068.7v-3.8M1240.3 1068.7v-3.8M1249.8 1068.7v-3.8M1259.4 1068.7v-8.0M1269.0 1068.7v-3.8M1278.5 1068.7v-3.8M1288.1 1068.7v-3.8M1297.7 1068.7v-3.8M1307.3 1068.7v-10.5M1316.8 1068.7v-3.8M1326.4 1068.7v-3.8M1336.0 1068.7v-3.8M1345.5 1068.7v-3.8M1355.1 1068.7v-8.0M1364.7 1068.7v-3.8M1374.3 1068.7v-3.8M1383.8 1068.7v-3.8M1393.4 1068.7v-3.8M1403.0 1068.7v-10.5M1412.6 1068.7v-3.8M1422.1 1068.7v-3.8M1431.7 1068.7v-3.8M1441.3 1068.7v-3.8M1450.8 1068.7v-8.0M1460.4 1068.7v-3.8M1470.0 1068.7v-3.8M1479.6 1068.7v-3.8M1489.1 1068.7v-3.8M1498.7 1068.7v-10.5M1508.3 1068.7v-3.8M1517.8 1068.7v-3.8M1527.4 1068.7v-3.8M1537.0 1068.7v-3.8M1546.6 1068.7v-8.0M1556.1 1068.7v-3.8M1565.7 1068.7v-3.8M1575.3 1068.7v-3.8M1584.8 1068.7v-3.8M1594.4 1068.7v-10.5M1604.0 1068.7v-3.8M1613.6 1068.7v-3.8M1623.1 1068.7v-3.8M1632.7 1068.7v-3.8M1642.3 1068.7v-8.0M1651.9 1068.7v-3.8M1661.4 1068.7v-3.8M1671.0 1068.7v-3.8M1680.6 1068.7v-3.8M1690.1 1068.7v-10.5M1699.7 1068.7v-3.8M1709.3 1068.7v-3.8M1718.9 1068.7v-3.8M1728.4 1068.7v-3.8M1738.0 1068.7v-8.0M1747.6 1068.7v-3.8M1757.1 1068.7v-3.8M1766.7 1068.7v-3.8M1776.3 1068.7v-3.8M1785.9 1068.7v-10.5M1795.4 1068.7v-3.8M1805.0 1068.7v-3.8M1814.6 1068.7v-3.8M1824.1 1068.7v-3.8M1833.7 1068.7v-8.0M1843.3 1068.7v-3.8M1852.9 1068.7v-3.8M1862.4 1068.7v-3.8M1872.0 1068.7v-3.8M1881.6 1068.7v-10.5M1891.2 1068.7v-3.8M1900.7 1068.7v-3.8M1910.3 1068.7v-3.8M1919.9 1068.7v-3.8M1929.4 1068.7v-8.0M1939.0 1068.7v-3.8M1948.6 1068.7v-3.8M1958.2 1068.7v-3.8M1967.7 1068.7v-3.8M1977.3 1068.7v-10.5M1986.9 1068.7v-3.8M1996.4 1068.7v-3.8M2006.0 1068.7v-3.8M2015.6 1068.7v-3.8M2025.2 1068.7v-8.0M2034.7 1068.7v-3.8M2044.3 1068.7v-3.8M2053.9 1068.7v-3.8M2063.4 1068.7v-3.8M2073.0 1068.7v-10.5M2082.6 1068.7v-3.8M2092.2 1068.7v-3.8M2101.7 1068.7v-3.8M2111.3 1068.7v-3.8M2120.9 1068.7v-8.0M2130.5 1068.7v-3.8M2140.0 1068.7v-3.8M2149.6 1068.7v-3.8M2159.2 1068.7v-3.8M2168.7 1068.7v-10.5M2178.3 1068.7v-3.8M2187.9 1068.7v-3.8M2197.5 1068.7v-3.8M2207.0 1068.7v-3.8M2216.6 1068.7v-8.0M2226.2 1068.7v-3.8M2235.7 1068.7v-3.8M2245.3 1068.7v-3.8M2254.9 1068.7v-3.8M2264.5 1068.7v-10.5M2274.0 1068.7v-3.8M2283.6 1068.7v-3.8M2293.2 1068.7v-3.8M2302.7 1068.7v-3.8M2312.3 1068.7v-8.0M2321.9 1068.7v-3.8M2331.5 1068.7v-3.8M2341.0 1068.7v-3.8M2350.6 1068.7v-3.8M2360.2 1068.7v-10.5M2369.8 1068.7v-3.8M2379.3 1068.7v-3.8M2388.9 1068.7v-3.8M2398.5 1068.7v-3.8M2408.0 1068.7v-8.0M2417.6 1068.7v-3.8M2427.2 1068.7v-3.8M2436.8 1068.7v-3.8M2446.3 1068.7v-3.8M2455.9 1068.7v-10.5M2465.5 1068.7v-3.8M2475.0 1068.7v-3.8M2484.6 1068.7v-3.8M2494.2 1068.7v-3.8M2503.8 1068.7v-8.0M2513.3 1068.7v-3.8M2522.9 1068.7v-3.8M2532.5 1068.7v-3.8M2542.0 1068.7v-3.8M2551.6 1068.7v-10.5M2561.2 1068.7v-3.8M2570.8 1068.7v-3.8M2580.3 1068.7v-3.8M2589.9 1068.7v-3.8M2599.5 1068.7v-8.0M2609.1 1068.7v-3.8M2618.6 1068.7v-3.8" stroke="#fff" stroke-width="1.1" fill="none"/><path d="M528.5 1068.7H2623" stroke="#fff" stroke-width="1.3"/></svg>
<div class="c" style="left:501.0px;top:1032.0px;width:80px;height:18px;line-height:18px;font-size:15px;color:#fff;">22ms</div>
<div class="c" style="left:596.7px;top:1032.0px;width:80px;height:18px;line-height:18px;font-size:15px;color:#fff;">23ms</div>
<div class="c" style="left:692.4px;top:1032.0px;width:80px;height:18px;line-height:18px;font-size:15px;color:#fff;">24ms</div>
<div class="c" style="left:788.2px;top:1032.0px;width:80px;height:18px;line-height:18px;font-size:15px;color:#fff;">25ms</div>
<div class="c" style="left:883.9px;top:1032.0px;width:80px;height:18px;line-height:18px;font-size:15px;color:#fff;">26ms</div>
<div class="c" style="left:979.6px;top:1032.0px;width:80px;height:18px;line-height:18px;font-size:15px;color:#fff;">27ms</div>
<div class="c" style="left:1075.3px;top:1032.0px;width:80px;height:18px;line-height:18px;font-size:15px;color:#fff;">28ms</div>
<div class="c" style="left:1171.0px;top:1032.0px;width:80px;height:18px;line-height:18px;font-size:15px;color:#fff;">29ms</div>
<div class="c" style="left:1266.8px;top:1032.0px;width:80px;height:18px;line-height:18px;font-size:15px;color:#fff;">30ms</div>
<div class="c" style="left:1362.5px;top:1032.0px;width:80px;height:18px;line-height:18px;font-size:15px;color:#fff;">31ms</div>
<div class="c" style="left:1458.2px;top:1032.0px;width:80px;height:18px;line-height:18px;font-size:15px;color:#fff;">32ms</div>
<div class="c" style="left:1553.9px;top:1032.0px;width:80px;height:18px;line-height:18px;font-size:15px;color:#fff;">33ms</div>
<div class="c" style="left:1649.6px;top:1032.0px;width:80px;height:18px;line-height:18px;font-size:15px;color:#fff;">34ms</div>
<div class="c" style="left:1745.4px;top:1032.0px;width:80px;height:18px;line-height:18px;font-size:15px;color:#fff;">35ms</div>
<div class="c" style="left:1841.1px;top:1032.0px;width:80px;height:18px;line-height:18px;font-size:15px;color:#fff;">36ms</div>
<div class="c" style="left:1936.8px;top:1032.0px;width:80px;height:18px;line-height:18px;font-size:15px;color:#fff;">37ms</div>
<div class="c" style="left:2032.5px;top:1032.0px;width:80px;height:18px;line-height:18px;font-size:15px;color:#fff;">38ms</div>
<div class="c" style="left:2128.2px;top:1032.0px;width:80px;height:18px;line-height:18px;font-size:15px;color:#fff;">39ms</div>
<div class="c" style="left:2224.0px;top:1032.0px;width:80px;height:18px;line-height:18px;font-size:15px;color:#fff;">40ms</div>
<div class="c" style="left:2319.7px;top:1032.0px;width:80px;height:18px;line-height:18px;font-size:15px;color:#fff;">41ms</div>
<div class="c" style="left:2415.4px;top:1032.0px;width:80px;height:18px;line-height:18px;font-size:15px;color:#fff;">42ms</div>
<div class="c" style="left:2511.1px;top:1032.0px;width:80px;height:18px;line-height:18px;font-size:15px;color:#fff;">43ms</div>
<div style="left:1111.0px;top:1033.3px;width:98.0px;height:36.0px;background:rgba(0,0,0,0.88);"></div>
<div class="t" style="left:1115.5px;top:1037.4px;font-size:18px;color:#a8a8a8;width:93.5px;text-align:left;height:24.0px;line-height:24.0px;">28.4586ms</div>
<div style="left:1224.2px;top:1033.3px;width:97.8px;height:36.0px;background:rgba(6,124,6,0.92);"></div>
<div class="t" style="left:1228.5px;top:1037.4px;font-size:18px;color:#fff;width:93.5px;text-align:left;height:24.0px;line-height:24.0px;">29.6448ms</div>
<div style="left:1467.0px;top:1033.3px;width:98.0px;height:36.0px;background:rgba(124,6,6,0.92);"></div>
<div class="t" style="left:1471.5px;top:1037.4px;font-size:18px;color:#fff;width:93.5px;text-align:left;height:24.0px;line-height:24.0px;">32.1800ms</div>
<div style="left:1307.7px;top:146.0px;width:1.3px;height:804.0px;background:#0c8a0c;"></div>
<div style="left:1510.6px;top:146.0px;width:1.3px;height:804.0px;background:#000;"></div>
<div style="left:1597.6px;top:146.0px;width:1.3px;height:804.0px;background:#8a0c0c;"></div>
<div style="left:1159.6px;top:1069.3px;width:1.3px;height:804.0px;background:#000;"></div>
<div style="left:1272.7px;top:1069.3px;width:1.3px;height:804.0px;background:#0c8a0c;"></div>
<div style="left:1515.6px;top:1069.3px;width:1.3px;height:804.0px;background:#8a0c0c;"></div>
<div style="left:2656.8px;top:107.6px;width:824.0px;height:1800.0px;background:#444444;border:1px solid #585858;box-sizing:border-box;"></div>
<div style="left:2656.8px;top:69.6px;width:95.0px;height:39.5px;background:#444444;border:1px solid #585858;border-bottom:none;border-radius:4px 4px 0 0;box-sizing:border-box;"></div>
<div class="t" style="left:2674.3px;top:70.5px;font-size:18px;color:#fff;height:38.0px;line-height:38.0px;">Metrics</div>
<div class="t" style="left:2671.3px;top:142.0px;font-size:18.6px;color:#fff;height:40.0px;line-height:40.0px;font-weight:bold;">1st capture:</div>
<div class="t" style="left:2671.3px;top:230.0px;font-size:18.6px;color:#fff;height:40.0px;line-height:40.0px;font-weight:bold;">2nd capture:</div>
<div class="t" style="left:3044.4px;top:135.8px;font-size:18px;color:#fff;height:20.0px;line-height:20.0px;">Start:</div>
<div class="t" style="left:3105.6px;top:135.8px;font-size:18px;color:#fff;height:20.0px;line-height:20.0px;">8.15 ms</div>
<div class="t" style="left:3243.7px;top:135.8px;font-size:18px;color:#fff;height:20.0px;line-height:20.0px;">Duration:</div>
<div class="t" style="left:3333.7px;top:135.8px;font-size:18px;color:#fff;height:20.0px;line-height:20.0px;">3.03 ms</div>
<div class="t" style="left:3044.4px;top:166.8px;font-size:18px;color:#fff;height:20.0px;line-height:20.0px;">End:</div>
<div class="t" style="left:3105.6px;top:166.8px;font-size:18px;color:#fff;height:20.0px;line-height:20.0px;">11.18 ms</div>
<div class="t" style="left:3243.7px;top:166.8px;font-size:18px;color:#fff;height:20.0px;line-height:20.0px;">Range:</div>
<div class="t" style="left:3333.7px;top:166.8px;font-size:18px;color:#fff;height:20.0px;line-height:20.0px;">Selected</div>
<div class="t" style="left:3044.4px;top:223.9px;font-size:18px;color:#fff;height:20.0px;line-height:20.0px;">Start:</div>
<div class="t" style="left:3105.6px;top:223.9px;font-size:18px;color:#fff;height:20.0px;line-height:20.0px;">29.64 ms</div>
<div class="t" style="left:3243.7px;top:223.9px;font-size:18px;color:#fff;height:20.0px;line-height:20.0px;">Duration:</div>
<div class="t" style="left:3333.7px;top:223.9px;font-size:18px;color:#fff;height:20.0px;line-height:20.0px;">2.54 ms</div>
<div class="t" style="left:3044.4px;top:254.9px;font-size:18px;color:#fff;height:20.0px;line-height:20.0px;">End:</div>
<div class="t" style="left:3105.6px;top:254.9px;font-size:18px;color:#fff;height:20.0px;line-height:20.0px;">32.18 ms</div>
<div class="t" style="left:3243.7px;top:254.9px;font-size:18px;color:#fff;height:20.0px;line-height:20.0px;">Range:</div>
<div class="t" style="left:3333.7px;top:254.9px;font-size:18px;color:#fff;height:20.0px;line-height:20.0px;">Selected</div>
<div style="left:2671.3px;top:297.8px;width:795.0px;height:30.0px;background:#2a2a2a;border-radius:4px;"></div>
<div class="t" style="left:2675.0px;top:297.8px;font-size:18px;color:#8c8c8c;height:30.0px;line-height:30.0px;">Search...</div>
<div style="left:2671.3px;top:338px;width:795px;height:1556px;overflow:hidden;background:#444444;">
<div style="left:0.0px;top:0.5px;width:772.5px;height:141.1px;background:#2b2b2b;"></div>
<div style="left:1.0px;top:28.5px;width:770.5px;height:112.1px;background:#3b3b3b;"></div>
<div style="left:1.0px;top:1.5px;width:770.5px;height:27.0px;background:linear-gradient(#484848,#3c3c3c);border-top:1px solid #565656;box-sizing:border-box;"></div>
<div style="left:405.5px;top:1.5px;width:1.4px;height:27.0px;background:#555555;"></div>
<div style="left:543.7px;top:1.5px;width:1.4px;height:27.0px;background:#555555;"></div>
<div style="left:686.6px;top:1.5px;width:1.4px;height:27.0px;background:#555555;"></div>
<div class="c" style="left:1.0px;top:0.5px;width:404.2px;height:27.0px;line-height:28.6px;font-size:17.5px;color:#fff;">GPU Active</div>
<div class="c" style="left:406.2px;top:0.5px;width:138.2px;height:27.0px;line-height:28.6px;font-size:17.5px;color:#fff;">1st capture</div>
<div class="c" style="left:544.4px;top:0.5px;width:142.9px;height:27.0px;line-height:28.6px;font-size:17.5px;color:#fff;">2nd capture</div>
<div class="c" style="left:687.3px;top:0.5px;width:64.0px;height:27.0px;line-height:28.6px;font-size:17.5px;color:#fff;">Ratio</div>
<svg style="left:753.2px;top:8.5px" width="12" height="7"><path d="M0,0.5 L11,0.5 L5.5,6.5 Z" fill="#c0c0c0"/></svg>
<div style="left:4.0px;top:28.5px;width:767.0px;height:26.7px;background:#2b2b2b;"></div>
<div style="left:405.5px;top:27.3px;width:1.4px;height:29.1px;background:#3f3f3f;"></div>
<div style="left:543.7px;top:27.3px;width:1.4px;height:29.1px;background:#3f3f3f;"></div>
<div style="left:686.6px;top:27.3px;width:1.4px;height:29.1px;background:#3f3f3f;"></div>
<div style="left:7.2px;top:31.1px;width:21.5px;height:21.5px;background:#b5b030;border:1px solid #1c1c1c;box-sizing:border-box;"></div>
<div class="t" style="left:36.0px;top:29.0px;font-size:17.5px;color:#fff;height:27.9px;line-height:27.9px;">Sync Copy Engine Active</div>
<div class="t" style="left:406.2px;top:29.0px;font-size:17.5px;color:#fff;width:135.2px;text-align:right;height:27.9px;line-height:27.9px;letter-spacing:-0.55px;">2.2%</div>
<div class="t" style="left:544.4px;top:29.0px;font-size:17.5px;color:#fff;width:139.9px;text-align:right;height:27.9px;line-height:27.9px;letter-spacing:-0.55px;">3.0%</div>
<div class="t" style="left:691.8px;top:29.0px;font-size:17.5px;color:#fff;height:27.9px;line-height:27.9px;letter-spacing:-0.2px;">1.39x</div>
<div style="left:4.0px;top:56.4px;width:767.0px;height:26.7px;background:#2b2b2b;"></div>
<div style="left:405.5px;top:55.2px;width:1.4px;height:29.1px;background:#3f3f3f;"></div>
<div style="left:543.7px;top:55.2px;width:1.4px;height:29.1px;background:#3f3f3f;"></div>
<div style="left:686.6px;top:55.2px;width:1.4px;height:29.1px;background:#3f3f3f;"></div>
<div style="left:7.2px;top:59.0px;width:21.5px;height:21.5px;background:#35b3b3;border:1px solid #1c1c1c;box-sizing:border-box;"></div>
<div class="t" style="left:36.0px;top:56.9px;font-size:17.5px;color:#fff;height:27.9px;line-height:27.9px;">GPU Active</div>
<div class="t" style="left:406.2px;top:56.9px;font-size:17.5px;color:#fff;width:135.2px;text-align:right;height:27.9px;line-height:27.9px;letter-spacing:-0.55px;">80.9%</div>
<div class="t" style="left:544.4px;top:56.9px;font-size:17.5px;color:#fff;width:139.9px;text-align:right;height:27.9px;line-height:27.9px;letter-spacing:-0.55px;">92.2%</div>
<div class="t" style="left:691.8px;top:56.9px;font-size:17.5px;color:#fff;height:27.9px;line-height:27.9px;letter-spacing:-0.2px;">1.14x</div>
<div style="left:4.0px;top:84.3px;width:767.0px;height:26.7px;background:#2b2b2b;"></div>
<div style="left:405.5px;top:83.1px;width:1.4px;height:29.1px;background:#3f3f3f;"></div>
<div style="left:543.7px;top:83.1px;width:1.4px;height:29.1px;background:#3f3f3f;"></div>
<div style="left:686.6px;top:83.1px;width:1.4px;height:29.1px;background:#3f3f3f;"></div>
<div style="left:7.2px;top:86.9px;width:21.5px;height:21.5px;background:#ffff00;border:1px solid #1c1c1c;box-sizing:border-box;"></div>
<div class="t" style="left:36.0px;top:84.8px;font-size:17.5px;color:#fff;height:27.9px;line-height:27.9px;">GR Active</div>
<div class="t" style="left:406.2px;top:84.8px;font-size:17.5px;color:#fff;width:135.2px;text-align:right;height:27.9px;line-height:27.9px;letter-spacing:-0.55px;">95.0%</div>
<div class="t" style="left:544.4px;top:84.8px;font-size:17.5px;color:#fff;width:139.9px;text-align:right;height:27.9px;line-height:27.9px;letter-spacing:-0.55px;">89.6%</div>
<div class="t" style="left:691.8px;top:84.8px;font-size:17.5px;color:#fff;height:27.9px;line-height:27.9px;letter-spacing:-0.2px;">0.94x</div>
<div style="left:4.0px;top:112.2px;width:767.0px;height:26.7px;background:#2b2b2b;"></div>
<div style="left:405.5px;top:111.0px;width:1.4px;height:29.1px;background:#3f3f3f;"></div>
<div style="left:543.7px;top:111.0px;width:1.4px;height:29.1px;background:#3f3f3f;"></div>
<div style="left:686.6px;top:111.0px;width:1.4px;height:29.1px;background:#3f3f3f;"></div>
<div style="left:7.2px;top:114.8px;width:21.5px;height:21.5px;background:#ffa500;border:1px solid #1c1c1c;box-sizing:border-box;"></div>
<div class="t" style="left:36.0px;top:112.7px;font-size:17.5px;color:#fff;height:27.9px;line-height:27.9px;">Async Copy Engine Active</div>
<div class="t" style="left:406.2px;top:112.7px;font-size:17.5px;color:#fff;width:135.2px;text-align:right;height:27.9px;line-height:27.9px;letter-spacing:-0.55px;">0.0%</div>
<div class="t" style="left:544.4px;top:112.7px;font-size:17.5px;color:#fff;width:139.9px;text-align:right;height:27.9px;line-height:27.9px;letter-spacing:-0.55px;">0.0%</div>
<div class="t" style="left:691.8px;top:112.7px;font-size:17.5px;color:#fff;height:27.9px;line-height:27.9px;letter-spacing:-0.2px;">0.00x</div>
<div style="left:0.0px;top:151.9px;width:772.5px;height:420.1px;background:#2b2b2b;"></div>
<div style="left:1.0px;top:179.9px;width:770.5px;height:391.1px;background:#3b3b3b;"></div>
<div style="left:1.0px;top:152.9px;width:770.5px;height:27.0px;background:linear-gradient(#484848,#3c3c3c);border-top:1px solid #565656;box-sizing:border-box;"></div>
<div style="left:405.5px;top:152.9px;width:1.4px;height:27.0px;background:#555555;"></div>
<div style="left:543.7px;top:152.9px;width:1.4px;height:27.0px;background:#555555;"></div>
<div style="left:686.6px;top:152.9px;width:1.4px;height:27.0px;background:#555555;"></div>
<div class="c" style="left:1.0px;top:151.9px;width:404.2px;height:27.0px;line-height:28.6px;font-size:17.5px;color:#fff;">Unit Throughputs</div>
<div class="c" style="left:406.2px;top:151.9px;width:138.2px;height:27.0px;line-height:28.6px;font-size:17.5px;color:#fff;">1st capture</div>
<div class="c" style="left:544.4px;top:151.9px;width:142.9px;height:27.0px;line-height:28.6px;font-size:17.5px;color:#fff;">2nd capture</div>
<div class="c" style="left:687.3px;top:151.9px;width:64.0px;height:27.0px;line-height:28.6px;font-size:17.5px;color:#fff;">Ratio</div>
<svg style="left:753.2px;top:159.9px" width="12" height="7"><path d="M0,0.5 L11,0.5 L5.5,6.5 Z" fill="#c0c0c0"/></svg>
<div style="left:4.0px;top:179.9px;width:767.0px;height:26.7px;background:#2b2b2b;"></div>
<div style="left:405.5px;top:178.7px;width:1.4px;height:29.1px;background:#3f3f3f;"></div>
<div style="left:543.7px;top:178.7px;width:1.4px;height:29.1px;background:#3f3f3f;"></div>
<div style="left:686.6px;top:178.7px;width:1.4px;height:29.1px;background:#3f3f3f;"></div>
<div style="left:7.2px;top:182.5px;width:21.5px;height:21.5px;background:#a5b35a;border:1px solid #1c1c1c;box-sizing:border-box;"></div>
<div class="t" style="left:36.0px;top:180.4px;font-size:17.5px;color:#fff;height:27.9px;line-height:27.9px;">PROP Throughput</div>
<div class="t" style="left:406.2px;top:180.4px;font-size:17.5px;color:#fff;width:135.2px;text-align:right;height:27.9px;line-height:27.9px;letter-spacing:-0.55px;">0.2%</div>
<div class="t" style="left:544.4px;top:180.4px;font-size:17.5px;color:#fff;width:139.9px;text-align:right;height:27.9px;line-height:27.9px;letter-spacing:-0.55px;">0.2%</div>
<div class="t" style="left:691.8px;top:180.4px;font-size:17.5px;color:#fff;height:27.9px;line-height:27.9px;letter-spacing:-0.2px;">1.23x</div>
<div style="left:4.0px;top:207.8px;width:767.0px;height:26.7px;background:#2b2b2b;"></div>
<div style="left:405.5px;top:206.6px;width:1.4px;height:29.1px;background:#3f3f3f;"></div>
<div style="left:543.7px;top:206.6px;width:1.4px;height:29.1px;background:#3f3f3f;"></div>
<div style="left:686.6px;top:206.6px;width:1.4px;height:29.1px;background:#3f3f3f;"></div>
<div style="left:7.2px;top:210.4px;width:21.5px;height:21.5px;background:#874040;border:1px solid #1c1c1c;box-sizing:border-box;"></div>
<div class="t" style="left:36.0px;top:208.3px;font-size:17.5px;color:#fff;height:27.9px;line-height:27.9px;">ZROP Throughput</div>
<div class="t" style="left:406.2px;top:208.3px;font-size:17.5px;color:#fff;width:135.2px;text-align:right;height:27.9px;line-height:27.9px;letter-spacing:-0.55px;">0.1%</div>
<div class="t" style="left:544.4px;top:208.3px;font-size:17.5px;color:#fff;width:139.9px;text-align:right;height:27.9px;line-height:27.9px;letter-spacing:-0.55px;">0.1%</div>
<div class="t" style="left:691.8px;top:208.3px;font-size:17.5px;color:#fff;height:27.9px;line-height:27.9px;letter-spacing:-0.2px;">1.19x</div>
<div style="left:4.0px;top:235.7px;width:767.0px;height:26.7px;background:#2b2b2b;"></div>
<div style="left:405.5px;top:234.5px;width:1.4px;height:29.1px;background:#3f3f3f;"></div>
<div style="left:543.7px;top:234.5px;width:1.4px;height:29.1px;background:#3f3f3f;"></div>
<div style="left:686.6px;top:234.5px;width:1.4px;height:29.1px;background:#3f3f3f;"></div>
<div style="left:7.2px;top:238.3px;width:21.5px;height:21.5px;background:#ffc328;border:1px solid #1c1c1c;box-sizing:border-box;"></div>
<div class="t" style="left:36.0px;top:236.2px;font-size:17.5px;color:#fff;height:27.9px;line-height:27.9px;">L1 Throughput</div>
<div class="t" style="left:406.2px;top:236.2px;font-size:17.5px;color:#fff;width:135.2px;text-align:right;height:27.9px;line-height:27.9px;letter-spacing:-0.55px;">9.8%</div>
<div class="t" style="left:544.4px;top:236.2px;font-size:17.5px;color:#fff;width:139.9px;text-align:right;height:27.9px;line-height:27.9px;letter-spacing:-0.55px;">11.6%</div>
<div class="t" style="left:691.8px;top:236.2px;font-size:17.5px;color:#fff;height:27.9px;line-height:27.9px;letter-spacing:-0.2px;">1.18x</div>
<div style="left:4.0px;top:263.6px;width:767.0px;height:26.7px;background:#2b2b2b;"></div>
<div style="left:405.5px;top:262.4px;width:1.4px;height:29.1px;background:#3f3f3f;"></div>
<div style="left:543.7px;top:262.4px;width:1.4px;height:29.1px;background:#3f3f3f;"></div>
<div style="left:686.6px;top:262.4px;width:1.4px;height:29.1px;background:#3f3f3f;"></div>
<div style="left:7.2px;top:266.2px;width:21.5px;height:21.5px;background:#d400e6;border:1px solid #1c1c1c;box-sizing:border-box;"></div>
<div class="t" style="left:36.0px;top:264.1px;font-size:17.5px;color:#fff;height:27.9px;line-height:27.9px;">SM Throughput</div>
<div class="t" style="left:406.2px;top:264.1px;font-size:17.5px;color:#fff;width:135.2px;text-align:right;height:27.9px;line-height:27.9px;letter-spacing:-0.55px;">13.0%</div>
<div class="t" style="left:544.4px;top:264.1px;font-size:17.5px;color:#fff;width:139.9px;text-align:right;height:27.9px;line-height:27.9px;letter-spacing:-0.55px;">15.4%</div>
<div class="t" style="left:691.8px;top:264.1px;font-size:17.5px;color:#fff;height:27.9px;line-height:27.9px;letter-spacing:-0.2px;">1.18x</div>
<div style="left:4.0px;top:291.5px;width:767.0px;height:26.7px;background:#2b2b2b;"></div>
<div style="left:405.5px;top:290.3px;width:1.4px;height:29.1px;background:#3f3f3f;"></div>
<div style="left:543.7px;top:290.3px;width:1.4px;height:29.1px;background:#3f3f3f;"></div>
<div style="left:686.6px;top:290.3px;width:1.4px;height:29.1px;background:#3f3f3f;"></div>
<div style="left:7.2px;top:294.1px;width:21.5px;height:21.5px;background:#6fb35a;border:1px solid #1c1c1c;box-sizing:border-box;"></div>
<div class="t" style="left:36.0px;top:292.0px;font-size:17.5px;color:#fff;height:27.9px;line-height:27.9px;">RASTER Throughput</div>
<div class="t" style="left:406.2px;top:292.0px;font-size:17.5px;color:#fff;width:135.2px;text-align:right;height:27.9px;line-height:27.9px;letter-spacing:-0.55px;">0.4%</div>
<div class="t" style="left:544.4px;top:292.0px;font-size:17.5px;color:#fff;width:139.9px;text-align:right;height:27.9px;line-height:27.9px;letter-spacing:-0.55px;">0.4%</div>
<div class="t" style="left:691.8px;top:292.0px;font-size:17.5px;color:#fff;height:27.9px;line-height:27.9px;letter-spacing:-0.2px;">1.14x</div>
<div style="left:4.0px;top:319.4px;width:767.0px;height:26.7px;background:#2b2b2b;"></div>
<div style="left:405.5px;top:318.2px;width:1.4px;height:29.1px;background:#3f3f3f;"></div>
<div style="left:543.7px;top:318.2px;width:1.4px;height:29.1px;background:#3f3f3f;"></div>
<div style="left:686.6px;top:318.2px;width:1.4px;height:29.1px;background:#3f3f3f;"></div>
<div style="left:7.2px;top:322.0px;width:21.5px;height:21.5px;background:#00aadc;border:1px solid #1c1c1c;box-sizing:border-box;"></div>
<div class="t" style="left:36.0px;top:319.9px;font-size:17.5px;color:#fff;height:27.9px;line-height:27.9px;">L2 Throughput</div>
<div class="t" style="left:406.2px;top:319.9px;font-size:17.5px;color:#fff;width:135.2px;text-align:right;height:27.9px;line-height:27.9px;letter-spacing:-0.55px;">7.5%</div>
<div class="t" style="left:544.4px;top:319.9px;font-size:17.5px;color:#fff;width:139.9px;text-align:right;height:27.9px;line-height:27.9px;letter-spacing:-0.55px;">8.2%</div>
<div class="t" style="left:691.8px;top:319.9px;font-size:17.5px;color:#fff;height:27.9px;line-height:27.9px;letter-spacing:-0.2px;">1.09x</div>
<div style="left:4.0px;top:347.3px;width:767.0px;height:26.7px;background:#2b2b2b;"></div>
<div style="left:405.5px;top:346.1px;width:1.4px;height:29.1px;background:#3f3f3f;"></div>
<div style="left:543.7px;top:346.1px;width:1.4px;height:29.1px;background:#3f3f3f;"></div>
<div style="left:686.6px;top:346.1px;width:1.4px;height:29.1px;background:#3f3f3f;"></div>
<div style="left:7.2px;top:349.9px;width:21.5px;height:21.5px;background:#f27835;border:1px solid #1c1c1c;box-sizing:border-box;"></div>
<div class="t" style="left:36.0px;top:347.8px;font-size:17.5px;color:#fff;height:27.9px;line-height:27.9px;">VRAM Throughput</div>
<div class="t" style="left:406.2px;top:347.8px;font-size:17.5px;color:#fff;width:135.2px;text-align:right;height:27.9px;line-height:27.9px;letter-spacing:-0.55px;">10.1%</div>
<div class="t" style="left:544.4px;top:347.8px;font-size:17.5px;color:#fff;width:139.9px;text-align:right;height:27.9px;line-height:27.9px;letter-spacing:-0.55px;">10.7%</div>
<div class="t" style="left:691.8px;top:347.8px;font-size:17.5px;color:#fff;height:27.9px;line-height:27.9px;letter-spacing:-0.2px;">1.05x</div>
<div style="left:4.0px;top:375.2px;width:767.0px;height:26.7px;background:#2b2b2b;"></div>
<div style="left:405.5px;top:374.0px;width:1.4px;height:29.1px;background:#3f3f3f;"></div>
<div style="left:543.7px;top:374.0px;width:1.4px;height:29.1px;background:#3f3f3f;"></div>
<div style="left:686.6px;top:374.0px;width:1.4px;height:29.1px;background:#3f3f3f;"></div>
<div style="left:7.2px;top:377.8px;width:21.5px;height:21.5px;background:#3c6ef0;border:1px solid #1c1c1c;box-sizing:border-box;"></div>
<div class="t" style="left:36.0px;top:375.7px;font-size:17.5px;color:#fff;height:27.9px;line-height:27.9px;">PCIe Throughput</div>
<div class="t" style="left:406.2px;top:375.7px;font-size:17.5px;color:#fff;width:135.2px;text-align:right;height:27.9px;line-height:27.9px;letter-spacing:-0.55px;">6.0%</div>
<div class="t" style="left:544.4px;top:375.7px;font-size:17.5px;color:#fff;width:139.9px;text-align:right;height:27.9px;line-height:27.9px;letter-spacing:-0.55px;">5.9%</div>
<div class="t" style="left:691.8px;top:375.7px;font-size:17.5px;color:#fff;height:27.9px;line-height:27.9px;letter-spacing:-0.2px;">0.98x</div>
<div style="left:4.0px;top:403.1px;width:767.0px;height:26.7px;background:#2b2b2b;"></div>
<div style="left:405.5px;top:401.9px;width:1.4px;height:29.1px;background:#3f3f3f;"></div>
<div style="left:543.7px;top:401.9px;width:1.4px;height:29.1px;background:#3f3f3f;"></div>
<div style="left:686.6px;top:401.9px;width:1.4px;height:29.1px;background:#3f3f3f;"></div>
<div style="left:7.2px;top:405.7px;width:21.5px;height:21.5px;background:#46b35a;border:1px solid #1c1c1c;box-sizing:border-box;"></div>
<div class="t" style="left:36.0px;top:403.6px;font-size:17.5px;color:#fff;height:27.9px;line-height:27.9px;">PES+VPC Throughput</div>
<div class="t" style="left:406.2px;top:403.6px;font-size:17.5px;color:#fff;width:135.2px;text-align:right;height:27.9px;line-height:27.9px;letter-spacing:-0.55px;">0.4%</div>
<div class="t" style="left:544.4px;top:403.6px;font-size:17.5px;color:#fff;width:139.9px;text-align:right;height:27.9px;line-height:27.9px;letter-spacing:-0.55px;">0.3%</div>
<div class="t" style="left:691.8px;top:403.6px;font-size:17.5px;color:#fff;height:27.9px;line-height:27.9px;letter-spacing:-0.2px;">0.89x</div>
<div style="left:4.0px;top:431.0px;width:767.0px;height:26.7px;background:#2b2b2b;"></div>
<div style="left:405.5px;top:429.8px;width:1.4px;height:29.1px;background:#3f3f3f;"></div>
<div style="left:543.7px;top:429.8px;width:1.4px;height:29.1px;background:#3f3f3f;"></div>
<div style="left:686.6px;top:429.8px;width:1.4px;height:29.1px;background:#3f3f3f;"></div>
<div style="left:7.2px;top:433.6px;width:21.5px;height:21.5px;background:#00aa50;border:1px solid #1c1c1c;box-sizing:border-box;"></div>
<div class="t" style="left:36.0px;top:431.5px;font-size:17.5px;color:#fff;height:27.9px;line-height:27.9px;">PD Throughput</div>
<div class="t" style="left:406.2px;top:431.5px;font-size:17.5px;color:#fff;width:135.2px;text-align:right;height:27.9px;line-height:27.9px;letter-spacing:-0.55px;">0.1%</div>
<div class="t" style="left:544.4px;top:431.5px;font-size:17.5px;color:#fff;width:139.9px;text-align:right;height:27.9px;line-height:27.9px;letter-spacing:-0.55px;">0.1%</div>
<div class="t" style="left:691.8px;top:431.5px;font-size:17.5px;color:#fff;height:27.9px;line-height:27.9px;letter-spacing:-0.2px;">0.81x</div>
<div style="left:4.0px;top:458.9px;width:767.0px;height:26.7px;background:#2b2b2b;"></div>
<div style="left:405.5px;top:457.7px;width:1.4px;height:29.1px;background:#3f3f3f;"></div>
<div style="left:543.7px;top:457.7px;width:1.4px;height:29.1px;background:#3f3f3f;"></div>
<div style="left:686.6px;top:457.7px;width:1.4px;height:29.1px;background:#3f3f3f;"></div>
<div style="left:7.2px;top:461.5px;width:21.5px;height:21.5px;background:#ffc328;border:1px solid #1c1c1c;box-sizing:border-box;"></div>
<div class="t" style="left:36.0px;top:459.4px;font-size:17.5px;color:#fff;height:27.9px;line-height:27.9px;">MMU Throughput (Pro)</div>
<div class="t" style="left:406.2px;top:459.4px;font-size:17.5px;color:#fff;width:135.2px;text-align:right;height:27.9px;line-height:27.9px;letter-spacing:-0.55px;">1.6%</div>
<div class="t" style="left:544.4px;top:459.4px;font-size:17.5px;color:#fff;width:139.9px;text-align:right;height:27.9px;line-height:27.9px;letter-spacing:-0.55px;">0.9%</div>
<div class="t" style="left:691.8px;top:459.4px;font-size:17.5px;color:#fff;height:27.9px;line-height:27.9px;letter-spacing:-0.2px;">0.59x</div>
<div style="left:4.0px;top:486.8px;width:767.0px;height:26.7px;background:#2b2b2b;"></div>
<div style="left:405.5px;top:485.6px;width:1.4px;height:29.1px;background:#3f3f3f;"></div>
<div style="left:543.7px;top:485.6px;width:1.4px;height:29.1px;background:#3f3f3f;"></div>
<div style="left:686.6px;top:485.6px;width:1.4px;height:29.1px;background:#3f3f3f;"></div>
<div style="left:7.2px;top:489.4px;width:21.5px;height:21.5px;background:#d88a46;border:1px solid #1c1c1c;box-sizing:border-box;"></div>
<div class="t" style="left:36.0px;top:487.3px;font-size:17.5px;color:#fff;height:27.9px;line-height:27.9px;">RTCORE Throughput (Pro)</div>
<div class="t" style="left:406.2px;top:487.3px;font-size:17.5px;color:#fff;width:135.2px;text-align:right;height:27.9px;line-height:27.9px;letter-spacing:-0.55px;">0.0%</div>
<div class="t" style="left:544.4px;top:487.3px;font-size:17.5px;color:#fff;width:139.9px;text-align:right;height:27.9px;line-height:27.9px;letter-spacing:-0.55px;">0.0%</div>
<div class="t" style="left:691.8px;top:487.3px;font-size:17.5px;color:#fff;height:27.9px;line-height:27.9px;letter-spacing:-0.2px;">0.00x</div>
<div style="left:4.0px;top:514.7px;width:767.0px;height:26.7px;background:#2b2b2b;"></div>
<div style="left:405.5px;top:513.5px;width:1.4px;height:29.1px;background:#3f3f3f;"></div>
<div style="left:543.7px;top:513.5px;width:1.4px;height:29.1px;background:#3f3f3f;"></div>
<div style="left:686.6px;top:513.5px;width:1.4px;height:29.1px;background:#3f3f3f;"></div>
<div style="left:7.2px;top:517.3px;width:21.5px;height:21.5px;background:#dc3246;border:1px solid #1c1c1c;box-sizing:border-box;"></div>
<div class="t" style="left:36.0px;top:515.2px;font-size:17.5px;color:#fff;height:27.9px;line-height:27.9px;">VAF Throughput</div>
<div class="t" style="left:406.2px;top:515.2px;font-size:17.5px;color:#fff;width:135.2px;text-align:right;height:27.9px;line-height:27.9px;letter-spacing:-0.55px;">0.0%</div>
<div class="t" style="left:544.4px;top:515.2px;font-size:17.5px;color:#fff;width:139.9px;text-align:right;height:27.9px;line-height:27.9px;letter-spacing:-0.55px;">0.0%</div>
<div class="t" style="left:691.8px;top:515.2px;font-size:17.5px;color:#fff;height:27.9px;line-height:27.9px;letter-spacing:-0.2px;">0.00x</div>
<div style="left:4.0px;top:542.6px;width:767.0px;height:26.7px;background:#2b2b2b;"></div>
<div style="left:405.5px;top:541.4px;width:1.4px;height:29.1px;background:#3f3f3f;"></div>
<div style="left:543.7px;top:541.4px;width:1.4px;height:29.1px;background:#3f3f3f;"></div>
<div style="left:686.6px;top:541.4px;width:1.4px;height:29.1px;background:#3f3f3f;"></div>
<div style="left:7.2px;top:545.2px;width:21.5px;height:21.5px;background:#b4b45a;border:1px solid #1c1c1c;box-sizing:border-box;"></div>
<div class="t" style="left:36.0px;top:543.1px;font-size:17.5px;color:#fff;height:27.9px;line-height:27.9px;">CROP Throughput</div>
<div class="t" style="left:406.2px;top:543.1px;font-size:17.5px;color:#fff;width:135.2px;text-align:right;height:27.9px;line-height:27.9px;letter-spacing:-0.55px;">0.0%</div>
<div class="t" style="left:544.4px;top:543.1px;font-size:17.5px;color:#fff;width:139.9px;text-align:right;height:27.9px;line-height:27.9px;letter-spacing:-0.55px;">0.0%</div>
<div class="t" style="left:691.8px;top:543.1px;font-size:17.5px;color:#fff;height:27.9px;line-height:27.9px;letter-spacing:-0.2px;">0.00x</div>
<div style="left:0.0px;top:583.2px;width:772.5px;height:85.3px;background:#2b2b2b;"></div>
<div style="left:1.0px;top:611.2px;width:770.5px;height:56.3px;background:#3b3b3b;"></div>
<div style="left:1.0px;top:584.2px;width:770.5px;height:27.0px;background:linear-gradient(#484848,#3c3c3c);border-top:1px solid #565656;box-sizing:border-box;"></div>
<div style="left:405.5px;top:584.2px;width:1.4px;height:27.0px;background:#555555;"></div>
<div style="left:543.7px;top:584.2px;width:1.4px;height:27.0px;background:#555555;"></div>
<div style="left:686.6px;top:584.2px;width:1.4px;height:27.0px;background:#555555;"></div>
<div class="c" style="left:1.0px;top:583.2px;width:404.2px;height:27.0px;line-height:28.6px;font-size:17.5px;color:#fff;">Compute In Flight</div>
<div class="c" style="left:406.2px;top:583.2px;width:138.2px;height:27.0px;line-height:28.6px;font-size:17.5px;color:#fff;">1st capture</div>
<div class="c" style="left:544.4px;top:583.2px;width:142.9px;height:27.0px;line-height:28.6px;font-size:17.5px;color:#fff;">2nd capture</div>
<div class="c" style="left:687.3px;top:583.2px;width:64.0px;height:27.0px;line-height:28.6px;font-size:17.5px;color:#fff;">Ratio</div>
<svg style="left:753.2px;top:591.2px" width="12" height="7"><path d="M0,0.5 L11,0.5 L5.5,6.5 Z" fill="#c0c0c0"/></svg>
<div style="left:4.0px;top:611.2px;width:767.0px;height:26.7px;background:#2b2b2b;"></div>
<div style="left:405.5px;top:610.0px;width:1.4px;height:29.1px;background:#3f3f3f;"></div>
<div style="left:543.7px;top:610.0px;width:1.4px;height:29.1px;background:#3f3f3f;"></div>
<div style="left:686.6px;top:610.0px;width:1.4px;height:29.1px;background:#3f3f3f;"></div>
<div style="left:7.2px;top:613.8px;width:21.5px;height:21.5px;background:#ff80a0;border:1px solid #1c1c1c;box-sizing:border-box;"></div>
<div class="t" style="left:36.0px;top:611.7px;font-size:17.5px;color:#fff;height:27.9px;line-height:27.9px;">Sync Compute In Flight</div>
<div class="t" style="left:406.2px;top:611.7px;font-size:17.5px;color:#fff;width:135.2px;text-align:right;height:27.9px;line-height:27.9px;letter-spacing:-0.55px;">37.4%</div>
<div class="t" style="left:544.4px;top:611.7px;font-size:17.5px;color:#fff;width:139.9px;text-align:right;height:27.9px;line-height:27.9px;letter-spacing:-0.55px;">36.5%</div>
<div class="t" style="left:691.8px;top:611.7px;font-size:17.5px;color:#fff;height:27.9px;line-height:27.9px;letter-spacing:-0.2px;">0.98x</div>
<div style="left:4.0px;top:639.1px;width:767.0px;height:26.7px;background:#2b2b2b;"></div>
<div style="left:405.5px;top:637.9px;width:1.4px;height:29.1px;background:#3f3f3f;"></div>
<div style="left:543.7px;top:637.9px;width:1.4px;height:29.1px;background:#3f3f3f;"></div>
<div style="left:686.6px;top:637.9px;width:1.4px;height:29.1px;background:#3f3f3f;"></div>
<div style="left:7.2px;top:641.7px;width:21.5px;height:21.5px;background:#f0aa14;border:1px solid #1c1c1c;box-sizing:border-box;"></div>
<div class="t" style="left:36.0px;top:639.6px;font-size:17.5px;color:#fff;height:27.9px;line-height:27.9px;">Async Compute In Flight</div>
<div class="t" style="left:406.2px;top:639.6px;font-size:17.5px;color:#fff;width:135.2px;text-align:right;height:27.9px;line-height:27.9px;letter-spacing:-0.55px;">0.0%</div>
<div class="t" style="left:544.4px;top:639.6px;font-size:17.5px;color:#fff;width:139.9px;text-align:right;height:27.9px;line-height:27.9px;letter-spacing:-0.55px;">0.0%</div>
<div class="t" style="left:691.8px;top:639.6px;font-size:17.5px;color:#fff;height:27.9px;line-height:27.9px;letter-spacing:-0.2px;">0.00x</div>
<div style="left:0.0px;top:678.1px;width:772.5px;height:85.3px;background:#2b2b2b;"></div>
<div style="left:1.0px;top:706.1px;width:770.5px;height:56.3px;background:#3b3b3b;"></div>
<div style="left:1.0px;top:679.1px;width:770.5px;height:27.0px;background:linear-gradient(#484848,#3c3c3c);border-top:1px solid #565656;box-sizing:border-box;"></div>
<div style="left:405.5px;top:679.1px;width:1.4px;height:27.0px;background:#555555;"></div>
<div style="left:543.7px;top:679.1px;width:1.4px;height:27.0px;background:#555555;"></div>
<div style="left:686.6px;top:679.1px;width:1.4px;height:27.0px;background:#555555;"></div>
<div class="c" style="left:1.0px;top:678.1px;width:404.2px;height:27.0px;line-height:28.6px;font-size:17.5px;color:#fff;">Draw/Dispatch Start</div>
<div class="c" style="left:406.2px;top:678.1px;width:138.2px;height:27.0px;line-height:28.6px;font-size:17.5px;color:#fff;">1st capture</div>
<div class="c" style="left:544.4px;top:678.1px;width:142.9px;height:27.0px;line-height:28.6px;font-size:17.5px;color:#fff;">2nd capture</div>
<div class="c" style="left:687.3px;top:678.1px;width:64.0px;height:27.0px;line-height:28.6px;font-size:17.5px;color:#fff;">Ratio</div>
<svg style="left:753.2px;top:686.1px" width="12" height="7"><path d="M0,0.5 L11,0.5 L5.5,6.5 Z" fill="#c0c0c0"/></svg>
<div style="left:4.0px;top:706.1px;width:767.0px;height:26.7px;background:#2b2b2b;"></div>
<div style="left:405.5px;top:704.9px;width:1.4px;height:29.1px;background:#3f3f3f;"></div>
<div style="left:543.7px;top:704.9px;width:1.4px;height:29.1px;background:#3f3f3f;"></div>
<div style="left:686.6px;top:704.9px;width:1.4px;height:29.1px;background:#3f3f3f;"></div>
<div style="left:7.2px;top:708.7px;width:21.5px;height:21.5px;background:#f0f000;border:1px solid #1c1c1c;box-sizing:border-box;"></div>
<div class="t" style="left:36.0px;top:706.6px;font-size:17.5px;color:#fff;height:27.9px;line-height:27.9px;">Draw Started</div>
<div class="t" style="left:406.2px;top:706.6px;font-size:17.5px;color:#fff;width:135.2px;text-align:right;height:27.9px;line-height:27.9px;letter-spacing:-0.55px;">352.0</div>
<div class="t" style="left:544.4px;top:706.6px;font-size:17.5px;color:#fff;width:139.9px;text-align:right;height:27.9px;line-height:27.9px;letter-spacing:-0.55px;">352.0</div>
<div class="t" style="left:691.8px;top:706.6px;font-size:17.5px;color:#fff;height:27.9px;line-height:27.9px;letter-spacing:-0.2px;">1.00x</div>
<div style="left:4.0px;top:734.0px;width:767.0px;height:26.7px;background:#2b2b2b;"></div>
<div style="left:405.5px;top:732.8px;width:1.4px;height:29.1px;background:#3f3f3f;"></div>
<div style="left:543.7px;top:732.8px;width:1.4px;height:29.1px;background:#3f3f3f;"></div>
<div style="left:686.6px;top:732.8px;width:1.4px;height:29.1px;background:#3f3f3f;"></div>
<div style="left:7.2px;top:736.6px;width:21.5px;height:21.5px;background:#00f0f0;border:1px solid #1c1c1c;box-sizing:border-box;"></div>
<div class="t" style="left:36.0px;top:734.5px;font-size:17.5px;color:#fff;height:27.9px;line-height:27.9px;">Dispatch Started</div>
<div class="t" style="left:406.2px;top:734.5px;font-size:17.5px;color:#fff;width:135.2px;text-align:right;height:27.9px;line-height:27.9px;letter-spacing:-0.55px;">19.0</div>
<div class="t" style="left:544.4px;top:734.5px;font-size:17.5px;color:#fff;width:139.9px;text-align:right;height:27.9px;line-height:27.9px;letter-spacing:-0.55px;">19.0</div>
<div class="t" style="left:691.8px;top:734.5px;font-size:17.5px;color:#fff;height:27.9px;line-height:27.9px;letter-spacing:-0.2px;">1.00x</div>
<div style="left:0.0px;top:773.4px;width:772.5px;height:169.0px;background:#2b2b2b;"></div>
<div style="left:1.0px;top:801.4px;width:770.5px;height:140.0px;background:#3b3b3b;"></div>
<div style="left:1.0px;top:774.4px;width:770.5px;height:27.0px;background:linear-gradient(#484848,#3c3c3c);border-top:1px solid #565656;box-sizing:border-box;"></div>
<div style="left:405.5px;top:774.4px;width:1.4px;height:27.0px;background:#555555;"></div>
<div style="left:543.7px;top:774.4px;width:1.4px;height:27.0px;background:#555555;"></div>
<div style="left:686.6px;top:774.4px;width:1.4px;height:27.0px;background:#555555;"></div>
<div class="c" style="left:1.0px;top:773.4px;width:404.2px;height:27.0px;line-height:28.6px;font-size:17.5px;color:#fff;">SM Occupancy (TPC View)</div>
<div class="c" style="left:406.2px;top:773.4px;width:138.2px;height:27.0px;line-height:28.6px;font-size:17.5px;color:#fff;">1st capture</div>
<div class="c" style="left:544.4px;top:773.4px;width:142.9px;height:27.0px;line-height:28.6px;font-size:17.5px;color:#fff;">2nd capture</div>
<div class="c" style="left:687.3px;top:773.4px;width:64.0px;height:27.0px;line-height:28.6px;font-size:17.5px;color:#fff;">Ratio</div>
<svg style="left:753.2px;top:781.4px" width="12" height="7"><path d="M0,0.5 L11,0.5 L5.5,6.5 Z" fill="#c0c0c0"/></svg>
<div style="left:4.0px;top:801.4px;width:767.0px;height:26.7px;background:#2b2b2b;"></div>
<div style="left:405.5px;top:800.2px;width:1.4px;height:29.1px;background:#3f3f3f;"></div>
<div style="left:543.7px;top:800.2px;width:1.4px;height:29.1px;background:#3f3f3f;"></div>
<div style="left:686.6px;top:800.2px;width:1.4px;height:29.1px;background:#3f3f3f;"></div>
<div style="left:7.2px;top:804.0px;width:21.5px;height:21.5px;background:#ffa500;border:1px solid #1c1c1c;box-sizing:border-box;"></div>
<div class="t" style="left:36.0px;top:801.9px;font-size:17.5px;color:#fff;height:27.9px;line-height:27.9px;">Compute Warps</div>
<div class="t" style="left:406.2px;top:801.9px;font-size:17.5px;color:#fff;width:135.2px;text-align:right;height:27.9px;line-height:27.9px;letter-spacing:-0.55px;">15.0%</div>
<div class="t" style="left:544.4px;top:801.9px;font-size:17.5px;color:#fff;width:139.9px;text-align:right;height:27.9px;line-height:27.9px;letter-spacing:-0.55px;">17.4%</div>
<div class="t" style="left:691.8px;top:801.9px;font-size:17.5px;color:#fff;height:27.9px;line-height:27.9px;letter-spacing:-0.2px;">1.16x</div>
<div style="left:4.0px;top:829.3px;width:767.0px;height:26.7px;background:#2b2b2b;"></div>
<div style="left:405.5px;top:828.1px;width:1.4px;height:29.1px;background:#3f3f3f;"></div>
<div style="left:543.7px;top:828.1px;width:1.4px;height:29.1px;background:#3f3f3f;"></div>
<div style="left:686.6px;top:828.1px;width:1.4px;height:29.1px;background:#3f3f3f;"></div>
<div style="left:7.2px;top:831.9px;width:21.5px;height:21.5px;background:#6e6e6e;border:1px solid #1c1c1c;box-sizing:border-box;"></div>
<div class="t" style="left:36.0px;top:829.8px;font-size:17.5px;color:#fff;height:27.9px;line-height:27.9px;">Active SM Unused Warp Slots</div>
<div class="t" style="left:406.2px;top:829.8px;font-size:17.5px;color:#fff;width:135.2px;text-align:right;height:27.9px;line-height:27.9px;letter-spacing:-0.55px;">13.7%</div>
<div class="t" style="left:544.4px;top:829.8px;font-size:17.5px;color:#fff;width:139.9px;text-align:right;height:27.9px;line-height:27.9px;letter-spacing:-0.55px;">15.6%</div>
<div class="t" style="left:691.8px;top:829.8px;font-size:17.5px;color:#fff;height:27.9px;line-height:27.9px;letter-spacing:-0.2px;">1.14x</div>
<div style="left:4.0px;top:857.2px;width:767.0px;height:26.7px;background:#2b2b2b;"></div>
<div style="left:405.5px;top:856.0px;width:1.4px;height:29.1px;background:#3f3f3f;"></div>
<div style="left:543.7px;top:856.0px;width:1.4px;height:29.1px;background:#3f3f3f;"></div>
<div style="left:686.6px;top:856.0px;width:1.4px;height:29.1px;background:#3f3f3f;"></div>
<div style="left:7.2px;top:859.8px;width:21.5px;height:21.5px;background:#c8c8c8;border:1px solid #1c1c1c;box-sizing:border-box;"></div>
<div class="t" style="left:36.0px;top:857.7px;font-size:17.5px;color:#fff;height:27.9px;line-height:27.9px;">Idle SM Unused Warp Slots</div>
<div class="t" style="left:406.2px;top:857.7px;font-size:17.5px;color:#fff;width:135.2px;text-align:right;height:27.9px;line-height:27.9px;letter-spacing:-0.55px;">71.0%</div>
<div class="t" style="left:544.4px;top:857.7px;font-size:17.5px;color:#fff;width:139.9px;text-align:right;height:27.9px;line-height:27.9px;letter-spacing:-0.55px;">66.8%</div>
<div class="t" style="left:691.8px;top:857.7px;font-size:17.5px;color:#fff;height:27.9px;line-height:27.9px;letter-spacing:-0.2px;">0.94x</div>
<div style="left:4.0px;top:885.1px;width:767.0px;height:26.7px;background:#2b2b2b;"></div>
<div style="left:405.5px;top:883.9px;width:1.4px;height:29.1px;background:#3f3f3f;"></div>
<div style="left:543.7px;top:883.9px;width:1.4px;height:29.1px;background:#3f3f3f;"></div>
<div style="left:686.6px;top:883.9px;width:1.4px;height:29.1px;background:#3f3f3f;"></div>
<div style="left:7.2px;top:887.7px;width:21.5px;height:21.5px;background:#008c46;border:1px solid #1c1c1c;box-sizing:border-box;"></div>
<div class="t" style="left:36.0px;top:885.6px;font-size:17.5px;color:#fff;height:27.9px;line-height:27.9px;">Pixel Warps</div>
<div class="t" style="left:406.2px;top:885.6px;font-size:17.5px;color:#fff;width:135.2px;text-align:right;height:27.9px;line-height:27.9px;letter-spacing:-0.55px;">0.1%</div>
<div class="t" style="left:544.4px;top:885.6px;font-size:17.5px;color:#fff;width:139.9px;text-align:right;height:27.9px;line-height:27.9px;letter-spacing:-0.55px;">0.1%</div>
<div class="t" style="left:691.8px;top:885.6px;font-size:17.5px;color:#fff;height:27.9px;line-height:27.9px;letter-spacing:-0.2px;">0.92x</div>
<div style="left:4.0px;top:913.0px;width:767.0px;height:26.7px;background:#2b2b2b;"></div>
<div style="left:405.5px;top:911.8px;width:1.4px;height:29.1px;background:#3f3f3f;"></div>
<div style="left:543.7px;top:911.8px;width:1.4px;height:29.1px;background:#3f3f3f;"></div>
<div style="left:686.6px;top:911.8px;width:1.4px;height:29.1px;background:#3f3f3f;"></div>
<div style="left:7.2px;top:915.6px;width:21.5px;height:21.5px;background:#0050e6;border:1px solid #1c1c1c;box-sizing:border-box;"></div>
<div class="t" style="left:36.0px;top:913.5px;font-size:17.5px;color:#fff;height:27.9px;line-height:27.9px;">Vertex/Tess/Geometry Warps</div>
<div class="t" style="left:406.2px;top:913.5px;font-size:17.5px;color:#fff;width:135.2px;text-align:right;height:27.9px;line-height:27.9px;letter-spacing:-0.55px;">0.2%</div>
<div class="t" style="left:544.4px;top:913.5px;font-size:17.5px;color:#fff;width:139.9px;text-align:right;height:27.9px;line-height:27.9px;letter-spacing:-0.55px;">0.2%</div>
<div class="t" style="left:691.8px;top:913.5px;font-size:17.5px;color:#fff;height:27.9px;line-height:27.9px;letter-spacing:-0.2px;">0.90x</div>
<div style="left:0.0px;top:952.6px;width:772.5px;height:57.4px;background:#2b2b2b;"></div>
<div style="left:1.0px;top:980.6px;width:770.5px;height:28.4px;background:#3b3b3b;"></div>
<div style="left:1.0px;top:953.6px;width:770.5px;height:27.0px;background:linear-gradient(#484848,#3c3c3c);border-top:1px solid #565656;box-sizing:border-box;"></div>
<div style="left:405.5px;top:953.6px;width:1.4px;height:27.0px;background:#555555;"></div>
<div style="left:543.7px;top:953.6px;width:1.4px;height:27.0px;background:#555555;"></div>
<div style="left:686.6px;top:953.6px;width:1.4px;height:27.0px;background:#555555;"></div>
<div class="c" style="left:1.0px;top:952.6px;width:404.2px;height:27.0px;line-height:28.6px;font-size:17.5px;color:#fff;">Warps Eligible</div>
<div class="c" style="left:406.2px;top:952.6px;width:138.2px;height:27.0px;line-height:28.6px;font-size:17.5px;color:#fff;">1st capture</div>
<div class="c" style="left:544.4px;top:952.6px;width:142.9px;height:27.0px;line-height:28.6px;font-size:17.5px;color:#fff;">2nd capture</div>
<div class="c" style="left:687.3px;top:952.6px;width:64.0px;height:27.0px;line-height:28.6px;font-size:17.5px;color:#fff;">Ratio</div>
<svg style="left:753.2px;top:960.6px" width="12" height="7"><path d="M0,0.5 L11,0.5 L5.5,6.5 Z" fill="#c0c0c0"/></svg>
<div style="left:4.0px;top:980.6px;width:767.0px;height:26.7px;background:#2b2b2b;"></div>
<div style="left:405.5px;top:979.4px;width:1.4px;height:29.1px;background:#3f3f3f;"></div>
<div style="left:543.7px;top:979.4px;width:1.4px;height:29.1px;background:#3f3f3f;"></div>
<div style="left:686.6px;top:979.4px;width:1.4px;height:29.1px;background:#3f3f3f;"></div>
<div style="left:7.2px;top:983.2px;width:21.5px;height:21.5px;background:#50bef5;border:1px solid #1c1c1c;box-sizing:border-box;"></div>
<div class="t" style="left:36.0px;top:981.1px;font-size:17.5px;color:#fff;height:27.9px;line-height:27.9px;">Warps Eligible</div>
<div class="t" style="left:406.2px;top:981.1px;font-size:17.5px;color:#fff;width:135.2px;text-align:right;height:27.9px;line-height:27.9px;letter-spacing:-0.55px;">2.8%</div>
<div class="t" style="left:544.4px;top:981.1px;font-size:17.5px;color:#fff;width:139.9px;text-align:right;height:27.9px;line-height:27.9px;letter-spacing:-0.55px;">3.3%</div>
<div class="t" style="left:691.8px;top:981.1px;font-size:17.5px;color:#fff;height:27.9px;line-height:27.9px;letter-spacing:-0.2px;">1.18x</div>
<div style="left:0.0px;top:1019.6px;width:772.5px;height:85.3px;background:#2b2b2b;"></div>
<div style="left:1.0px;top:1047.6px;width:770.5px;height:56.3px;background:#3b3b3b;"></div>
<div style="left:1.0px;top:1020.6px;width:770.5px;height:27.0px;background:linear-gradient(#484848,#3c3c3c);border-top:1px solid #565656;box-sizing:border-box;"></div>
<div style="left:405.5px;top:1020.6px;width:1.4px;height:27.0px;background:#555555;"></div>
<div style="left:543.7px;top:1020.6px;width:1.4px;height:27.0px;background:#555555;"></div>
<div style="left:686.6px;top:1020.6px;width:1.4px;height:27.0px;background:#555555;"></div>
<div class="c" style="left:1.0px;top:1019.6px;width:404.2px;height:27.0px;line-height:28.6px;font-size:17.5px;color:#fff;">FE Stalls</div>
<div class="c" style="left:406.2px;top:1019.6px;width:138.2px;height:27.0px;line-height:28.6px;font-size:17.5px;color:#fff;">1st capture</div>
<div class="c" style="left:544.4px;top:1019.6px;width:142.9px;height:27.0px;line-height:28.6px;font-size:17.5px;color:#fff;">2nd capture</div>
<div class="c" style="left:687.3px;top:1019.6px;width:64.0px;height:27.0px;line-height:28.6px;font-size:17.5px;color:#fff;">Ratio</div>
<svg style="left:753.2px;top:1027.6px" width="12" height="7"><path d="M0,0.5 L11,0.5 L5.5,6.5 Z" fill="#c0c0c0"/></svg>
<div style="left:4.0px;top:1047.6px;width:767.0px;height:26.7px;background:#2b2b2b;"></div>
<div style="left:405.5px;top:1046.4px;width:1.4px;height:29.1px;background:#3f3f3f;"></div>
<div style="left:543.7px;top:1046.4px;width:1.4px;height:29.1px;background:#3f3f3f;"></div>
<div style="left:686.6px;top:1046.4px;width:1.4px;height:29.1px;background:#3f3f3f;"></div>
<div style="left:7.2px;top:1050.2px;width:21.5px;height:21.5px;background:#b41414;border:1px solid #1c1c1c;box-sizing:border-box;"></div>
<div class="t" style="left:36.0px;top:1048.1px;font-size:17.5px;color:#fff;height:27.9px;line-height:27.9px;">FE Stalled Sync</div>
<div class="t" style="left:406.2px;top:1048.1px;font-size:17.5px;color:#fff;width:135.2px;text-align:right;height:27.9px;line-height:27.9px;letter-spacing:-0.55px;">46.0%</div>
<div class="t" style="left:544.4px;top:1048.1px;font-size:17.5px;color:#fff;width:139.9px;text-align:right;height:27.9px;line-height:27.9px;letter-spacing:-0.55px;">53.7%</div>
<div class="t" style="left:691.8px;top:1048.1px;font-size:17.5px;color:#fff;height:27.9px;line-height:27.9px;letter-spacing:-0.2px;">1.17x</div>
<div style="left:4.0px;top:1075.5px;width:767.0px;height:26.7px;background:#2b2b2b;"></div>
<div style="left:405.5px;top:1074.3px;width:1.4px;height:29.1px;background:#3f3f3f;"></div>
<div style="left:543.7px;top:1074.3px;width:1.4px;height:29.1px;background:#3f3f3f;"></div>
<div style="left:686.6px;top:1074.3px;width:1.4px;height:29.1px;background:#3f3f3f;"></div>
<div style="left:7.2px;top:1078.1px;width:21.5px;height:21.5px;background:#14aa14;border:1px solid #1c1c1c;box-sizing:border-box;"></div>
<div class="t" style="left:36.0px;top:1076.0px;font-size:17.5px;color:#fff;height:27.9px;line-height:27.9px;">FE Stalled Async</div>
<div class="t" style="left:406.2px;top:1076.0px;font-size:17.5px;color:#fff;width:135.2px;text-align:right;height:27.9px;line-height:27.9px;letter-spacing:-0.55px;">0.0%</div>
<div class="t" style="left:544.4px;top:1076.0px;font-size:17.5px;color:#fff;width:139.9px;text-align:right;height:27.9px;line-height:27.9px;letter-spacing:-0.55px;">0.0%</div>
<div class="t" style="left:691.8px;top:1076.0px;font-size:17.5px;color:#fff;height:27.9px;line-height:27.9px;letter-spacing:-0.2px;">0.00x</div>
<div style="left:0.0px;top:1114.5px;width:772.5px;height:169.0px;background:#2b2b2b;"></div>
<div style="left:1.0px;top:1142.5px;width:770.5px;height:140.0px;background:#3b3b3b;"></div>
<div style="left:1.0px;top:1115.5px;width:770.5px;height:27.0px;background:linear-gradient(#484848,#3c3c3c);border-top:1px solid #565656;box-sizing:border-box;"></div>
<div style="left:405.5px;top:1115.5px;width:1.4px;height:27.0px;background:#555555;"></div>
<div style="left:543.7px;top:1115.5px;width:1.4px;height:27.0px;background:#555555;"></div>
<div style="left:686.6px;top:1115.5px;width:1.4px;height:27.0px;background:#555555;"></div>
<div class="c" style="left:1.0px;top:1114.5px;width:404.2px;height:27.0px;line-height:28.6px;font-size:17.5px;color:#fff;">FE Pipeline Stalling Commands</div>
<div class="c" style="left:406.2px;top:1114.5px;width:138.2px;height:27.0px;line-height:28.6px;font-size:17.5px;color:#fff;">1st capture</div>
<div class="c" style="left:544.4px;top:1114.5px;width:142.9px;height:27.0px;line-height:28.6px;font-size:17.5px;color:#fff;">2nd capture</div>
<div class="c" style="left:687.3px;top:1114.5px;width:64.0px;height:27.0px;line-height:28.6px;font-size:17.5px;color:#fff;">Ratio</div>
<svg style="left:753.2px;top:1122.5px" width="12" height="7"><path d="M0,0.5 L11,0.5 L5.5,6.5 Z" fill="#c0c0c0"/></svg>
<div style="left:4.0px;top:1142.5px;width:767.0px;height:26.7px;background:#2b2b2b;"></div>
<div style="left:405.5px;top:1141.3px;width:1.4px;height:29.1px;background:#3f3f3f;"></div>
<div style="left:543.7px;top:1141.3px;width:1.4px;height:29.1px;background:#3f3f3f;"></div>
<div style="left:686.6px;top:1141.3px;width:1.4px;height:29.1px;background:#3f3f3f;"></div>
<div style="left:7.2px;top:1145.1px;width:21.5px;height:21.5px;background:#14aa14;border:1px solid #1c1c1c;box-sizing:border-box;"></div>
<div class="t" style="left:36.0px;top:1143.0px;font-size:17.5px;color:#fff;height:27.9px;line-height:27.9px;">Go Idle Sync</div>
<div class="t" style="left:406.2px;top:1143.0px;font-size:17.5px;color:#fff;width:135.2px;text-align:right;height:27.9px;line-height:27.9px;letter-spacing:-0.55px;">499.0</div>
<div class="t" style="left:544.4px;top:1143.0px;font-size:17.5px;color:#fff;width:139.9px;text-align:right;height:27.9px;line-height:27.9px;letter-spacing:-0.55px;">498.7</div>
<div class="t" style="left:691.8px;top:1143.0px;font-size:17.5px;color:#fff;height:27.9px;line-height:27.9px;letter-spacing:-0.2px;">1.00x</div>
<div style="left:4.0px;top:1170.4px;width:767.0px;height:26.7px;background:#2b2b2b;"></div>
<div style="left:405.5px;top:1169.2px;width:1.4px;height:29.1px;background:#3f3f3f;"></div>
<div style="left:543.7px;top:1169.2px;width:1.4px;height:29.1px;background:#3f3f3f;"></div>
<div style="left:686.6px;top:1169.2px;width:1.4px;height:29.1px;background:#3f3f3f;"></div>
<div style="left:7.2px;top:1173.0px;width:21.5px;height:21.5px;background:#aa14aa;border:1px solid #1c1c1c;box-sizing:border-box;"></div>
<div class="t" style="left:36.0px;top:1170.9px;font-size:17.5px;color:#fff;height:27.9px;line-height:27.9px;">Subchannel Switch Sync</div>
<div class="t" style="left:406.2px;top:1170.9px;font-size:17.5px;color:#fff;width:135.2px;text-align:right;height:27.9px;line-height:27.9px;letter-spacing:-0.55px;">390.0</div>
<div class="t" style="left:544.4px;top:1170.9px;font-size:17.5px;color:#fff;width:139.9px;text-align:right;height:27.9px;line-height:27.9px;letter-spacing:-0.55px;">385.9</div>
<div class="t" style="left:691.8px;top:1170.9px;font-size:17.5px;color:#fff;height:27.9px;line-height:27.9px;letter-spacing:-0.2px;">0.99x</div>
<div style="left:4.0px;top:1198.3px;width:767.0px;height:26.7px;background:#2b2b2b;"></div>
<div style="left:405.5px;top:1197.1px;width:1.4px;height:29.1px;background:#3f3f3f;"></div>
<div style="left:543.7px;top:1197.1px;width:1.4px;height:29.1px;background:#3f3f3f;"></div>
<div style="left:686.6px;top:1197.1px;width:1.4px;height:29.1px;background:#3f3f3f;"></div>
<div style="left:7.2px;top:1200.9px;width:21.5px;height:21.5px;background:#b41414;border:1px solid #1c1c1c;box-sizing:border-box;"></div>
<div class="t" style="left:36.0px;top:1198.8px;font-size:17.5px;color:#fff;height:27.9px;line-height:27.9px;">Go Idle Async</div>
<div class="t" style="left:406.2px;top:1198.8px;font-size:17.5px;color:#fff;width:135.2px;text-align:right;height:27.9px;line-height:27.9px;letter-spacing:-0.55px;">0.0</div>
<div class="t" style="left:544.4px;top:1198.8px;font-size:17.5px;color:#fff;width:139.9px;text-align:right;height:27.9px;line-height:27.9px;letter-spacing:-0.55px;">0.0</div>
<div class="t" style="left:691.8px;top:1198.8px;font-size:17.5px;color:#fff;height:27.9px;line-height:27.9px;letter-spacing:-0.2px;">0.00x</div>
<div style="left:4.0px;top:1226.2px;width:767.0px;height:26.7px;background:#2b2b2b;"></div>
<div style="left:405.5px;top:1225.0px;width:1.4px;height:29.1px;background:#3f3f3f;"></div>
<div style="left:543.7px;top:1225.0px;width:1.4px;height:29.1px;background:#3f3f3f;"></div>
<div style="left:686.6px;top:1225.0px;width:1.4px;height:29.1px;background:#3f3f3f;"></div>
<div style="left:7.2px;top:1228.8px;width:21.5px;height:21.5px;background:#1414aa;border:1px solid #1c1c1c;box-sizing:border-box;"></div>
<div class="t" style="left:36.0px;top:1226.7px;font-size:17.5px;color:#fff;height:27.9px;line-height:27.9px;">Subchannel Switch Async</div>
<div class="t" style="left:406.2px;top:1226.7px;font-size:17.5px;color:#fff;width:135.2px;text-align:right;height:27.9px;line-height:27.9px;letter-spacing:-0.55px;">0.0</div>
<div class="t" style="left:544.4px;top:1226.7px;font-size:17.5px;color:#fff;width:139.9px;text-align:right;height:27.9px;line-height:27.9px;letter-spacing:-0.55px;">0.0</div>
<div class="t" style="left:691.8px;top:1226.7px;font-size:17.5px;color:#fff;height:27.9px;line-height:27.9px;letter-spacing:-0.2px;">0.00x</div>
<div style="left:4.0px;top:1254.1px;width:767.0px;height:26.7px;background:#2b2b2b;"></div>
<div style="left:405.5px;top:1252.9px;width:1.4px;height:29.1px;background:#3f3f3f;"></div>
<div style="left:543.7px;top:1252.9px;width:1.4px;height:29.1px;background:#3f3f3f;"></div>
<div style="left:686.6px;top:1252.9px;width:1.4px;height:29.1px;background:#3f3f3f;"></div>
<div style="left:7.2px;top:1256.7px;width:21.5px;height:21.5px;background:#14aaaa;border:1px solid #1c1c1c;box-sizing:border-box;"></div>
<div class="t" style="left:36.0px;top:1254.6px;font-size:17.5px;color:#fff;height:27.9px;line-height:27.9px;">Pixel Shader Barriers</div>
<div class="t" style="left:406.2px;top:1254.6px;font-size:17.5px;color:#fff;width:135.2px;text-align:right;height:27.9px;line-height:27.9px;letter-spacing:-0.55px;">0.0</div>
<div class="t" style="left:544.4px;top:1254.6px;font-size:17.5px;color:#fff;width:139.9px;text-align:right;height:27.9px;line-height:27.9px;letter-spacing:-0.55px;">0.0</div>
<div class="t" style="left:691.8px;top:1254.6px;font-size:17.5px;color:#fff;height:27.9px;line-height:27.9px;letter-spacing:-0.2px;">0.00x</div>
<div style="left:0.0px;top:1293.5px;width:772.5px;height:85.3px;background:#2b2b2b;"></div>
<div style="left:1.0px;top:1321.5px;width:770.5px;height:56.3px;background:#3b3b3b;"></div>
<div style="left:1.0px;top:1294.5px;width:770.5px;height:27.0px;background:linear-gradient(#484848,#3c3c3c);border-top:1px solid #565656;box-sizing:border-box;"></div>
<div style="left:405.5px;top:1294.5px;width:1.4px;height:27.0px;background:#555555;"></div>
<div style="left:543.7px;top:1294.5px;width:1.4px;height:27.0px;background:#555555;"></div>
<div style="left:686.6px;top:1294.5px;width:1.4px;height:27.0px;background:#555555;"></div>
<div class="c" style="left:1.0px;top:1293.5px;width:404.2px;height:27.0px;line-height:28.6px;font-size:17.5px;color:#fff;">SM Register Usage (Occupancy Limiter)</div>
<div class="c" style="left:406.2px;top:1293.5px;width:138.2px;height:27.0px;line-height:28.6px;font-size:17.5px;color:#fff;">1st capture</div>
<div class="c" style="left:544.4px;top:1293.5px;width:142.9px;height:27.0px;line-height:28.6px;font-size:17.5px;color:#fff;">2nd capture</div>
<div class="c" style="left:687.3px;top:1293.5px;width:64.0px;height:27.0px;line-height:28.6px;font-size:17.5px;color:#fff;">Ratio</div>
<svg style="left:753.2px;top:1301.5px" width="12" height="7"><path d="M0,0.5 L11,0.5 L5.5,6.5 Z" fill="#c0c0c0"/></svg>
<div style="left:4.0px;top:1321.5px;width:767.0px;height:26.7px;background:#2b2b2b;"></div>
<div style="left:405.5px;top:1320.3px;width:1.4px;height:29.1px;background:#3f3f3f;"></div>
<div style="left:543.7px;top:1320.3px;width:1.4px;height:29.1px;background:#3f3f3f;"></div>
<div style="left:686.6px;top:1320.3px;width:1.4px;height:29.1px;background:#3f3f3f;"></div>
<div style="left:7.2px;top:1324.1px;width:21.5px;height:21.5px;background:#ffa500;border:1px solid #1c1c1c;box-sizing:border-box;"></div>
<div class="t" style="left:36.0px;top:1322.0px;font-size:17.5px;color:#fff;height:27.9px;line-height:27.9px;">CS Register Allocation</div>
<div class="t" style="left:406.2px;top:1322.0px;font-size:17.5px;color:#fff;width:135.2px;text-align:right;height:27.9px;line-height:27.9px;letter-spacing:-0.55px;">21.9%</div>
<div class="t" style="left:544.4px;top:1322.0px;font-size:17.5px;color:#fff;width:139.9px;text-align:right;height:27.9px;line-height:27.9px;letter-spacing:-0.55px;">25.4%</div>
<div class="t" style="left:691.8px;top:1322.0px;font-size:17.5px;color:#fff;height:27.9px;line-height:27.9px;letter-spacing:-0.2px;">1.16x</div>
<div style="left:4.0px;top:1349.4px;width:767.0px;height:26.7px;background:#2b2b2b;"></div>
<div style="left:405.5px;top:1348.2px;width:1.4px;height:29.1px;background:#3f3f3f;"></div>
<div style="left:543.7px;top:1348.2px;width:1.4px;height:29.1px;background:#3f3f3f;"></div>
<div style="left:686.6px;top:1348.2px;width:1.4px;height:29.1px;background:#3f3f3f;"></div>
<div style="left:7.2px;top:1352.0px;width:21.5px;height:21.5px;background:#008c46;border:1px solid #1c1c1c;box-sizing:border-box;"></div>
<div class="t" style="left:36.0px;top:1349.9px;font-size:17.5px;color:#fff;height:27.9px;line-height:27.9px;">3D Register Allocation</div>
<div class="t" style="left:406.2px;top:1349.9px;font-size:17.5px;color:#fff;width:135.2px;text-align:right;height:27.9px;line-height:27.9px;letter-spacing:-0.55px;">0.3%</div>
<div class="t" style="left:544.4px;top:1349.9px;font-size:17.5px;color:#fff;width:139.9px;text-align:right;height:27.9px;line-height:27.9px;letter-spacing:-0.55px;">0.3%</div>
<div class="t" style="left:691.8px;top:1349.9px;font-size:17.5px;color:#fff;height:27.9px;line-height:27.9px;letter-spacing:-0.2px;">0.90x</div>
<div style="left:0.0px;top:1388.4px;width:772.5px;height:113.2px;background:#2b2b2b;"></div>
<div style="left:1.0px;top:1416.4px;width:770.5px;height:84.2px;background:#3b3b3b;"></div>
<div style="left:1.0px;top:1389.4px;width:770.5px;height:27.0px;background:linear-gradient(#484848,#3c3c3c);border-top:1px solid #565656;box-sizing:border-box;"></div>
<div style="left:405.5px;top:1389.4px;width:1.4px;height:27.0px;background:#555555;"></div>
<div style="left:543.7px;top:1389.4px;width:1.4px;height:27.0px;background:#555555;"></div>
<div style="left:686.6px;top:1389.4px;width:1.4px;height:27.0px;background:#555555;"></div>
<div style="left:7px;top:1388.4px;width:397.2px;height:27.0px;overflow:hidden;"><div class="c" style="left:-100px;top:0;width:597.2px;height:27.0px;line-height:28.6px;font-size:17.5px;color:#fff;overflow:visible;">SM Shared+ISBE Memory Usage (Occupancy Limiter)</div></div>
<div class="c" style="left:406.2px;top:1388.4px;width:138.2px;height:27.0px;line-height:28.6px;font-size:17.5px;color:#fff;">1st capture</div>
<div class="c" style="left:544.4px;top:1388.4px;width:142.9px;height:27.0px;line-height:28.6px;font-size:17.5px;color:#fff;">2nd capture</div>
<div class="c" style="left:687.3px;top:1388.4px;width:64.0px;height:27.0px;line-height:28.6px;font-size:17.5px;color:#fff;">Ratio</div>
<svg style="left:753.2px;top:1396.4px" width="12" height="7"><path d="M0,0.5 L11,0.5 L5.5,6.5 Z" fill="#c0c0c0"/></svg>
<div style="left:4.0px;top:1416.4px;width:767.0px;height:26.7px;background:#2b2b2b;"></div>
<div style="left:405.5px;top:1415.2px;width:1.4px;height:29.1px;background:#3f3f3f;"></div>
<div style="left:543.7px;top:1415.2px;width:1.4px;height:29.1px;background:#3f3f3f;"></div>
<div style="left:686.6px;top:1415.2px;width:1.4px;height:29.1px;background:#3f3f3f;"></div>
<div style="left:7.2px;top:1419.0px;width:21.5px;height:21.5px;background:#b4b432;border:1px solid #1c1c1c;box-sizing:border-box;"></div>
<div class="t" style="left:36.0px;top:1416.9px;font-size:17.5px;color:#fff;height:27.9px;line-height:27.9px;">CS Shared Memory Allocated (Sync)</div>
<div class="t" style="left:406.2px;top:1416.9px;font-size:17.5px;color:#fff;width:135.2px;text-align:right;height:27.9px;line-height:27.9px;letter-spacing:-0.55px;">7.3%</div>
<div class="t" style="left:544.4px;top:1416.9px;font-size:17.5px;color:#fff;width:139.9px;text-align:right;height:27.9px;line-height:27.9px;letter-spacing:-0.55px;">8.5%</div>
<div class="t" style="left:691.8px;top:1416.9px;font-size:17.5px;color:#fff;height:27.9px;line-height:27.9px;letter-spacing:-0.2px;">1.16x</div>
<div style="left:4.0px;top:1444.3px;width:767.0px;height:26.7px;background:#2b2b2b;"></div>
<div style="left:405.5px;top:1443.1px;width:1.4px;height:29.1px;background:#3f3f3f;"></div>
<div style="left:543.7px;top:1443.1px;width:1.4px;height:29.1px;background:#3f3f3f;"></div>
<div style="left:686.6px;top:1443.1px;width:1.4px;height:29.1px;background:#3f3f3f;"></div>
<div style="left:7.2px;top:1446.9px;width:21.5px;height:21.5px;background:#32b4b4;border:1px solid #1c1c1c;box-sizing:border-box;"></div>
<div class="t" style="left:36.0px;top:1444.8px;font-size:17.5px;color:#fff;height:27.9px;line-height:27.9px;">VTG ISBE Memory Allocated</div>
<div class="t" style="left:406.2px;top:1444.8px;font-size:17.5px;color:#fff;width:135.2px;text-align:right;height:27.9px;line-height:27.9px;letter-spacing:-0.55px;">0.4%</div>
<div class="t" style="left:544.4px;top:1444.8px;font-size:17.5px;color:#fff;width:139.9px;text-align:right;height:27.9px;line-height:27.9px;letter-spacing:-0.55px;">0.4%</div>
<div class="t" style="left:691.8px;top:1444.8px;font-size:17.5px;color:#fff;height:27.9px;line-height:27.9px;letter-spacing:-0.2px;">0.91x</div>
<div style="left:4.0px;top:1472.2px;width:767.0px;height:26.7px;background:#2b2b2b;"></div>
<div style="left:405.5px;top:1471.0px;width:1.4px;height:29.1px;background:#3f3f3f;"></div>
<div style="left:543.7px;top:1471.0px;width:1.4px;height:29.1px;background:#3f3f3f;"></div>
<div style="left:686.6px;top:1471.0px;width:1.4px;height:29.1px;background:#3f3f3f;"></div>
<div style="left:7.2px;top:1474.8px;width:21.5px;height:21.5px;background:#b432b4;border:1px solid #1c1c1c;box-sizing:border-box;"></div>
<div class="t" style="left:36.0px;top:1472.7px;font-size:17.5px;color:#fff;height:27.9px;line-height:27.9px;">CS Shared Memory Allocated (Async)</div>
<div class="t" style="left:406.2px;top:1472.7px;font-size:17.5px;color:#fff;width:135.2px;text-align:right;height:27.9px;line-height:27.9px;letter-spacing:-0.55px;">0.0%</div>
<div class="t" style="left:544.4px;top:1472.7px;font-size:17.5px;color:#fff;width:139.9px;text-align:right;height:27.9px;line-height:27.9px;letter-spacing:-0.55px;">0.0%</div>
<div class="t" style="left:691.8px;top:1472.7px;font-size:17.5px;color:#fff;height:27.9px;line-height:27.9px;letter-spacing:-0.2px;">0.00x</div>
<div style="left:0.0px;top:1510.9px;width:772.5px;height:57.4px;background:#2b2b2b;"></div>
<div style="left:1.0px;top:1538.9px;width:770.5px;height:28.4px;background:#3b3b3b;"></div>
<div style="left:1.0px;top:1511.9px;width:770.5px;height:27.0px;background:linear-gradient(#484848,#3c3c3c);border-top:1px solid #565656;box-sizing:border-box;"></div>
<div style="left:405.5px;top:1511.9px;width:1.4px;height:27.0px;background:#555555;"></div>
<div style="left:543.7px;top:1511.9px;width:1.4px;height:27.0px;background:#555555;"></div>
<div style="left:686.6px;top:1511.9px;width:1.4px;height:27.0px;background:#555555;"></div>
<div class="c" style="left:1.0px;top:1510.9px;width:404.2px;height:27.0px;line-height:28.6px;font-size:17.5px;color:#fff;">SM TRAM Memory Usage (Occupancy Limiter)</div>
<div class="c" style="left:406.2px;top:1510.9px;width:138.2px;height:27.0px;line-height:28.6px;font-size:17.5px;color:#fff;">1st capture</div>
<div class="c" style="left:544.4px;top:1510.9px;width:142.9px;height:27.0px;line-height:28.6px;font-size:17.5px;color:#fff;">2nd capture</div>
<div class="c" style="left:687.3px;top:1510.9px;width:64.0px;height:27.0px;line-height:28.6px;font-size:17.5px;color:#fff;">Ratio</div>
<svg style="left:753.2px;top:1518.9px" width="12" height="7"><path d="M0,0.5 L11,0.5 L5.5,6.5 Z" fill="#c0c0c0"/></svg>
<div style="left:4.0px;top:1538.9px;width:767.0px;height:26.7px;background:#2b2b2b;"></div>
<div style="left:405.5px;top:1537.7px;width:1.4px;height:29.1px;background:#3f3f3f;"></div>
<div style="left:543.7px;top:1537.7px;width:1.4px;height:29.1px;background:#3f3f3f;"></div>
<div style="left:686.6px;top:1537.7px;width:1.4px;height:29.1px;background:#3f3f3f;"></div>
<div style="left:7.2px;top:1541.5px;width:21.5px;height:21.5px;background:#32b432;border:1px solid #1c1c1c;box-sizing:border-box;"></div>
<div class="t" style="left:36.0px;top:1539.4px;font-size:17.5px;color:#fff;height:27.9px;line-height:27.9px;">PS TRAM Memory Allocated</div>
<div class="t" style="left:406.2px;top:1539.4px;font-size:17.5px;color:#fff;width:135.2px;text-align:right;height:27.9px;line-height:27.9px;letter-spacing:-0.55px;">0.1%</div>
<div class="t" style="left:544.4px;top:1539.4px;font-size:17.5px;color:#fff;width:139.9px;text-align:right;height:27.9px;line-height:27.9px;letter-spacing:-0.55px;">0.1%</div>
<div class="t" style="left:691.8px;top:1539.4px;font-size:17.5px;color:#fff;height:27.9px;line-height:27.9px;letter-spacing:-0.2px;">0.87x</div>
<div style="left:773.9px;top:0.0px;width:20.0px;height:1556.0px;background:#3a3a3a;border:1px solid #505050;box-sizing:border-box;"></div>
<div style="left:773.9px;top:0.0px;width:20.0px;height:20.5px;background:#3d3d3d;border:1px solid #555;box-sizing:border-box;"></div>
<svg style="left:777.4px;top:6px" width="13" height="8"><path d="M0,7.5 L6.5,0.5 L13,7.5 Z" fill="#b5b5b5"/></svg>
<div style="left:773.9px;top:1531.0px;width:20.0px;height:25.0px;background:#3d3d3d;border:1px solid #555;box-sizing:border-box;"></div>
<svg style="left:777.4px;top:1540px" width="13" height="8"><path d="M0,0.5 L6.5,7.5 L13,0.5 Z" fill="#b5b5b5"/></svg>
<div style="left:773.9px;top:22.0px;width:20.0px;height:695.0px;background:#444444;border:1px solid #585858;box-sizing:border-box;"></div>
</div>
<div style="left:1517.0px;top:463.0px;width:794.0px;height:659.5px;background:#353535;border:1.5px solid #c4c4c4;box-sizing:border-box;"></div>
<div class="t" style="left:1531.7px;top:473.9px;font-size:17.5px;color:#fff;height:28.0px;line-height:28.0px;">ShadowDepths (3.03ms)</div>
<div style="left:1531.7px;top:508.7px;width:764.1px;height:419.9px;background:#2b2b2b;"></div>
<div style="left:1532.7px;top:536.6px;width:762.1px;height:391.0px;background:#3b3b3b;"></div>
<div style="left:1532.7px;top:509.7px;width:762.1px;height:26.9px;background:linear-gradient(#484848,#3c3c3c);border-top:1px solid #565656;box-sizing:border-box;"></div>
<div style="left:2134.7px;top:509.7px;width:1.4px;height:26.9px;background:#555;"></div>
<div class="c" style="left:1531.7px;top:508.7px;width:603.7px;height:27.9px;line-height:28.9px;font-size:17.5px;color:#fff;">Unit Throughputs</div>
<div class="t" style="left:2151.0px;top:508.7px;font-size:17.5px;color:#fff;height:28.9px;line-height:28.9px;">Throughput %</div>
<svg style="left:2277px;top:516.7px" width="12" height="7"><path d="M0,0.5 L11,0.5 L5.5,6.5 Z" fill="#c0c0c0"/></svg>
<div style="left:1533.2px;top:536.6px;width:761.1px;height:26.7px;background:#2b2b2b;"></div>
<div style="left:2134.7px;top:535.6px;width:1.4px;height:28.9px;background:#3f3f3f;"></div>
<div style="left:1535.4px;top:539.4px;width:21.8px;height:21.5px;background:#d400e6;border:1px solid #1c1c1c;box-sizing:border-box;"></div>
<div class="t" style="left:1563.4px;top:537.0px;font-size:17.5px;color:#fff;height:27.9px;line-height:27.9px;">SM Throughput</div>
<div class="t" style="left:2135.4px;top:537.0px;font-size:17.5px;color:#fff;width:92.9px;text-align:right;height:27.9px;line-height:27.9px;letter-spacing:-0.55px;">13.0%</div>
<div style="left:2233.2px;top:541.1px;width:8.8px;height:20.5px;background:#3a80c3;"></div>
<div style="left:1533.2px;top:564.5px;width:761.1px;height:26.7px;background:#2b2b2b;"></div>
<div style="left:2134.7px;top:563.5px;width:1.4px;height:28.9px;background:#3f3f3f;"></div>
<div style="left:1535.4px;top:567.3px;width:21.8px;height:21.5px;background:#f27835;border:1px solid #1c1c1c;box-sizing:border-box;"></div>
<div class="t" style="left:1563.4px;top:564.9px;font-size:17.5px;color:#fff;height:27.9px;line-height:27.9px;">VRAM Throughput</div>
<div class="t" style="left:2135.4px;top:564.9px;font-size:17.5px;color:#fff;width:92.9px;text-align:right;height:27.9px;line-height:27.9px;letter-spacing:-0.55px;">10.1%</div>
<div style="left:2233.2px;top:569.0px;width:6.9px;height:20.5px;background:#3a80c3;"></div>
<div style="left:1533.2px;top:592.5px;width:761.1px;height:26.7px;background:#2b2b2b;"></div>
<div style="left:2134.7px;top:591.5px;width:1.4px;height:28.9px;background:#3f3f3f;"></div>
<div style="left:1535.4px;top:595.3px;width:21.8px;height:21.5px;background:#ffc328;border:1px solid #1c1c1c;box-sizing:border-box;"></div>
<div class="t" style="left:1563.4px;top:592.9px;font-size:17.5px;color:#fff;height:27.9px;line-height:27.9px;">L1 Throughput</div>
<div class="t" style="left:2135.4px;top:592.9px;font-size:17.5px;color:#fff;width:92.9px;text-align:right;height:27.9px;line-height:27.9px;letter-spacing:-0.55px;">9.8%</div>
<div style="left:2233.2px;top:597.0px;width:6.7px;height:20.5px;background:#3a80c3;"></div>
<div style="left:1533.2px;top:620.4px;width:761.1px;height:26.7px;background:#2b2b2b;"></div>
<div style="left:2134.7px;top:619.4px;width:1.4px;height:28.9px;background:#3f3f3f;"></div>
<div style="left:1535.4px;top:623.2px;width:21.8px;height:21.5px;background:#00aadc;border:1px solid #1c1c1c;box-sizing:border-box;"></div>
<div class="t" style="left:1563.4px;top:620.8px;font-size:17.5px;color:#fff;height:27.9px;line-height:27.9px;">L2 Throughput</div>
<div class="t" style="left:2135.4px;top:620.8px;font-size:17.5px;color:#fff;width:92.9px;text-align:right;height:27.9px;line-height:27.9px;letter-spacing:-0.55px;">7.5%</div>
<div style="left:2233.2px;top:624.9px;width:5.1px;height:20.5px;background:#3a80c3;"></div>
<div style="left:1533.2px;top:648.3px;width:761.1px;height:26.7px;background:#2b2b2b;"></div>
<div style="left:2134.7px;top:647.3px;width:1.4px;height:28.9px;background:#3f3f3f;"></div>
<div style="left:1535.4px;top:651.1px;width:21.8px;height:21.5px;background:#3c6ef0;border:1px solid #1c1c1c;box-sizing:border-box;"></div>
<div class="t" style="left:1563.4px;top:648.7px;font-size:17.5px;color:#fff;height:27.9px;line-height:27.9px;">PCIe Throughput</div>
<div class="t" style="left:2135.4px;top:648.7px;font-size:17.5px;color:#fff;width:92.9px;text-align:right;height:27.9px;line-height:27.9px;letter-spacing:-0.55px;">6.0%</div>
<div style="left:2233.2px;top:652.8px;width:4.1px;height:20.5px;background:#3a80c3;"></div>
<div style="left:1533.2px;top:676.2px;width:761.1px;height:26.7px;background:#2b2b2b;"></div>
<div style="left:2134.7px;top:675.2px;width:1.4px;height:28.9px;background:#3f3f3f;"></div>
<svg style="left:1535.7px;top:678.8px" width="22" height="22" viewBox="0 0 22 22"><path d="M11,1 L19.5,4 V11 C19.5,16 15.5,19.5 11,21 C6.5,19.5 2.5,16 2.5,11 V4 Z" fill="#76b900"/><path d="M6.2,10.8 L9.8,14.4 L16,7.4" fill="none" stroke="#1e1e1e" stroke-width="2.6"/></svg>
<div class="t" style="left:1565.9px;top:676.6px;font-size:17.5px;color:#fff;height:27.9px;line-height:27.9px;">MMU Throughput (Pro)</div>
<div class="t" style="left:2135.4px;top:676.6px;font-size:17.5px;color:#fff;width:92.9px;text-align:right;height:27.9px;line-height:27.9px;letter-spacing:-0.55px;">1.6%</div>
<div style="left:2233.2px;top:680.8px;width:1.5px;height:20.5px;background:#3a80c3;"></div>
<div style="left:1533.2px;top:704.2px;width:761.1px;height:26.7px;background:#2b2b2b;"></div>
<div style="left:2134.7px;top:703.2px;width:1.4px;height:28.9px;background:#3f3f3f;"></div>
<div style="left:1535.4px;top:707.0px;width:21.8px;height:21.5px;background:#6fb35a;border:1px solid #1c1c1c;box-sizing:border-box;"></div>
<div class="t" style="left:1563.4px;top:704.6px;font-size:17.5px;color:#fff;height:27.9px;line-height:27.9px;">RASTER Throughput</div>
<div class="t" style="left:2135.4px;top:704.6px;font-size:17.5px;color:#fff;width:92.9px;text-align:right;height:27.9px;line-height:27.9px;letter-spacing:-0.55px;">0.4%</div>
<div style="left:2233.2px;top:708.7px;width:1.5px;height:20.5px;background:#3a80c3;"></div>
<div style="left:1533.2px;top:732.1px;width:761.1px;height:26.7px;background:#2b2b2b;"></div>
<div style="left:2134.7px;top:731.1px;width:1.4px;height:28.9px;background:#3f3f3f;"></div>
<div style="left:1535.4px;top:734.9px;width:21.8px;height:21.5px;background:#46b35a;border:1px solid #1c1c1c;box-sizing:border-box;"></div>
<div class="t" style="left:1563.4px;top:732.5px;font-size:17.5px;color:#fff;height:27.9px;line-height:27.9px;">PES+VPC Throughput</div>
<div class="t" style="left:2135.4px;top:732.5px;font-size:17.5px;color:#fff;width:92.9px;text-align:right;height:27.9px;line-height:27.9px;letter-spacing:-0.55px;">0.4%</div>
<div style="left:2233.2px;top:736.6px;width:1.5px;height:20.5px;background:#3a80c3;"></div>
<div style="left:1533.2px;top:760.0px;width:761.1px;height:26.7px;background:#2b2b2b;"></div>
<div style="left:2134.7px;top:759.0px;width:1.4px;height:28.9px;background:#3f3f3f;"></div>
<div style="left:1535.4px;top:762.8px;width:21.8px;height:21.5px;background:#a5b35a;border:1px solid #1c1c1c;box-sizing:border-box;"></div>
<div class="t" style="left:1563.4px;top:760.4px;font-size:17.5px;color:#fff;height:27.9px;line-height:27.9px;">PROP Throughput</div>
<div class="t" style="left:2135.4px;top:760.4px;font-size:17.5px;color:#fff;width:92.9px;text-align:right;height:27.9px;line-height:27.9px;letter-spacing:-0.55px;">0.2%</div>
<div style="left:2233.2px;top:764.5px;width:1.5px;height:20.5px;background:#3a80c3;"></div>
<div style="left:1533.2px;top:788.0px;width:761.1px;height:26.7px;background:#2b2b2b;"></div>
<div style="left:2134.7px;top:787.0px;width:1.4px;height:28.9px;background:#3f3f3f;"></div>
<div style="left:1535.4px;top:790.8px;width:21.8px;height:21.5px;background:#00aa50;border:1px solid #1c1c1c;box-sizing:border-box;"></div>
<div class="t" style="left:1563.4px;top:788.4px;font-size:17.5px;color:#fff;height:27.9px;line-height:27.9px;">PD Throughput</div>
<div class="t" style="left:2135.4px;top:788.4px;font-size:17.5px;color:#fff;width:92.9px;text-align:right;height:27.9px;line-height:27.9px;letter-spacing:-0.55px;">0.1%</div>
<div style="left:2233.2px;top:792.5px;width:1.5px;height:20.5px;background:#3a80c3;"></div>
<div style="left:1533.2px;top:815.9px;width:761.1px;height:26.7px;background:#2b2b2b;"></div>
<div style="left:2134.7px;top:814.9px;width:1.4px;height:28.9px;background:#3f3f3f;"></div>
<div style="left:1535.4px;top:818.7px;width:21.8px;height:21.5px;background:#874040;border:1px solid #1c1c1c;box-sizing:border-box;"></div>
<div class="t" style="left:1563.4px;top:816.3px;font-size:17.5px;color:#fff;height:27.9px;line-height:27.9px;">ZROP Throughput</div>
<div class="t" style="left:2135.4px;top:816.3px;font-size:17.5px;color:#fff;width:92.9px;text-align:right;height:27.9px;line-height:27.9px;letter-spacing:-0.55px;">&lt; 0.1%</div>
<div style="left:2233.2px;top:820.4px;width:1.5px;height:20.5px;background:#3a80c3;"></div>
<div style="left:1533.2px;top:843.8px;width:761.1px;height:26.7px;background:#2b2b2b;"></div>
<div style="left:2134.7px;top:842.8px;width:1.4px;height:28.9px;background:#3f3f3f;"></div>
<div style="left:1535.4px;top:846.6px;width:21.8px;height:21.5px;background:#dc3246;border:1px solid #1c1c1c;box-sizing:border-box;"></div>
<div class="t" style="left:1563.4px;top:844.2px;font-size:17.5px;color:#fff;height:27.9px;line-height:27.9px;">VAF Throughput</div>
<div class="t" style="left:2135.4px;top:844.2px;font-size:17.5px;color:#fff;width:92.9px;text-align:right;height:27.9px;line-height:27.9px;letter-spacing:-0.55px;">0%</div>
<div style="left:1533.2px;top:871.8px;width:761.1px;height:26.7px;background:#2b2b2b;"></div>
<div style="left:2134.7px;top:870.8px;width:1.4px;height:28.9px;background:#3f3f3f;"></div>
<svg style="left:1535.7px;top:874.3px" width="22" height="22" viewBox="0 0 22 22"><path d="M11,1 L19.5,4 V11 C19.5,16 15.5,19.5 11,21 C6.5,19.5 2.5,16 2.5,11 V4 Z" fill="#76b900"/><path d="M6.2,10.8 L9.8,14.4 L16,7.4" fill="none" stroke="#1e1e1e" stroke-width="2.6"/></svg>
<div class="t" style="left:1565.9px;top:872.2px;font-size:17.5px;color:#fff;height:27.9px;line-height:27.9px;">RTCORE Throughput (Pro)</div>
<div class="t" style="left:2135.4px;top:872.2px;font-size:17.5px;color:#fff;width:92.9px;text-align:right;height:27.9px;line-height:27.9px;letter-spacing:-0.55px;">0%</div>
<div style="left:1533.2px;top:899.7px;width:761.1px;height:26.7px;background:#2b2b2b;"></div>
<div style="left:2134.7px;top:898.7px;width:1.4px;height:28.9px;background:#3f3f3f;"></div>
<div style="left:1535.4px;top:902.5px;width:21.8px;height:21.5px;background:#b4b45a;border:1px solid #1c1c1c;box-sizing:border-box;"></div>
<div class="t" style="left:1563.4px;top:900.1px;font-size:17.5px;color:#fff;height:27.9px;line-height:27.9px;">CROP Throughput</div>
<div class="t" style="left:2135.4px;top:900.1px;font-size:17.5px;color:#fff;width:92.9px;text-align:right;height:27.9px;line-height:27.9px;letter-spacing:-0.55px;">0%</div>
<div style="left:1531.7px;top:940.3px;width:764.1px;height:168.6px;background:#2b2b2b;"></div>
<div style="left:1532.7px;top:968.2px;width:762.1px;height:139.7px;background:#3b3b3b;"></div>
<div style="left:1532.7px;top:941.3px;width:762.1px;height:26.9px;background:linear-gradient(#484848,#3c3c3c);border-top:1px solid #565656;box-sizing:border-box;"></div>
<div style="left:1803.0px;top:941.3px;width:1.4px;height:26.9px;background:#555;"></div>
<div style="left:1961.9px;top:941.3px;width:1.4px;height:26.9px;background:#555;"></div>
<div style="left:2074.1px;top:941.3px;width:1.4px;height:26.9px;background:#555;"></div>
<div class="c" style="left:1531.7px;top:940.3px;width:272.0px;height:27.9px;line-height:28.9px;font-size:17.5px;color:#fff;">SM Occupancy (TPC View)</div>
<div class="t" style="left:1819.0px;top:940.3px;font-size:17.5px;color:#fff;height:28.9px;line-height:28.9px;">Throughput %</div>
<svg style="left:1944.5px;top:948.3px" width="12" height="7"><path d="M0,0.5 L11,0.5 L5.5,6.5 Z" fill="#c0c0c0"/></svg>
<div class="c" style="left:1962.6px;top:940.3px;width:112.2px;height:27.9px;line-height:28.9px;font-size:17.5px;color:#fff;">Avg</div>
<div class="c" style="left:2074.8px;top:940.3px;width:221.0px;height:27.9px;line-height:28.9px;font-size:17.5px;color:#fff;">Avg Warps per Cycle</div>
<div style="left:1533.2px;top:968.2px;width:761.1px;height:26.7px;background:#2b2b2b;"></div>
<div style="left:1803.0px;top:967.2px;width:1.4px;height:28.9px;background:#3f3f3f;"></div>
<div style="left:1961.9px;top:967.2px;width:1.4px;height:28.9px;background:#3f3f3f;"></div>
<div style="left:2074.1px;top:967.2px;width:1.4px;height:28.9px;background:#3f3f3f;"></div>
<div style="left:1535.4px;top:971.0px;width:21.8px;height:21.5px;background:#c8c8c8;border:1px solid #1c1c1c;box-sizing:border-box;"></div>
<div class="t" style="left:1563.4px;top:968.6px;font-size:17.5px;color:#fff;height:27.9px;line-height:27.9px;letter-spacing:-0.1px;">Idle SM Unused Warp Slots</div>
<div class="t" style="left:1803.7px;top:968.6px;font-size:17.5px;color:#fff;width:92.6px;text-align:right;height:27.9px;line-height:27.9px;letter-spacing:-0.55px;">71.0%</div>
<div style="left:1901.0px;top:972.7px;width:43.0px;height:20.5px;background:#3a80c3;"></div>
<div class="t" style="left:1962.6px;top:968.6px;font-size:17.5px;color:#fff;width:109.2px;text-align:right;height:27.9px;line-height:27.9px;letter-spacing:-0.15px;">297028347.4</div>
<div class="t" style="left:2074.8px;top:968.6px;font-size:17.5px;color:#fff;width:217.0px;text-align:right;height:27.9px;line-height:27.9px;letter-spacing:-0.15px;">68.1</div>
<div style="left:1533.2px;top:996.1px;width:761.1px;height:26.7px;background:#2b2b2b;"></div>
<div style="left:1803.0px;top:995.1px;width:1.4px;height:28.9px;background:#3f3f3f;"></div>
<div style="left:1961.9px;top:995.1px;width:1.4px;height:28.9px;background:#3f3f3f;"></div>
<div style="left:2074.1px;top:995.1px;width:1.4px;height:28.9px;background:#3f3f3f;"></div>
<div style="left:1535.4px;top:998.9px;width:21.8px;height:21.5px;background:#ffa500;border:1px solid #1c1c1c;box-sizing:border-box;"></div>
<div class="t" style="left:1563.4px;top:996.5px;font-size:17.5px;color:#fff;height:27.9px;line-height:27.9px;letter-spacing:-0.1px;">Compute Warps</div>
<div class="t" style="left:1803.7px;top:996.5px;font-size:17.5px;color:#fff;width:92.6px;text-align:right;height:27.9px;line-height:27.9px;letter-spacing:-0.55px;">15.0%</div>
<div style="left:1901.0px;top:1000.6px;width:10.0px;height:20.5px;background:#3a80c3;"></div>
<div class="t" style="left:1962.6px;top:996.5px;font-size:17.5px;color:#fff;width:109.2px;text-align:right;height:27.9px;line-height:27.9px;letter-spacing:-0.15px;">62586800.9</div>
<div class="t" style="left:2074.8px;top:996.5px;font-size:17.5px;color:#fff;width:217.0px;text-align:right;height:27.9px;line-height:27.9px;letter-spacing:-0.15px;">14.4</div>
<div style="left:1533.2px;top:1024.1px;width:761.1px;height:26.7px;background:#2b2b2b;"></div>
<div style="left:1803.0px;top:1023.1px;width:1.4px;height:28.9px;background:#3f3f3f;"></div>
<div style="left:1961.9px;top:1023.1px;width:1.4px;height:28.9px;background:#3f3f3f;"></div>
<div style="left:2074.1px;top:1023.1px;width:1.4px;height:28.9px;background:#3f3f3f;"></div>
<div style="left:1535.4px;top:1026.9px;width:21.8px;height:21.5px;background:#6e6e6e;border:1px solid #1c1c1c;box-sizing:border-box;"></div>
<div class="t" style="left:1563.4px;top:1024.5px;font-size:17.5px;color:#fff;height:27.9px;line-height:27.9px;letter-spacing:-0.1px;">Active SM Unused Warp Slots</div>
<div class="t" style="left:1803.7px;top:1024.5px;font-size:17.5px;color:#fff;width:92.6px;text-align:right;height:27.9px;line-height:27.9px;letter-spacing:-0.55px;">13.7%</div>
<div style="left:1901.0px;top:1028.6px;width:10.0px;height:20.5px;background:#3a80c3;"></div>
<div class="t" style="left:1962.6px;top:1024.5px;font-size:17.5px;color:#fff;width:109.2px;text-align:right;height:27.9px;line-height:27.9px;letter-spacing:-0.15px;">57385472.0</div>
<div class="t" style="left:2074.8px;top:1024.5px;font-size:17.5px;color:#fff;width:217.0px;text-align:right;height:27.9px;line-height:27.9px;letter-spacing:-0.15px;">13.2</div>
<div style="left:1533.2px;top:1052.0px;width:761.1px;height:26.7px;background:#2b2b2b;"></div>
<div style="left:1803.0px;top:1051.0px;width:1.4px;height:28.9px;background:#3f3f3f;"></div>
<div style="left:1961.9px;top:1051.0px;width:1.4px;height:28.9px;background:#3f3f3f;"></div>
<div style="left:2074.1px;top:1051.0px;width:1.4px;height:28.9px;background:#3f3f3f;"></div>
<div style="left:1535.4px;top:1054.8px;width:21.8px;height:21.5px;background:#0050e6;border:1px solid #1c1c1c;box-sizing:border-box;"></div>
<div class="t" style="left:1563.4px;top:1052.4px;font-size:17.5px;color:#fff;height:27.9px;line-height:27.9px;letter-spacing:-0.1px;">Vertex/Tess/Geometry Warps</div>
<div class="t" style="left:1803.7px;top:1052.4px;font-size:17.5px;color:#fff;width:92.6px;text-align:right;height:27.9px;line-height:27.9px;letter-spacing:-0.55px;">0.2%</div>
<div style="left:1901.0px;top:1056.5px;width:1.8px;height:20.5px;background:#3a80c3;"></div>
<div class="t" style="left:1962.6px;top:1052.4px;font-size:17.5px;color:#fff;width:109.2px;text-align:right;height:27.9px;line-height:27.9px;letter-spacing:-0.15px;">672385.9</div>
<div class="t" style="left:2074.8px;top:1052.4px;font-size:17.5px;color:#fff;width:217.0px;text-align:right;height:27.9px;line-height:27.9px;letter-spacing:-0.15px;">0.2</div>
<div style="left:1533.2px;top:1079.9px;width:761.1px;height:26.7px;background:#2b2b2b;"></div>
<div style="left:1803.0px;top:1078.9px;width:1.4px;height:28.9px;background:#3f3f3f;"></div>
<div style="left:1961.9px;top:1078.9px;width:1.4px;height:28.9px;background:#3f3f3f;"></div>
<div style="left:2074.1px;top:1078.9px;width:1.4px;height:28.9px;background:#3f3f3f;"></div>
<div style="left:1535.4px;top:1082.7px;width:21.8px;height:21.5px;background:#008c46;border:1px solid #1c1c1c;box-sizing:border-box;"></div>
<div class="t" style="left:1563.4px;top:1080.3px;font-size:17.5px;color:#fff;height:27.9px;line-height:27.9px;letter-spacing:-0.1px;">Pixel Warps</div>
<div class="t" style="left:1803.7px;top:1080.3px;font-size:17.5px;color:#fff;width:92.6px;text-align:right;height:27.9px;line-height:27.9px;letter-spacing:-0.55px;">0.1%</div>
<div style="left:1901.0px;top:1084.4px;width:1.8px;height:20.5px;background:#3a80c3;"></div>
<div class="t" style="left:1962.6px;top:1080.3px;font-size:17.5px;color:#fff;width:109.2px;text-align:right;height:27.9px;line-height:27.9px;letter-spacing:-0.15px;">415062.6</div>
<div class="t" style="left:2074.8px;top:1080.3px;font-size:17.5px;color:#fff;width:217.0px;text-align:right;height:27.9px;line-height:27.9px;letter-spacing:-0.15px;">0.1</div></body></html>
